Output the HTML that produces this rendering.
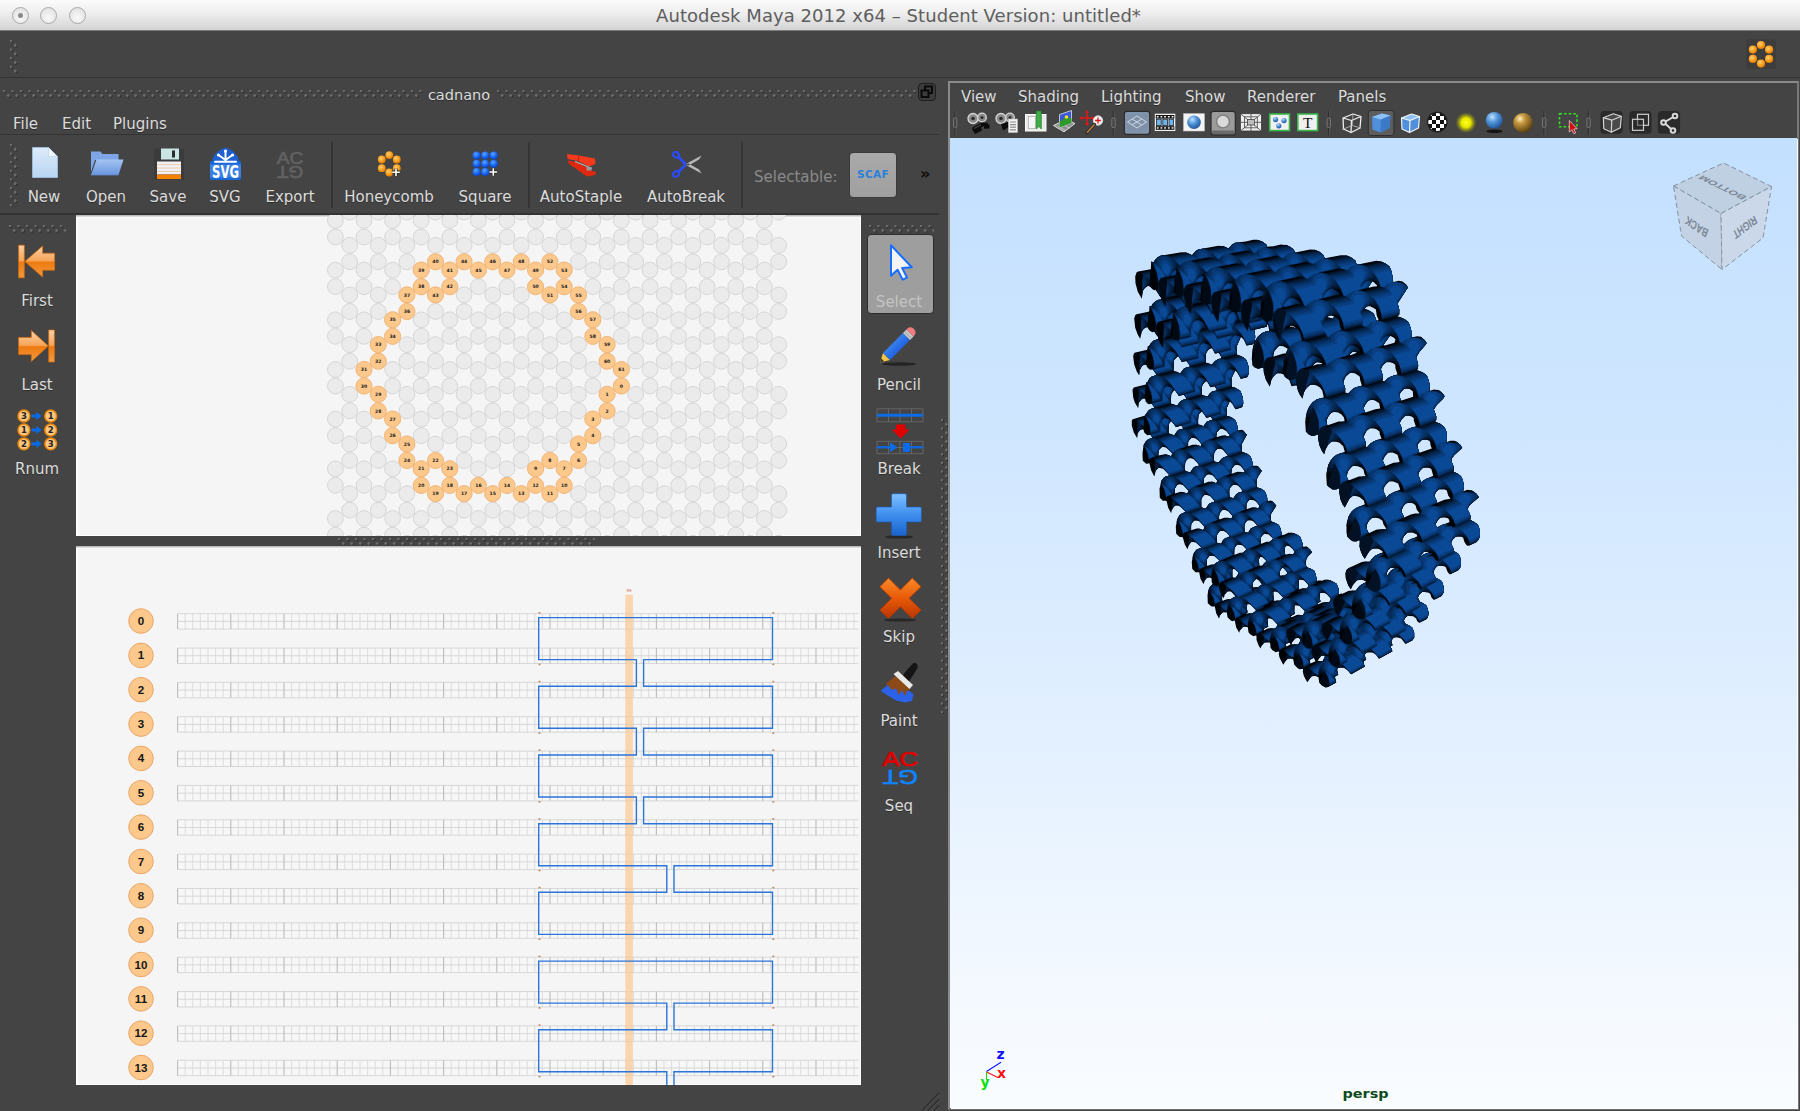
<!DOCTYPE html>
<html lang="en"><head><meta charset="utf-8"><title>Autodesk Maya 2012 x64 - Student Version: untitled*</title>
<style>
html,body{margin:0;padding:0;}
body{width:1800px;height:1111px;overflow:hidden;background:#444444;position:relative;font-family:"DejaVu Sans","Liberation Sans",sans-serif;font-size:15px;color:#dcdcdc;}
.abs{position:absolute;}
#titlebar{position:absolute;left:0;top:0;width:1800px;height:31px;background:linear-gradient(#fbfbfb 0%,#eeeeee 45%,#d3d3d3 100%);border-bottom:1px solid #7a7a7a;box-sizing:border-box;}
#titlebar .t{position:absolute;left:0;width:1797px;top:5.3px;text-align:center;font-size:18px;color:#5e5e5e;letter-spacing:0.05px;}
.tl{position:absolute;top:7px;width:17px;height:17px;border-radius:50%;border:1px solid #a9a9a9;background:radial-gradient(circle at 50% 65%,#fafafa 0%,#e4e4e4 70%,#dadada 100%);box-sizing:border-box;}
.hl{position:absolute;height:1px;background:#333333;}
.lbl{position:absolute;white-space:nowrap;margin-top:1.8px;text-shadow:0 1px 0 rgba(0,0,0,.35);}
.c{text-align:center;}
.dots{position:absolute;height:9px;background-image:radial-gradient(circle at 2px 2px,#6e6e6e 1.1px,transparent 1.5px),radial-gradient(circle at 6.2px 6.5px,#6e6e6e 1.1px,transparent 1.5px),radial-gradient(circle at 3px 3px,#303030 1.1px,transparent 1.5px),radial-gradient(circle at 7.2px 7.5px,#303030 1.1px,transparent 1.5px);background-size:8.5px 9px;}
.vdots{position:absolute;width:9px;background-image:radial-gradient(circle at 2px 2px,#6e6e6e 1.1px,transparent 1.5px),radial-gradient(circle at 6.3px 6.3px,#6e6e6e 1.1px,transparent 1.5px),radial-gradient(circle at 3px 3px,#303030 1.1px,transparent 1.5px),radial-gradient(circle at 7.3px 7.3px,#303030 1.1px,transparent 1.5px);background-size:9px 8.6px;}
.panel{position:absolute;background:#f5f5f5;overflow:hidden;box-shadow:inset 0 1.4px 0 #b9b9b9, inset 0 2.6px 0 #fdfdfd, inset 2px 0 0 #fdfdfd, inset -1px -1px 0 #fff;}
</style></head><body>
<div id="titlebar"><div class="t">Autodesk Maya 2012 x64 – Student Version: untitled*</div>
<div class="tl" style="left:11.5px"></div><div class="tl" style="left:40px"></div><div class="tl" style="left:68.500px"></div>
<div class="abs" style="left:17.5px;top:13px;width:5px;height:5px;border-radius:50%;background:#8a8a8a"></div>
</div>
<div class="hl" style="left:0;top:77px;width:1800px;height:1.3px"></div>
<div class="hl" style="left:0;top:134px;width:939px;height:1.3px"></div>
<div class="hl" style="left:0;top:212.6px;width:939px;height:2px"></div>
<svg class="abs" id="grip" style="left:915px;top:1088px" width="30" height="23" viewBox="915 1088 30 23"><path d="M921.5 1111.5L939 1093M927.5 1111.5L939 1099.5M933.5 1111.5L939 1105.5" stroke="#2c2c2c" stroke-width="1.4"/><path d="M922.7 1111.5L939 1094.3M928.7 1111.5L939 1100.800M934.7 1111.5L939 1106.800" stroke="#5a5a5a" stroke-width=".7"/></svg>
<div class="dots" style="left:2px;top:89px;width:421px"></div>
<div class="dots" style="left:496px;top:89px;width:420px"></div>
<div class="lbl c" style="left:409px;top:85.3px;width:100px;font-size:14.5px;">cadnano</div>
<svg class="abs" style="left:918px;top:83px" width="18" height="18" viewBox="0 0 18 18"><rect x="0.5" y="0.5" width="17" height="17" rx="3.5" fill="#3c3c3c" stroke="#1e1e1e"/><rect x="7" y="3.5" width="7" height="6.5" fill="none" stroke="#0a0a0a" stroke-width="2"/><rect x="3.5" y="7.5" width="7" height="6.5" fill="#3c3c3c" stroke="#0a0a0a" stroke-width="2"/></svg>
<div class="vdots" style="left:9.4px;top:39.4px;height:34px"></div>
<div class="vdots" style="left:9.4px;top:143px;height:64px"></div>
<div class="lbl" style="left:13px;top:113px;">File</div>
<div class="lbl" style="left:62px;top:113px;">Edit</div>
<div class="lbl" style="left:113px;top:113px;">Plugins</div>
<div class="lbl c" style="left:-16px;top:186px;width:120px;">New</div>
<div class="lbl c" style="left:46px;top:186px;width:120px;">Open</div>
<div class="lbl c" style="left:108px;top:186px;width:120px;">Save</div>
<div class="lbl c" style="left:165px;top:186px;width:120px;">SVG</div>
<div class="lbl c" style="left:230px;top:186px;width:120px;">Export</div>
<div class="lbl c" style="left:329px;top:186px;width:120px;">Honeycomb</div>
<div class="lbl c" style="left:425px;top:186px;width:120px;">Square</div>
<div class="lbl c" style="left:521px;top:186px;width:120px;">AutoStaple</div>
<div class="lbl c" style="left:626px;top:186px;width:120px;">AutoBreak</div>
<div class="abs" style="left:331px;top:142px;width:2px;height:66px;background:#353535"></div>
<div class="abs" style="left:528px;top:142px;width:2px;height:66px;background:#353535"></div>
<div class="abs" style="left:741px;top:142px;width:2px;height:66px;background:#353535"></div>
<div class="lbl" style="left:754px;top:166px;color:#8a8a8a;text-shadow:none">Selectable:</div>
<div class="abs" style="left:849px;top:152px;width:48px;height:46px;box-sizing:border-box;border:1px solid #3a3a3a;border-radius:4px;background:linear-gradient(#a9a9a9,#a0a0a0);"></div>
<div class="abs c" style="left:849px;top:168px;width:48px;font-size:10.5px;font-weight:bold;color:#2b7fdc;font-family:'DejaVu Sans',sans-serif;letter-spacing:.3px">SCAF</div>
<div class="abs" style="left:920px;top:164px;font-size:16px;color:#0c0c0c;font-weight:bold">»</div>
<div class="dots" style="left:8px;top:224px;width:58px"></div>
<div class="lbl c" style="left:0px;top:290px;width:74px;">First</div>
<div class="lbl c" style="left:0px;top:374px;width:74px;">Last</div>
<div class="lbl c" style="left:0px;top:458px;width:74px;">Rnum</div>
<div class="dots" style="left:868px;top:224px;width:66px"></div>
<div class="abs" style="left:867px;top:234px;width:67px;height:80px;box-sizing:border-box;border:1px solid #2c2c2c;border-radius:4px;background:#9e9e9e;"></div>
<div class="lbl c" style="left:862px;top:291px;width:74px;color:#c4c4c4;text-shadow:none;">Select</div>
<div class="lbl c" style="left:862px;top:374px;width:74px;">Pencil</div>
<div class="lbl c" style="left:862px;top:458px;width:74px;">Break</div>
<div class="lbl c" style="left:862px;top:542px;width:74px;">Insert</div>
<div class="lbl c" style="left:862px;top:626px;width:74px;">Skip</div>
<div class="lbl c" style="left:862px;top:710px;width:74px;">Paint</div>
<div class="lbl c" style="left:862px;top:795px;width:74px;">Seq</div>
<div class="vdots" style="left:940px;top:418px;height:296px;width:8px"></div>
<div class="dots" style="left:337px;top:537px;width:258px;height:8px"></div>
<div class="panel" style="left:75.6px;top:214.8px;width:785.9px;height:320.9px;">
<svg width="785.9" height="320.9" viewBox="75.6 214.8 785.9 320.9" style="position:absolute;left:0;top:0">
<defs><circle id="hc" r="7.9" fill="#ebebeb" stroke="#d3d3d3" stroke-width="0.9"/><circle id="ho" r="8.1" fill="#fcc88c" stroke="#f0b070" stroke-width="0.9"/></defs>
<use href="#hc" x="335.0" y="220.2"/><use href="#hc" x="349.3" y="211.9"/><use href="#hc" x="363.6" y="220.2"/><use href="#hc" x="377.9" y="211.9"/><use href="#hc" x="392.2" y="220.2"/><use href="#hc" x="406.5" y="211.9"/><use href="#hc" x="420.8" y="220.2"/><use href="#hc" x="435.1" y="211.9"/><use href="#hc" x="449.4" y="220.2"/><use href="#hc" x="463.7" y="211.9"/><use href="#hc" x="478.0" y="220.2"/><use href="#hc" x="492.3" y="211.9"/><use href="#hc" x="506.6" y="220.2"/><use href="#hc" x="520.9" y="211.9"/><use href="#hc" x="535.2" y="220.2"/><use href="#hc" x="549.5" y="211.9"/><use href="#hc" x="563.8" y="220.2"/><use href="#hc" x="578.1" y="211.9"/><use href="#hc" x="592.4" y="220.2"/><use href="#hc" x="606.7" y="211.9"/><use href="#hc" x="621.0" y="220.2"/><use href="#hc" x="635.3" y="211.9"/><use href="#hc" x="649.6" y="220.2"/><use href="#hc" x="663.9" y="211.9"/><use href="#hc" x="678.2" y="220.2"/><use href="#hc" x="692.5" y="211.9"/><use href="#hc" x="706.8" y="220.2"/><use href="#hc" x="721.1" y="211.9"/><use href="#hc" x="735.4" y="220.2"/><use href="#hc" x="749.7" y="211.9"/><use href="#hc" x="764.0" y="220.2"/><use href="#hc" x="778.3" y="211.9"/><use href="#hc" x="335.0" y="236.8"/><use href="#hc" x="349.3" y="245.1"/><use href="#hc" x="363.6" y="236.8"/><use href="#hc" x="377.9" y="245.1"/><use href="#hc" x="392.2" y="236.8"/><use href="#hc" x="406.5" y="245.1"/><use href="#hc" x="420.8" y="236.8"/><use href="#hc" x="435.1" y="245.1"/><use href="#hc" x="449.4" y="236.8"/><use href="#hc" x="463.7" y="245.1"/><use href="#hc" x="478.0" y="236.8"/><use href="#hc" x="492.3" y="245.1"/><use href="#hc" x="506.6" y="236.8"/><use href="#hc" x="520.9" y="245.1"/><use href="#hc" x="535.2" y="236.8"/><use href="#hc" x="549.5" y="245.1"/><use href="#hc" x="563.8" y="236.8"/><use href="#hc" x="578.1" y="245.1"/><use href="#hc" x="592.4" y="236.8"/><use href="#hc" x="606.7" y="245.1"/><use href="#hc" x="621.0" y="236.8"/><use href="#hc" x="635.3" y="245.1"/><use href="#hc" x="649.6" y="236.8"/><use href="#hc" x="663.9" y="245.1"/><use href="#hc" x="678.2" y="236.8"/><use href="#hc" x="692.5" y="245.1"/><use href="#hc" x="706.8" y="236.8"/><use href="#hc" x="721.1" y="245.1"/><use href="#hc" x="735.4" y="236.8"/><use href="#hc" x="749.7" y="245.1"/><use href="#hc" x="764.0" y="236.8"/><use href="#hc" x="778.3" y="245.1"/><use href="#hc" x="335.0" y="269.9"/><use href="#hc" x="349.3" y="261.6"/><use href="#hc" x="363.6" y="269.9"/><use href="#hc" x="377.9" y="261.6"/><use href="#hc" x="392.2" y="269.9"/><use href="#hc" x="406.5" y="261.6"/><use href="#hc" x="578.1" y="261.6"/><use href="#hc" x="592.4" y="269.9"/><use href="#hc" x="606.7" y="261.6"/><use href="#hc" x="621.0" y="269.9"/><use href="#hc" x="635.3" y="261.6"/><use href="#hc" x="649.6" y="269.9"/><use href="#hc" x="663.9" y="261.6"/><use href="#hc" x="678.2" y="269.9"/><use href="#hc" x="692.5" y="261.6"/><use href="#hc" x="706.8" y="269.9"/><use href="#hc" x="721.1" y="261.6"/><use href="#hc" x="735.4" y="269.9"/><use href="#hc" x="749.7" y="261.6"/><use href="#hc" x="764.0" y="269.9"/><use href="#hc" x="778.3" y="261.6"/><use href="#hc" x="335.0" y="286.5"/><use href="#hc" x="349.3" y="294.7"/><use href="#hc" x="363.6" y="286.5"/><use href="#hc" x="377.9" y="294.7"/><use href="#hc" x="392.2" y="286.5"/><use href="#hc" x="463.7" y="294.7"/><use href="#hc" x="478.0" y="286.5"/><use href="#hc" x="492.3" y="294.7"/><use href="#hc" x="506.6" y="286.5"/><use href="#hc" x="520.9" y="294.7"/><use href="#hc" x="592.4" y="286.5"/><use href="#hc" x="606.7" y="294.7"/><use href="#hc" x="621.0" y="286.5"/><use href="#hc" x="635.3" y="294.7"/><use href="#hc" x="649.6" y="286.5"/><use href="#hc" x="663.9" y="294.7"/><use href="#hc" x="678.2" y="286.5"/><use href="#hc" x="692.5" y="294.7"/><use href="#hc" x="706.8" y="286.5"/><use href="#hc" x="721.1" y="294.7"/><use href="#hc" x="735.4" y="286.5"/><use href="#hc" x="749.7" y="294.7"/><use href="#hc" x="764.0" y="286.5"/><use href="#hc" x="778.3" y="294.7"/><use href="#hc" x="335.0" y="319.6"/><use href="#hc" x="349.3" y="311.3"/><use href="#hc" x="363.6" y="319.6"/><use href="#hc" x="377.9" y="311.3"/><use href="#hc" x="420.8" y="319.6"/><use href="#hc" x="435.1" y="311.3"/><use href="#hc" x="449.4" y="319.6"/><use href="#hc" x="463.7" y="311.3"/><use href="#hc" x="478.0" y="319.6"/><use href="#hc" x="492.3" y="311.3"/><use href="#hc" x="506.6" y="319.6"/><use href="#hc" x="520.9" y="311.3"/><use href="#hc" x="535.2" y="319.6"/><use href="#hc" x="549.5" y="311.3"/><use href="#hc" x="563.8" y="319.6"/><use href="#hc" x="606.7" y="311.3"/><use href="#hc" x="621.0" y="319.6"/><use href="#hc" x="635.3" y="311.3"/><use href="#hc" x="649.6" y="319.6"/><use href="#hc" x="663.9" y="311.3"/><use href="#hc" x="678.2" y="319.6"/><use href="#hc" x="692.5" y="311.3"/><use href="#hc" x="706.8" y="319.6"/><use href="#hc" x="721.1" y="311.3"/><use href="#hc" x="735.4" y="319.6"/><use href="#hc" x="749.7" y="311.3"/><use href="#hc" x="764.0" y="319.6"/><use href="#hc" x="778.3" y="311.3"/><use href="#hc" x="335.0" y="336.1"/><use href="#hc" x="349.3" y="344.4"/><use href="#hc" x="363.6" y="336.1"/><use href="#hc" x="406.5" y="344.4"/><use href="#hc" x="420.8" y="336.1"/><use href="#hc" x="435.1" y="344.4"/><use href="#hc" x="449.4" y="336.1"/><use href="#hc" x="463.7" y="344.4"/><use href="#hc" x="478.0" y="336.1"/><use href="#hc" x="492.3" y="344.4"/><use href="#hc" x="506.6" y="336.1"/><use href="#hc" x="520.9" y="344.4"/><use href="#hc" x="535.2" y="336.1"/><use href="#hc" x="549.5" y="344.4"/><use href="#hc" x="563.8" y="336.1"/><use href="#hc" x="578.1" y="344.4"/><use href="#hc" x="621.0" y="336.1"/><use href="#hc" x="635.3" y="344.4"/><use href="#hc" x="649.6" y="336.1"/><use href="#hc" x="663.9" y="344.4"/><use href="#hc" x="678.2" y="336.1"/><use href="#hc" x="692.5" y="344.4"/><use href="#hc" x="706.8" y="336.1"/><use href="#hc" x="721.1" y="344.4"/><use href="#hc" x="735.4" y="336.1"/><use href="#hc" x="749.7" y="344.4"/><use href="#hc" x="764.0" y="336.1"/><use href="#hc" x="778.3" y="344.4"/><use href="#hc" x="335.0" y="369.3"/><use href="#hc" x="349.3" y="361.0"/><use href="#hc" x="392.2" y="369.3"/><use href="#hc" x="406.5" y="361.0"/><use href="#hc" x="420.8" y="369.3"/><use href="#hc" x="435.1" y="361.0"/><use href="#hc" x="449.4" y="369.3"/><use href="#hc" x="463.7" y="361.0"/><use href="#hc" x="478.0" y="369.3"/><use href="#hc" x="492.3" y="361.0"/><use href="#hc" x="506.6" y="369.3"/><use href="#hc" x="520.9" y="361.0"/><use href="#hc" x="535.2" y="369.3"/><use href="#hc" x="549.5" y="361.0"/><use href="#hc" x="563.8" y="369.3"/><use href="#hc" x="578.1" y="361.0"/><use href="#hc" x="592.4" y="369.3"/><use href="#hc" x="635.3" y="361.0"/><use href="#hc" x="649.6" y="369.3"/><use href="#hc" x="663.9" y="361.0"/><use href="#hc" x="678.2" y="369.3"/><use href="#hc" x="692.5" y="361.0"/><use href="#hc" x="706.8" y="369.3"/><use href="#hc" x="721.1" y="361.0"/><use href="#hc" x="735.4" y="369.3"/><use href="#hc" x="749.7" y="361.0"/><use href="#hc" x="764.0" y="369.3"/><use href="#hc" x="778.3" y="361.0"/><use href="#hc" x="335.0" y="385.8"/><use href="#hc" x="349.3" y="394.1"/><use href="#hc" x="392.2" y="385.8"/><use href="#hc" x="406.5" y="394.1"/><use href="#hc" x="420.8" y="385.8"/><use href="#hc" x="435.1" y="394.1"/><use href="#hc" x="449.4" y="385.8"/><use href="#hc" x="463.7" y="394.1"/><use href="#hc" x="478.0" y="385.8"/><use href="#hc" x="492.3" y="394.1"/><use href="#hc" x="506.6" y="385.8"/><use href="#hc" x="520.9" y="394.1"/><use href="#hc" x="535.2" y="385.8"/><use href="#hc" x="549.5" y="394.1"/><use href="#hc" x="563.8" y="385.8"/><use href="#hc" x="578.1" y="394.1"/><use href="#hc" x="592.4" y="385.8"/><use href="#hc" x="635.3" y="394.1"/><use href="#hc" x="649.6" y="385.8"/><use href="#hc" x="663.9" y="394.1"/><use href="#hc" x="678.2" y="385.8"/><use href="#hc" x="692.5" y="394.1"/><use href="#hc" x="706.8" y="385.8"/><use href="#hc" x="721.1" y="394.1"/><use href="#hc" x="735.4" y="385.8"/><use href="#hc" x="749.7" y="394.1"/><use href="#hc" x="764.0" y="385.8"/><use href="#hc" x="778.3" y="394.1"/><use href="#hc" x="335.0" y="418.9"/><use href="#hc" x="349.3" y="410.7"/><use href="#hc" x="363.6" y="418.9"/><use href="#hc" x="406.5" y="410.7"/><use href="#hc" x="420.8" y="418.9"/><use href="#hc" x="435.1" y="410.7"/><use href="#hc" x="449.4" y="418.9"/><use href="#hc" x="463.7" y="410.7"/><use href="#hc" x="478.0" y="418.9"/><use href="#hc" x="492.3" y="410.7"/><use href="#hc" x="506.6" y="418.9"/><use href="#hc" x="520.9" y="410.7"/><use href="#hc" x="535.2" y="418.9"/><use href="#hc" x="549.5" y="410.7"/><use href="#hc" x="563.8" y="418.9"/><use href="#hc" x="578.1" y="410.7"/><use href="#hc" x="621.0" y="418.9"/><use href="#hc" x="635.3" y="410.7"/><use href="#hc" x="649.6" y="418.9"/><use href="#hc" x="663.9" y="410.7"/><use href="#hc" x="678.2" y="418.9"/><use href="#hc" x="692.5" y="410.7"/><use href="#hc" x="706.8" y="418.9"/><use href="#hc" x="721.1" y="410.7"/><use href="#hc" x="735.4" y="418.9"/><use href="#hc" x="749.7" y="410.7"/><use href="#hc" x="764.0" y="418.9"/><use href="#hc" x="778.3" y="410.7"/><use href="#hc" x="335.0" y="435.5"/><use href="#hc" x="349.3" y="443.8"/><use href="#hc" x="363.6" y="435.5"/><use href="#hc" x="377.9" y="443.8"/><use href="#hc" x="420.8" y="435.5"/><use href="#hc" x="435.1" y="443.8"/><use href="#hc" x="449.4" y="435.5"/><use href="#hc" x="463.7" y="443.8"/><use href="#hc" x="478.0" y="435.5"/><use href="#hc" x="492.3" y="443.8"/><use href="#hc" x="506.6" y="435.5"/><use href="#hc" x="520.9" y="443.8"/><use href="#hc" x="535.2" y="435.5"/><use href="#hc" x="549.5" y="443.8"/><use href="#hc" x="563.8" y="435.5"/><use href="#hc" x="606.7" y="443.8"/><use href="#hc" x="621.0" y="435.5"/><use href="#hc" x="635.3" y="443.8"/><use href="#hc" x="649.6" y="435.5"/><use href="#hc" x="663.9" y="443.8"/><use href="#hc" x="678.2" y="435.5"/><use href="#hc" x="692.5" y="443.8"/><use href="#hc" x="706.8" y="435.5"/><use href="#hc" x="721.1" y="443.8"/><use href="#hc" x="735.4" y="435.5"/><use href="#hc" x="749.7" y="443.8"/><use href="#hc" x="764.0" y="435.5"/><use href="#hc" x="778.3" y="443.8"/><use href="#hc" x="335.0" y="468.6"/><use href="#hc" x="349.3" y="460.3"/><use href="#hc" x="363.6" y="468.6"/><use href="#hc" x="377.9" y="460.3"/><use href="#hc" x="392.2" y="468.6"/><use href="#hc" x="463.7" y="460.3"/><use href="#hc" x="478.0" y="468.6"/><use href="#hc" x="492.3" y="460.3"/><use href="#hc" x="506.6" y="468.6"/><use href="#hc" x="520.9" y="460.3"/><use href="#hc" x="592.4" y="468.6"/><use href="#hc" x="606.7" y="460.3"/><use href="#hc" x="621.0" y="468.6"/><use href="#hc" x="635.3" y="460.3"/><use href="#hc" x="649.6" y="468.6"/><use href="#hc" x="663.9" y="460.3"/><use href="#hc" x="678.2" y="468.6"/><use href="#hc" x="692.5" y="460.3"/><use href="#hc" x="706.8" y="468.6"/><use href="#hc" x="721.1" y="460.3"/><use href="#hc" x="735.4" y="468.6"/><use href="#hc" x="749.7" y="460.3"/><use href="#hc" x="764.0" y="468.6"/><use href="#hc" x="778.3" y="460.3"/><use href="#hc" x="335.0" y="485.2"/><use href="#hc" x="349.3" y="493.5"/><use href="#hc" x="363.6" y="485.2"/><use href="#hc" x="377.9" y="493.5"/><use href="#hc" x="392.2" y="485.2"/><use href="#hc" x="406.5" y="493.5"/><use href="#hc" x="578.1" y="493.5"/><use href="#hc" x="592.4" y="485.2"/><use href="#hc" x="606.7" y="493.5"/><use href="#hc" x="621.0" y="485.2"/><use href="#hc" x="635.3" y="493.5"/><use href="#hc" x="649.6" y="485.2"/><use href="#hc" x="663.9" y="493.5"/><use href="#hc" x="678.2" y="485.2"/><use href="#hc" x="692.5" y="493.5"/><use href="#hc" x="706.8" y="485.2"/><use href="#hc" x="721.1" y="493.5"/><use href="#hc" x="735.4" y="485.2"/><use href="#hc" x="749.7" y="493.5"/><use href="#hc" x="764.0" y="485.2"/><use href="#hc" x="778.3" y="493.5"/><use href="#hc" x="335.0" y="518.3"/><use href="#hc" x="349.3" y="510.0"/><use href="#hc" x="363.6" y="518.3"/><use href="#hc" x="377.9" y="510.0"/><use href="#hc" x="392.2" y="518.3"/><use href="#hc" x="406.5" y="510.0"/><use href="#hc" x="420.8" y="518.3"/><use href="#hc" x="435.1" y="510.0"/><use href="#hc" x="449.4" y="518.3"/><use href="#hc" x="463.7" y="510.0"/><use href="#hc" x="478.0" y="518.3"/><use href="#hc" x="492.3" y="510.0"/><use href="#hc" x="506.6" y="518.3"/><use href="#hc" x="520.9" y="510.0"/><use href="#hc" x="535.2" y="518.3"/><use href="#hc" x="549.5" y="510.0"/><use href="#hc" x="563.8" y="518.3"/><use href="#hc" x="578.1" y="510.0"/><use href="#hc" x="592.4" y="518.3"/><use href="#hc" x="606.7" y="510.0"/><use href="#hc" x="621.0" y="518.3"/><use href="#hc" x="635.3" y="510.0"/><use href="#hc" x="649.6" y="518.3"/><use href="#hc" x="663.9" y="510.0"/><use href="#hc" x="678.2" y="518.3"/><use href="#hc" x="692.5" y="510.0"/><use href="#hc" x="706.8" y="518.3"/><use href="#hc" x="721.1" y="510.0"/><use href="#hc" x="735.4" y="518.3"/><use href="#hc" x="749.7" y="510.0"/><use href="#hc" x="764.0" y="518.3"/><use href="#hc" x="778.3" y="510.0"/><use href="#hc" x="335.0" y="534.9"/><use href="#hc" x="349.3" y="543.1"/><use href="#hc" x="363.6" y="534.9"/><use href="#hc" x="377.9" y="543.1"/><use href="#hc" x="392.2" y="534.9"/><use href="#hc" x="406.5" y="543.1"/><use href="#hc" x="420.8" y="534.9"/><use href="#hc" x="435.1" y="543.1"/><use href="#hc" x="449.4" y="534.9"/><use href="#hc" x="463.7" y="543.1"/><use href="#hc" x="478.0" y="534.9"/><use href="#hc" x="492.3" y="543.1"/><use href="#hc" x="506.6" y="534.9"/><use href="#hc" x="520.9" y="543.1"/><use href="#hc" x="535.2" y="534.9"/><use href="#hc" x="549.5" y="543.1"/><use href="#hc" x="563.8" y="534.9"/><use href="#hc" x="578.1" y="543.1"/><use href="#hc" x="592.4" y="534.9"/><use href="#hc" x="606.7" y="543.1"/><use href="#hc" x="621.0" y="534.9"/><use href="#hc" x="635.3" y="543.1"/><use href="#hc" x="649.6" y="534.9"/><use href="#hc" x="663.9" y="543.1"/><use href="#hc" x="678.2" y="534.9"/><use href="#hc" x="692.5" y="543.1"/><use href="#hc" x="706.8" y="534.9"/><use href="#hc" x="721.1" y="543.1"/><use href="#hc" x="735.4" y="534.9"/><use href="#hc" x="749.7" y="543.1"/><use href="#hc" x="764.0" y="534.9"/><use href="#hc" x="778.3" y="543.1"/>
<use href="#ho" x="621.0" y="385.8"/><use href="#ho" x="606.7" y="394.1"/><use href="#ho" x="606.7" y="410.7"/><use href="#ho" x="592.4" y="418.9"/><use href="#ho" x="592.4" y="435.5"/><use href="#ho" x="578.1" y="443.8"/><use href="#ho" x="578.1" y="460.3"/><use href="#ho" x="563.8" y="468.6"/><use href="#ho" x="549.5" y="460.3"/><use href="#ho" x="535.2" y="468.6"/><use href="#ho" x="563.8" y="485.2"/><use href="#ho" x="549.5" y="493.5"/><use href="#ho" x="535.2" y="485.2"/><use href="#ho" x="520.9" y="493.5"/><use href="#ho" x="506.6" y="485.2"/><use href="#ho" x="492.3" y="493.5"/><use href="#ho" x="478.0" y="485.2"/><use href="#ho" x="463.7" y="493.5"/><use href="#ho" x="449.4" y="485.2"/><use href="#ho" x="435.1" y="493.5"/><use href="#ho" x="420.8" y="485.2"/><use href="#ho" x="420.8" y="468.6"/><use href="#ho" x="435.1" y="460.3"/><use href="#ho" x="449.4" y="468.6"/><use href="#ho" x="406.5" y="460.3"/><use href="#ho" x="406.5" y="443.8"/><use href="#ho" x="392.2" y="435.5"/><use href="#ho" x="392.2" y="418.9"/><use href="#ho" x="377.9" y="410.7"/><use href="#ho" x="377.9" y="394.1"/><use href="#ho" x="363.6" y="385.8"/><use href="#ho" x="363.6" y="369.3"/><use href="#ho" x="377.9" y="361.0"/><use href="#ho" x="377.9" y="344.4"/><use href="#ho" x="392.2" y="336.1"/><use href="#ho" x="392.2" y="319.6"/><use href="#ho" x="406.5" y="311.3"/><use href="#ho" x="406.5" y="294.7"/><use href="#ho" x="420.8" y="286.5"/><use href="#ho" x="420.8" y="269.9"/><use href="#ho" x="435.1" y="261.6"/><use href="#ho" x="449.4" y="269.9"/><use href="#ho" x="449.4" y="286.5"/><use href="#ho" x="435.1" y="294.7"/><use href="#ho" x="463.7" y="261.6"/><use href="#ho" x="478.0" y="269.9"/><use href="#ho" x="492.3" y="261.6"/><use href="#ho" x="506.6" y="269.9"/><use href="#ho" x="520.9" y="261.6"/><use href="#ho" x="535.2" y="269.9"/><use href="#ho" x="535.2" y="286.5"/><use href="#ho" x="549.5" y="294.7"/><use href="#ho" x="549.5" y="261.6"/><use href="#ho" x="563.8" y="269.9"/><use href="#ho" x="563.8" y="286.5"/><use href="#ho" x="578.1" y="294.7"/><use href="#ho" x="578.1" y="311.3"/><use href="#ho" x="592.4" y="319.6"/><use href="#ho" x="592.4" y="336.1"/><use href="#ho" x="606.7" y="344.4"/><use href="#ho" x="606.7" y="361.0"/><use href="#ho" x="621.0" y="369.3"/>
<g font-size="4.6" font-weight="bold" fill="#222" text-anchor="middle" font-family="DejaVu Sans, sans-serif">
<text x="621.0" y="387.5">0</text><text x="606.7" y="395.8">1</text><text x="606.7" y="412.4">2</text><text x="592.4" y="420.6">3</text><text x="592.4" y="437.2">4</text><text x="578.1" y="445.5">5</text><text x="578.1" y="462.0">6</text><text x="563.8" y="470.3">7</text><text x="549.5" y="462.0">8</text><text x="535.2" y="470.3">9</text><text x="563.8" y="486.9">10</text><text x="549.5" y="495.2">11</text><text x="535.2" y="486.9">12</text><text x="520.9" y="495.2">13</text><text x="506.6" y="486.9">14</text><text x="492.3" y="495.2">15</text><text x="478.0" y="486.9">16</text><text x="463.7" y="495.2">17</text><text x="449.4" y="486.9">18</text><text x="435.1" y="495.2">19</text><text x="420.8" y="486.9">20</text><text x="420.8" y="470.3">21</text><text x="435.1" y="462.0">22</text><text x="449.4" y="470.3">23</text><text x="406.5" y="462.0">24</text><text x="406.5" y="445.5">25</text><text x="392.2" y="437.2">26</text><text x="392.2" y="420.6">27</text><text x="377.9" y="412.4">28</text><text x="377.9" y="395.8">29</text><text x="363.6" y="387.5">30</text><text x="363.6" y="371.0">31</text><text x="377.9" y="362.7">32</text><text x="377.9" y="346.1">33</text><text x="392.2" y="337.8">34</text><text x="392.2" y="321.3">35</text><text x="406.5" y="313.0">36</text><text x="406.5" y="296.4">37</text><text x="420.8" y="288.2">38</text><text x="420.8" y="271.6">39</text><text x="435.1" y="263.3">40</text><text x="449.4" y="271.6">41</text><text x="449.4" y="288.2">42</text><text x="435.1" y="296.4">43</text><text x="463.7" y="263.3">44</text><text x="478.0" y="271.6">45</text><text x="492.3" y="263.3">46</text><text x="506.6" y="271.6">47</text><text x="520.9" y="263.3">48</text><text x="535.2" y="271.6">49</text><text x="535.2" y="288.2">50</text><text x="549.5" y="296.4">51</text><text x="549.5" y="263.3">52</text><text x="563.8" y="271.6">53</text><text x="563.8" y="288.2">54</text><text x="578.1" y="296.4">55</text><text x="578.1" y="313.0">56</text><text x="592.4" y="321.3">57</text><text x="592.4" y="337.8">58</text><text x="606.7" y="346.1">59</text><text x="606.7" y="362.7">60</text><text x="621.0" y="371.0">61</text></g>
</svg></div>
<div class="panel" style="left:75.6px;top:545.8px;width:785.9px;height:539.2px;">
<svg width="785.9" height="539.2" viewBox="75.6 545.8 785.9 539.2" style="position:absolute;left:0;top:0">
<defs>
<g id="grow"><rect x="177.2" y="-7.7" width="681.0" height="15.4" fill="#f7f7f7"/><path d="M184.8 -7.7V7.7M192.4 -7.7V7.7M200.0 -7.7V7.7M207.6 -7.7V7.7M215.2 -7.7V7.7M222.8 -7.7V7.7M238.0 -7.7V7.7M245.6 -7.7V7.7M253.2 -7.7V7.7M260.8 -7.7V7.7M268.4 -7.7V7.7M276.0 -7.7V7.7M291.2 -7.7V7.7M298.8 -7.7V7.7M306.4 -7.7V7.7M314.0 -7.7V7.7M321.6 -7.7V7.7M329.2 -7.7V7.7M344.4 -7.7V7.7M352.0 -7.7V7.7M359.6 -7.7V7.7M367.2 -7.7V7.7M374.8 -7.7V7.7M382.4 -7.7V7.7M397.6 -7.7V7.7M405.2 -7.7V7.7M412.8 -7.7V7.7M420.4 -7.7V7.7M428.0 -7.7V7.7M435.6 -7.7V7.7M450.8 -7.7V7.7M458.4 -7.7V7.7M466.0 -7.7V7.7M473.6 -7.7V7.7M481.2 -7.7V7.7M488.8 -7.7V7.7M504.0 -7.7V7.7M511.6 -7.7V7.7M519.2 -7.7V7.7M526.8 -7.7V7.7M534.4 -7.7V7.7M542.0 -7.7V7.7M557.2 -7.7V7.7M564.8 -7.7V7.7M572.4 -7.7V7.7M580.0 -7.7V7.7M587.6 -7.7V7.7M595.2 -7.7V7.7M610.4 -7.7V7.7M618.0 -7.7V7.7M625.6 -7.7V7.7M633.2 -7.7V7.7M640.8 -7.7V7.7M648.4 -7.7V7.7M663.6 -7.7V7.7M671.2 -7.7V7.7M678.8 -7.7V7.7M686.4 -7.7V7.7M694.0 -7.7V7.7M701.6 -7.7V7.7M716.8 -7.7V7.7M724.4 -7.7V7.7M732.0 -7.7V7.7M739.6 -7.7V7.7M747.2 -7.7V7.7M754.8 -7.7V7.7M770.0 -7.7V7.7M777.6 -7.7V7.7M785.2 -7.7V7.7M792.8 -7.7V7.7M800.4 -7.7V7.7M808.0 -7.7V7.7M823.2 -7.7V7.7M830.8 -7.7V7.7M838.4 -7.7V7.7M846.0 -7.7V7.7M853.6 -7.7V7.7" stroke="#dadada" stroke-width="0.9" fill="none"/><path d="M177.2 -7.7H858.2M177.2 0H858.2M177.2 7.7H858.2" stroke="#d4d4d4" stroke-width="0.9" fill="none"/><path d="M177.2 -7.7V7.7M230.4 -7.7V7.7M283.6 -7.7V7.7M336.8 -7.7V7.7M390.0 -7.7V7.7M443.2 -7.7V7.7M496.4 -7.7V7.7M549.6 -7.7V7.7M602.8 -7.7V7.7M656.0 -7.7V7.7M709.2 -7.7V7.7M762.4 -7.7V7.7M815.6 -7.7V7.7" stroke="#bcbcbc" stroke-width="1.1" fill="none"/></g>
<circle id="pc" r="12.3" fill="#fcc88c" stroke="#eaa768" stroke-width="1"/>
</defs>
<use href="#grow" y="621.20"/>
<use href="#grow" y="655.55"/>
<use href="#grow" y="689.90"/>
<use href="#grow" y="724.25"/>
<use href="#grow" y="758.60"/>
<use href="#grow" y="792.95"/>
<use href="#grow" y="827.30"/>
<use href="#grow" y="861.65"/>
<use href="#grow" y="896.00"/>
<use href="#grow" y="930.35"/>
<use href="#grow" y="964.70"/>
<use href="#grow" y="999.05"/>
<use href="#grow" y="1033.40"/>
<use href="#grow" y="1067.75"/>
<rect x="624.9" y="594.5" width="7.6" height="500" fill="#fbc998" fill-opacity="0.75"/>
<text x="628.7" y="592.2" font-size="4" fill="#d06030" text-anchor="middle" font-family="DejaVu Sans, sans-serif">59</text>
<path d="M538.3 617.4H772.1M538.3 617.4V659.4M772.1 617.4V659.4M538.3 659.4H636.0M643.2 659.4H772.1M636.0 659.4V686.1M643.2 659.4V686.1M538.3 686.1H636.0M643.2 686.1H772.1M538.3 686.1V728.1M772.1 686.1V728.1M538.3 728.1H636.0M643.2 728.1H772.1M636.0 728.1V754.8M643.2 728.1V754.8M538.3 754.8H636.0M643.2 754.8H772.1M538.3 754.8V796.8M772.1 754.8V796.8M538.3 796.8H636.0M643.2 796.8H772.1M636.0 796.8V823.5M643.2 796.8V823.5M538.3 823.5H636.0M643.2 823.5H772.1M538.3 823.5V865.5M772.1 823.5V865.5M538.3 865.5H666.4M673.6 865.5H772.1M666.4 865.5V892.1M673.6 865.5V892.1M538.3 892.1H666.4M673.6 892.1H772.1M538.3 892.1V934.2M772.1 892.1V934.2M538.3 934.2H772.1M538.3 960.9H772.1M538.3 960.9V1002.9M772.1 960.9V1002.9M538.3 1002.9H666.4M673.6 1002.9H772.1M666.4 1002.9V1029.6M673.6 1002.9V1029.6M538.3 1029.6H666.4M673.6 1029.6H772.1M538.3 1029.6V1071.6M772.1 1029.6V1071.6M538.3 1071.6H666.4M673.6 1071.6H772.1M666.4 1071.6V1098.3M673.6 1071.6V1098.3M538.3 1098.3H666.4M673.6 1098.3H772.1M538.3 1098.3V1140.3M772.1 1098.3V1140.3" stroke="#2a74da" stroke-width="1.4" fill="none" stroke-linecap="square"/>
<rect x="538.1" y="611.9" width="2" height="1.6" fill="#b07050" fill-opacity=".8"/><rect x="771.9" y="611.9" width="2" height="1.6" fill="#b07050" fill-opacity=".8"/><rect x="538.1" y="663.4" width="2" height="1.6" fill="#b07050" fill-opacity=".8"/><rect x="771.9" y="663.4" width="2" height="1.6" fill="#b07050" fill-opacity=".8"/><rect x="538.1" y="680.6" width="2" height="1.6" fill="#b07050" fill-opacity=".8"/><rect x="771.9" y="680.6" width="2" height="1.6" fill="#b07050" fill-opacity=".8"/><rect x="538.1" y="732.1" width="2" height="1.6" fill="#b07050" fill-opacity=".8"/><rect x="771.9" y="732.1" width="2" height="1.6" fill="#b07050" fill-opacity=".8"/><rect x="538.1" y="749.2" width="2" height="1.6" fill="#b07050" fill-opacity=".8"/><rect x="771.9" y="749.2" width="2" height="1.6" fill="#b07050" fill-opacity=".8"/><rect x="538.1" y="800.8" width="2" height="1.6" fill="#b07050" fill-opacity=".8"/><rect x="771.9" y="800.8" width="2" height="1.6" fill="#b07050" fill-opacity=".8"/><rect x="538.1" y="818.0" width="2" height="1.6" fill="#b07050" fill-opacity=".8"/><rect x="771.9" y="818.0" width="2" height="1.6" fill="#b07050" fill-opacity=".8"/><rect x="538.1" y="869.5" width="2" height="1.6" fill="#b07050" fill-opacity=".8"/><rect x="771.9" y="869.5" width="2" height="1.6" fill="#b07050" fill-opacity=".8"/><rect x="538.1" y="886.6" width="2" height="1.6" fill="#b07050" fill-opacity=".8"/><rect x="771.9" y="886.6" width="2" height="1.6" fill="#b07050" fill-opacity=".8"/><rect x="538.1" y="938.2" width="2" height="1.6" fill="#b07050" fill-opacity=".8"/><rect x="771.9" y="938.2" width="2" height="1.6" fill="#b07050" fill-opacity=".8"/><rect x="538.1" y="955.4" width="2" height="1.6" fill="#b07050" fill-opacity=".8"/><rect x="771.9" y="955.4" width="2" height="1.6" fill="#b07050" fill-opacity=".8"/><rect x="538.1" y="1006.9" width="2" height="1.6" fill="#b07050" fill-opacity=".8"/><rect x="771.9" y="1006.9" width="2" height="1.6" fill="#b07050" fill-opacity=".8"/><rect x="538.1" y="1024.1" width="2" height="1.6" fill="#b07050" fill-opacity=".8"/><rect x="771.9" y="1024.1" width="2" height="1.6" fill="#b07050" fill-opacity=".8"/><rect x="538.1" y="1075.6" width="2" height="1.6" fill="#b07050" fill-opacity=".8"/><rect x="771.9" y="1075.6" width="2" height="1.6" fill="#b07050" fill-opacity=".8"/>
<g font-size="11.6" font-weight="bold" fill="#161616" text-anchor="middle" font-family="Liberation Sans, sans-serif">
<use href="#pc" x="140.6" y="620.8"/><text x="140.6" y="624.9">0</text>
<use href="#pc" x="140.6" y="655.2"/><text x="140.6" y="659.3">1</text>
<use href="#pc" x="140.6" y="689.5"/><text x="140.6" y="693.6">2</text>
<use href="#pc" x="140.6" y="723.9"/><text x="140.6" y="728.0">3</text>
<use href="#pc" x="140.6" y="758.2"/><text x="140.6" y="762.3">4</text>
<use href="#pc" x="140.6" y="792.6"/><text x="140.6" y="796.7">5</text>
<use href="#pc" x="140.6" y="826.9"/><text x="140.6" y="831.0">6</text>
<use href="#pc" x="140.6" y="861.3"/><text x="140.6" y="865.4">7</text>
<use href="#pc" x="140.6" y="895.6"/><text x="140.6" y="899.7">8</text>
<use href="#pc" x="140.6" y="930.0"/><text x="140.6" y="934.1">9</text>
<use href="#pc" x="140.6" y="964.3"/><text x="140.6" y="968.4">10</text>
<use href="#pc" x="140.6" y="998.7"/><text x="140.6" y="1002.8">11</text>
<use href="#pc" x="140.6" y="1033.0"/><text x="140.6" y="1037.1">12</text>
<use href="#pc" x="140.6" y="1067.3"/><text x="140.6" y="1071.4">13</text>
</g>
</svg></div>
<div class="abs" style="left:948px;top:81px;width:851px;height:1029px;border:2px solid #8a8a8a;border-bottom-color:#6e6e6e;border-right-color:#777;box-sizing:border-box;"></div>
<div class="abs" id="vp" style="left:950px;top:138px;width:847px;height:970px;background:linear-gradient(#c3e0ff 0%,#cfe6ff 30%,#e3f0ff 62%,#f4f9ff 88%,#f9fcff 100%);overflow:hidden;box-shadow:1px 1px 0 #fdfdfd;"></div>
<div class="lbl" style="left:961px;top:86px;">View</div>
<div class="lbl" style="left:1018px;top:86px;">Shading</div>
<div class="lbl" style="left:1101px;top:86px;">Lighting</div>
<div class="lbl" style="left:1185px;top:86px;">Show</div>
<div class="lbl" style="left:1247px;top:86px;">Renderer</div>
<div class="lbl" style="left:1338px;top:86px;">Panels</div>
<svg class="abs" style="left:1100px;top:200px" width="420" height="520" viewBox="0 0 420 520" fill-rule="evenodd"><path fill="#000306" d="M60.5 55.8l-2.7 1.4-3 3-1.3 2.3-2.3-1-.4 7.7-12.6 2.3-1.7 1-1.3 4 .3 6.7 2.3 8.6 4 7 1-8 1.7-2.6 3.3-2.4 2 .7 3 3 1.7 .7 1-.4 5.7 8.4-.4 1.3-5.3 1.7-2.7 2.6-1.6 3-1.7-.6-.3 5-.7 .6-12 2.4-1.3 1-1 3.3 1 9.3 2.6 7 2.4 4 1.6-7.6 2-2.7 2.4-1.3 1.6 .3 .7 1.7 2 2 2 1 1.7-.4 4 5.7-.4 2-4.3 1.3-3 3-1.7 2.7-1-.3-.6 3.6-12.7 3-1 1.7-.3 2.3 1 7.7 2.6 7 2 3.3 .7 0 .3-5.3 2.7-4 2.3-1 2 1 0 1.3 2.4 2.4 1.3 .6 2.3-.3 3.7 5-1 1-3.7 1-2.3 2-2 3.7-1.3 .3-.4 2-12 3-1.3 2.3 .7 7.7 1.6 5 3.4 5.7 .6-5.7 3.7-4 2 0 1 1.3 0 1.4 1.7 2 1.6 1 3-.4 2.4 3-.4 1.4-2 .3-3 1.7-3.6 5.3-12.4 3.7-1 1.3 0 5.3 2 6.7 3.4 5.7 .6-5.4 3-3.3 2.7 0 .7 3 3 2.7 3.3-.4 2 2.4-1 1-3.3 1-2.4 2.3-2.3 3.7-1 8 .3 7.6 3.4 3 1.3 0 .7-.6 1.3 .3 1.7 7 3 5.7 .6-1 .7-4.4 3-3 4.7 1 6 6-.7 1-2.7 .7-2 1.3-2.3 3-2 8 .3 9 3 3 3.7 0 1.7 7 3 5.4 .6-3.7 3-4 3 0 2.4 1 5.3 5-.3 .7-5 2.3-2.7 4-1.7 8 .4 7.3 3 3 3.6 .4 2 7.3 2.7 4.7 1.7-5 2.3-2.4 4.3 .7 5.4 4.7-.7 1-4 1.6-3 4-1.7 8 .4 7 3.3 3.4 3.7 0 1.3 6.6 3 5.4 1.7-4.7 1.6-1.7 2.7-.3 2 .7 .3 4 1 2-2.6 2.3-1.7 3.3-1 5.4 .3 8 3.7 3.3 3.3 0 1.4 6.7 2.6 5 .7-.4 .3-2 2-3 1-.6 4 .3 .7 4.7 3.3 3.3 1.7 .7 1.7-.7 .6 .3 1.4 6.7 3 5.3 .6-2 2.7-3.6 2-.7 3.3 .7 .7 5 1.7 2 3.3 2 2-.7 1 .3 0 4 2 5.4 2 3.3 1.3-3 2.4-3 5.3 0 .7 .7 .3 4.6 2 2.4 3.3 2 2.4-.7 1 .3-.4 2.4 .7 3.3 3.7 7.3 4-6 3.3-.3 2.7 .7 1 5.3 3 3.3 2.3 1.4 3.7-.4-.4 2.4 1 4.6 3.4 6.4 4.3-6 3.3-.4 3.7 1.4 .7 5.3 2.3 2.7 4 2.3 2-.3 8.7-4.7-1.4-5.7 3.4-2-1-4 0-2 1-1 5.6 0 4.4 3 3 3.4 13.6-7.7-1-2.3-.3-3 2.7-1.4-1.7-5 2-2.3 6 0 2.7 1.7 2.3 2.3 .7 1.7 1 .3 13-7 0-1.3-1.7-3.7 2-1.3-1.3-4.4 2.3-3 1.3-.6 2.4 0 4 1.3 4 5.3 7-3.3 2-3-.4-6-2-4.3-7-4-1-2.4 1-2.6 2.4-2.4 6 .4 3 2.3 1 2.7 2 1.6 7-3.6 1.3-1.4 .7-2 .3-3.6-2-6.4-3.3-2.6-3.4-1.4-2-4.3 1.7-3.3 3-2.4 5.7 .7 2 1.3 1.3 3.7 1.7 2 1 .3 7-3.6 2.6-4.4 0-4.3-2-6.3-6.3-3.7-2-4.3 .3-2.4 1.7-3 2.3-2 1.7-.3 4.7 .7 1.6 1 1.7 4.6 2 2.4 1 0 7.3-3.7 2-2 1-2.7-.3-7.3-1.7-4.3-4.6-3-1.4-4.4-1.6-2.3 0-2 1.3-2.7 3.3-3.3 5.7 .3 1.7 1 1 3.7 2 3.3 1.3 1 1.3 0 7.4-3.6 2.3-2.4 1.3-3.3 0-5.7-2-6.3-7.6-4.7 .3-4-3-6.3 1-2.7 2-2.6 8.3-7-2.6-3.7-4.4-3-4.6-.7-4 1.7 .6-6.7-2-7.3-4-3.7-4.6-2.3 .6-1.7-.3-3.3-2.3-5.3 .3-2.4 2.7-3.6 8-7.4-3.7-4.6-4-2.4-4.3 0-3.7 1.4 .3-7.4-.6-3.6-1.7-4-4.3-3.4-5-2 1-2 0-3.6-2.4-6.7 3-4.7 6.4-6.3 1.3-2.3-1.7-2.7-4-3.3-5-.7-4.3 1.7 0-6.7-.7-3.7-2-5.3-4-3-6-2.3 1-1.4 .4-3.6-2-8 3.3-5.4 6.3-7.3 .7-1.7-1.7-2.6-4-3.4-3.6-.6-5.7 1.3-.3-7-2.7-8.3-3.7-3-7.3-2.7 1.7-2 0-5.3-1.7-5.7 10.3-16-1.6-2.7-4-3.3-3.4-.7-6 1.4-1-9.4-2.3-6.3-4-3-4.3-2-5-.7-19.4 4-1.6-4.3-4.4-3.3-4-1.7-6-.3-16 3-2.3-4-3-2.4-4.7-2-4.6-.3-15 3-2.7-4-5.7-3.3-6-.7-7.3 1.7-6.3 .6-1-2.3-3-2.3-5.7-2.4-4.3 0-7.4 1.7-10.3 1.3-3.3 1.7-3.7 4-4.7-2.3-5.3-.4-19.3 3.4-3 1.3-4 4.7-5.7-2.7-5-.3zM213.8 457.8l1.7 3.4-5 2.3-1-3.3 1-1zM224.8 456.2l0 1-2.3 4.3-5-.7 3.7-5 3-.3zM189.5 442.5l1 2-4 2-.7-.7 0-1.6 2.7-1.7zM200.5 439.8l0 1-2.3 4-6.7-.6 .7-2 3.3-4 3.3-.4zM167.8 418.5l2.7 0 2 1 5.3 5.3-1.6 2.7-1.7 1.3-4.7-.6-2 .3-4 2 0-2 4.4-1.7-.7-4.3zM194.5 405.2l4.7 .6 4.3 3.7 1.3 1.7 0 1-2 3-5.6-.4-5.4 2.4-1-.7 1-1.3 3-1.4-.6-2.6zM147.2 404.2l2.3 0 3.3 2.3 3.4 3.3-.7 1.4-3.3 2.3-5.7 0-.3-.3 1.3-.7-.7-4.3zM219.8 393.2l4-.4 3 1.4 4 4.6-1.3 3.4-6.7 0-5 2.3-.3-1.3 3-1.7-1-3.7zM173.2 392.2l.6-.7 2 0 2.4 1 5 5.3-3.4 3-6 0zM135.5 395.8l-1 1.4-3.7 2-4 0-4 1.6-1-.6 0-3.4 .7-.3 1.3 1.7 1-4 2.4-2.7 1-.3 2.6 .3zM198.8 379.8l2.4-.3 3 1 4.6 5-.6 1.7-1.7 1.6-4-.6-3.7 1.3zM162.2 384.2l-3.7 3-6 0 0-4 1.3-2.4 2.4-2 3 2zM132.8 368.8l2.4 .7 3.6 3.3-3 5-2.3 0-1.3-1 0-7zM182.2 367.8l2 1 3.6 4-3 2.7-4.6 0-.7-1 .3-3.3zM295.2 367.8l-4.4 3-3.3 4.4-1.3-.7 1.6-4 2.7-2.7zM160.2 356.8l2.6 .7 3.7 3.7-4 4.3-3 .3-.7-6.3zM106.5 365.5l.3-6.3 2.7-3.4 3.3 0 2 .7 4.4 4-.4 1-3.3 1.7-1 1.3-3.3 0-3.4 1.3zM328.5 351.8l-.3 .7-5.4 2.3-1 1-1.3 0 3.3-4zM186.2 345.5l3.3 .7 3.7 3.3 1.6 2.3-1.6 2.7-3.7-.7-3.3 .7-1-.3-.7-3.4 .3-3.3zM134.2 354.5l0-5.7 2-3.3 1.3-1 4.7 .7 4.6 4.3-4 3.3-3 0-5 2zM160.5 343.5l.3-6 3-3.7 5 .7 4.4 4.3-3.4 3-3.3 0-5 2zM316.8 334.5l.4 1.7-.7 .6-8.3 3.7-4.4 4-1.6-2 0-2.3 1.3-3.4 4-4.3 5 0zM123.2 330.8l3.6 2 3 3.4-5.3 2.6-1.7 1.7-1.6 3.3-3.4-.6-1-1 0-7 1-2 2.4-2.4zM91.2 323.8l3-3.3 2.6 0 2.7 1 5.3 5.7-1.6 3-3.4-1.4-3-.3-5.6 1.7zM150.8 320.2l2.4 1 4 4.3-6.4 3-2.6 4.3-3.4-.6-.6-3 .3-5 3-4zM266.8 324.8l2-4 3-3 3.7-.3 3.7 1 3.3 2.3 1 3.7 2.7 4-.7 1-6.3-.3-3 .6-7.4 3.4-2-4zM348.8 319.2l.7 2.3-.3 .7-8 3-3.7 2.3-1.3-1.3-.4-2.4 2.7-4.6 2-1.7 4-.3 3.3 1zM119.5 313.2l3-3.4 2.3 0 3.7 1.7 4.3 5-1.6 2.3-3-1-4 0-4.7 1.7-.7-2zM301.5 310.2l2-4.4 2.7-2.6 4.3-.4 2.7 .7 2.3 1.7 1.3 4.6 3 3.7-4.6 0-4.4 1-6.6 3-2.7-5.3zM146.2 304.2l2.3-3.7 1-.7 4.3 .4 2.4 1.6 2.6 3 .7 1.7-1 1.7-6-1-6 2zM104.5 294.8l3.3 .4 2.4 1 4.3 4.3-.7 1.3-4.6 2-3.4 5-4.6-1.6 0-7.7 1-2.3zM334.5 294.8l1.7-3 2.6-2.6 5.7 0 2.3 1.3 1.4 5 2.3 3.3-6 1-7.3 3-2.7-6.3zM135.5 284.8l2.7 1 3.6 3.7 .7 1.7-6.3 3-2.7 4-3-.7-1-.7-.3-6.6 .6-2 3-3.4zM74.8 288.5l2-3.3 1.7-1 1.7 0 3 1 5.6 6-1.6 2.3-6.4-1.7-6 1.7zM298.2 283.5l2 6-8.4 3.7-2.6 1.6-3 3-3-7 .3-2.3 2.3-4.3 3.4-3 3.6 0zM103.8 278.2l2.7-3.4 2.3-.6 3.4 1 2.6 2.3 2.7 3.7-1.3 2-3.4-1.4-4.3 0-4.7 1.7zM330.5 268.5l1 1 1.7 6.3-7.7 3.4-4.7 3.3-1-4-1.6-3 .3-2.3 1.3-2.4 3.7-3.3 4.3 0zM246.8 277.2l.4-4 1.3-3 3.3-3.7 1.4-.7 4.6 .4 3.7 1.6 2 2 1 4.4 1.3 2-7 .3-9.6 3.7-1-.4zM131.5 269.2l3-4 2.7-.4 3 1 3.3 3.4 1.3 2.6-.6 1-6.7-1-5.7 2-.6-.6zM88.5 258.2l2.7 0 2.6 1 5.4 5.6-.7 1-3.7 1-1.3 1-3.3 4.7-4.7-1.3-.7-2 .4-6.7 .6-1.7zM297.5 254.8l2 6.4-.3 1-5.7 .6-7.3 3-1.7-.6-1.7-4 .4-2 2-3.7 2.6-2.7 2-.6 3 .3zM117.2 248.8l3.3 0 2.3 1 5 5.7-.3 .7-5.3 2-3.4 4.3-4.3-1-.7-1.7 .4-7zM58.5 250.8l.7-1.3 3-2.7 3.6 .7 4 3.3 2.4 2.7 0 1-1 1.7-6-2-6.7 1.3zM329.2 240.8l1 1.4 .3 3 1.3 3.3-12.3 4.3-2.3-5.6 0-1.4 1.3-2.6 3-3 1.7-.7 3.6 .3zM88.2 241.5l3.3-3.7 3.7 .4 3.6 2.6 2.7 3.4 0 1-1.3 1-3.4-1.4-4.3 0-4.3 1.4zM116.5 232.8l3.7-4 3 .4 3.6 2.3 2.7 3.3 .3 1.4-1 .6-3.6-1.3-3 0-5.7 1.7zM276.5 229.2l3 2.3 .3 2.7 1.7 4.3-8 3-3 2-3.3 3.7-1 0-.7-5.4-2-4.3 1.3-4 1.7-2.7 3-2.6 4 0zM71.2 221.2l3 3 1.6 2.6 1.7 0 3.7-1.3 2 2.3-.7 1-3.7 1-1.3 1-3.3 4.7-5.7-2.3 .3-9.4zM312.2 216.8l1.6 1.4 0 2.3 2 5.7-8.6 3.3-5 4.7-.4-6-2-4.4 .7-3 5-5.3 3 0zM226.5 223.8l0-3.3 1.7-4 2.3-3 2.7-1.7 5 .7 3 1.7 2.6 3 .7 3-.3 1.3-5.7 0-10.7 3.7zM101.2 211.8l1.3 .4 4 5.6 4.3-1 1.7 2.4-.3 .6-5.4 2-3.3 4.4-5.3-1.7 0-8 .6-2zM263.8 207.5l1.4-3 2.6-3.3 2.4-1.4 4.3 .4 4.7 3 1 5.3-5 .7-9.7 3.3-1.7-3.3zM74.2 190.2l2 1.6 2.6 4 5-1 2.7 3.7-.3 .7-2.4 .3-3.6 2-3 4.3-6.4-2.3 .4-9.7zM312.8 191.2l.4 5.6-11.7 3.7-.7-.3-1.6-5 1-2.4 3-3.3 1.6-1 4.4 .3zM106.2 181.2l1.6 1.3 2.7 4.7 4-1 2.3 3.3-.3 1-4.7 1.3-2.3 2-2 3-5.3-1.6-.7-3 .7-6.7 2-3zM255.8 173.8l4 3 .4 3.4 1.6 5-1.3 1-6.7 2-5.6 5.3-3-.7 0-4.6-2-5.4 1.3-4.3 1-1.7 4.7-4 2.3 0zM212.8 165.2l3.4-3 2.6 0 3.4 1.3-.4 .7-4.3 0-4 1.3zM293.2 163.2l2 1.6 .3 3.7 2 5.7-8 3-3.3 2.3-1.7 2-2-.3 .3-4.7-2-6.3 1-3.4 1-1.6 4-3.4 2.7 0zM77.5 156.5l1.3 .3 3 5 4.7-.6 3.3 4.6-.3 1-3.3 .7-2.4 1.3-3.6 4.7-6.7-2.7 .3-10.3zM249.5 154.8l3.3-3 2 0 2 1-6.3 2.4zM110.5 148.2l1.3 0 1 1 2 4.3 3.7-.7 3 4.4-.3 1.3-3.7 1-2.7 1.7-3 3.6-3.6-1.6-1.7 0-.7-.7-.3-2.3 .7-7.4 1.6-2.6zM187.8 148.8l-2 4.7-2.3 0-9.7 3-.6-.3 .6-4.4 1.7-2.6 3.7-3.4 4 .4zM140.8 136.8l3 3 2.7 5.7 6.3-1.3 1-1.4 .7 .4-1 2-1.3 6.3-.4 7.7 .7 6 2 2 3.3 1.6 5-1.3 .7 .3 .3 4.4 2 7.3 4 7 1.4-6 1.3-3 3.3-3.7 1.4-.6 3 0 3 1 2.6 3.6 3.4 2 2.3 6.4 3.7-1 1.6 .3 1 4.7 2 4.6 2.7 3.7 1.3-5.7 2-4 4.4-4 3-.3 4 1.3 3 2 2 2.7 1.6 6.7-7 2.3-4 2.7-3.6 4.6-2 4.4-2 10.3 .6 10 3 3 2.7 1.3 3 0 2.7-1.3 1 .3 0 4.4 1.3 6.3 2.3 5.3 2.4 3.4 1.3-4.7 2.7-5 3.3-3 4.3 0 3.7 1.3 3.7 3.4 1.6 5.6-7.6 2.7-3.4 2.3-3 3.4-2.6 5-2 9.6 .6 10 1.7 2 4 2.7 3.7 0 2.6-1.3 .7 .3-.3 3.7 1.3 7.3 2 4.7 2.3 3.3 4.7-9 3.3-2.7 4.4 .4 2.6 1 4 3.3 1 3.7-10.6 5-3.7 4-2 3.6-2 8.4 0 7.6 .7 3.7 3.3 3.3 2.3 1.4 3.4 .3 2.6-1.3 1 .3-.3 6 1 4 2 5 2.3 3.3 4-7 3.7-3.3 5.7 .3 3 1.4 1.6 1.6-.3 .7-7.3 3.3-3 2.7-2.4 3.3-5.3-.3-3.3 .7-13 6-2 2.3-.7 3 .3 4.7 2.4 7 2.6 4 2.4-4.7 4-4.3 4.3-.4 2.7 .7 2 1.3-7 4.4-3.4 4.6-7 0-6.3 3-1.7-.3-2 1 0-4.3-1-3.7-1.3-2.7-2.3-1.6-6-2.4-4 0-2 1-4-.3-1.7 .7-.3-5-2-5.4-4.4-2.6-2.6-.7-1.4-2.3 .4-6 1.6-2.7 4-4-1-2.3-4.3-3.7-4 .3 0-3.3-2.3-6.7-2.7-2-5.3-2-4 0-3.4 1.7-3 .7-.6-4.4-2-5.3-2.7-2-4.7-1.7-1-1.3 0-6.3 5.4-8.4-4-4.6-1.7-.7-3 .7-1-6-1.7-4-4.6-3-3-.7-.7-1 0-7 2-4 3-4 0-1-3.3-4-1.4-.7-4 0-1.3-7-2.3-3.6-3.4-2-4-1.4 0-8 5-9-3.6-4.3-1.4-.7-3.6 .7-.7-4.3-2.3-6-3-2.4-2.7-1.3-2.3-.3-.7-1.4 0-6.3 3-6.7 .7 0 2.3 2.4 3 5 5.7-1.7 1.3-1.3 .7-2.4-.4-6-2.6-7-5.4-3.3-2.3-.3-1-1 0-8.4 3-6.3 1-.7 1.7 1.7 3.6 6.3 5.7-1.3 1.3-1.3 1-2.7-.3-7-2.7-7.3-2.6-2-6.4-2.7-.3-7.7zM295.5 139.2l-1 3.6-9.7 2.7-1.6-.3 6.6-9.4 3.4 1.4zM189.8 125.8l.7-.3 3.3 1 2 1.7-.3 .3-3.7-1.7-1.6 0zM167.2 124.2l1 1.3 1 5-.7 .7-5.3 1.3-2.7 1.7-2.7 2.6-3 4.7 .4-5.7-1-6 12.6-3zM227.2 117.2l2-1.7 2.3 0 2.7 1-1.4 2.3zM267.5 106.2l2.7 0 5.6 3 1 6.6 1.7 3.7-.7 1.3-1.6-.3-2.4-6.7-3.3-2.6-5.7-2.4-.3-.6zM277.2 85.5l-.7 1-2.7 0-5 1.3-.6-.3 4-6 1.6 .7z"/><path fill="#010a14" d="M44.5 216.8l-9 2.7 2 2.3 0 15.4 .3-4.4 2.4-3 3.3-1zM45.8 185.5l-9 2 0 1 1.7 2 0 16.3 .7-5 2.6-3 3-.6zM47.2 150.8l-9.4 2.4 2 2.6-.3 18.7 .3-5 2-3.3 1.7-1.4 3-.6-.3-3.4 1.3-8.3zM48.8 112.5l-9.6 2.3 2 2.7-.7 13.3 .3 6.7 .4-5 2-3.3 3-2 2 0-.4-4.4 1.4-9zM50.8 70.5l-9.3 1.3-1 .7 2 2.7-.7 4.3 0 17.7 1-6.4 1.7-2.6 2-1.7 3.3-1 .4-4-.7-1 .7-2 0-4.7 1-2zM60.5 55.8l-2.7 1.4-3 3-1.3 2.3-2-1 0 1.3 2 3.7 4 15.7 0 4-1.3 3.3 4 7.3 2 1.7 0 .7-3.7 .6-3 1.4-2.7 2.6-1.6 3-1.4-.6-.3 .6 2 3 3 8 1 5 0 4.7-1 4 2.7 4.3 .3-2.3-1-4 .3-4 1-2.7 3.4-1.6 10.6-2.4 .7 .7-10.7 2.7 1.7 2.3-1 21-.7 0-2.6-5.7-1-.6-4.7 1.6-3 3-1.7 2.7-1-.3 2.4 4.3 2.6 7.7 1 5.3-1 5.7 3.7 5.3-1 1-3.7 1-2.6 2.3-1.7 3.4-1.3 .3 2.6 4.7 2.4 6.3 .6 3.3 0 4.4-.6 2 3.3 4.6-4.3 1.4-1.4 1-4 5.3 2 3.3 2.7 6.7 .7 3.3-.4 6 .7 0 2 2.4-1 1-3.3 1-2.4 2.3-2.3 3.7 4.3 9.3 1 5.3-.3 3.4 1-.4-.7-1.6 2-3 4-1 0 .6-2 .7 2.4 2.7-.7 13.3 .3 .3 .7-4 2.3-2.6 4.4-.7 7 7.3-.7 1-2.7 .7-2 1.3-2.3 3-1 3.7 .3-.3 1 1 3.4 7.6 .6 3-.3 4.7 1-.3 0-2.4 1.3-1.6 6.7-2.4 .3-5.3 1.7-3 2-1.3 4-.4 6.3 7-1.6 2.7-3.7-1.3-2 0-11.3 4.3 2.3 3-1 11.3 .3 .4 .7-3 2.3-2.7 4.7-.3 6 6.3-6 3.7-3 6.3 .3 1.7 .7-2.4 3.3 5.7 1.7 6 0 4.3 1.7-3.6 6.6-2.7 .4-6.7 3-3.3 4.6-.3 6 6.6-1.6 3.4-3.4-1.4-2.3 0-10 3.7-1 1 2.7 3-1 8 .3 1.7 .7-2 2.3-2.4 3.7-.3 6.3 6.3-5 2-2.3 2.7-1.7 4.3 .3 2.4 .7-.7 .3-1.7 3.4 5.7 1.3 4.7 0 4.6 1.7-2.6 6.6-3.4 0-6.6 2.7-3.4 3-.6 2 .3 4.7 5-.4 1-3.3 1.7-1 1.3-4 1-8 3.7 3 3.3-1.3 8.7 2.6-3.4 4.4-1 .3-3.6 1.7-.7 1-2 1.3 1.7 2.7 6.3 .6 3.3-.6 3.4-2 .6-3.4-2-3.3 3.7-1.7 5.3 1.4 1 .6-1.6 3.4 5.6 1.3 5-.3 3.4 2-2.4 6-3 0-5-3-8 .3-4.3 6.3-3.7 5.7-2 1.3 .4-9.6 4.3 3 4-1.7 8.7 2.7-3.7 5-.7 1.3 1.4-.7 1 2.7 2.6 0 .7-4.7 2.7-2.3 0-10 4.6 3 4-1.7 7.7 3-3.3 4-.7 .7-3 .7-.7 1 .4 1-1.7 1.6 2 1.7 3.7 1.3 5.3 0 3 2.7-3 4-1.7 1.3-1.6 4.7-1.7-.7-4.3 .4-4.4 3 0 6 6.4-1.4 1.6-2.6 1.7-3-.3-10.4 5 0 .6 3.4 3.4-2 8 2.3-3 5.3-1 .7-3 1-.4 1 .7 1.3-2 3.4 6.3 1 4-.4 3.7 3-2.7 4-1.6 1-2.7 4.4-1.7-.7-8 2-1 2.7 .7 5.6 6.3-1.6 2.7-1.7 1.3-3.7-.6-10.6 5.3 3.6 4-2 8.3 2.4-3.3 5.6-.7 1-3 2.4 .7 1.3-2 3 5.3 1 3.4 0 5 .7 0 2.6-2.4 3.4-1.3 1-1-.4-2.3 1.4-1 2.6-.7 1.4 1.7 .6-2 3-3.7 5-1 .4 .3-1 .7 1.3 1.3 0 1-2.3 4-4.4-.6-11 5.6 4.4 4.4-2.7 7.6 2.7-3 3.3-.6 2.3 .3 2-2.7 2.4 .7 0 2-2.4 6 3.7 3.7 1.3 .6 3.7 0-.3 2 1 4.7 3.3 6 4-5.3 7-.4 .7-1.3 3.3-.3 .3 1-3.3 7.3 4.3 4 1.7 .7 3.3-.7 7.4-4-1.4-5.7 3.4-2-1-4 0-2 1-1 2.3-.6 5 .6 5.7 6.4 13.6-7.7-1-2.3-.3-3 2.7-1.4-1.7-5 2-2.3 2.3-.7 5.4 .7 1.6 1.3 3.4 4.7 13-7 0-1.3-1.7-3.7 2-1.3-1.3-4.4 2.3-3 1.3-.6 4.4 0 2.3 .6 3 3 1.3 3 6.4-3.3 2-3-.4-6-2-4.3-7-4-1-2.4 1-2.6 2.4-2.4 5.3-.3 4 1.7 1.7 2 1 3.3 .6 0 6.4-3.3 1.3-1.4 .7-2 .3-3.6-2-6.4-3.3-2.6-3.4-1.4-2-4.3 1.7-3.3 3-2.4 6.3 .4 4 2.6 1.7 4.7 6.7-3.3 2.6-4.4 0-4.3-2-6.3-6.3-3.7-2-4.3 .3-2.4 1.7-3 2.3-2 7 0 5 3.4 1.4 4.3 6.6-3 2-2 1-2.7-.3-7.3-1.7-4.3-4.6-3-1.4-4.4-1.6-2.3 0-2 1.3-2.7 3.3-3.3 5.4-.3 5.6 2.6 1.7 1.7 1 2.3-.3 2.7 7-3.3 2.3-2.4 1.3-3.3 0-5.7-2-6.3-7.6-4.7 .3-4-3-6.3 1-2.7 2-2.6 8.3-7-2.6-3.7-4.4-3-2 0-3 1.3-3.3 0-.7-1 .7-1 .3-5-2.3-8-3.7-3-4.6-2.3 .6-1.7-.3-3.3-2.3-5.3 .3-2.4 2.7-3.6 8-7.4-2-3-4-3.3-2.4-.3-2.6 1-4.4 .3-.6-.7 .6-1.3 0-5.7-.6-3.6-1.7-4-4.3-3.4-5-2 1-2 0-3.6-2.4-6.7 3-4.7 6.4-6.3 1.3-2.3-1.7-2.7-4-3.3-1.3-.4-2.3 1-3.4-.3-2.3 .7 0-6.7-.7-3.7-2-5.3-4-3-6-2.3 1-1.4 .4-3.6-2-8 3.3-5.4 6.3-7.3 .7-1.7-1.7-2.6-4-3.4-3 .7-6.3 0-.3-7-2.7-8.3-5.7-4-3.6-1.4-2.7 0 2.7-2.3 0-5.3-1.7-5.7 10.3-16-1.6-2.7-4-3.3-3 .7-6.4 0-1-9.4-2.3-6.3-4-3-4.3-2-2.7 0-14.7 3.3-7 0-1.6-4.3-4.4-3.3-4-1.7-4 .3-14 3-2.3-.6-1.3 .3-2.7-4.3-3-2.4-4.7-2-17.6 3.4-1.7-.4-1.7-3-4-3.3-4-1.7-17.6 3-1-.6 .3-.4-.7-.3-.6-2-4-3-3.4-1.3-16 2.6-7.3 0-3.3 1.7-3.7 4-4.7-2.3-2 0-15.3 3-3-.7-4.3 .7-3 1.3-4 4.7-6.7-2.7-16.7 3-5-.3zM214.2 457.8l2 3.4 0 1-9 5-2-.4 5-3-.7-3.6 1-1zM224.8 456.2l0 1-2.3 4.3-5-.7 .3-1.3 3.4-3.7 3-.3zM232.5 453.2l.7 .6-.7 2-3 5.4-.7-1.4 0-2.6-1.3-1.4 1.7-2zM226.5 440.5l-.3 .7-9 4.6-2-.3 10-5.3zM205.8 435.2l-.3 2.6-2 5.4-.7 .3-.6-4.3-1-1 1-.7 .6-2.3zM244.2 430.2l.3 1-4 7.6-1-1 .7-.6-1-3.7 .6-2 2.7-1.3zM200.8 423.5l-10 5.3-1.3-.3 .7-1 9-4.3zM194.2 420.2l-11.4 5.6-2.6 0 11-5.6zM237.8 417.2l-1 1-9 4.3-2-.3 10-5.4zM228.2 413.8l-12 6.4-3.4 0 11.7-6 2.3-.7zM230.2 409.2l-11.7 6-2-.4 12-6zM222.2 406.5l-11 5.7-2.7 0 10-5.4 2.7-.6zM204.8 411.2l0 1-2 3-4-.4-13 6.4-1.6-.4 7-3.3-.4-1.3 4-2.4-.6-2.6 .3-6 2.7-.4 2.6 .7zM171.5 405.2l-12 5.6-1.7-.3 10.4-5.3 2.3-.7zM256.8 404.2l.4 1.3-4.4 8.3-.6 0 .3-2.6-1-2.7 .7-2 1-1.3zM283.2 397.2l3 1.3 3 4.7 0 2-1.7-2-1.3-3-2-2-1.4-.4zM230.5 397.8l.3 2-1.6 2.7-4-.3-11.4 5.6-2.6 0 6.3-3 0-1.6 3-1.7-1-3.7 0-3.6 .7-1.4 4.3-.3 2.3 .7zM198.8 392.5l-11.3 5.3-1.3-.3 9.3-5 2.3-.7zM183.2 397.5l-.7 1.3-2.7 2-3-.3-11.6 5.7-2.7 0 6.7-3 .6-1 4-2-.6-8 1.3-1 3.3 .3zM314.5 381.2l3.3 1.3 1.7 1.7 1.3 2.6 0 2.4-2.3-1.7-1.3-3.7-1-1-3 0 1.3-1zM208.8 385.5l-.6 1.7-1.7 1.6-3.7-.3-11 5.3-2.3 0 5.7-2.6 4-2.7-.7-2.3 0-5.7 .7-1 5 .3zM157.8 378.5l4.4 6-3 1.7-.7 1-2.7 0-2.6 1-.7-1 0-4 3-4zM300.2 368.8l2.6 1.4 1.4 2 1.3 3.3-.7 1.7-1.6-1.7-2-4.3-3-.4zM132.8 368.2l2 .3 4 4.3-3 5-2.3 0-1.3-1 0-7zM295.2 367.8l-4.4 3-3.3 4.4-1.3-.7 1.6-4 2.7-2.7zM183.5 367.5l4.3 5.7-3 2.3-2.6 0-1.7 .7-1-1.7 .3-3.3 1.4-2.4 1.3-1.3zM166.2 360.2l.3 1-4 4.3-12 5.3-2.7 0 11.4-5-.4-6.3 1.7-3 2.7 .3zM320.5 355.8l3.3-4 7-.3 4.7 2.3 1.7 1.7 1.3 4.7-1.7 .6-1.6-1.6-2-3.7-1.7 .7-2-.7 3-1.7-1-1-5 .4-5.3 3zM194.8 351.8l-1.6 2.7-4.4-.3-11 5-2.6 0 10-4.7-.7-4 .3-3 1.4-2 4 .3zM146.8 349.5l-4 3.3-4.6 1.4-15 6.6-1.4-.3 12.4-5.7 0-6 2-3.3 1.3-1 5 0zM173.2 338.8l-3.4 3-3.3 .7-15.3 6.7-1.4-.4 10.7-5 0-5.3 1.3-2.7 2-2 4-.3 1.7 .7zM302.2 340.2l1.3-3.4 3-3.6 2.3-1 4.4 0 4.6 1.6 2.7 2.4 1.3 2.6 .4 3-1 .7-2.7-2-3.3 .3 0-.6 3-1.4-.7-.6-5 .3-4.3 2-4.4 4-1.6-2zM125.2 330.8l4.6 5 0 .7-5.3 2.3-1.7 1.7-1.6 3.3-3.4-.6-1-1 0-7 1-2 2.4-2.4zM152.8 320.2l3 3 1.7 2.6-2 .4-4.7 2.3-2.6 4.3-3.4-.6-.6-6 1.3-4 2-2zM284.8 321.2l2 5-1.3 3.3-3.7-.3-14 6.3-2.3-.3 .3-.7 3-1.3-2-4 0-4.4 2-4 3-3 6.7-.3 5 2.3zM335.8 323.8l1.7-3.3 3-3 6.3-.3 2.7 1 4.7 3.6 .6 4.7-.6 .7-1.4 0-2.3-1.7-2.7 .3-.3-.3 2.3-1.7-.6-.6-2.4 1-3.3 0-6.3 3.3-1.4-2zM132.8 316.2l-1.6 2.6-4.7-1-10.7 4.4-2.3 0 5.7-2.7-.4-2.7 .7-3.6 3-3.4 5 0zM319.2 306.2l1.6 4 0 2-1.3 1.6-3.7 .4-14.6 6.6-3.7 0 6.7-3.3-2.7-5.3 0-2 2-4.4 2.7-2.6 4.6-.7 2.4 .3zM159.5 305.8l-1 2.4-5-.7-11.7 4.7-1-.4 5.4-2.6 .3-6 3-3.4 5.3 0zM109.5 294.8l5.3 6.7-5.6 2.3-3.4 5-4.3-1.3-.3-8 1-2.3 2.3-2.4zM352.5 293.8l.3 4.4-1 1-2.6 .3-14 6.3-3.7 0 6-3-.7-.3-.6-3-1.7-3 0-1.7 1.7-3 2.6-2.6 7.4 0 4.3 2.3zM137.8 284.8l1.7 1.4 3.3 5.3-4 1-2.6 1.7-2.7 4-3.7-1-.6-2.4 0-4.6 1-2.7 2.6-2.7zM283.2 289.5l1.3-3.3 4.7-5 6 0 3.6 1.6 3.4 2.7 1.3 3.3 0 3-1.3 .4-1.4-1-6.3 .6-5.3 3-3 3-3-7zM117.5 280.8l-1.3 2.4-3.4-1.4-1.6 0-12.7 4.7-1.3-.3 6.3-2.7 .3-5.3 3.7-4 4.7 0zM318.2 274.2l1.6-3.4 3-3 7.4-.3 6.3 4.3 1 3 0 2.7-.7 .7-1.6 0-.7-.7-4.7 0-4.3 1.7-4.7 3.3-1-4-1.6-3zM265.5 269.5l2 5.3 0 1-1 1-3.7-.3-14.3 5.7-3.3-.4 3.3-1.6-1.7-3 .4-4 1.3-3 3.3-3.7 1.4-.7 4.6-.3 6.4 2.7zM144.8 271.2l-.6 1.6-4.4-1-13 4.7-1-.3 5.7-2.7 0-4.3 1.3-2.4 2.4-2 3.3-.3 2 .7zM92.8 257.8l1 .4 2.4 2.6 3 4.7-4.4 1.3-1.3 1-3.3 4.7-4.7-1.3-.7-2 0-4.7 1-3.7 2.7-2.6zM301.2 256.2l1.3 3 0 3-3 0-17 6.6-3.3-.3 6-2.7-2.4-5.3 1.7-4 3.3-3.7 2-.6 4 0 5 2zM121.8 248.5l3 2.3 3.4 5.4-1.4 0-4.6 2-3.4 4.3-4.3-1-.7-1.7 0-5.6 1-2.7 2.4-2.7zM72.2 253.5l-1 2.7-4.4-1.7-2 0-8.6 3-1.4-.3 3.4-1.7 .3-4.7 .7-1.3 3-2.7 4.3 0zM335.2 244.5l.6 1.7-.3 3-3.7 .3-14 5.7-3-.4 4.4-2-2-7 1.3-2.6 3-3 1.7-.7 5.6 .3 3.7 2zM101.5 244.2l-.7 2-5.3-1.4-13 4.4-1.7-.4 6.7-2.3 .7-5 2.3-3 2-1 4 .3zM129.8 235.5l-.6 1.3-4.4-1.3-12.6 4.3-1.7-.3 5.7-2 .3-4.7 3.7-4 2.6-.3 3 1zM282.8 232.5l1.4 3.7 .3 3-.7 1-6-.4-3.6 1.4-3.7 2.3-3.3 3.7-1.4-.4-.3-5-2-5 3-6 3-2.6 6.7 0zM71.2 220.5l4.6 6.3 1.7 0 3.7-1.3 2 2.3-.4 1-4 1-1.3 1-3.3 4.7-5.7-2.3 .3-9.4zM318.5 220.5l1 3 0 3-.7 1-7 0-4.6 2-5 4.7-.4-.4 0-5.6-2-4.4 0-1.3 2-3.7 3.7-3.3 5.3 0 3 1.3zM225.2 226.2l2.3-1-1-1.4 0-3.3 1.7-4 2.3-3 2.7-1.7 4.6 0 5.4 2 1.6 1.4 2 4 0 3-3.6-.7-15.7 5.3zM101.8 210.8l4.7 7 4.3-1 1.7 2.4-.3 .6-5.4 2-3.3 4.4-3.3-1.4-1.7 0-.7-3 1-7.3zM283.2 205.8l.6 2.4-.3 1-4 0-15 5.3-2 .3-1.7-.6 4.4-1.7-1.4-3.3 0-1.7 1.4-3 2.3-3 2.7-1.7 6.3 .4 5 3zM74.5 189.5l4.3 6.3 5.4-1 2.3 3.7-.3 .7-2.4 .3-3.6 2-3 4.3-6.4-2.3 .4-9.7zM297.5 201.8l3.3-1.3-1.6-5.3 2.3-4 3.3-2.7 6.4 .3 3.6 2.4 3 3.3 0 2.3-4.6 1-13.4 4.7zM102.8 177.5l2.7 1 5 8.7 4.3-1 2 3.3-.3 1-4.7 1.3-2.3 2-2 3-5.7-2-.3-5.3 .7-4 2-3 2-1.3-1.4-2-2.3-1.4zM261.5 176.2l1.7 2 1 3 .3 5-5 0-5 1.6-3.3 2.4-3 3.3-3-.7 0-4.6-2-6 2.3-5.4 4.7-4 5 0zM299.5 166.5l1.3 4.7-.6 4-5.4 0-5.3 2-3.3 2.3-1.7 2-2.3-.7 .6-1.3 0-3-2-7.7 2-3.6 3.4-3 6.6 0zM225.8 163.5l-.3 1.3-3-.6-17 5-2-.7 8-2.3 4.7-4 6.6 .3-.3-1.7-2.7-2.6-3-1.7 .4-.3 5.3 2 2 2.3zM78.2 155.8l3.6 6 5-1 3 5-.3 1-3.3 .7-2.4 1.3-3.6 4.7-3.4-1.7-3.3-.6 .3-10.7zM263.8 152.5l-.3 1-3.7 0-16.6 5-2-.7 7.6-2.3 2.7-3 1.3-.7 4.4 0 2.6 1 0-3.3-2.3-2.3-1.7-.7 0-.7 1.4 0 4 2.7 1.6 1.7zM188.5 147.5l-2 5.3-1.3 1.7-11.7 3.3-3.3 0 .3-.6 2.7-1 .6-4.4 1.7-2.6 3.7-3.4 5.3 0zM106.5 142.8l2.7 .7 1.6 1.7 4.4 8.3 4-.7 2.3 4.4-.3 1.3-3.7 1-2.7 1.7-3 3.6-6-2.3-.3-6.3 .7-3.4 3-4 2.3-.6-1-2-4-2.7zM299.5 141.5l-.3 1.3-16.7 4.7-3.7-.3 4.7-1.7-.3-.3 6.6-9.4 3.7 .4zM139.2 135.2l2.3 .6 1.7 1.4 3.6 8.3 6-1.3 1-1.4 .7 .4-1 2-1 5 2 .3 .7 1-2.7 13.7 2 2 3.3 1.6 2.4-.3 .6-.7 2.7 0 .3 4.4 2 7.3 4 7 1.4-6 1.3-3 4.3-4.3 6.7 0-.3-4.4 1-7 2.6-.6 .4 2.3-3 12.7 3 2.6 3.3 1.4 1.7 6 3-1 1.6 .3 1 4.7 2 4.6 2.7 3.7 1.3-5.7 2-4 4.4-4 7 0 4.6 2.7 2.7 4 1.3 6.3-4.6 .4-5 1.6-4.4 3.4-3.3 5-1.7 4-1.3 6.6 .3 .7 1.4-1.7 2 0 .3 1.7-3.3 12.3 2.6 2.7 2.7 1.3 3 0 2.7-1.3 1 .3 0 4.4 1.3 6.3 2.3 5.3 2.4 3.4 1.3-4.7 2.7-5 3.3-3 7 0 4.7 2.3 1.3 1.4 2.3 5 .4 3-.7 .6-1-.6-4.3 0-4 1.3-4.7 3.7-2.3 3-2 4-1.7 8.3 .3 .7 1.7-1.7 2 0 .3 1.7-3.6 11.3 5.3 4 3.7 0 2.6-1.3 .7 .3-.3 3.7 1.3 7.3 2 4.7 2.3 3.3 4.7-9 3.3-2.7 7 .4 3.7 1.6 1.7 1.7 2.3 5 0 2.3-.7 .4-1.6-1.4-3.7 0-4 1.4-3.3 2-2.7 2.6-3 5-1.7 5.7-.3 4 .7 .3 1.6-1.6 2.4-.4 .3 1.4-4.3 10.3 3.3 3.3 2.3 1.4 3.4 .3 2.6-1.3 1 .3-.3 6 1 4 2 5 2.3 3.3 5-8.3 2.7-2 5.3-.3 5.7 2 3.7 6-.4 2.3-2.3-2-3.7 .3 0-.6 3.4-1.7-.7-1-3.3 0-4 1.7-2.7 2-3.7 4.6-4.3 0-12.3 6-3-.3-3 1.7-1 1.3-.7 3 .3 4.7 2.4 7 2.6 4 1.7-3.7 4-5 3.3-1 3 0 2.7 1 .3-2.3 1-1.4 4-1.6 .7 .3-.3 1.7-4.4 8.3-1-3-2 .7-4.6 3-3.4 4.6-3.6-.3-12.7 6.3-1 0-1-.6 0-1 1.3-1.7 0-3.3-1-3.7-1.6-3-5.4-3-4.3-.7-11.3 5.4-2 .3-.4-.3 .7-.7 4.3-1.7 3-2-.6-.3-2.4 1.3-2 .4-.3-.4 1-.6 0-3-2.3-7.4-4.4-2.6-2.6-.7-1-1-.4-6.3 2-3.7 4-4-1-2.3-3.6-3.4-1.4 0-1.6 1-1.7-.3 0-4-2.3-6.7-5.7-3.3-3.7-.7-11.6 5-2-.3 4.6-2.3-1.3-6.7-2-3.7-7.3-3.6-.7-3.7 .3-3.3 5.4-8.4-1-1.6-3.7-3.4-2.3 1-1.7 0-.3-4-2.4-6.6-4.6-3-3-.7-.7-1 0-7 2-4 3-4 0-1-4-4.3-4.3 .6-.7-4.6-2.3-6-3-2.4-5.4-2 0-8 5-9-4.3-4.6-4.3 .6-.7-4.6-2.3-6-3-2.4-2.7-1.3-2.3-.3-.7-1.4 0-6.3 3-6.7-1-1 .3-.3 2.7 1.3 4 7.4 5.7-1.7 1.3-1.3 .7-2.4-.4-6-2.6-7-5.4-3.3-2.3-.3-1-1 0-8.4 3.7-7-2-1.3 .6-.3 2 .6 1.4 1.4 3.6 7.6 5.7-1.3 1.3-1.3 1-2.7-.3-7-2.7-7.3-2.6-2-6.4-2.7-.3-7.7 4.3-10-2-1.3zM185.8 127.5l1.4-1.3 1.3 .3 3.3-1.3 3 .6 4.7 2.7 1.3 1.3 1.4 3 1.6 7.7-2 0 .4-1-1-2-.7-4.7-3-4-5.7-2-4.6 1zM72.5 122.2l.7 .6-.7 13.7-.7 .7-6.3 1.3-.3-.3 1.3-1 4.7-1-.7-.7 .7-.7-.4-4.3 .7-2.3 0-4zM167.2 121.8l1.6 2.7 1.7 6.3-4.7 .7-4 1.7-4 3.6-3 4.7 .4-5.7-1-6 12.6-3 .4-2.6-1-2.4zM99.5 120.2l1-.4 3 1 3.7 6.4-.4 .3-1.3-2.3-3-3.4zM226.8 117.2l2.4-1.7 3-.3 3.3 .6 5 3 1.3 1.4 1.4 3.6 .3 5.4 .7 1-2.7 0 .3-.4-2-5-.3-4.3-2.3-2.3-2.7-1.7-1.7 2.3-3.6-1.3-2 .3zM264.5 108.2l2.7-2 2.6-.4 3.7 .7 3.7 2 2.6 2.3 1.4 3.7 0 5.7 2 .3-6.7 .3-2.7-7-3.3-2.6-5-2zM199.8 104.8l-13.6 3-1 .7-4.4 0 .4-.7 12.6-2.6 1-.7zM103.2 103.2l-.7 .6-9 2-1.3-.3 .6-1 .7 .3 .7-.6 4.3-.7 1-.7 .7 .4 2.3-.7zM163.5 102.2l.7 1.3-2.4 13-.6 1-2.4-.3-.6-.7 .3-.3 2.3 0-.3-4.7 .7-8 .6-1zM194.8 98.2l2.4 0 4.3 2.6 2 4-1.3 .4-3-4zM162.5 96.5l-1 1.3-11.7 2.4-2.3-.4 4.7-1.6 9.3-2zM77.8 96.5l-.3 .7-7.7 1.6-3.3 0 1.3-1.3 9-1.7zM131.8 93.2l.4 2.6-1.7 12-1 1-2-1 2-.3-.3-5 .6-7.3zM242.8 94.5l-.3 1-7 1-11.3 3-3.7-.3 13.7-3.7 5.3-.3 0-2-2-2-2.7-1.4 0-.6 1.7 0 4.7 3.3zM131.2 89.2l-2.7 1.3-10 2-1.7-.7 12.7-3zM102.5 85.2l.3 4-1.3 11.3-.7 .3-1-.6 1-.7-.3-5 .7-7zM102.2 82.2l-.4 .6-10.6 2.4-2-.4 .3-.6 3-.4 1-.6 .7 .3 7-1.7zM279.8 85.8l-1.6 1.4-14.7 3.3-3.7-.3 8-2 4.4-7.4 2 .4zM75.5 78.5l.7 1.3-.7 12.4-.7 .6-.6-1.3 .6-11.7zM200.8 77.5l-17.6 4-2-.7 17.6-4zM75.5 75.8l-.7 .7-7 1-3.3 1.3-1.7-.6 .7-.7 9-1.3 1.3-.7zM167.8 70.5l-16.3 3.7-2.7-.4 .4-.6 17-3.4zM240.8 69.2l-1 .6-12.6 2.7-5 0 2-1 13.3-2.7zM137.5 63.8l-.3 .7-15.7 3-2.3-.3 .3-.7 16-3zM206.8 62.8l-13 3-4.6 0 .3-.6 15.7-3zM109.2 57.8l-.4 .7-14.3 2.7-3-.4 16.3-3.3zM176.2 56.8l-14 3-3.7-.3 16-3.3zM147.5 51.2l-.7 .6-13 2.4-3.3-.4 15-3z"/><path fill="#021123" d="M43.8 217.5l-7.6 2.3 1.6 2.4-.6 9.3 .3 3.7 .3-2.4 2.7-3.3 2.7-1.7 .6-1.6zM45.5 185.8l-5.7 1.4-2.6 1.3 1.6 2-.6 11 .3 3.3 .3-2.3 2.4-3.3 3.3-2 0-1.7 .7-.7zM47.2 151.5l-8.7 2 1.7 2.3-.7 4.4 .3 10 2-4 4-2.7zM48.5 113.2l-8.7 2 1.7 2.3-.7 2 0 15.7 .4-2.7 2-3.3 1.6-1.7 2.7-1zM50.2 70.8l-9 2 1.3 1.7-.3 20.3 .6-4 1.7-2.6 2-2 3-1zM60.5 55.8l-2.7 1.4-3 3-1.3 2.3-1.7-1 0 1 3 5 2.4 7 1 9.7-1 5-.7 .6 3.3 6 .7 0-2-7 0-4.6 .7-3.7 1.6-2.3 5-1.4 10-1.6 .7-2.4 0-2.6-.7-.7 1-1.7 2.4 3.4 2.6 7 1.7 8 0 5-1.3 5-.7 .6 1.3 3-.3 .7-2.3-3-3 0-10.4 2.3-.6-1.3 1.6-1.3 .7 .3 7.7-1.7-1.4-2.3-2-1 1.4-1.3 .3-11.4 .7-2.6-9.7 1.6 1.3 2-1.3 24.4-.3 .3-1-1-2.4-4.7-3.3 0-3 1.4-2.7 2.6-1.6 3-1.7-.6 2.3 3.6 3 8 1 5-.6 9.7 2 3-1-5.7 .3-4.3 1-2.7 1-1 8.3-2.3 5.7-.7 .7-1 .3-4 1.7 2.4 3 7 1.3 5.6 .3 6-.6 3.4-1.4 2.6-.3-.6-3.3-.7-2-1.7-7 1.4-.4-1 1-1 4.7-1.4-.7-1 1.4-1.6-.4-3 .7-2.4 .3-7-1-.3-2.6 1-5 .7-.7 .6 1.3 1.7-1 22-.3 .3-4-7.3-2 0-3 1.3-3 3-1.7 2.7-1-.3 2.7 4.6 2.7 7.7 .6 4-.6 7 3.3 5-.3 1-4.4 1-2.6 2.3-1.7 3.4-1 .3 2.3 4.3 2.4 6.4 .6 3.3-.3 6.7 3.3 4.6-.6 .7-2.4 0-3 1.7-4 5.3 2 3 2.7 6.7 .7 3.3 0 6 2.3 2.7-.3 1-4 1-2.4 2.3-2 3.7 3.7 8 1.3 7 .7 0 0-1 1-1 7.7-2.7 0-3.3 1-2.7 2-2.3 3.6-2 2 1.6 5.4 6.7-1 2.7-3.4-1.4-2.6 0-11.4 3.7 1.7 2.7 0 3.6-.7 2.4 .4 4.6 3-4 3.3-1.6 7.7 8.6-.4 1-3 .7-2 1.3-2.3 3-.7 2 4.4 9.7 1 6-.4 1.7 .7-2.7 1-1.3 7-2.7 .3-5 2.7-4 4-1.7 1 .7 6.3 7.3-1.6 2.7-4-1.3-12.4 4.3 2 3-1 10.7 1.4-3 1.6-1.7 3.4-1.7 7.3 7.7-.3 1-3 .7-2 1.3-2.7 4.3 0 1.7 3.3 5.7 2 8.6 1-1.6 7-3 .4-6.4 2.6-3.3 3.4-1.7 2.6 2 5 6-1.6 3.4-4-1.4-12 4.7 2.3 3-1 9.3 2.3-3.6 3.7-1.7 7 7.3-.3 .7-2 0-2.7 1.3-2.3 2.7-1 2.7 0 1.3 .6 0 1.7 2.3 2.7 6.4 .3 6.3 1.3-2.3 6.7-3 .3-7 2.7-3.4 3-1.6 2.3 1.3 4.4 5-.4 1-3.3 1.7-1 1.3-11 4.7 2.3 3.3-1.3 8.3 2.3-3 3-1.6 1.7 0 .3-5 2-1.4 1.7 2 2.7 6.4 .6 3.3-.3 3.7-1 .6-1.7 0-3-1.6-2.6 2.3-1.4 3 0 2 1.4 0 3 6 1.6 7.3 2-1.6 5.4-2.4-.4-5.3-2.6-7.3 0-4.7 7-4 6.3-2 0-8.7-1-.6 1.7-1 1.6 1 4.4 5-3.4 4.6-2 .4-10.3 4.6 3 3.7-1.7 5.7 0 2 1.7-2.4 4.3-2 3.7 3-1.7 .4 3 3.3-3.3 1.3-2 1.7-1.7 0-10 4.7 3 3.6-1.6 7.4 2-2.7 3.3-2 1.3 1 .7-4.7 1-1 .7 .7 1-.7 3.3 6 1 3.4 .3 4.6 2.4-2.3 10.3-5.3-.7-4 .4-4-1-.7 2.6-1 7.4 7.7-1.4 1.6-2.6 1.7-3 .3-10 4.7 3.3 3.7-2 7.6 2.3-3 3-1.3 2 .7 .7-4.7 1-.3 1 1 1-1.4 1.7 2 2.3 5.4 .7 7 2.3-2.4 4-1.6 1-1-.3-1 5-2.7-1-8.3 3-1.4 3.3 2.7 4.3 5.3-1.6 2.7-1.7 1.3-3.7 0-10 5 3.4 3.7-2 7.3 2-2.3 4.3-1.7 1.3 1 .7-4.3 1-.3 1 1 1 0 1-1.7 3.7 7 .6 2.3 0 5 2-1.6 4.7-2 .3-3 3.4-2-2.4-6-.3-4.4 .7-2.3 2.6-2 9-4.3 3.7-.4 .3 .4-.6 .6-10 4.7 0 .7 3.6 3.6-2.6 7.7 2-2.3 4.6-1.4 2 .7 .4-3 1-1.7 2.6 1.4 2-2.4 2 3 2 5 .7 3.4-.7 4.3-1.3 1-2.3 0-2.4-1.3-3.6-4-.4-4.4-2-.6-.3 .6 1 1 0 1-2.3 4-3.7-.3-10.7 5.7 3.7 3.6-2.3 7.4 3.3-3 2.3-.7 2.4 .7 .6-3.7 .7-.7 2 1.4 1 0 1.3-1.7 2 3 2.4 6.3-.4 5.4 6.4-3.7 1-1-.7-3.3 4-2.4-1.7-6.6 .4-3.7 2.6-2.3 11.7-5.4-2-3-1.7-5-1.3-2 .7-1 .3-4.3 3.7-3 9.3-4.7 2.3 0 .7-.6 1.3 .6-.3 .7-11 5.3 4.3 4.7-5.3 12 1.3 .7-11 6 4 4 0 1.3-2.6 6.3 2.6-2.3 4.4-1 2 .3 1.3-3.6 2.3 1 1.7 0 1.7-2.4 4 7.4 .6 2.6 0 4.4-.6 1.6-1 1-1.7 .4-3-1.4-4.3-4-.7-5-1.7-1-1 .4-1.3-.7 .7 1-2.7 5-3-.3-11 5.6 0 .7 4 4.3-3 6.7 2-2.3 5.3-1.4 1.4 1 .6-3.3 .7-.7 2 1.4 1.7 0 1.3-1.7 4 7.7 .7 3.3-.7 3.7 .7 0 7-4-1.4-5.4 3.4-2-1-4 0-2.3 .6-.7 4-1.3 2.4 0 4 3.7 2.3 3.3 1 .3 13.3-7.3-1-2.3-.3-3 2.7-1.7-1.7-4 1.3-2.7 4.4-1.6 2.6 0 3 2.3 3 4.7 1 0 12.4-7-1.7-4.7 2-1.3-1.3-4.4 2.3-3 2.3-1 4.7 0 2.7 2 2.6 4.7 6.4-3 2-3-.4-6-2-4.3-7-4-1-2.4 1-2.6 3.4-2.7 6.6 0 2.4 2 2.6 5 6.4-3.3 1.3-1.4 .7-2 .3-3.6-2-6.4-3.3-2.6-3.4-1.4-2-4.3 1.7-3.3 2-2 2-.7 7.3 .7 2 2.3 1.7 4.3 .7 .4 6.3-3.4 2.3-4 0-4.3-2-6.3-6.3-3.7-2-4.3 .3-2.4 1.7-3 2.3-2 2-.6 7.4 .6 2.3 2.4 1.7 3.6 0 1.7 6.6-3 2-2 1-2.7-.3-7.3-1.7-4.3-4.6-3-1.4-4.4-1.6-2.3 0-2 1.3-2.7 3.3-3.3 4-.7 3 .4 3.7 1.3 1.3 1.3 2 4.4 0 1.6 6.4-2.6 2.3-2.4 1.3-3.3 0-5.7-2-6.3-7.6-4.7 .3-4-3-6.3 1-2.7 2-2.6 8.3-7-2-3-4.3-3.4-1.7 0-1.6 1-6 .4-.4-1.4 .7-1 .3-5-2-7.3-4-3.7-4.6-2.3 .6-1.7-.3-3.3-2.3-5.3 .3-2.4 2.7-3.6 8-7.4-2-3-3.4-3-2-.3-2 1-6 0-.6-.7 .6-1.3 0-5.7-.6-3.6-1.7-4-4.3-3.4-5.7-2 1.7-2 0-3.6-2.4-6.7 3-4.7 6.4-6.3 1.3-2.3-1.7-2.7-3.6-3-3 .7-7-.4 .3-6.3-.7-3.7-2-5.3-4-3-4.6-2-2.7 .3-14 4.7-6.7-.3-5.3 2-3.3 2.3-1.7 2-3.3 0-9.4 3.3-4.6 1-.7 .7-7-.3-5.7 2-5.6 5.3-1.4-.7-3 .4-15 5-3 0 19.4-6.4 0-3.6-2-6 2.3-5.4 4-4 7.3-.3 3.4 1 3 4.3 1.6 6.4-.3 1.6 18-5.6 .3-3.7-2-7.7 2-3.6 3.7-3.4 6.3-.3 5.4 2.3 2 3.7 1 4.3-.4 2.7 14.7-4.3 2.3-1.4 .4-3.6-2-8 3.3-5.4 7-8.3-1.7-3.3-4-3-1.6 .6-8-.6 0-6.7-1.4-5.3-1.3-3-3.7-3-4.6-2-16.7 4.3-7-.7-3-7.3-5.7-3.7-4-.6 3-3 5.4-.7 6.3 2.7 1.7 2.3 1 3.7 0 5.6 16.6-4 1.4-1.3 0-5.3-1.7-5.7 10.3-16-1.6-2.7-3.4-2.6-3 .3-7.3-.7 0-5.3-1-5-1.7-4.3-3.3-3-3.7-2-4 0-14.6 3.3-3.7-1-3.7 .3-1.6-4.3-4.4-3.3-4.3-1.4-15.7 3.4-4.6-1-1 .3-2.7-4.3-3-2.4-3.3-1.3-18 3-2.7-.7-3-4.3-5-3-3.3 0-13.7 2.7-3-.4-1.3-3.3-4-3-2.7-1-15 2.7-9-.4-3.3 1.7-3.7 4-5-2-16.3 3-3.4-.7-4.6 .4-3 1.3-4 4.7-6-2.4-17.7 3.4-2.7-.7zM282.2 430.2l4.3 0 1.3 1 3 4 1 2.3-.3 .3-1.3-1.3-1-2.3-3-2.7zM247.2 426.2l2 2.6 2.6 7.7-.3 6-1.3 1.3-2 .7-3-1-6-5.7 1-1-.4-2-1-1.3-1.6 0-2.4-1 3.4-.7 1.3 .4 .3-3 1-1.4 2.7 1.4 1.7-.4zM263.8 422.5l1.7-.7 4 .4 2 1.6 2.3 3.7-.3 .3-4-4zM195.2 420.2l-12.7 6.3-3.7 0 .4-.7 7-3 4.3-2.6 2-.7 1.7 0zM229.5 413.8l-13 6.7-4 0 12.3-6.7 2-.6 1.7 0zM232.2 408.8l-12.4 6.4-4.3 0 12.7-6.4zM296.5 406.5l1-.3 3.7 .6 3 3.7 1.6 4-.6 .3-1.4-1.3-2.6-4.7-1.4-1-2 0zM223.5 406.5l-12 6-3.3 0 .3-.7 9.7-5 3-1zM204.8 411.2l0 1-2 3-3.6 0-12 6-3.4 0 .4-.7 6.6-3 0-1.3 1-1 3-1.4-.6-2.6 0-5.7 1-.7 3.3-.6 3.7 3.3zM246.5 407.5l1.7-.7 3.6 0 .4-3 1-1.3 2.3 .7 3.7-.7 5.3 12.7 0 1.3-2 2.3-2 .4-2.3-.7-2.7-1.7-2.3-2.6-1.4-.4 .7-1.3-.7-3.3zM277.5 396.5l2-.7 5 .7 3.3 4 2 4.7-.3 .3-1-.7-2.7-5-1.6-1.3-3.7-1.7zM227.5 393.5l3.7 5.3-2 3.7-2.4-.3-12.6 6-2.7 .3-.7-.7 6.4-3 .3-1.6 3-1.7-1-3.7 0-3.6 .7-1.4 5.6-.6zM183.2 397.5l-.7 1.3-2.7 2-2.6 0-7.7 3.7 2.7 0 .3 .7-.7 .6-11 5-3.3 0 .3-.6 6.7-3 0-.7-2 .3 0-1 6.3-2.6 1-1.4 4-1.6-.6-3.4 0-4.6 .6-1.4 2.7-.6 3 2.6zM310.5 380.5l3.3-.3 3 .6 2.7 3 2 5-.7 .7-1.3-.7-3-5.6-3.3 0-.4-.4 1.4-1zM208.2 384.2l.6 2-2.3 2.6-2-.3-6.7 3 2.7 .3 0 .7-11.3 5.3-3.7 0 6-3 0-.6-2 .3 0-1 9.7-5-.7-2.3 0-5.7 1-1.3 4-.4zM163.2 380.5l-.4 .3-2.6-1.6-1.7-.4 0 1 3.7 4.7-3 1.7-.7 1-5.3 1.6-.7-.6 0-5 1.3-2.4 3.7-2.6 2.7-.4zM183.5 367.2l4.3 6-3 2.3-4.3 1.3-1-2.3 .3-3.3 1.4-2.4zM286.2 373.5l1.6-3 2.7-2.7 4.3-1 4 .4 2.4 .6 2 2.4 2 3.6 .6 2.7-1 .7-2-2-1.6-4-3.4-.4 1.7-1 0-.6-3.7-1.4-5 3-3.3 4.4-1.3-.7zM166.5 360.5l0 .7-2.7 2.3-1.3 2.7-11.7 5-3.3 0 .3-.7 11.4-5-.4-6 1-3.3 2.4-.4zM320.5 355.8l3.3-4 2.4-.6 7 .3 1.6 .7 2 2.3 2 5.7-1 1-1-.4-2-2-1.3-2.6-4.3 0 0-.7 3-1.7-1.4-1-4 .4-5.6 3zM194.8 351.8l-1.6 2.7-4 0-10.4 4.7-4 .3 1-1 9.4-4-.7-3.7 .3-3.3 2-2.7 2.7 0 2.3 2.4zM146.8 349.5l-4 3.3-19 8.4-3-.4 2-1.3 10.7-4.3 .7-.7 .3-6.7 1.7-2.3 2-1.3 3-1 2.3 2zM173.2 338.8l-3.4 3-17 7.4-3.6 0 11.3-5.4 .3-6.3 2-3 1.7-1 3.7-.7 2 1.7zM302.2 340.2l1.3-3.4 3.3-4 3.4-1 3.6 0 4.7 1.4 1 1 2.3 4.3 .7 3.3-1.7 .7-1.6-1.3-5 0 0-.7 3.3-1.3 .3-.7-5.3 0-4.3 2-4.4 4-1.6-2zM123.8 329.5l3.4 3 3 4.3-5.7 2-1.7 1.7-1.6 3.3-3.4-.6-1-1 0-7 2.7-4zM151.8 318.8l2.4 2 3.6 5.4-2.6 .3-4.4 2-2.6 4.3-3.4-.6-.6-6 1.3-4 2-2zM335.8 323.8l1-2.3 3-3.7 3-1 4.7 0 4 1.4 1.7 1.3 1.3 2.7 .7 4-1.7 1.3-1.7-1.3-4.6-.7 1.3-1.3-4.7 0-6.6 3.3-1.4-2zM281.8 317.5l3 3.3 1.7 3.4 .7 2.6-1.4 2.4-3 .3-13.6 6.3-3.7 0 0-1.3 3-1.3-1.7-4 0-4.4 2-4 4-3.3 4.7-.7zM132.8 316.2l-1.6 2.6-4-.6-13 5-2.4-.4 7.4-3.3-.4-2.7 .7-3.6 2.3-3 2.4-1 2.3-.4 1 .7zM319.5 306.2l1.7 4.3 0 1.3-1.4 2-3 .7-13.6 6.3-6 0 6.6-3-.3-2-2-3.6 0-2 2-4.4 2.7-2.6 4.6-1 3.4 .3 3 1zM159.5 305.8l-1 2.4-3-.7-13.3 5-2.4-.3 6.4-3 .3-6 2.7-3.4 5-1 2.3 2.4zM108.2 293.5l3.3 3 3.7 5-6 2.3-3.7 5-4.3-1.6 0-7.7 1-2.3 2.3-2.4zM351.5 291.5l1.7 4.7 0 1.6-1.4 1.7-14.3 6.3-6.3 0 6-3-2.7-6.3 0-1.7 1.7-3 2.6-2.6 7-.7 4.7 2zM136.8 283.5l2.7 2.3 3.7 5.7-.7 .7-3.7 .3-2.6 1.7-2.7 4-3.3-.7-1-2.7 0-4.6 .6-2 2-2.7zM300.2 282.2l2.6 4.3 1 3 0 2.3-.6 .7-2-1-2.7-.3-4 .6-5.3 3-3 3-3-7 0-1.3 1.3-3.3 2.3-3.4 2.4-1.6 3.3-.7zM117.5 280.8l-1.3 2.4-2.4-1-2 0-13 4.6-3-.3 7.4-3 .6-5.3 2.4-3.4 3-1.3 2-.3 1 .6zM335.8 269.8l2 5.7 0 1.7-.6 1-1 .3-2-1-4 0-4.7 1.7-4.3 3.3-.7-.3 0-1.7-2.3-5 0-1.3 1-2.4 3-3.6 4-1.4 3 0 4.6 1.4zM263.8 266.8l1.7 2.4 2.3 6-1 1.6-4.3 .4-13.7 5.6-4.3-.6 3.7-2-1.4-3 .4-4 1.3-3 3.7-4 4.3-1 3 0 3 .6zM144.8 270.8l-.6 2-3.4-.6-13.3 4.6-2.3-.3 6-3 .3-4.3 2.7-4 2.3-1 3-.4zM92.2 256.5l2.3 2 5 7-.7 .7-4 .6-2.3 2-2.3 3.7-2.4-1-2.3 0-.7-2.3 0-4.7 .7-3 2.7-3.3zM301.2 255.5l2 6-1 1-3.4 .7-14 5.6-2.3 .4-3.3-.7 5.6-2.3-2-5.7 1.7-4 3.7-4 6.6-.7 4.7 1.7zM121.8 247.5l3.7 4 2.7 4.7-.7 .6-1.7-.3-3.6 1.7-3.4 4.3-4.3-.7-.7-1.6 0-6 1-2.7 2.7-3zM334.5 242.2l1.7 5.3 0 1.3-.7 .7-3.3 .7-12 5-2 .3-3.7-.7 4.7-2-2-7 1.3-2.6 3.3-3.4 6.4-.6zM101.5 244.2l-.7 2-5-1-13 4.3-3-.3 8-3 0-3.4 1.4-3 2-2 4.3-1.3 2.3 2.3zM129.8 235.2l-.6 1.6-3.7-1-13.3 4.4-2-.4 .3-.6 5.7-2 .3-4.4 3.3-4 4.7-1zM280.5 228.8l2.7 4 1.3 4.4 0 2.6-6.7 0-3.6 1.4-3.7 2.3-3.3 3.7-1.4 0-.3-5.4-2-5 3-6 4-3 5-.3zM65.2 217.5l2.3-1.3 1.3 1 7 9.6 5.4-1.6 2.3 3.3-.7 .7-4 .6-2.6 2.4-2 3.3-4-1.7-2.7 .7-.3-.3 1.3-.7 .3-9.7 2-3-2.3-2-3-.6zM316.8 217.2l2 3.3 1 3.7-.3 3-.7 .6-2-.6-4 0-3.6 1.3-4 2.3-3.4 3.4 0-6-2-4.4 0-1.3 3.4-5.3 2.3-1.7 6-.3zM245.2 215.2l2 5 0 2.3-2-.7-2.4 .4-14.6 5.3-4-1 3-1-.7-1.7 0-3.3 1.7-4 3.3-4 6.7-1.3 5 1.3zM97.5 207.8l1.7-.3 2.3 2.3 5 8 4.3-1.3 1.7 2.7-.3 1-1.7 0-3.7 1.6-3.3 4.4-3.7-1.4-2 0 .4-8.3 .6-2 2.7-3-3.3-2.3-2-.4zM281.8 202.5l1.7 4 0 2.7-3 .3-.7 .7-15.3 5-4-1 4.7-2-1.4-3 0-1.7 1.4-3 3.3-4 6.3-1.3 5 1.6zM316.5 190.8l1.7 4.4-.4 2.3-16.6 5.3-3-.3-1-.7 3.6-1.3-1.6-5.3 1-2.4 3.6-4 4-1 3 .4zM86.8 198.8l-.6 .7-2.4 0-2.3 1-2.3 2-2 3.3-4.4-1.6-15.3 4.3-1-.3 .3-.7 14-4 .4-9.7 3-4-2-2-4.7-2 3-1.3 3 3 5.3 8.3 5.4-1.3zM117.2 190.2l-.7 .6-4.7 1-2.3 2-2 3-3.7-1.3-14 4-2-.3 2.7-1.4 11.3-3-.3-5.3 .7-4 3.6-5-3.6-2.7-2.4-.6 3.4-1.4 3.3 3.7 3.7 7 1.6 .3 3-1zM226.2 164.5l-.4 .7-4.3 0-14.3 4-.7 .6-3.3-1 .3-.6 8.3-2.4 3.7-3.6 7-.7-1-1.7-5.7-3.6-2-.4 1-.6 7.4 1.3 1.6 2.3zM90.2 166.2l-.7 1-2.3 0-3.4 1.6-3.6 4.7-3.4-1.7-2 0-14.6 4-2.4-.6 3-1.4 12.7-3 .3-10.3 3.7-4.7-2-2.6-5.3-2.4 3-1.6 3.3 3.3 5.3 9.3 5.4-1.3zM263.8 152.2l-.3 1.6-4.3 .7-14.4 4.3-3-.3-1-.7 7.7-2.3 4-3.7 7 0 0-2.6-2.3-2-4.4-1.7 0-.7 3 0 5.4 2 1 1zM122.2 158.5l-3 .3-3 1.4-4.4 4.6-3-1.3-1.6 0-13.4 3.7-2.3 0-1-.7 15.3-4-.3-6.7 .7-3 1.6-2.6 3.4-2.7-1.7-2.3-3.7-2-1.6-.4 .6-.6 3.4-.7 3.3 4.3 3.7 7.7 4-1zM298.5 138.5l1 2.7 0 1.6-1 1-15 4-5-.6 4.7-1.7 1.3-2.7 5-6.3 0-1.3 2.7 0 5.3 2zM140.8 134.2l2.4 2.6 3.6 8.4 6-1 1.4-1.4-.7 4.4 2 .3 1.3-6.3 .7-1 3.3 5.6 2.4 8.7 .3 8-2 5 1.3 0 1-1 0-2.7 2-4.3 1-1 4.4-1.3 2-1.4 .3-3.3 4.3-6 3.4-1.3 3.6 0 1.4 .6 1.6-.3 1.4 1.3-4.4 8.7-9 2-3 1.3 2 2.7-3.6 18.7 2.3-4 3-3 5-1 1.3 .3 1-11.7 1.7-2.3 1.3-.3 1.4 1-.4 4.3-1.3 5 0 3 1.7 6.7 2.3 1.3 1.7 4.7 0 1.6 5-1 1 5 4 7.7 1.3-5 3.3-5 2.4-2.3 3-1 4-.4 4 .7 1.3 1 2.7 5 2 6.3-.7 1.4-4.3 0-5 1.6-3.4 2.4-3.6 4.6-2.4 5.4-.3 4 3-.4 .7 .7 0 2-3.7 12.7 2.7 3 2.6 1.3 2.4 0 3.3-1.3 1 .6 0 4 1.3 6.4 1.7 4.3 2.3 3.7 1.4-3.7 3-5 3.3-3 2.7-.7 7.6 .7 2.4 2.7 3 6.6 0 2.7-6-.3-4 1.3-4.7 3.7-2.3 3-2 4-1 5.6 4 .4 .3 2-4 12 5.3 4 3.4 0 1.6-1 2 .3-.3 3.7 1.3 7.3 2 4.7 2 2.6 2-4.6 2.7-3.7 3.3-2.7 5-.6 4.7 1 2 2 3.3 6.6 0 2-1 .4-1.3-1-3.7-.4-4.3 1.4-3.3 2-2.7 2.6-3 5-1.3 6.7 5 0 .3 1.3-4.7 11.7 5 4.3 3.4 .4 2.3-1.4 1.7 .7-.4 6 1 4 2 5 2 3 2.4-4.7 4.3-5 5.3-1.3 5.4 1 2.3 2.3 3 5.7 0 1.7-.7 .6-2.6-2-3.7 0 0-.6 3-1.4 .3-.6-.6-.7-3 0-4 1.7-2.7 2-3.7 4.6-3.3 .4-12.3 6-4.4 0-2.3 1.6-.7 1 5.4 14 4.6-4.6 5-1.4 3.4 .4 .6-3 1.4-2.4 3 .7 1.6-.7 .7 .7-4.7 9.7-.6 2.6-2.4 0 1.7-1-.3-2.6-2.4 0-4.6 3-3.4 4.6-3.6 .4-11.7 6 4.3 4.6-6.6 14-3.7-6.3-1.3-6.3 .6-4 3.7-3.4-.3-.6 1.3-.7 .3-4.3-2.3-6.4-5.7-3.3-3-.7-12.3 5.7-2.3 .3-.7-.6 5.3-2.7-2.6-.7 1.3-1.6-.7-5.4-1.6-4-4.4-2.6-2.6-.7-1.4-2.3 .4-6 1.6-2.7 4-4-1-2.3-3.3-3-3 1-3-.4 1-.6 0-3.7-1.7-5.3-1-1.7-5.3-3-3.3-.3-11.7 5-2.7-.4 4.7-2.6-1-6.7-2-3.7-7.3-3.6-.7-3.7 .3-3.3 5.4-8.4-3.7-4.3-5 .7-.3-4.4-2.4-6.6-4.6-3-3-.7-.7-1 0-7 2-4 3-4 0-1-3.3-4-5 .7-.7-5-2.3-6-3-2.4-5.4-2 0-8 5-9-3.6-4.3-2.7 .7-2.7-.4 0-2.6-1.3-5.4-2.3-3.6-4.7-2.7-3.7 0 1-.7-.3-7.3 3-6.7-3.7-1.6 3.4-1 3.6 4.3 2.4 5 1.6 .3 4.4-1.3 1.3-1.3 .7-5.7-1-5-2.4-5-6.3-3.3-13 3.6-2.3-.3 13.3-4 0-8.7 3.3-6.6-2-1.7-1.3 0 0-1 3.3-.3 3 3.6 3 6.7 6-1.3 2-3.7 0-4.7-1.3-6-1.7-3.6-5.3-3.4-2.3-.3-13.4 3.7-2.6-.7 14.6-4-.3-7.7 4-9 0-1-2-1.3-1 0-.7-.7zM184.8 128.2l2.7-2.7 1 .7 2.7-1.4 6.6 .4 3.4 5 2.6 8 0 1.6 1.7 0 17-4.6 2 .6 .3 .7-18.6 5-4-.7-1.7-7.6-2.7-4-5.3-2-6.7 1.6zM96.8 119.8l.7-.6 4.3-.7 3 3.7 3.4 7-6.7 1.6-.3-1 1-1 3.6-.6 .7-.7-3.7-5.3-3.6-2zM225.8 118.2l2.7-2.7 6-.7 4.7 1.4 2.6 3.3 2 7 0 3 3-.3 12.7-3.7 1.7 0 1.3 1-2 1-14.3 3.7-4.4-.7-2.3-7 0-2.7-2-2.3-2.7-1.7-.6 0-1.4 2-1.6-.6-5 .6zM203.8 105.2l-2.3 0-11.3 3-5 .6-1 .7-2.4 0-2-1 3.7-1.7 3 0 8.7-2.6 6 .3-1-2-3-2.7-3.7-2-1.7 0 0-.6 4.4 0 4 1 2 2.6zM162.5 96.2l0 1.3-1.3 1-11 2.3 2 3.4-3.4 18.6 0 2 .7 .4 .3 1.3-.3 .3-1-.6-1 4-4.3-7.4-1.7-6.3-.7-5.3 1.4-8 2.6-3 4.4-1 .6-.7zM167.2 90.5l2 2.7 1.6 4.6 2.4 13.4-.4 3.6-1.3 4-1.3 2-2.4 .4-.3 .6 2 4.4 1 4 4-.7 .3-1.3-1-3.7 0-3.3-.6-1 .6-.7 0-2.7 .7 0 4.3 20-.3 .4-1-1-2.3-4.7-9.4 0-5.3 2.7-2.7 2.6-3 4.7 .4-5.7-1-6 .6-.6 11-2.4 1-.6 0-2.7-1.3-2.3-4-3.4-3-.6-1-1 1-.7 1.7 0 1.3-14.7 1-2 2.7-.3 1.3-7.7zM243.2 95.5l-1.4 .7-17.6 4-4-1 14.3-4 5-.4 0-1.3-2.3-2.3-2.7-1.4-1-1 .3-.3 2.7 0 4 1.3 1 1zM134.2 81.5l2.3 3.3 2.3 5.4 1.7 6.6 0 10-1.7 5-2.3 .7 3.7 9.3-.7 .7-4 0 .7-1.3 2.3-1-2-5-2.3-3-1.4-.4-2-2-4-2.3 2.4-.7 .3-.6-.3-4.4 1.3-11.3-10.7 2.3 1.4 2 0 2.7-2.7 18.7 .3 1.3-1 4-4.6-8.3-2-10 1-8 2-2.7 6-2 4.3-.3 6.3-1.7 .7 .3 0 1 1 .4 1.3-7-1.3 .6-3-1.3 .7-.7zM280.2 85.5l-.4 2-16.3 3.7-4-1 8.7-2.4 3.6-6-1-1.3 2.4-.3 4.6 1.6zM203.5 77.8l-18.3 4-2 0-2.4-1 18.4-4.3 3 .3zM104.5 74.5l4.3 8.3 1.7 6.4 .3 9.3-1.3 5-1.7 1 1.7 4-.7 0-2.6-3.7-1.7-.6-11 2.3-1.3-.3 0-1 2-1.4 7.6-1.6-1-1.4-2-1 2-1.6-.3-4 1-10.4-9 1.4-1 .6 1.3 1.7-1.6 18 .3 3-1 4.7-1.7-2-1.6-4-1.7-1 .7-1.7-2.4-8.3 0-5 .7-3 1-2 2.3-1.7 7.7-2 1 .3 4.3-1 2 .4 1-5.7-1.3-.3-.3-.7zM170.5 70.8l-17.7 3.7-4.3-.7 .3-.6 12-2 5.7-1.7 2.3 .3zM243.2 69.5l-15.7 3.7-3.7 0-2-.7 .7-.7 8.3-1.3 7-2 3 0zM140.2 64.2l-.7 .6-16.7 3-4.3-.6 .7-.7 11-1.7 6.6-1.6zM209.5 63.2l-15.7 3.3-3.3 0-1.7-.7 2-1 7.4-1 7.3-2 2.7 .4zM111.8 58.2l-.3 .6-4.3 .4-12.7 2.6-3.3-.6 .3-.7 16-3zM178.5 57.2l-16.7 3.3-3.6-1 15.3-3.3 3.7 0zM150.2 51.5l-16.7 3.3-2.7-.3-.6-.7 16-3.3z"/><path fill="#041934" d="M199.5 438.5l1.3 1.7-2.6 4.6-1.4-.3-3.3 1-9 5 3.3 3.7-2 5.6 2.7-2 1.3-2 3.4 2 .6-4.3 1-2 2.7 3 1-1.3 2 2.6 2 4.4 1 5.3-.3 2.3 2-1.6 4.6-2.4-.3-4 4-2.6-1-1.7-1-4.3 .7-3.4-3 1-3-1.3-4-4-.4-4.3-.6-.7zM112.8 384.2l-2.3 2-1 2 0 2.3 3.7 6.7 1.6 7.3 7-4 0-4.7-2.6-6.6-.7-4-2.3 1zM339.5 223.5l-4.3-1-14.4 5.3-8.6-.3-3 1-4 2.3-3.7 4-3 .7-2.3 1.3-10.7 3.7-8.3-.3-3 1-3.7 2.3-3.7 4-2.3 .3-2.3 1.4-13.4 4.6-1.3-.3-1.3 .7-.7-.7-4.7 0-3.6 1-3.4 2.3-3.6 4.4-1.7 3.6-.3 2.7 1 0 2.3 2 .7-.3 2.3-5.4 2.3 3.4 2 4.6 1.4 5.7 0 5.3-1.4 5 3-4.6 6.4-3-1.4-3 .4-4 1.6-3.7 3-3.3 4.4-1.7 3.6 0 1.7-.7 4 5.4 2.3 5.6 0 1-1.3 1.4-1.3 0-15 6 2.6 4-4.6 13 3-3.7 9.3-3 5 6 2.3 5 .4 2-1.4 1-1-1-4.3-.3-4 1-3.3 2-3.7 4-2 4-.3 3.3 1.6 .3 2.4 1.7 3-5 2 2.7 2 4.3 1.3 5 .3 5-1.3 4.3 .3 .7 2.4-3.3 6.3-3-2-5 .7-4.4 2-3.6 2.3-2.4 2.3-1 7-1 4.4 5.4 1.6 3.6 .4 2.4-2 2.6-15 6.4 0 .6 3.3 3.7-5 11.3 2.7-3 5.6-2 4-.3 4.7 5.7 2 4 .3 2-1.3 .6-1.7-1.6-5.3 .3 0-1 4.3-2-.3-.7-3.7 0-3.6 1.4-2.7 2-4 5-2 .3-12.7 6 3.7 4.7-4.3 9.6 2.3-2.6 6.7-2 .6-.7 1.7 .7 .7-5 1-1.7 3.6 1.7 1.4 0 3-4 2 2.6 2.6 6.7 .7 3-.7 7-.6 1.3-2 1.4-2.4 .3-2.6-.7-4.7-3.6-3.3 0 2-1.4 0-2-.7-1-3.7 1.4-2.6 2-3.4 5-2.6 .3-11.7 6 3.7 4-6.4 13.7 0 1 2 .3 .4 .7-11.7 6 3.7 4.3-3.7 8.7-1.7 2.3 0 1 2 1-11 6 3.4 4-2.7 6.7 5.3-4.4 3.4 2 .6-1.6 0-2.7 1-1.7 3.4 2.7 2-2 4 7.3 1 6.7-.4 1.7-1.6 2-2.4 0-2.3-1-4.7-4.7 0-1-1-.3 .7-.7 0-2.3-1.3-1-2.7-.4 .7 1-2.7 5-3 0-10.7 5.7 3.7 4-2.3 5.7 4.6-3.7 3.4 2 1.3-5.7 .7 0 2.6 2.7 1.7-1.3 4 7.6 .7 3-.4 4 1.4-.3 5.6-3.3-1-2.7 0-3 3.4-2-1-2.3-.4-3.4 5.4-3.6 2 1 6.6 7.3 1 0 13-7.3-1.6-4.7 2.6-2-1.3-5 2.7-2.7 4-1.6 1.6 .3 6.7 7.7 12.7-7-1.7-5 2-1.4-1.3-2.6 0-1.7 2-2.7 6.3-2.3 4 3.7 2.3 4 1 0 6.4-3.7 1-2 0-4.7-1-3.3-1.4-2.3-7-4-1-3.4 3-4 6.4-2 3.3 2.7 3 4.7 0 1 8-4.4 1-4.6-1-5-2-3.4-6.3-3.6-1.4-3.4 1.4-3.3 1.6-2 2-1 6.7-1 3.7 4.3 1.3 2.7 0 1.3 1 0 5.7-3 1.6-1.6 1-2.4 0-4.3-2-6.3-6.3-3.7-2-4.3 0-1.4 1.7-3.6 1.3-1.7 3.7-1.7 6-.3 3.6 4 1.4 3 0 1.7 6.6-3 2-1.7 1-2.7-.3-7.3-1.7-4.3-4.3-2.7-.7-1-1-3.7-1.6-2.3 0-2 1-2.3 2-2.7 2.3-1.3 2.3-.7 7 .3 3.4 5 1 4 6-3 2.3-2 1.3-3.3 0-5.7-.6-3-1.7-3.6-7.7-4.4 .7-1 0-3-3-7 1.7-3.3 9.6-8.3-2-3-3.3-2.7-3 .7-8 0 1-2.4 .3-3.6-1.3-7-2-3.4-2.7-2-5.3-2.3 1.3-1.7-.3-3.3-2.3-5.3 .3-2.4 2.3-3.3 8.4-7.7-2-3-3.4-2.6-2.6 .6-8-.3 .6-2 0-5.7-.6-3.6-1.7-4zM250.8 445.8l1.4-1 2.6-.6 5 4.6 1 1.7-.3 .3-4.3-3.6-5-.7zM280.8 430.2l4-1.7 4 3.7 3 5.3-.6 .3-2.4-4-3-2.3zM232.5 432.8l2.7-1.3 1-1.3 3.3 1.6 .7-5 .6-1 3.7 2.4 .7 0 2-2.4 2 2.7 2 4.7 1 6.3-.7 3.7-1.7 1.3-1.6 .3-3.4-1.3-5-5-1-.3 1-1-.3-2.7-.7-.7-5-1-.3 1zM262.8 422.5l5-2 4 3.7 3.4 4.6 .3 1.4-.7 .3-1.6-3-4-3.7-6-.6zM294.5 406.5l4.7-1.7 4 4 2.6 4.7 0 1-1 .3-2.6-4.6-3-2.4-1.4 .4-.3-.7zM253.5 400.2l3.3 2 1 0 2.7-3 1.7 2.3 2.3 5 1 5.3-.3 4.7-1 2-2 1-4-.7-2.7-1.6-2.7-3-2.3 0 1.7-1.4-.7-3.6-6.3-1.7 1.3-1 2-.3 .7-1 2.6 1.3 .7-5.3zM276.8 396.5l2.4-1.3 3.3-.7 4.3 4.3 2.7 4.4 .3 2-.6 .3-1-1-2-4-2.4-2-1 0-2-1.3-3.6 0zM308.8 380.5l2-1 4.7-.3 3.7 4 2.6 5.3-1.6 1-1.7-1.7-2-4.3-4.3 0-.4-.3 2-1 0-.7zM305.8 376.5l-1.3 .7-1-1-2.3-4.7-3.7 0-.3-.3 2.3-1.7-3-1.3-2 .3-3.7 2.3-3.3 4.7-1.3-1 0-1 2-3.7 1.6-1.6 4.7-2 2.7 0 1.6-.7 4.7 5 2 4zM339.2 360.2l-1 1-1.7-.4-3.3-4.6-4.7 .3-.3-.3 4-2.4-.7-.6-5.3 .3-5 2.7-.7-.7 1.3-2 2.7-2 2.7-1 6-.3 2 1.6 2 3zM322.8 341.8l-2 .7-2-1.3-5 .3-.3-.3 1-1 3.3-1.4-6 0-3.6 1.7-4.4 4-1.6-2 0-2.7 1.3-3.3 3-3.7 6.7-2 3.6 0 3.7 4.7zM335.8 323.8l1.7-3.6 2.7-2.7 4.3-1.3 6 0 2.3 2.3 2 4 .4 4-1 1-1 0-1.7-1.3-5.7 .3-.3-.3 3-1.7-1.3-.3-4 .3-6 3-1.4-2zM316.8 302.2l2.4 3.3 2 4.7 0 2-2 2.6-15.7 6.7-7-.3 7.3-3.7-2.3-5.3 0-2 2.3-5 2-2 3.7-1.4zM353.2 295.2l-.7 5-14.7 6.3-7-.3 1-1 5.4-2.4-2.7-6.3 0-1.7 2-3.6 2-2 4.7-1.4 6.3 .4zM298.2 279.5l4 5.3 1.6 4.4 0 2 1 .6-1.6 .7-2.4-1-6.6 .7-5 2.6-3 3-3-7 0-1.6 2-4.4 3.6-3.6 4.7-1.4zM333.8 266.8l3 4.7 1 5.7 .7 .6-1.7 .7-2.3-.7-6.3 .4-2.7 1-4.7 3.3-1-4-1.6-3 0-1.3 1.6-3.7 3-3 4.4-1.3zM299.2 252.2l3.6 7.3 .4 2.3-1.4 1.4-16.3 6.3-8-.3 7.3-3.4-2-5.3 2.4-5.3 2.6-2.7 4.7-1.3 5.7 0zM333.2 239.8l3 6.4-.4 4-15 5.6-7-.6 5.4-2.7-2-6.7 1.6-3.3 2.7-2.7 5.3-1.3 4.4 0zM43.8 218.2l-7.3 2 1.3 1.6-.3 12.4 .7-2 3.3-4 0-2.4 2 .4 .7-6.4zM45.2 186.5l-7.4 2 1 1.7-.3 13.6 1.3-3.3 3-3 .7-1.3-.3-1.7 1.6 .3zM344.5 196.2l-1.7-2.7-3-2.3-10.3 0 0-6.7-.7-3.7-2-5.3-5.3-3.7-3.7-.6-14.3 4.6-9.7-.3-5.3 2.3-2.3 1.7-1.7 2.3-17.3 5.4-8.7-.7-4.7 1.7-5.6 5.3-7 1.3-.7 .7-9.7 3-11 0-3 1-4 2.7-3 3.6-2 4.4-.3 2.3 2.7 1.7 2.6-6.4 2.4 3.4 2.3 5.6 1.3 6.4 0 5-1.3 5.6 .7 0 2.3-5.6 3.3-2 3.4-1-.7-1.4 0-3.6 1.3-3.4 2.4-3.3 3-2 8.3-1.7 5 8 1 4.4-4 .6-4.3 2-9.7 3 2 3.7-4.7 15 2-3 2.4-2 9-2.7 4.3 5.7 3 8 1.3 .3 3-1.6 2.7-.4 1-1 2.3-.6 .7 .3 1-1 6.3-2.3-.3-4.4-2-5 1-3 2.3-3.6 4-2.7 2-.7 4.4 .4 2-.7 2.3 2.7 1.7 3.3 1.6 7 7.7-3 .7 .3 1-1 4.3-1 3.3-1.6 0-5-2-4.4 0-1.3 2.4-4.3 3-2.7 3.3-1 7.3 .7 1.7 2 2.3 6.6 0 2.7 15.4-5.3 1-1.4 0-3.6-2.4-6.7 3-4.7 6.4-6.3zM279.8 198.8l3.7 7 .7 2.7-.7 1.3-17 5.7-7.3-1 6-2.3-1.4-3 0-2 4-6.4 2.4-1.3 4.3-1 4.3-.3zM315.5 188.5l3 7-.3 2.7-15 5-7.7-.7 5.3-2.3-1.6-5 1.3-3 3-3.4 4.3-1.3 5.7 0zM184.5 156.2l-4.7 1.6-5.3 1-.7 .7 1.7 2.3-2.7 10-1 7 2-3.3 2.4-2.3 6.3-2.4zM46.8 152.2l-7.6 1.6 1 1.7-.4 13.7 2-3.4 3-3 .4-2.3 1-.3zM48.2 114.2l-7.7 1.3 1 1.7-.7 16.6 1-3 5-5.6 .4-2.4 .6-.3zM92.5 86.2l.7 1.3 0 2.3-1.4 8.4 0 10.3-1.3 5-3.7-6.3-1.6-.7 .6-2-1.3-7-1-1.7 0-4.3-1 3.7 .3 .6-1.3 1 2 4-.3 .7-3-3.7-11 2-1 .7-1.7 0-.7-1.3 0 5.3-.6 1.3-3.7-6-3 0-3 1.4-2.3 2.3-1.7 3.3-1.7-.6 3.7 7 1.7 5.6 1 6.7-1 6.7 1.6 2.6 .4-1-1.4-3 .4-5 1.3-3.3 3.7-1.7 11.3-2.3 .7-1 .3-4 3 5 2.3 6.7 1 11-.6 2 .3 1-1 .6 .7 1.7-.4 .7-1.6-2-2.4 0-2.3-1.7-8 1.3-.3-.6 1.6-2.4 4-1-1-.6-2 1.3-.3-.7 3.3-3 .7-1.3 1.3-10-.6-.3-8 2 1 1.3-1 22-.7 .7-4.3-7.7-1.7 0-3 1.3-2.7 2.7-1.6 3-1-.3 3.3 6.6 1.7 5.4 1 5.6-.7 6 3.3 5.4-5 1.3-2.6 2.7-1.4 3-1 .6 4.4 10 1 5.7-.4 4.7 3 5-2 0-4 2-2 2.6-.6 2-1 .7 4.3 9.3 1 5-.3 4.4 2.3 3.6-4.3 1.4-2.4 2.6-1 2 .4 1.4-1.4 .3 3.7 7.3 1.7 7.7 0-1 1.3-1.3 7.3-2.7 1-5.7 3.7-4.3 .3-2 4.4 3.7 5 6.3 0 1.7-.7 1-5-1-12.3 4 1.3 1.6-.3 10.4 4-5 0-2 3.3 2.6 7 8.4-.3 .6-3.4 .7-2 1.3-2 3 0 2-1 .4 3.4 6 2 7 0 2.3 .3-1.3 1.3-1.4 6.7-2.6 .3-5 1.7-3 2-1.7 1-2.7 6 5.7 3.3 4.3-1 2.7-5.3-.7-11 4 0 1 1.3 1.4-.6 9.3 3-3.3 .6-1.4-.3-1.3 .7-.3 1 .3 8.6 9.3-.3 1-1-.3-2.3 .7-2.4 1.6-1.3 2-.7 3.4 3 5.6 2 7 0 2 1.4-2 4-1.3 2.6-1.7 .4-6 1.3-2.3 2.3-2 .7-2.3 4.7 4 4.6 5.6-1.3 3.4-4-1-11.7 4.6 1.7 2.4-1 9 3.7-4.7-.4-1.3 .7-.4 1 .4 8.3 8.6-.3 .7-3.3 .3-1.7 1-2.7 4 .4 2.7 4 8.3 .6 6 1.4-2 6.3-3 .3-6.6 1.4-2.4 2-1.6 1-2.4 3.3 2.4 5 5.6-.3 .7-2.7 1-3.3 3.3-9 3.7 .3 1.3 1.3 1.4-1 7.6 3-3.3 0-1.3 .7-.7 2.7 1.7 0-2.4 1.6-5.6 4.4 6.6 2 7-.4 2.4 1.7-2 11.7-5-.4-5.4 .7-2.6-1-.7-1.7 0 1.7-2.7 2.7 1.7 5 5.7-3.4 5-11.6 5 2.3 3.3-1.7 7.3 3.7-4 .3-1.6 6 5-.6 .3-1-.7 0 .7 2.3 2.3 1-.6 1 1.3-3.7 .7-3.6 2.6-10.7 4.7 2.3 3.3-1.3 6.4 2.3-2.4 1-2.6 3 2 1-6 1-1.4 .7 1.4 1 .3 3 6 1.7 6-.4 2 2-2 10.4-5.3-.4-8-1.3-.7 1.3-2.7 2 1.4 7.4 8-1.4 1.6-2.6 1.7-3.4 1-8.6 4.3 2.3 3.4-1.7 6.6 2.7-2.6 1-2.4 3.3 2 .4-4 1.3-3 2.7 2.4 2.6 4.6 1.7 6-.3 3 2-2 4.6-2 .7-2.3 4.3-2-.3-7.7-1-.6 1.7-1.4 .3-1.3 1.3 .7 4 3.6 4 5-1.3 2.4-2 1.6-2.3 0-10.7 5.4 3 3.6-2 6 3.3-3 .7-1.3 3.3 2 .7-5 1-2 2 2.3 1-.3 3.3 5.7 1 3.3 .4 5 1.3-1.3 4.7-2 .6-3.4 3-1.6-2.3-6.4-.3-3.6 .6-2.7 3.4-2.3 9-4.4 4.3 0 0 1-10.7 5.4 3.4 4-2.7 6.6 5-4.6 3.3 2 .7-5.4 1-1.3 2.7 2.7 1.6-1.7 2 3 2 5 .7 7.3 2-1.6 11.7-5.4-2.4-3.6-1.3-4.4-1-1 .7-6.3 2-2 12-6 1.6 0-4-7.7 .4-1-.7-1.6-.3-5 1-3 3-2.4-.4-.6 2-1.7-.6-6-2-4-6.7-3.3-3.7 1-9.6 4.6-4.4-.3 .4-.7 5.3-2.3-2.7-.3 1.7-2-.7-5.4-1.6-4-4.4-2.6-2.6-.7-1-1-.7-4.7 1.3-4 5-6-4-4.3-3.6 1-3.4-.3 1.7-1 0-3.7-1.7-5.3-1-1.7-5.3-3-3.7 .3-10 4.4-2.3 .3-2-.7 5-2.6-1-6.7-2-3.7-4.7-2.6-2 0-1.3-3 .3-5.4 5.4-8-3.7-4-2.3 .7-3.4-.3 .4-4.4-2.4-6.6-4.6-3-3-.4-.7-1.3 0-7 5-9-3.3-3.7-6 0 .6-.6 0-1.7-1.3-5.7-1.3-2.6-4.4-3-3.3-.4-11 4-2-.3 1.3-1 7.4-2 3.6-1.7-.3-7 5.3-10-3.3-3.6-3.7 .3-2.6-.7 .6-.6 0-2-1.3-5.4-1.3-2.6-4.4-3-3-.4-11.3 3.7-2.3 0-.7-.7 13-4.3 0-7.3 2.7-6.4-1.4-1-2-.3-.3-.7 2.3-2.3 4 4.3 4 7 5.4-1.6 1.3-1 .7-2.4-.4-6-2.6-7-5-3-2.7 0-11 3.4-6.7-.4-3 1-2 1.7-2 3.3-3.6-1-13.7 4-2.3 0-1.4-.6-4.6 1-2.7 2-2 3.6-4-1.3-14.7 4.3-4-.6 .4-.7 2.6-.3 .7-.7 4-.7 8-2.6 .3-8 3-5.7-2.3-2-4.7-1.7 1.4-2 0-1.6 4.3 4 6.3 9.3 5.4-1.3 2.3 4.3 2 0 13-3.7 .3-8.6 2-3.7 2-1.7-1-1.3-2.3-1.3-3.3-1 2-1.7 .3-1.3 2 1.3 3.3 4.3 4 7 3.7-1.3 2.7 4.7 14.3-4-.7-3 .4-4 3.6-8.4-4.6-2 3-2.3 2 1.3 2.3 3.4 3.7 7.3 6.3-2 1.3-3-.3-7-2.7-7.3-2.6-2-3.7-1.4-13.7 3.7-6.6-.7-4.4 2.4-2.6 3.6-4-1-13.4 3.7-7.6-.3-3.4 1.6-3.3 4.7-4.3-1.3-13.4 3.6-4.6 0-1.4-1 16.4-4.3 0-7 .6-3 3.4-5-3.7-3.3-4.3-1.4 2-2 .3-2 5.3 6 4.7 8.4 1 .3 5-1.3 0 1.3 3 4.7 12.3-3 3-1.4-.6-2.3 .6-6 2-3.7 2.7-2 0-1-1.3-1.6-5.7-2.7 2.3-1.7 .7-1.3 5.3 6.7 3 6.6 1 .4 3.7-1 2.3 5.6 1.7 0 10.3-2.6 3-1.4-.6-3 .3-4.3 4-9.7-4.7-1.6 0-.7 3-1.3 .7-1 4 5 3.3 7.6 6-1 1.7-2 .7-4-.4-5-1-3.3 13-3.7-.3-2.6-1.7-2.4-.6 0-3-3-3-.3-1.4-1.3-1.3-.4 4.7-1.6 .3-8.7 1-6-10.3 2 1.3 2.7-2.7 12.6-.6 7.7 2.3 5.7-.7 .3-.6-.7-1.4-3.6-1.3 4.3-5-8.3-6.3 1.3-1.4-.3 .4-1.4 1.3-1.3 1.7-.3-.7-.7 .3-1.3-3-5.4-2.6-1-1.7-2-1.3 0-.4-1-3.6-1.3 2.3-1.7 1.3 0 .7-11 .7-2-.4-1.3-9 2 .7 1.3 0 2.4-1.3 6.3-1 12.3-1.4 6-4-7.6-2.6-1 1.6-.4-1.3-9-3.3 .4 2.3 5.6-.3 1-3.4-5.3-2.6-1-2.4 1-8.6 1.3-.7 .7-1-.7 .7-2 .6-.6 .7 .3 .3-1 7.4-1.3 0-1-3.4-1.4-.3-.6 2.7-1.4 .6-10.6 .7-2.4-1-.3zM231.2 413.8l-13.7 7-6 0 .3-.6 8.7-4 3.7-2.4 2-.6 3.6 0zM233.5 408.8l-12 6.4-6.7 .3 13.7-7 3.3-.3zM205.2 411.5l-2.7 4-2.7 0-8 4 4-.3 1 .6-.3 .7-12.7 6-5.3 0 .3-.7 8.4-3.6 .3-.7-3.7 0-.3-.7 7-3.3 0-1.3 1-1 3.3-1.7-.6-1.7 0-6.6 2.6-2 1.4 .3zM225.2 391.2l6 7.3-1.4 3.3-.6 .7-3.7 .7-6 3 2-.7 2.3 .3 1 .7-.6 .7-12 5.6-5 .4 0-1 7.6-3.7-4 0-.3-.7 7-3.3-.3-1.3 3.3-2-1-2.7 .3-5.3 4-2.4zM182.8 396.8l.4 1-.7 1-2.7 2-2 .4-6.3 3 2.3 .6 0 .7-12.3 5.7-5.7 0 8.7-4.4-2.7-.3 1-1 5.7-2.3 1.7-1.7 3.6-1.7-.6-1.3-.4-7.3 2-2 1.4 .3zM208.8 385.2l0 1-2.3 2.6-1.7 0-5.6 2.7 1.6 0 .7 .7-.3 .6-11.7 5.4-5.3 0 7-3.4-2-.3 0-1 6-2.7 1-1.3 3-1.3-1-3.4 .6-5.3 2.7-2 1.3 .3 2.4 2.4zM158.2 376.2l5.3 4.6-.7 .4-3-2-1.3 0 3.7 5.3-3 1.7-.7 1-5.3 2.3-.7-.7 0-5.6 1.3-2.7 3.7-3zM183.2 366.8l4 4.7 .6 1.7-3 2.3-4.6 2-.7-1.7 .3-4.6 1.4-2.7zM184.2 366.5l2-2 2 1.3 3 3.7-.4 .3-1.3-1.3zM166.8 360.8l-3 2.7-.6 3-11.7 5-1.7 .3-2.6-.6 7-3.7 4.6-1.7 0-6.6 .7-2-1.3-.7 2-2 1.3 .3zM194.8 351.5l-1.6 3.3-3.4 0-11 5-4.3-.3 10.7-5.3-.7-1.7 0-3.3 1.3-3.4-.6-.6 2.3-1.7 1.3 .3 2.4 2.4zM146.8 349.5l-5.3 4.7-16.7 7-1.6 .3-2.7-.7 12.7-5.6 1-1-.4-1.7 .7-4.7 1.7-2.6 3.3-3 1.3 .3zM173.2 338.5l0 .7-3.4 3-5 2.6-11.3 4.7-4.7-.3 2-1.4 8.7-3.3 1-1.3 0-4.7 .7-2 5.3-5 4 3.3zM122.2 327.8l5.3 5 3 4-3.3 .7-2.7 1.3-1.3 1.4-2 4-1.4-.7-2.6 0-.7-1.3 .3-7 2-3.7 2.7-2 0-1.3zM150.5 317.5l4 3.7 3.7 5-4 .6-3.4 1.7-2.6 4.3-3.4-.3-.6-1.3 .3-7 1.3-2.7zM132.8 316.2l-1.3 2.6-4-.3-13.3 5-2.7-.7 7.3-3.3 .7-6.3 1.7-2.7 1.6-1 1.7-2.3 4.7 4zM159.8 305.8l-1.3 2.4-2.7-.4-12 4.7-4.3-.3 6.7-3.4 0-4.6 2-3.7 2.6-1.7 1.4-1.6 3 2.3zM106.5 291.8l5.3 5 3.4 5-3.7 .7-2.3 1.3-1.7 2-1.3 3-1.7-.6-3 0-.7-1 .4-8 1.3-2.7 3.7-3.3zM135.5 282.2l4.3 4 3.7 5.6-5.3 1-2 1.4-2.7 4.3-1-.7-2.7 0-.6-1.3 0-6.7 1.3-3 4.7-3.6zM117.5 280.5l-1 2.7-4-.7-13 4.7-4-.7 7.7-3 .6-5.3 1.4-2.4 3.3-3 .7-1.3 4.3 3.7zM145.2 271.2l-1.4 2-2.6-.7-12 4.3-4.7-.3 6.7-3 0-3 1-3 2.6-3 2-1 .7-1.3 3 2.3zM99.5 265.2l-.3 1-2.4 0-3.3 1.6-3 4.7-5-.7-12 4.4-2-.4 2.3-1.3 11-3.3 .4-9 2-3.4 3-2.6 .3-1.4 4.3 4zM128.5 256.2l-.3 .6-2.4-.3-2.6 1-2.7 2.3-2 3-1-.6-3 0-12.3 4.3-1-.7 12.6-4.6 0-7.4 1-2.6 5.4-5 3.6 3zM101.8 244.5l-.3 1.3-1 .7-.7-.7-3-.3-13.3 4.3-4-.6 8-3 .3-3.7 1-2.3 4-4 .7-1.7 3 2.7zM130.2 235.5l-.7 1.3-3.3-.6-13 4.3-3.7-.7 6.7-3 0-2.6 1-2.7 2.6-3 2-1 .7-1.3 2.7 2zM112.8 219.5l-.3 .7-2 0-3.7 1.6-3.3 4.4-4.3-.7-11.4 3.7-7 0-2 .6-2.3 2-2 3.7-2.7-1-2.6 0-12.4 4-2 0-.6-.7 2.6-1.3 11.4-3.3 0-6.7 2.3-6-2.3-1.7-4-1.3 1-1.3 .3-2 4.3 4 6 8.3 5.7-1.3 2 3.3 14.3-4 .4-8.3 1-2.4 2-2.3-2-1.7-2.4-.3-1.3-1 1.3-1.3 .4-1.4 3.3 2.7 6 9 4.7-1.3zM99.8 115.8l5.4 6.7 3.6 7.3-.3 .7-1.7-.3-5 1.3-1.3-.3 .3-1.4 1.7-1.6 3.7-.7-1.7-1 .7-1-2.7-3.3-3-1.7-3-.7 3-2.6zM75.2 108.5l1.6 2-2 2.7-1 0-1.6-1 2.6-2.4zM58.2 84.5l-.7 3.3 .3 1.4-1 .3 0 .7 3.4 6-1-6-1-1.4zM74.5 77.8l-8.3 1.7 1 1.3-.7 11-.7 2 .4 4.7 1-1.3 8.6-1.7-1.3-2-3-1.3 2-1.7 1.3-11.3zM50.2 71.8l-8 1.4 .6 1.3-.6 19 .3-2 2-3.7 4.7-4.3zM51.8 61.8l3 5.4 2 5.6 1.7 11 .7-3.3 1.6-2.3 2.7-1 12-2 1-4-1.3-1.7 1.6-2 2.4 3.3 2.6 7 1.7 8 .3 5 .7-3 1.7-2.6 7.6-2.4 8.7-1.3 1.3-4.3-.3-.7-2.7-1 4.7-3.7 .7 1.4-1.7 1 4.3 8.3 2 8.7 0 8.6-1 3.4 1.4-.7 1-7.7 1.6-2.3 5.7-2 12-2.3 1.3-2 .7-2.7-.7 .7-4.3-2 5.7-3 .6 .6-.6 1 4.6 9 1.7 6.7 .3 9.3-.6 3.4-1 1.6 .3 .7-2.7 1 3.4 8.7 2-.7-1-8.7-1.4-.3 1-1 .4-4.3 2-4.7 1.3-1.3 4-1.4 15-3.3 1 .7 1-2 .7-5 .6-.4 2.7 4 1.7 4 2.3 10.7-.3 7.7-1.7 4.3 .3 1-4 1 2.7 8.3 3.7-.6-.7-7.7-1.7-1.3 1.4-1 .3-3.7 1.3-4 2.4-2.7 6-2 3.6-.3 8-2.3 5.7 0-.7-2-2.3-2-3.7-2-3.3-.7 7.7-2.7 2.6 3.4 3 7.3-.6 .7-5 .6-13.4 3.4 1 1.3 0 2-2.6 11-2.7 15.3-.7 .7-1-1-4-7.3-3.3-.7-5.7 0-4 1.7-4 3.6-2.3 3.7-1 3.3 1 1 1.7-5.6 2.6 4 2 4.6 2 10.4-.3 4.6-1.3 4 .6 .4 .7-.7 .3-3.3 1.7-3.7 2-1.7 5.3-1.6 .7-3.7 4-6 8.3-3.3 1.4 .3 2.3 4-2.7 4.3-1 3.7 2 1.3 2.4-7 2.3 3 2 4.4 2 8 .3 4.3-1.6 8-1 1.7-3.4 .6 1.4 5.7 4-1 .3-2.7-.3-3-.7-.6 .7-.7 1.6-6 2.4-2.3 11.3-3.4 3.7-3.6 2.3-1 4-.4-2.3-2.6-5.7-2.4 1-1 6-1.3 2 2.7 3.3 6.6 .4 2.4-15.7 4-3 1.3 1.3 1.3 .4 2-4.4 16.7 2.7-4 2.3-2 3.4-1.3 3.3 0 2-1.4 2.3 2.4 3.7 6.6 1.7 6.7 18.6-5.7 .4-3.6-2-5.4 1-4 3.6-5 4-2 7.4-.3 2 2 3.3 8 .3 4 12.4-3.7 5.6-2.3-.3-5-1.7-5.7 2.4-4.3 3.6-3 2.7-.7 7.3 .4 1.4 1.3 2.3 5.7 .7 3-.4 2.6 8.4-2 8.6-3.3 0-5.7-1.6-5.6 3.3-5.4 6.3-7.3 .7-1.7-1.7-2.6-2.6-2-2.7 .3-1-.7-6.7 0-.6-.6 0-6.7-2.7-8.3-3.7-3-3.6-1.4-16.7 4.4-3.7-1-4 0-3.3-7.7-5.3-3.3-5 0 .6-1.7 3.4-2.7 4.6-1 5.7 .4 2 3.3 1.7 4.7 .3 6.3 15.3-3.7 2.4-1.3 0-5.3-1.7-5.7 10.3-16-1.6-2.7-2-1.6-11.7-1.4 0-5.3-1.3-6-1.7-4-4-3-3.7-1-14.6 3.3-4.7-.3-1.3-.7-4.4 0-1.6-4.3-4.4-3.3-2.3-.7-16.7 3.3-5-1.3-2 .3-1.6-4-4.7-3.3-4-.3-14.7 3-4.3-1-1.7-3.4-4-3.3-2.3-.7-16.3 3-4.4-1-.6-.6 1-.4-1-2.3-3-2.3-2.7-1-16 2.6-4.3-1-4.7 0-3.3 1.7-3.7 4-4.3-1.3-16.4 3-4.3-1.4-4.3 .4-3 1.3-4.4 5-1.6-1.3-2.4-.7-12.3 2.3-1-.3-3 1-10-1-3.7 1.7-4.3 5.3zM264.2 152.5l-.4 2-15.3 4.3-3 .4-5.7-1 2.7-1.4 5.7-1.3 4.3-4 6.7-.7 0-1.3-1.7-2-3.3-1.7-2 0-1-.6 2.6-1 5.7-.4 2.3 3zM297.2 135.5l2.6 6.3-.3 1 1 .7-.3 .7-15.7 4.3-2-.7-3.7 0-.6-.6 3.3-1 2.3-1.7 .7-1.7 5-6.3-1.7-1.3 3.4-1 1.6 .6 3.7 0zM183.8 129.2l2.7-3.4 5-2 3.3 0 1.4-1.3 2.3 2.7 2.7 4.6 3 9.7 19.3-4.7 1-1 1.7 1 .6 1.7-1 1-3.3 .3-.7 .7-3 .3-.6 .7-9.7 2.3-7-.6 .3-2-1-2-.6-4.4-2.7-3.6-3.7-1.4-8.3 1.7-.7 .7-.6 0zM224.8 118.8l2.7-3 5-1.6 6-.4 1.7 2 2.6 6 1.4 7.4 17-4.4 3.3 2.4-16.3 4.3-7-.7-.4-.3 .7-1-1.3-2.3-1-6.7-2-2-2.7-1.7-1.7 2-2-.3-4.3 1.3-1.3 0zM243.8 96.2l-.3 .6-18 4-6-1.3 1.3-1 13.4-3.3 5-.4 .3-1-2-2.3-4.7-2.7-2.3-.3 2.3-1 4.7 0 1.3-.7 2.4 3zM166.2 88.2l0 1-1.7 2.6-6.3-2.3 6.3-3zM282.2 87.5l-15.7 4-7.3-1 1-1 7.6-1.7 4-6-1.6-1.3-2-.3 2.6-1 5 1 1.7-.4 1.7 2.7 1 4zM204.8 78.2l-.3 .6-5.3 .7-.7 .7-5.7 .6-.6 .7-1-.3-.7 .6-4 .7-6-1.3 1-1 17.3-3.7 4 .3zM172.2 71.2l-1 .6-17.7 3.4-6.7-1.4 .7-.6 18.7-3.7 5 .7zM244.5 69.8l-.3 .7-12.7 2.3-2.7 1-2.6 0-5.7-1.3 .7-.7 16.3-3.3 3.7 0zM141.5 64.8l-18 3.7-5.7-1.3 1.7-1 16.3-3 4.4 .3zM210.8 63.5l-.6 .7-14 2.3-.7 .7-4.7-.4-3.3-1 .7-.6 17-3.4 3.6 .4zM113.5 58.8l-1 .7-6.7 .7-1 .6-2.6 0-4.7 1.4-3 0-3.7-1 1-1 16.4-3 3.3 .3zM179.8 57.2l-.6 1-16.4 3-5-1.4 1-1 15.7-3 3.3 .4zM151.2 51.8l-.4 .7-16.3 3-4.7-1.3 1-1 14.7-2.7 4.7 .3z"/><path fill="#052246" d="M225.2 456.2l.3 .3-1.7 2.3 .4 2.4-.7 .6-3.3 .4-10 5.3-.4 .7 3.4 4 5 3.3 .6-5 1.7-3.3 3 4.3 1-.7 3.7 6.4 1.3 5.3 0 3 6.3-3.7-1.3-2.3 0-3 3.3-2-1.3-5.3 1.3-1.7-2.6-.3-3.7-2.4-2.7-3 0-1.3-1.3-.3 1-.7 0-2.3-1.3-1zM199.8 438.5l1 2.3-1 1 0 1.7-1.3 1.3-2.7 .4-10.3 5.3 0 .7 3 3.6 4.7 3 .3-4 1.3-4 1-.6 2 4 1 0 1.7 2.3 2 4.3 1 3.4 0 4 6.3-3.7-1-1.7 .7-3.6 .3 1 3.4-1.7-1.4-3 0-2.7-.6-.3 .6-3.3-1.3 .6-2.3 0-2.4-1.3-4-4.3 0-3.7-1-1zM112.5 384.5l-2 2.3 0 2 1 2.4-1 1 3 5.6 1.7 6.4 5.6-2.7-2-2.7 .7-.3 2 1.7 0-5-2.3-5.7-.4-4-3 .7zM158.8 379.5l3.7 4.7 2-1-3.3-3.4zM112.8 366.8l-8 3 0 1.4 1 1.3 5 3.7 1-6.7zM339.2 223.5l-3-.3-14.4 5.3-4.6-1-4.7 0-3.3 1-4 2.3-2.7 3.4 .7 .6-.4 .7-11.3 3.7-4.3 2-4.7-1-5 0-3.3 1-4.7 3.3-2.3 4-1.4 0-15.6 6-2.4-.7-1.6 .4-.7-.7-4.7 0-3.6 1-4.4 3.3-3 4.7-.3 2.3 2.7 3 2-4.3 3 4 1.6 4 1.4 5.7 .3 5.3-.7 3.3 2.4-3 6-2.6-1.4-3 0-3.4 1.7-4 3.3-4 4.4-2.3 2.6-2.3 3.7 3.3 3 4.3 2.3 6-.6 2.7-16 6.7 2 3-4.7 12 2.7-3 3.6-2.4 1.7-.3 1.7-2.7 3 2.7 3.3 4.3 2.3 4 1.4 4 16.6-7 1.4 .7-.4 1-16.3 6.7-1-.4-1.7 .7-1-1-2.6-.3-5.7 1-5.3 4-3 5.3 .3 1.7 3.3 3 2-4 2.7 3.3 3 8.7 0 4 .7 1-1 4.3 1.6-2.3 6.7-3-2-4.7 0-3 2-4.7 2.7-3 7.3-4.3 3.7 3.3 3.6 5.4 1.4 4 0 1.3-1.4 1.7 .4 1-15 7 2.6 3.3-4.3 10 1.3-1.7 5-2.6 1-1.7 1.4-.7 6.3 6.7 2.7 4.7 .6 2.3 16.4-7.7 1 .4-2.4 1.6-1 0-15 7.4-1.6-1.7-6.7-.3 4.7-2.4 .3-1-3.7 0-3.6 1.4-3.7 3-3 5-1 0-12.3 6 .3 1.3 2.3 2.7-4 8.3 4.4-3.3 2.6-3 3.7 2.6 .7-5 1.6-4.6 .7 0 3.3 3.6 1 0 2.4-3 2.3 3.4 2 4.6 1.3 6.4-1 5 .4 .6-2.7 2.4-2 .6-2.3-.3-4-2.3-2-2-3.4 0 2.4-1.4-.7-3-5 2.4-5 6.6-12.7 5.7-.3 .7 2.7 3 0 1.3-3 5.7 0 1.6-2.4 3.4-1 2.6 3.7 1 .3 .7-12.3 6 3 4.3-5.7 11.7 3.7 1-1.7 1.3-1 0-9.3 5 3.7 4.7 2.6 1.3 1.7 1.7 .7 0 .6-4.3 1.7-4 3 4 1.7-.7 2 2.7 2.3 5 .7 2.6 0 5 1.6-.6 6.7 6 2.3 3.3 13.7-7.3-1.7-4.4 .7-1.3 2.3-1.3-1.6-4.4 .6-1.3 2.7-2.3-.7-.4 1-1 3-1.3 .4 1 4.6 3.7 2.7 4 1.3 .6 12-6.6 .4-1-2-3.7 .3-1.3 .7 .3 1-.7-1.4-3.6 1-2 2.4-2-.7-.7 4.7-3 .3 1 4.7 4 3 4.7 7.3-4.4 .7-1.3 0-4.7-2-5.3-3.4-2.3-3-1-1-1-1-3.4 2.7-4 4.3-2 .7-1.3 1.7 .7 4 4 2.6 4.6 7.7-4.3 1-4.3-1-5-2-3.4-6.3-3.3-1.4-3.7 1.4-3.6 2.3-2.4 6-3 1.3 .7 3 3.3 2.4 3.7 .3 2 1 0 5.7-3 2-2 .6-1.7 0-4.3-2-6.3-6.3-3.7-2.3-5 2-4.7 2-2 8-3 3 3 2.6 4.4 .4 2.3 1 .3 6.3-3.3 1.3-1.3 1-2.4-.3-7.3-1.7-4.3-4.6-3-1.4-4.4-1.6-2.3-.4-1.7 1.4-3 3.6-3.6 8-2.7 3.7 4 1.7 3 .6 3.3 1 .4 6-3 2-2 .7-1.7 .3-6.7-2-6.3-3.6-2.7-4.4-1.6-12.3 6-1-.4 .3-.6 12-5.4 1.7-1.3-.7-5-2.3-4 0-1.3 4-5.4 7.3-5.6-2-3-2.6-2-2.4 .6-9.6-.6 1.3-2.4 .3-5-1.3-5.6-2-3.4-3.3-2.3-4-1-14.4 6-2.3 .3-2-1-4.7 0-3.6 1-5 3.7-.7-.3-.7-3.7-1.6-3 0-2 2-3.7 2.3-2.3 4.7-2 4.6-1.3 2 2 3.4 6 1 4.6 14.6-6 .7-.6 0-3.7-2.3-5.3 0-2 3-4.4 7.6-6.6-1.6-3.4-3-2-2 .7-4.7-1-4.7 0 1-2 0-5.7-.6-3.6-1.7-4zM280.5 427.5l2.3-1.3 .7 1.3 6 5.3 3 4.4-1.7 .6-2-3.6-2.6-2.4-6.7-1.6 2.3-1.7zM233.8 428.8l.7-.3 5 3.3 1-6.6 1.3-2.4 3 4 1 0 1.4-1.3 2.3 3.3 2 4.7 .7 2.7-.4 5.6 1.4 0 .3 1 6 5.4 3.3 5-.3 .3-2.7-3.3-4-3-2-.7-3.3 0-2.3 1.3-.4-.3 3.4-3.3-3.7 .6-3-1.3-4.3-4-.4-1-1.3-.3 1.3-1-.3-2.7-.7-.7-5-.6 .7 1-.7 .3-2-1.7 2.4-2.6zM293.2 406.5l3-1.7 1-1.6 5 4.3 2.3 3 1 2.7 1.3 .3 .4 .7-2 1-1.7-1.7-1.3-3.3-2.4-2-2.3 0-1-1-2.3 0zM254.2 396.8l3.3 4 1 0 2-2 2 3 2 4.4 1.3 6-.6 3.6 .3 1.4-.7 1 3.4 2.3 4.3 4.3 2.7 4.4 1.3 .6-1.3 1-1-.6-2-3.7-2.7-2.3-3-1-4 0-.7-.7 2.7-2 0-1.7-3.3 1-2-.3-4-2.3-2.7-3-2 .3-.3-.3 2-1.4-.4-3.3-2-1-6-.7 3-3 .4-1.6 4.6 3.3 0-3zM275.8 396.5l3-2 1.4-2 5.6 5 2.4 3 1.6 3.7 1 .3-1 1-1 0-3-5.3-2-1.7-2 .3-.3-.3 .7-.7-5.7-.6zM308.2 380.5l5.3-3.3 4.3 4 2.4 3.3 1 3 1.3 1-1.7 1.3-1-.3-1.6-2-1.7-4-5 .3-.3-.3 2.6-1.7-1.6-.6-3.7 0zM286.2 373.2l2-3.7 1.6-1.7 6-3 1-1.3 1.4 .7 4 4.3 2.3 3.3 1 3.4 1.3 1-1.6 1.3-1-.3-3-5.7-2-.3-2.7 .6-.3-.3 3-2-3-1.3-1.7 .3-3.7 2.3-2.6 3.7-.4 1.3-1.6-1.3zM320.2 355.8l2.6-3.6 8.7-4 4.7 5 1.6 2.6 .7 3.4 1.7 .6-2.4 1.7-3-2.3-1.3-2.7-3.7-.3-2.3 .6-.3-.3 5-2.7-1.4-.6-4.3 .3-3 1-3 2.3zM301.8 340.8l2.4-5.6 2-2.4 4.3-2.3 2.3-.3 1.7-1.7 5.3 5.7 3 7 14.7-7 1 .3-3.7 2.3-1 0-7.6 3.7-1 1-3.7 1.3-2-1.3-2-.3-5 .6-.3-.3 .6-.7 4.7-2-.3-.3-5 .3-2.7 1-2.7 1.7-2.6 3-2-2zM356.5 326.2l-2.7 1.6-2-1.3-6 0 0-1 2.4-1-.7-.3-4 .3-6.3 3-1.7-3 1.7-4 2.6-3 3.4-1.7 4.3-.6 1.7-1 4 4.6 1.6 3.4 .4 3zM314.2 299.2l3.6 4 2.7 4.6 .7 4.7-1 1.3 1 1-15.7 7-5-.6-4 .3-.3-.3 .6-.7 7-3-2.6-7 3-6 2-1.7zM347.5 285.8l2.7 2.7 2.6 5 0 5.7 1.7 1-14.7 6.6-5-.6-4.3 .3 0-.7 6.3-3-.6-3.3-2-4 2.6-5 2.7-2zM283.2 290.8l0-2 3-5.6 2-2 6.3-2.4 1.3-1.3 2 1 3.4 4.3 2 3.7 1 4.3 2.6-.6 12.7-5.7 1.3 1-.3 .7-15.7 6.3-2 .3-1.3-1-2.7-.3-5.6 1-4 2.3-3 3.4-1.4-4.4zM296.2 248.5l2.3 2.3 3.7 6.4 1 4-.4 1.3 .7 1-16.3 6.7-5-1-4.7 .3-.3-.3 .6-.7 7-2.7-2-4.6 0-1.4 2.7-5.3 4.3-3.3 3.7-1zM332.5 238.2l2.7 4.6 1 3 0 3 1.6 1.4-15 6-10.3-.7 6.7-3-2-5.3 0-1.7 2-3.7 2-2 4.3-2 3.7-.3 1.3-1zM43.8 218.8l-6.6 2 1 1.4-.7 10.6 2.7-3.6 0-3-1-2.4 1.3 0 3 2.4zM48.5 239.2l-2.3 2.6 .6 4.4-1 .3-2-1 1.7 2.3 2.3 5.7 1.4 6.7 0-1 1-1 7.6-3 .7-5 2.7-4-.4-4.4 .7 0 5 4.4 5.7 7.6 1 .4 .3 3.3-4.3-2-2 0-12.4 4.3 1 1.4-.6 9.6 2.3-3.3 0-2.7-1-1.6 .7-.7 8.3 7.3 4 5.4-.3 .6-3.7 1-2 1.7-.7 1.3 .7 4-2 0 3 6 1.7 6 0 2 1.3-2 4.7-1.6 .3-1 1.7 0 .6-5.4 2.7-4 .3-2.3-1-1.7 .4-.6 .6 0 5 4.3 6.7 8 0 3-3.7-1.3-2 0-12 4.3 1.7 2.7-1 2.3-.3 5.3 2.3-3.6-.3-2.4-1-1.3 .6-.3 5.7 4.3 6.7 8-3.7 .7-2.3 1.6-1 1.7 .6 4.3-.6 .4-1-.7 3 6 1.6 7.7 1-1.4 5-2 0-1.3 1.7 .7 .3-5.7 3-5 0-1.7-.6-1 .3-1 5.7 4 6 7 .3 4-3.3-1-2.4 0-11.3 4.4 1 2.3 6.3 4.7 6.4 7-4.4 1-2.3 2-.7 1.6 1 3.7-1.3 .3 4 8.7 .3 4.7 1-1.4 5-2 .4-1.3 1 .3 0-4.6 1.3-3.7 1.7-2 .3-2-1-2 1-.3 5.7 4.3 4.6 5.7-3 1.3-2.6 3.3 1.3 3.7-1 .7 4 8.3 .7 3-.4 2 1.4-1.3 5-2 0-1.7 .6 .7 1.7 0 4.3-2-.6-1 .6-.7 .4-6.7-3-.3 .3-4.3 5.7 4 4 4.6-1.7 3 0 2.7-3.7 1-9 4.3 2.7 3.4 5 3.3 2.3 2.3 0 1.4-1.6-1.4 1.6 2.4 1 .6-.3-1 .7-.3 1.3 2-3.3 .7-2.4 1.3-2.3 2.7-.7-.4-8.3 3.7-.3 .7 1 1.6 5.6 4.4 1-7 1.7-3 1.7 4-.7 .6 4 8.4 .7 3-.4 2 1.4-1.4 4.6-2 0-2 1.4 .4 4.6-2.4-1-1.6 1-.7 0-5.3-2.3-.7 0-4 5.7 3.7 6.3 7-.3 .3 3.3-1 4.7-2.7-2.7-.3 7-3.3 0-2.4 1.7 .7 3.3-1.7-1-2 .7-6-1-.6 .6-1.4-.3-2 1-.3 6 5 3.7 4.7 0 1-4 3.3-6 2.7 2 1-2.4 1.6-11 5-3.3-.6-3 .3-4.3 3-10 4.3-.7 .7 2.7 3.3 4.6 3 .7-6.3 1.3-3 .7-.3 1.3 4.3 3.4 6 1.6 7.3 5.7-3 0-1-1-1 .3-.6 1 .6 5-2.6-1.3-2 .3-.7 .4 .3 0-5-1.4-.6 .7-1.4-.3-2.3 1.3 0 6 4.7 4.7 5.6-1.4 2.4-2 1.6-12.6 5.7 2.6 3.7 5 3.3 .4-4.7 1-3 1.3-1.6 1.3 3.6 1.4 1 3 6 1 3.4 0 3.6 6.3-3-1.3-2.6 1 0 3.6-2.4-1.3-4-1-1-.3-5 .6-2.6 1-1 11.4-5.4 4-.3 2.3 1-11.3 5.7-.4 .6 2.4 3.7 3.3 1.7 2.3 2 .4-4.7 2-4.7 2.6 4 1-.6 2.4 3.6 2.3 6.4 0 5 12.7-6.4 1 0-2.7-4-1-3.3-1.3-1.3-.4-1.4 1-1.6 .4-4 1.6-1.7 12-6 2 0-3.3-6.3-.7-.4-6 3 3.4 .4 1 1-12 6.3-1.7 .7-7.3-.4 9-4.6-1.4-.7-4 .3-.3-.3 .7-.7 13.3-6.3 5.3 0-1-7 1.4-3.7 1.3-1.3 1.3-.3-.6-.7 2.6-2 0-3.3-1-3.7-1.6-3-6.4-3-12.6 5.7-6-.7 5.6-2.7-2.6-.6 2-1 .3-1-1-6.4-1.3-3-4.4-2.6-2.6-.4-1 1-2 0 2.3-1.3-1-2.3 0-4.4 2-4.3 4.3-4.7-3.3-3.6-8 0 2-1 0-3.7-2.7-7-3-2-4.3-.7-10.3 4.7-1.7 .3-4.3-.6 0-.7 5.3-2.3 0-2-1-4.7-1.3-3-5-3-2.4 0-11.3 4.7-2.7-.4 13.4-5.3-1-2.3 .6-5.7 5.4-7.7-3-3.3-3 .3-5-.6 2-1-.7-6-1.7-4-3.3-2.4-3-.6-10.3 4-4.7 0 13-5-.7-2.7 .4-4.3 5-9-.4-1.7-2-2-2.3 .3-5-1 1.3-.6 0-1.7-1.3-5.7-1.3-2.6-3-2.4-3.7-.6-11.3 4-6-.7-3.7 1.7-2 2-.7 2.6-4.3-.3-.7 .7-2.3 .3-9 3.3-3.7-.6-4.6 .6-3 3.4 0 3.3-3.4-1.3-2.3 0-.7 .6-2.3 .4-9 3.3-4.7-.3 1-1 13.7-4.4-.7-2 .7-.3 .3-6 3.4-5 0-4.7 6 5 5.6 7.7 1 0 12.7-4.3-.3-2.7 .6-5.3 1-2.4 3.4-4.3 0-2.7 6.3 6 4 6 13-4 0-7.6 5-9.7-2.7-3-2.6 .3-4.4-1 1-.6 0-2-1.3-5.4-1.3-2.6-3-2.4-2-.6-13.4 4-6-1-3.6 1.6-1.7 1.7-1 3-3.7-.7-13 4-3-.6-3.6 0-2 .6-2.7 2.4-.3 4-5.4-1.4-12.6 3.7-.7 .7-4.7-1zM205.2 411.2l0 1-2.4 3.3-2 .3-7 3.4 1.7-.4 2.3 1.4-1 1-12 5.6-6.6-.3 .3-.7 8.3-3.6 0-.7-3.6-.3 7.3-3.7 0-2.7 .7 .4 3.3-1.7-1-2.7 .3-6 1-1.6 0-1.7 1.4 .3 4 3.4zM223.2 389.5l5.3 5 2.3 3.3 .4 1.7-1.4 2.7-7.3 3.3 2.7 .7 .6 .6-.6 .7-12 5.7-6.4 0-.3-.4 .7-.6 6.6-3 .7-.7-4.3-.3 7.3-4-.7-1.7 3.4-1.3-1-3 0-3.7-.4 .3-.3-.6 1-.4 0-.6 2.3-2.4 0-1.3zM208.2 383.8l1 2-3 3.4-5 2 1.6 1.3-.6 .7-11.7 5.3-6.7-.3 7-3.4-2.3-.3 0-.7 6.7-3 .3-1.6 .7 .3 2.6-1.3-.6-2 0-4.7 1.6-5.7 2.7 1.7zM156.8 374.8l4.7 3.7 4.7 5.7-5 1-4.4 3.6-3 1 0 1.7-1.6 1-.4-.3 1-.7-1.3-2.3 .7-.4 .3-6 1.3-2.6 2-2 0-3zM184.5 363.2l6.3 5.3 2.7 4-4 .3-.3-.3 1.6-.7 .7-1-3.3-3-4.4-1 3.7 5 .3 1.4-4.6 4-3 1.3-1-2 .3-4.7 1.7-3.6 2.3-2.4zM166.8 360.5l0 .7-3.3 3.3 0 .7 1.3 .6-.6 1-13 5.4-4.4-1 6.4-3 .6-1.7 1.7 .7 3.3-1.7-.3-5.3 1-3-2-.7 .7-1.3 0-2.7 5.6 4.3zM194.8 351.5l0 1.3-1.3 2-2.7 .4-11 5-6-.7 11-5-.6-4 1.3-4.7-1.3-.3 1.6-2 0-1.7 2.4 1.4 3.6 3.6zM147.2 349.5l-4.4 3.7 0 3.6-1.3-.3-.7-.7 .4-.6-1 0-2.7 1.6-12.3 5-5-1 13-5.6 .6-1 0-5 1.4-3 2-2 .3-4 5.3 4zM173.5 338.8l-3.3 3-1 1.7 .6 1-.3 .3-1.3-1-13.7 6-6-.6 11.3-5 .7-6.4 1.3-2.6 3-3.4 0-2 5.4 4.4zM130.5 336.5l-.3 .7-4.4 1-2.6 2.3 0 4.3-3-1-2.4 0-11.6 5-3.4 0 13.7-5.6-1.3-2.7 .3-.3 1 .6 0-5 1-2.6 2.3-3 0-4 5.7 4.3zM158.2 326.2l-.4 .6-2-.3-4.6 2-2 3 .3 1.7-4-.4-11.7 5-2-.3 1.4-1 11.3-4.3-.7-1.4 0-4.6 1.4-4 3-3.7 .3-2.7 5.7 4.7zM133.2 316.5l-.4 3-1.3-.7-2.7 0-12.6 5-5.4-1 5.7-2.3 2.3-1.7 0-4 1-2.6 2.7-3.4 0-3.3 .7 0 5.6 5zM160.2 306.2l-1.4 2.3-2-.3-12.6 5-5.4-1 6.7-3 1-6.4 3.3-4 .7-3.3 6 5.3zM115.5 301.8l-3.7 .7-2.3 1.3-2 2.7 .7 2.3-.4 .7-3-1-2.3 0-13 5-2.7-.7 14-5.3-1.3-2.7 1.3 0 0-5 1.7-3.6 1.7-2 0-4 1.6 .6 5.7 5.4zM143.5 291.5l-.3 .7-4 .3-2.7 1.7-1.7 2.6 0 1.7-4-.3-12.3 4.6-2.7-.3 .4-.7 13-4.6-.7-2.7 .7-5 1.3-3 2.7-3.3 .3-2.7 6 5zM117.8 280.8l0 2.7-4.3-.7-12.7 4.7-6-1 8.4-3.3 .6-5.4 3.4-4.6 0-3.7 6 5zM145.2 271.2l0 1.3-.7 .7-3.3 0-11.7 4.3-5.7-1 7-3 1-5.7 3.4-4 .6-3.3 1 .3 4.7 4.7zM102.5 245.5l-.3 1.3-4.4-1-13 4.4-6-1 8.7-3.4 .3-4 3.7-5.6 0-3.4 6.3 5.7zM130.5 235.5l-.7 1.7-3.6-.4-12 4-5.7-1 7.3-3 .7-4.3 3.7-4.7 .6-3.3 .7 0 4 4zM141.5 193.5l-1.7-3-4.3-2.3-13.7 3.6-6.6-1-3 1-2 1.7-2 3.3-3.4-.3-13.6 4-3.4-1-3.6 0-1.7 .7-3 2.3-1 4-4.7-1.3-13.6 4-8-.7-4 2.7-.7 1.3 .7 3.7-1 .3-1.7-1 4.3 10 .7 8.3 2 0-1.7 1 1 1.7 1.7 1 14.3-4.3-1-2.4 1 0 .7-6.6 2-3.4-1.3-1.3-4.7-1.7-2 1.4-.3-.4 1.3-2-.3-4.6 6.3 5.3 6.3 8.7 5.7-1.4 1.3 2.7 1.7 .7 13.3-4.4-.6-2.3 .6-1.3 0-3.4 1-2.6 2-2.7-.6-1-4.4-1.7-1.6 1-.7-.3 1.7-2.7 0-3.3 2 1.3 4.3 4.7 5 7.7 5-1.4 0 1.4 1.7 2.3 13.3-4.3-.7-2.7 .4-3.7 3-7-4-1.6-1 .6-.7-.3 2-2.7 .3-2.3 5.7 5.7 4 7 6.3-1.7 1.4-2.7 0-3.3zM45.2 187.5l-6.7 1.7 .7 1.3-.7 12 3-4.3 .3-2.7-1.3-3 1-.3 3.3 2.6zM195.8 178.8l-5 1.4 1.7 5 3.7-1.4zM344.5 196.2l-3.3-4-3 0-6.4-1.4-2.6 .7 .3-7-.7-3.7-2-5.3-3-2.3-4.3-1.4-15 4.7-4.7-1-6 0-3 1-3.6 2.3-2 2 0 1.4-.7 .6-15.7 5-6-1.3-4.3 0-4.7 1.7-2.6 2-3.7 4.3-6.7 1.7-5 2-.6-.4-2.7 1.4-4 .3-2.7-1-6 0-3 1-4.3 3-3 4.3-.7 2 2.4 2.4 1-3.4 .6-.3 2.7 4 1.7 4 1.3 5 .7 6.7-1.4 6 1-2.7 2-2.7 3.4-2 3-.6-1-4.4 3-6.3 2.6-2.7 5.4-2.6 1.3-2.4 2 1.4 4.7 6.6 2 4.4 .6 3.3-2.3 1.3-1.3 0-13.7 5 1.3 2.7-2.3 6-2 7.7 2.7-3.4 6.6-3.6 .4-1.7 .6-.3 2.4 2 3.6 5 2.4 4.3 1 4 .6 .7 1.4 0 16.3-6.4 0-4-2-4.3 .3-2.3 1.7-3.4 2.7-3.3 8-3.7 1-1 4.6 5.7 2.4 5.3 .3 3.4 1 .6 11.3-4 5.4-2.6-.4-4-2-4.4 0-2 2.4-4 2-2 9.3-3.6 1 .3 4 6.7 1.7 7 15.3-5.7 .7-1 0-3.3-2.4-7 2-3.4 7-7zM277.5 195.8l4 5.4 2 4.3 .7 3.7 1 1-17.4 6-6-1.4-3 .4-.3-.4 1.3-1 5.4-1.6-1.4-3 0-2.4 2.4-4.3 4.3-3.7 5-1.3 1.3-1.7zM320.8 198.2l-.6 .6-15.7 5-6.3-1.3-3 0 5.6-2.3-1.6-4 0-1.7 4-5.7 5.3-2.3 3.7-.3 1-1 1.6 1.6 2.4 4.4 1.3 5.6zM183.8 157.5l-9 2.7 .7 2-3.3 16 1.3-2.7 7.7-6.7 .3-2 1.7 1 .3-7 .7-2zM146.2 159.8l-1.7-1.6-3.3-1.7-8.4 1.7-6.3 2-3-1-4-.4-4.3 2.4-2.7 3.6-4-.3-13.3 3.7-4-1-4.7 .3-4.3 3.3-.7 3-5.3-1-14 4-4.7-1.3-2.7 0-1.6 .7-3.7 3 0 4.3-.3 .3-2.4-1 2 3.4 2.7 7.3 .7 3.3-.4 5.4 1 .3 8.4-2.3 .3-1-1-1.7 .3-.7 1.4 1 0 2.7-6.4 2.3-3.3 .4-.3 .6 2.6 3.7 15.4-4.3-.7-2.4 1-1.3 .3-5.3 2.7-4.7-1.7-1.7-3.3-1.3-2.3-.3-1.7 1.6-.3-.3 2-3.3-.4-4.4 1.7 1 6 6.4 5 8 15.7-4.4 .3 .7-1.3 1-3.4 .3-5.3 2 2.3 3.7 14.4-4 .3-1.3-.7-1.7 .7-4.7 1-2.6 3-3.7-1.3-1.3-5.4-2-2 2-.3-.4 2.7-3.6 .3-3.4 6 6 5 8.4 10.3-2.4 .4 .4-.7 .6-5 1.4 2 3.6 12.7-3.3 1-.7 0-7.6 3.3-6.7-.3-1-5-1.7 1.6-2.3 .4-2 1 0 3.3 3.7 3 4.3 2.3 5.3 4.4-.6 2.3-1 1.3-2.7-.3-7zM46.5 153.2l-6.7 1.3 .7 1.3-.7 4 0 8.7 3.4-4.7 .3-3-1-2.6 1 0 2.7 2zM70.8 122.2l-6.6 1.6-.7 16 1.7-3 2.6-3 .7-2-.7-3.3 .4-.3 2.6 1.6 .7-6.3zM172.8 120.8l-5 1 3 7.7 3-.7zM48.2 114.8l-6.7 1.4 .3 2.3-.6 1-.4 13 4.4-6.7 .3-2.6-1-2.7 .3-.3 3 2zM136.8 112.8l3 7.7 1.7 0 .3-2-1-6.7zM161.2 100.5l-8.7 1.7-3 19.6 .3 .4 10.7-3 1 .6-1.7 1-2.3 0-1.3 1-6.7 1-.3 1.7 2 4.7 6.3-1 2.3-1 .7 .3 .7-.7 5.3-1 .3-.6-.3-2-1.3-2-.7 0-4-3.7-7 1.7-2-.4 7.3-7.3 .4-2 1.3 .7zM129.5 92.8l-7.7 1.4-3.3 27-.7 .6-2.3-3.3-2-4.7-2 0-.7-.6 .4-1 1.3 0-1.3-8.4-3 .7 2.3 5 0 2-4-6-2 0-12.3 2.7-.7 1-.3 4-1 .3-3.4-6.3-2-.7 .7-3-2-7.3-2 1 3 5.6-.3 .7-3.4-4.7-2 0-11.3 2.7-1.3-.7-.4 4.7-1 .3-3-5.6-3-.4-3 1.4-2.6 2.6-.4 4-2.6-1 2 3 3.3 9.7 .7 3.7-.4 7 .7-6 1.7-2.4 7-1.6 1.6-1 5.7-.7 .3-4.7 .7-.3 2.7 4 3 8.3 1 6.7-.7 6 7-2 .7 .3 2.6-1 1 .4-.3 1-2 0-3.3 1.3-6 1-.7 .7 1 1.6-.3 1-1.7-2.3-2 0-2.3-1.3-9.4 1.6-1 6.4-1.3-1-2.7-5.7-1-1-1 0-3 1.3-2.6 2.7-.4 4.3-2.3-1.3 2 3.7 3 8.6 .7 4-.4 5.4 9-2 1-.7-.6-2.3 .6-.4 .7 .7-.3 3-10.7 3 3.3 5 16-4.3-.6-2.4 .6-.3 .7-6.3 3.3-5.7-1.6-2.3-2.7-1.4-4-.3-1.7 1.7-.3-.4 2.3-3.3 .4-4.7 1 .4 6.3 7 5.3 9 16.4-4 .3 .3-1.3 1-7 1.3-2.7 1.4 2 4 1 .6 15-4-.7-2.6 .7-5 1.3-3.4 3.4-4-1.7-2-5.3-2-2.4 2-.3-.3 3-3.7 .7-3.6 6 6.3 3 4.7 1.6 4.3 5-.7 10.4-3 .6 .4-1.3 1.3-.7-.3-8.6 2.3-.4 .7 2.4 4.3 14.3-3.7-.7-4 .4-3 4.3-9.3-2-1.7-3-.3-1-.7 2.3-2.3 0-2 .7-.7 5.7 6.7 3.6 8 6-1 1.4-1.3 1-4.4-1-7.6-3.4 .3-1-1-1-3-.6 3.7-.7 .6-5-8-8 1.7-.3-.7 .6-1.6 2.7-3.4 0-1-3-5-2.7-1-1.6 1.7-.7-.3 1.7-1.7-1-1.7-7.7 1.4-1 .6-1-.3 1.7-2.7 5.3-5.6-.3-2.4 .3-.3 1.7 1zM99.5 142.5l-1 1-5.3 .7-1 1-4.4 .3-.6 .7-1-.4-1 1-3.4 0 .7-1 4.7-.6 .6-.7 .7 .3 1-.6 3-.4 .7-.6 1 .3 .6-.7 3.4-.6zM134.5 134.2l0 1.3-1.3 1.3-.4-.6 1-1-7.3 1-1 1-4.3 .3-3.7 1.3-1-1.3 2.3 0 .7-.7 1 .4 .7-.7 11.6-2.7zM127.2 127.8l-3.7 1.7-5.7 .7-1.3 1-2 .3 1.7 3-.4 1-2.6-3.7-3.7 .7-.7-.7 .4-.6 2 0 13.6-3.7 .7 .3 .7-.6zM97.5 113.5l3 2.7 4.3 5.6 3.4 6 1 2.7-.4 .7-1.3-.4-6 1.4-1.7 1-.3-.4 1.7-4 3.3-3.3 0-.7-1.7-2.3-3.6-2-3.4-.3-2.3 2-.7-.4 4-4.6 0-2.4zM72.5 105.5l4.7 5-1.7 3.7-.7-.4 .4-.6-3.4-.4-2.3 2-.3-.6 2-2 1.3-2.7zM100.8 85.5l-7.3 1.3-1.7 18.4 2-3 .4 1 6.6-1.7-2.3-1.3-1.3 0-2.4 1.6-.6-.3 3.3-3.7 1.3-2.6-.6-2.4 .3-.3 2 1.3zM74.2 78.8l-4.7 .7-.7 .7-1-.4-.6 .7-1 17.3 1.3-1.6 1 .6 .7-.6 6.3-1-1-1.7-2.3-.7-2.7 1.7-1-.3 3-3.7 .7-2-.7-3 .3-.3 2.4 1.6zM49.5 72.5l-1 .7-1-.4-.7 .7-1.3-.3-.7 .6-1.6 0-1 18 2-4 3-3.6 .3-3.4-1-2.6 .3-.4 2.7 2zM52.2 62.2l2.6 4.6 2.4 6.7 1.3 10.3 .3-3 2.4-3 7.3-1.3 2-1 1.7 .3 3-.6 .6-.7 .4-4.3-2 .3-1.7 1.7-.3-.7 3-3 1-2 0-3.7 .3-.3 3.3 3.3-.6 2.4-1.7 0 2 3 3.3 9.3 1 5.7 0 4.6 .4-2.6 2.3-3.4 8.3-2 .7-.6 1.3 .3 5.7-1.3 1-4.7-3.7 0-2.3 2.3-.3-.6 5.3-6-.3-3 .6-.4 3.7 3.7-.3 1.3-1.4 .7 1.7 2.3 2.7 6 1.6 6.4 .4 9.6-1 3.7 1-.7 .6-6.6 2.4-3 5.3-1.7 11-2 1-.7 1.3-3.3-1.6-1.3-4 0-2.4 2.3-.3-.3 .7-1.4 5.6-5 .4-3.3 4.3 5-.7 1.3 2 2.7 3.7 10.7 .7 10.3-1.4 5.3 1-1 0-3.3 1-3.3 3-3.4 18-4.3 1.7-3.3-4.3-2-2.7 0-1.7 1.3-1 0 1.4-1.7 5.3-3.6 0-2.7 .7-.3 7 8.6 3 7.7 1.3 5.3 .3 7-.3 3.4-1.7 4.3 1.4-.7 0-3.3 1.3-3.7 2.7-3 5-1.3 .6-.7 3.7-.3 13-3.3 0-1-6-4-3.7 0-.6-.7 3.6-2.7 2-.6 1-2.7 4.4 5.3 4 8.7 1 1-2.7 1-3.7 .3-.6 .7-1-.3-3 1.3-1.4-.3-.6 .6-6 1 0 2.4-4 18 .3 1-1 2.3-1 5.7-.7 .6-1-1-4-7.3-3.6-1-5.4 0-3.3 1.3-4.7 4.4-1 1.6 1 .4 2.4 4.3 3.3 9.7 .7 5.6-1.4 7.7 .7-.7 0-2.3 1.7-3.7 2-2 5.3-1.6 .7-3.4 2.3-4.3 2.3-2.7 5-3.3 .4-2.3 .6-.4 3.4 3.4 2.6 4-2.3 4.3 1.3 1.3 1.4-3.6 2 2.6 3 7 1.6 10-.3 5.7-1 1.7 .3 1.3 .4-2.7 1.3-3 3-3 11.3-3.3 3-3.3 4.7-3-.7-1-3-1.7-2 0-2-1 2-1.7 2.4-.6 1.6-3 5 6.3 4 9.3-18 5.4 .7 2.3-3 10-1 5.7 3.3-4.4 6-3.6 1.4-2.4 2 1.7 3.6 5 2.7 5 2 6.3 18.3-5.6 .4-3-2-5.4 1-4.3 3.6-5 9.4-5.3 4.6 6.3 2.7 6.7 0 2.3 .7 1.3 17.3-5.3 0-5-1.7-4.3 .7-3.4 3.3-4.3 10-4.7 2.4 2.7 3 6 1.3 7 16-5 .7-3.3-2-8.4 2.6-4.3 7.7-9-1-2.3-2.7-2.4-1.6 .4-2.4-1-7.6-.7 0-7-1.4-5.3-1.3-3-4-3-3.7-.4-15.3 4-5-1.6-4 0-2.7-7.4-3.6-2.6-3-.7-4 1.3-1.4-.3 1.7-3 2.3-2.3 4-2 3-.4 2.7-2 2.3 3 2.7 5.7 1 3.7 .3 4.6 11.7-2.6 4.7-1.7 .3 .3 .7-1 0-4.6-1.7-6 3.3-5.7 7-9.7-1.3-2.3-2-1.7-.7 .4-4.3-1.7-7-.7 0-5.3-1-5-1.7-4.3-2-2-3-1.7-2.3 0-16 3.3-5.7-2-4 0-1.6-4.3-4.4-3-2.6 0-15.7 3-6-2-2 .3-1.3-4-4.4-3-17.6 3-6.4-2-1-3-5-3.3-17 3-5.3-1.7-.7-.6 1-.4-.6-2.3-4-2.7-15.7 2.7-2 0-4.3-1.7-4.7 0-3.7 2-3 3.7-4-.7-15.6 3-5.7-2-4 .4-3 1.3-4.3 5-4.4-1.3-17 3.3-4-1.7-5-.3-3.6 1.7-3 3-.4 3zM266.2 154.8l-17 5-9.7-1.6 .7-.7 8.3-2.3 3-3.4 6.3-3.3-.3-.7-3.7-2-2.3 0-.7-1 2.7-1.6 3-.7 1-1.7 2.3 2.4 2.4 4 2 5 0 1.3zM302.8 144.2l-.3 .6-6.3 1.4-.7 .6-8.7 2.4-8.6-1.7 .6-1 4.4-1.3 6-8.4 0-1-2.4 0-.6-.6 3.6-1.7 4-.7 .7-.6 2 1.6 1.7 3 1.6 6zM182.8 130.5l1.7-3 6.7-5 2.6-3.3 5.7 7.3 2.7 5.3 2 7 1.6 0 .7-.6 1 .3 3-1.3 1 .3 5.3-2 1 .3 .7-.6 1.7 0 .6-.7 1 .3 .7-.6 1.3 0 .7-1.7 3.3 5-1.6 1-17 4.3-5-1.6-3.4-.4 1-1.3-1-2-.6-4.7-2.4-3.3-1.3-.7-2.3-.3-9.7 2.3-.7 .7zM223.8 120.5l1.7-3 2-2 5.7-2.7 3-2.6 4 5.3 2 4.3 2 8.7 1.6 0 .7-.7 1 .4 .7-.7 10.6-2.3 .7-.7 1 .3 .7-.6 1 .3 .3 1.3 3.3 1.4 .4 .6-17.7 4.7-2.3-1-5.7-1 1-.7-1.3-2.3-1-7-4-3.3-1 0-1.7 2.3-7.7 1.7zM245.8 96.8l-.3 .7-1.3 0-.7 .7-1.3-.4-.7 .7-3.3 .3-.7 .7-1-.3-.7 .6-3.3 .4-1 .6-1-.3-2.7 1-8.6-2 1.3-1 18.3-4.3 0-1-1.6-1.7-4-2.3-3.7 0-2 1.6-.7-.3 1.7-1.7 8-3.6 .7-1.4 3.6 5 2.7 6.7zM284.2 88.2l-.7 .6-16.3 3.7-8.4-2 1-1 8-1.7 3-4.3 .7-2-1-.7-3 0-.3-.6 8-3.4 2 1.4 3.3 8.3zM206.8 79.2l-19.3 4.3-5.7-2-3.3-.3 .7-.7 16.3-3 3.7-1.3 3.6 0zM173.8 72.2l-19 4-8.3-2.4 .7-.6 19-3.7 4.3 .3 .7-1zM246.8 70.8l-3.3 .7-.7 .7-14 2.6-8.6-2.3 .6-.7 13.4-2.3 3.6-1.3 5.7 .6zM144.5 64.8l-.3 1-4.4 .4-13.3 3-2.7 0-7.3-2 2.7-1 16.3-3 6 .6 .3-1.3zM212.5 64.2l-1.7 1-15.6 3-8-2.4 .6-.6 15.4-2.7 2.6-1 2.7 .3zM118.2 59.8l-1 .7-1.7-1-18.7 3.7-7.3-2.4 18.3-3.6 4 .3 2.7 1 .3-2.3zM181.5 58.2l-.3 .6-2.4 0-1 .7-2.3 0-11 2.3-6.3-1.6-.7-.7 1-.7 16-3 4.7 .4zM152.8 52.2l-.3 1-17 3-6.7-2.4 16.7-3.3 6 .3z"/><path fill="#062c5a" d="M225.8 456.5l-.6 1.3 .3 3-1.3 1.4-1.7 0-11.3 6-.4 1 2.7 3 4.7 3 .3-4.4 1-3 2.7-3.6 1.3 5.3 1.3 1.3 3.4 6 1 3.4 .3 4.6 .7 0 5.3-3-1.3-3-2-2.3 2 0 .3-2.7 .7 .4 0 1.3 2.6-1.3-1-2.4-1.6-1 2-3.3-3-.7-2.4-1.6-3.3-4.4-1.3-.6 1.3-1 0-1.7-1-1zM197.2 445.8l-9.7 5-1 0-.3 1 2.6 3 4.4 2.7 1.3-7.7zM201.5 439.8l0 3-3.7 2.7-.3 2.7 1.3 5 3.7 6.3 1.3 7.3 5.7-3-1-2.6-2.3-2.7 .3-.3 2 1 .7-3.4 .6 .4 0 2.3 2.4-.7 .6-1.3-2.6-3.3 1.3-2.7 0-2-3.3 .3-2.4-1.3-4-4zM220.8 447.2l.4 2 7 5.3 .3-4 1.3-4.3 2.4-3.4 2 6 1.6 1 3.4 6 1 3.7 0 4.3 1 .4 .3-.7 1 0 4.3-2.3 0 1-3.6 1.6-.7 1 1.7 1 6.6 7.4 13.4-7.4-2-5 1-2 .3 1 2-.6-1.7-4.4 2-2.6-3.6 1.3-2.4-3.3-2.3-2-3.3-1.4-3 .4-2.7 1.3-.3 3.7-2-2.7 3-4.3-4.4-1.4-5-5-2.3-.3 2.3-1.7-.3-2-1.3-1-4.4-.6 1.4 1.6 1 0-1 1.7-2.4-3-1.3 0-3.7 6 3.7 .3 1 .7 2-3.3 .7 .3 0 2-1.7 1.7zM172.2 430.8l-9 4.4 2 3 4.3 3 1.3-7.4zM181.8 426.8l-4.3 0-3 2.7-.3 2.3 1.3 4-1 .4 .7 .3 3 6 1.3 7.3 5.7-3 0-1-3-3.6 .3-.7 2 1.3 .7-2.6 .6 1 0 1.6 2.7-1-1-3.6-1.3-1.4 .3-8-1.7-1.3zM204.5 425.2l-10 5 2.7 3.6 4.3 3 .7-5 2.6-6.3zM149.5 416.2l-8.3 4 2.3 2.6 3.7 2.7 .6 0 0-3.7zM161.2 411.8l-6 0-2.7 2.4 0 4 1.3 2.6-1.6 .4 3 5 1.6 7.3 5.7-3-3.3-4.3 .3-.7 2.7 1.7 .6-2.7 .7 .7 0 2.6 4-2-1.3-2.3-2.7-2.3 .7-1 1 1.3 1.6 .7 .4-3-1-.4-1.7 1.7-.3-.3 1-2.4-.4-2.6zM231.5 424.5l.7 1.7 2 2 5.3 3.3 .3-5 1.7-4.7 2-2.3 2 5.7 .7 .6 .6-.6 .7 .3 3.7 6.7 1 3.6 0 5.7 5.3-2.3 1-1 1 .3-.7 1-5.3 3 6.3 6 2.7 3.7 14-7.4 .7 .4-.7 1-5.3 3 5 4.3 3 4 12.6-7-.3-1.7-2-3.3 2.7-1-1.7-3 2.3-4-1 .7-1-.4-2.6-4.3-1.7-1.3-3.7-1.4-3.3 .4 0 1-2 1-1.3 2 0-2 3-3.7-1.7 0-2.7 1.3-3-4.6-2-1.7-3.6-1.3-2.7 .3 .3 1.7-.6 .6-3.4 1.4-.3 1.3-1-.7-.3-1.3 3.6-5 .4-1.7-4-.6-2.7-1.7-2.7-3-2.6 0-.4-.3 2.4-1.7-.7-3-1.3-.7-5.7-.6-2 1-2.3 3.6-1 3 4.6 1 1.7-2.6 .7 1.3-.4 1-2.3 2-10.7 5.3-1 0zM128.2 402.2l-7.4 3.3 1 2 4.7 3.3zM169.2 385.8l-2 .4-1.4-1.4-4.3 .4-2.3 2-.4 3 .7 3-3.3-1.4-.4-2-1.3 .7 .7 .7-.7 1-12.3 5.6 6.6 4 7 7.4 1.4 0 .3 .6 6-2.6-2.7 0 0-.7 7.7-3.7-1-2.3-1.3-1.3 .6-.4 1.4 .7 .6-2.3 .7 1.3 0 2.7 3.7-1.7-2-3.7 1.3-.3 .3-3.7-.6 0-1.7 2-.7-.3 1.4-2 .3-2.7zM112.8 384.8l-.6 .7 0 5 1.6 2.7-.6 .3-2.7-1.3 3 5.3 1.3 6.3 6-2.6-3.3-4 .7-.4 2.6 2 .7-3-2.3-6-.4-4-3.3 .4zM243.5 398.8l2 3 6.3 4.7 .7-7 2-4.7 1.3-1.3 2.4 5.7 .6 .6 1.4-1.3 1 1 3.6 7 1 5.3-.3 4.4 1 0 .3-.7 1 0 4.4-2.7 1 .4-1 1.3-4 1.7-.4 .6-1 0-1.6 1.4 6.6 5.6 3.7 5.4 14.7-7.4 .3 .7-1 1-4.7 2-1.3 1 0 .7 5.3 4.6 3 4.7 13.4-7 .3 .7-6.7 3.6 0 .7 4.7 4.3 2.3 3.7 2.4-.7 5-3 .6-1 .4-5-2-5.3-2.4-1.7-4.3-1.6-1.3-3-.7-.4 1-3 3.3-3.6-2.6 1-1.7-1.7-2-4-2-1.3-2.3 0-.7-1-4 .3-1.7 1.7 .4 2-2 1 0-2 4-4.7 .6-1.7-2 .4-2.3 1.6-1.3-1-3.4-5.3-1.3-1-2 .3-.3-.3 .6-.7-1.6-.6-5 0-2 2-.4-.7 3.7-4.3 .7-2.4-2 .4-3-1-5.4-4-3.6 .6 0-.6 3-1.7-.4-2.3-3.6 1-3 2.3-1.4 2.3-.3 2.4-1.7 1.6zM274.5 404.8l.7 1.4-.4 1.6-1 1-2.3 .7-1.7-3 .4-1 .6 0 .7 2.3 2.7-.6-.4-2zM111.8 367.8l-6.6 3 1 1.7 4.6 3.3 1.4-7zM183.8 367.2l4.4 5.3 0 .7-3 2.6 0 2.7 .6 1.3-2.6 0-1-.6 0-1 0 1.6-11 4.7-1 1 6 3.7 7.6 8.3 4-1.3 2.4-1.4-1.7 0-.7-.6 7.4-3.7-1.4-2.7 1-2 .7 3 .7 .4 2.3-1.4-.3-2-1-1.3 1.3-4.7-1.3 1.4-.7-.4 1.7-3.3 0-1-1.4-2 .7-.3 5.7 3.6 6.3 7.7-3 4 .7 3.7-4 .3-10.4 4.7-1.6 1.3-3.7-1-4 0-3.3 2.7-.4 2.3 1 2.7-.3 .6-3.7-1.3 .7-2.3-2.3 1 1.3 1.3-.3 .7-12.7 6 6.3 3.6 7.7 8 1 0 0 1.4 1 .3 7.3-3.7-4.3 0 0-.6 8-4-2.3-3.7 .3-.3 1.3 .3 .4-1 .6 2 1.4 0 2-1.3 0-1-2-2.7 .3-.7 1 0 .3-2.6-1.6 1.3-.7-.3 1.7-2.7 0-2.3-1.7-2.4 1-.3 4 2.3 9 9.4 0 2-3.3 3.3 1 4.7-5 0-12 6.3 2 .7 10.6-5.4 7 0 1 1-.6 2.7 1 3.3 3 4.7 2 5 1 6.3 6-3.3 6.6-2.7-2-3-1 0-2.3-3.6-1.3-1 1-1.7 0 1 .6 .3-.6-1.6 1.3-2 .3-3-1.3-2.4 .7-.3 2 .7 12.3-6.7 2.3-.3-1.3-1.4-2.3-.3-14.7 7.3-3.7-.6-4 .3-.6-1 8.6-4.3-6 0-.3-.4 1.7-1.6 1.6 0 11.4-5.7 1.6 0 1-.7 3 .4-1-7 1.4-3.7 1.3-1.3 .3 .3-.3-.7 2.3-1.3 1-1.3 0-3-1-3.7-1.6-3-4.7-2.3-2 0-11.7 5.6-1.6-.6-5.4 0 0-1 5.4-2.4-1.7 0-.7-.6 2.7-2-.3-4-2-5.4-4-2.3-2-.3-12.4 5.6-2 0-2.3-1-3 .4 0-1 2.7-1-.4-1-3.6-2.7zM216.8 438.5l1.4-1.7 .6 1.4 1 0 2-1.4 1.4 .4-.7 1-3.3 1.6 .3 2.4zM220.8 387.8l4.4 3 6.3 7.7-.3 2.3-2.4 2.7 1 3.7-3.3 .3-12.3 6.3-2.4-.6-4.6 .3-.7-.7 .7-1 1 0 5.6-3-3.3 0-.7-.6 .7-.7 6.7-3-1.4-3.3 .7-1 1.3 2 2.4-1.4-1.7-3.3 .7-2.7-1.4 0 2.4-3.6 0-2-1-1.4zM269.2 364.5l-12.4 5.7 3 3.6 5.4 4 1.3-7.6zM122.5 361.5l-4 .3-2.3 2 0 4.7 1.3 2.3-.7 .4-2-1 2.7 5 1.7 7.6 6-3-2.4-3 .4-.6 2.3 1.3 .7-1.7 .6 3.4 4.7-2-3-4 .7-.4 2 1.4 1-5-3 0-1.4 1.3-.3-.7 1-2.3-.7-2.3-2-2.4zM133.2 338.2l-4.7-.7-3.7 1.7-.3 6.6-2.7-1.3-2.3-.3-12 4.6-.3 .7 7.6 5.7 5 5.6 13-5.6-1.6-3 2.3 0 .3-3.4 2.4-4.6-.4-3.4zM199.8 336.5l-2.6-1.7-2.7-.6-11.7 5-7.6-.7 0-.7 5.6-2.3 .7-.7-1-6.3-1.3-3-3.7-2.3-2-.4-12 5-3.3-.3-1-.7-4 .7-2 1.3-.4 5.4-3.6-1-12 5 5.6 4 4.7 5 1.7 2.6-3 2.4 0 5.6-3.7-1.6-13.7 6 7.4 5 5.6 6.3-.6 .7 0 2.6 1.6-2.3 1-.7 .7 .4 0 6.3-4.3-1.7-10.7 4.4-2 1.3 1 1.7 5.7 4 5.6 6.3-.3 .7-3.7 .3-2 1.7-.3 3.6 1.7 3.7-.7 .3-1.7-.6 3.7 7.6 .7 3.4-.4 1.3 6-3-.6-1.7-3-3 .3-.3 3 2 .7 0 .3-2 .7 3 4.3-1.7-1-2.3-2.3-2.3 .3-.7 2.7 1.7 .3-4-2 0-1.7 2.3-.3-.7 1.3-2.3-.3-2.3-1.7-2.4-1-.6-1.6 .3-.7-.7 2.3-1.6 6.4-2.4 5-2.6-2.4-4.4 2 .4 .4-4 2.6-4.7 0-2-3-4-2.6-.7-3.4 .4-.3-.7 8-3.7-1.7-2.6 .4-.7 1 .7 .6-1.4 1 3.4 3.7-1.7-.3-1.3-1.7-2 1.7 0 1-5-2.4 .3-1 1.3-.3-.6 1.3-3.4-1.3-3-1.7-1.3-2-.7-3.3 0-.3-.6 11.6-5.4-1-2.3 1-.3 1-4.7 2.4-4 0-2-1.7-2.3 .7-.4 4.6 3 3.7 3.7 3 4.7-2.3 2 0 4.6-2-.6-2.7 .3-11.3 5 6.3 4 6.7 8-.7 .3-1.3-1-1 1-.4 2.4 1.4 1-.7 1-12 5.3 6 4 7.3 8 2.7-.7 10.3-5-2-4 1 0 1.4-5.3 2.3-3.7 0-2-1.3-2 .3-.6 6.7 4.3 5.6 7 12.4-5.3-1.7-4 .7-.7 .6-3.3 3.4-5.4-.7-3.3 .7-.3 1.6 1.3 .7-.3-2.3-2.4-8.4 0-.6-.6 2.3-1.4 0-3.3zM168.8 362.5l.7 .3 .3 5-3.3-1.3 1.3-3.3zM195.5 351.8l.7 2.7-.4 1-2.6-.3-12.4 5.6-6.6-.6-.7-.7 6.7-3 .3-1.3-1-1.7 1-.7 1 .7 0 2.3 3.3-1.6-1.3-3 1.7-5.4-2.4 1.4-.3-.4 1.3-2.3 0-2.7-1-1.3 .4-.7 5.3 3.4zM88.5 313.5l-3.7-.7-2.3 .7-1.7 2.3 0 4.4 1.4 2.3-.4 .3-3.3-2 2.7 5.4 1.6 7.6 1-1 4.7-2-.3-1.3-1.4-1.3 .4-.7 2 1.7 1-.4 .3-4 2-4 0-2.6-.7-1.7zM117.2 302.8l-1 .4-.7-.7-2.7 0-2 .7-1.6 1.6 0 5.7-2.7-1.3-2.3-.4-12.7 4.7 0 .7 6.3 4.3 7 8 2-1.3 .4 .3-.7 2.3 .7 4.4-3.4-1.7-2.6-.3-12 4.6 .3 1.4 4 2.6 8.7 9-.4 1-3.3 .4-1.7 1.6 0 5.4 1.4 2-.7 .3-2.7-1.7 3.7 8.4 .3 4.6 6-3.3-3-4 .7-.3 3 2.3 .7-4.3 2-4-.4-3.4-1.6-2.3-4-1.7 14-6-2.7-4.3 .7-.3 1.6 1 1-5 2-3.4 0-2.6-1.3-2.4-2-1.6-4.7-.7-.3-.7 7-3-1-2 .7-.3 1 .7 1-5 2-3.4-.4-4-2-2.3zM164.5 290.8l-4.7-2.3-12 4.3-.3 .7-4-1-4.7 .3-2.3 2 0 4.7-4-1-12 4.3-.3 .7 5 3.3 4 4 3.6 5 1-.6 .7 .3-.3 1.7 .6 3-4.6-1-12.4 4.6-.3 .7 1.3 .3 3.7 2.7 8.3 9.3 1.4 0 12-5-2-4 1.3 0 1-4.6 2.3-3.7 0-2.7-2.6-3.3-5-.7-.7-.6 6.7-2.7-.7-2 1-.7 .7-3.6 2.6-4.7 0-2.3-1.3-2 .3-.7 5 3.3 2.7 2.7 3.3 5 2 1.3 .7 3.4-4.3-.4-11.7 4.7 4.7 3 4.3 4.3 4 5.4 12-4.7 .3-.7-1.3-3.3 1.3-4.3 3-5 0-2-1-1.7 1-.3 2 1.3-2.6-2.7-1.7 .7-3-1-3 .3-.7-.6 2.4-1.4 0-3zM71.5 276.5l-1.3 .3-.7-.6-1.3 0-3 1.6-.7 1.7 .7 6.3-3.7-2 3 5.7 1.7 7.7 1.3-1.4 4.3-1.6 0-1-1.3-1.7 .3-.3 2 1.6 1 0 .7-4.6 2-3.7 0-2.7-.7-1.6-2-2.4zM102.8 267.2l-3-.7-3 0-1.6 .7-1.7 2.6 .3 4.7-5.3-2-13.3 4.7 4.6 3.3 5.7 5.7 3.3 4.3 1.7-1.7 .7 .4 0 6.6-5.4-2.3-13.3 4.7 .7 1.3 4 2.7 5 5 4 5 1.3 0 2.3-1.4 10.7-3.6-3-5 .3-.4 2.4 1.7 1-5.3 2-3.4 0-3-3.4-4-5-.6-.3-.7 7.3-2.7-1.3-2 .3-.3 2 1 .7-4.3 2.3-4-.3-4zM131.8 257.8l-5-1-3 .7-2.3 2.3 0 4.4-4-1.4-10 3.7-2.3 .3-.7 .7 4.7 3 4.3 4.3 3.7 5.4 1.6-1 .7 .3 0 5.3-2.7-1.3-2.6 0-12.4 4.3 4.4 3 5.6 5.7 3.7 5 13.3-4.7-.3-2-1.3-2 1.3-.3 .3-2.7 3-5.6 0-3-2.3-3-3-1-2.7 0-.6-.7 6-2 1-1-.7-1 1 0 1-4.3 2.7-4.4-.4-3.6zM146.5 253.8l-2 0-11 3.7-.3 .7 4.6 3.3 3 3 4.4 6.3 .6-.6 .7 .3 .3 3.3-1 .4-1-.7-2.3 0-11.7 4.3 4 3 5 5 3.7 5.4 2.3-.4 10.4-4-1-4 1.6-5 2.7-4.3 0-2.3-1-1.7 .7-.3 1.6 1-1.3-2-2.3 .3-2.7-1-3 0-.7-.7 2-.6-1.3-7.4-1.3-2.6zM54.8 238.8l-3.6-.3-2.4 1-1 2.3 .4 6.4-3.7-2.4 3.7 8.4 .6 5 1.7-1.4 4-1 .7-.6-1.4-1.7 .4-.7 2 1.7 1.3-.3 .3-3.7 2.4-4.7-.4-2.6-2.6-4zM86.2 229.8l-5.4-.3-1.6 .7-1.4 2 0 5.3-3-1.7-3.3-.3-12.7 4 8.4 7.3 5 6.7 2-2 1 0-.4 7-3.3-2-3.3-.3-12.4 4 0 1 5.7 4.3 8.3 9.7 13.7-4.4 .7-.6-2.7-4.7 .3-.3 1.4 1.3 1 0 1-5.3 2-3.4 0-2.3-1.7-3.3-2-1.7-5-.7-.3-.6 7.3-2.4-.3-1.6 1 .6 1-.3 .6-4 2.4-4 0-2.7-1-2.3zM339.2 223.8l-15.7 5.7-6.7-2-4 0-3.3 1-4 2.3-2.7 3 2.4 1.7-.4 .7-15.6 5.6-7-1.6-4.4 0-3.3 1-3.7 2.3-3 3.7 1.7 1.3-.7 .7-16.3 6-6.7-1-.6-.7-5.4 .3-2.6 1-3.4 2.4-2.6 4 1.6 3.6 1.4-1.6 1 1 4 7.6 1.3 5.7 0 5.3-.7 2.4 2-2.4 6.4-3-1.7-3.6 .3-3 2.7-5.4 6-6 .3-3.6 6.7 6 3.3 5 2.4 5.6 0 1.4-.7 .6 1.3 .7 .4 1-16.7 6.3 1 2.4-4 10.3 5-5.7 .3-3.6 2.7 1.6 6 6.4 4.7 9 6.6-2.4 2.7-1.6 1.3 0 .4-.7 3-.7 2.6-1.6 1 0 2.4 2.3-16.7 7.3-2.7-.6-2.3 .3-1-1-2.7-.3-5 1-3.3 2-2.3 2.3-1 1.7 0 1.3 2.3 4.7 1.7-2.4 3.3 5.4 2.3 7.6 .4 4.7-.7 2.7 8-4.4-2.3-5 .3-3 2.7-5.3 5.3-5.3 .7-3.7 6.6 5.7 3.4 4.6 2.3 5.4 0 1-1.3 2 2 1.6-15.7 7 1.3 3.4-4 8.3 4.7-5 0-3.3 3.3 2 4 3.6 2.7 3.4 3.3 6.6 10-4.3 1-1 2.7-.7 2.3-1.6 1 0 1 1-.3 1-18.3 8-3.7-2-6 .3 6-3-.3-.7-3 0-3.7 1.4-4 3.3-2.7 6 2.7 5.7 1 .3 1.7-1.7 3 4.4 2.6 8.3-.3 6.3 4.3-1.6 2.4-1.7 1.3 .7-10.3 5.6 4.6 3.4 3 3 4 6.6 15.4-7.6 .3 1-.7 .6-8.3 4 0 .7 5.7 4.7 3.6 6 1 0 13-7 .4 .6-8.4 4.7 0 .7 5 4.3 3 5 7-3.7 1.4-2.3 .3-2.3-.7-4-1.3-3.4-3.3-2.6-3-1-1.4 .3 0-2.3-1.3-2.4 1.7-4 5-5.3-3.7 1.3-2.3-2.3-2-4-5 .3-.4-.3 2.7-1.3 0-.7-6-.3-2.3 2.3 0-1.3 4.3-4 .7-2.7-5 2-1-.3-3.4-5.7-5 0 3.4-2-2-1-2.4 0-3.6 2.3-2.7 3.7 .7 1.7-1 .6-2.4-2.3 0-1 2.4-4.3 4.3-4.4 1-2.6-.3-.7 1.6 0 7.4 6.7 3.6 7 1 0 15-7.4 .4 1-.7 .7-10.7 5 0 .7 2.4 1.3 4.6 4.3 3.7 6.7 1 0 13.3-7 .4 1-.7 .7-9.7 4.6 6 5.7 3.4 5.7 7.3-4 1.3-2.7 0-4-2-6.3-6-3.4-2.6-5 0-1.3 2-4 5-4 2-3 .6 0 5 4.7 1.7 2.3 2 5 7.7-4 1.6-3-.3-7-1.7-4.3-5-3.4 0-1.6-3-5.4 .4-2.3 1.6-3 3.7-3.3 3.7-1.7 1.3-2.3 5.7 5.6 3 7 8-4 1.6-3.3 0-5.7-2-6.3-6.3-3.7-2.3 .4-9.7 5-5.3 1.6-4.4-1.6-4.3 .3-.3-.3 2.6-1.7-4 0-6.6 3-1.7-2.7 .3-2 2-3.6 8.7-7.4 1 .4 5.7 6.3 2.3 6.7 13.3-6 1.4-1 .3-2-.7-2.7-2.3-4 0-1.7 3-4.3 8-6.3-1.7-2.7-2-1.3-2.3 .3-5-1.3-5.7 0 1.7-2.4 .3-3.6-1.3-7-2-3.4-3-2-2.3-.6-11.4 4.3-2 1.3-3 .4-1.6-.7-1 .3-2-1-4 0-5 1.7-3.7 3-1-.3-.7-3.7-2-3.7 .4-2 1.6-3 4.4-4 2.6-1.3 2.4-3.3 2.3 2 4.3 5.6 2.4 7.4 15.3-6.4-.3-4.6-2.4-5.7 1.7-3 9.3-8.7-1.6-2.6-1.7-1.4-2.3 .4-5.7-1.7-5 0 1.3-2 0-5.7-.6-3.6-1.7-4zM319.8 356.8l2-4 5.7-4.3 1-3 7 6.3 2.3 4 1 3.4 14.4-7 1 .3-1 1.3-11.4 5.4-.6 1-3 1.3-1.4-.3-3.6-4.7-6 0 4.6-2.7-1-.6-4 .3-3.6 1.3-3 2.4zM301.8 341.8l0-2 1.7-4 1.3-2 6.7-6 .3-1.6 2 1 5.4 5.6 3.6 7.7 15-7 1.4 1.3-.7 1-7.3 3-.4 .7-2.6 .7-4 2.3-3.4 .3-1.6-1.3-2-.3-5 .6 0-.6 5-2.4-.4-.3-4.3 .3-2.7 1-2.6 1.7-3 3.3zM312.8 297.5l6.7 8 2 5 0 1.7-1 1.3 3 2-16.7 7.3-6.6-1.6-4 .3-.4-.3 .7-.7 7-3 0-1.7-2.3-4.3 .3-2.7 2.7-4.6 6.3-5 .7-2.7zM346.2 283.8l4.3 5 2 3.7 1 3.7-.3 2.6 3.3 2-15 6.7-6.7-1.3-4.6 .3 0-.7 6.6-3-.6-3.3-2-3.3 .3-2.4 3.3-4.6 6.7-4 .7-1.7zM282.8 290.2l.4-2 2.3-4.7 6-5.3 2-3.7 2 1.3 5.7 6.7 2 4 1 3.7 15.3-6.4 1 0 .3 1.4 1.7 1-1 1-14.7 6-2.6-.7-1.7 .3-1.3-1-2.7-.3-5 1-4 2.3-3.3 3.7-.7-.7 0-2.3zM305.5 263.8l-.3 1-.7-.3-1.3 1-14 5.3-7.4-1.6-5 0 8-3.7-2-4.3 0-2.4 2.4-4.3 7.6-6.7 .4-2.3 6 6 2.6 4.7 1 4.3 .7 .7-.3 1.3zM339.8 250.5l-.3 1-5.7 1.7-9.3 4-6.7-1.7-5.6 0 7-3-2.4-7 2.4-4 2-2 6.6-4.3 .4-1.4 2 1.4 4.6 6.6 1.7 7zM115.8 221.2l-5.3-.7-2.7 1-1.3 1.7 0 4.6-2.7-1.3-2.6 0-12 3.7 0 .6 4 2.7 3.6 3.7 5 7 1.4-1.4 1 0-.4 5-2.3-1-3-.3-12.7 4.3 4 2.7 5 5 5 6.7 13.4-4.4-.4-2.3-1.3-2 1.7-.3 .6-3.7 2.7-4.7 0-3-2.3-3.3-4.7-1.3-1 .3-.7-.7 6.4-2 .3-1.6 1 .3 .7-3.7 3-5-.4-3.3zM38.2 221.5l0 .7 5.3 3.6 0-6zM131.5 217.8l-3 .4-10.7 3.6 4.7 3.4 3 3 4.3 6.6 2-.3 0 3.3-.6 .4-2.7-1-13.3 4.3 4.3 3 4.3 4.3 4.7 6.7 13-4.3-1.3-3.7 .6-.7 1-4 3-5.3 0-2-1-2 .4-.3 1.6 1-1.6-2-2 .3-1-.7-4.7-.6 1.3-1-1.3-7.4-1.3-2.6zM50.2 209.8l-1 3 .6 5-.6 .4-3.7-2.4 4.3 9.4 1 8 8-2.4-3-5.3 .4-.7 2.6 2.4 1-3.4 .7 2-.7 1.4 .7 4.3-3.3 1.7-5 1-1 1.3 1.3 1.3 1.7 0 13.3-4.3-2.3-4.3 .6-.4 1.4 1.4 .6-3.4 2.4-5-1.7-1.6-4.3-1-3 2.6-.4-.6 1.7-3.4-.7-3-2.3-3.3-3.3-1.7-4 0zM60.8 209.8l4 3 5 5 5.7 8 14.7-4.3-1.7-4.3 1.7 0 .6-2.7 .7 1-.7 1 0 3.7 .7 2-1 1-8.7 2.3 1.7 2.3 13.7-4 .3-1-1.7-3.3 1.4 0 1-4.3 2-3.4-.4-1.3-4.6-1.3-2.7 2-.3-.7 1.6-2.3 0-2.7-.6-1.7-2.4-3-3-1-4 0-2.6 1.7-.7 1.3 0 5-3-1.6-3-.4zM143.2 203.8l-.4-6-1.3-4.3-1.3-2.7-3.4-2-5.6 1-8.4 2.4-.6 .6-4.7-1.6-2.7 0-3 1-1.3 1.6-.3 4.7-2.4-1.3-2.3 0-13 4 3.3 2.3 5 5 5.4 8 14.3-4 .7 .7-.7 1-8.7 2.3-.3 .7 1.3 1.6 13.4-4-1.4-4 1-.6 3-8.4-3.3-1.3-3 1.7-.3-.4 2-4.3-2-4.3 .3-.4 2.7 1.7 5 4.7 5.3 8.6 6.3-1.6zM39.5 189.8l.7 1.4 4.6 3.3 0-6zM195.8 178.8l-5 1.4 1.7 4 3.3-.7zM57.8 175.8l-3.3 0-2.7 1.4-1 3 .4 5.3-4-2.3 4.3 10 1 8.6 8.7-2.3-2.7-5.3 .3-.4 2.4 1.7 .3-2.7 .7 0 .3 7.7-1.7 1-8.3 2 0 1 2 2.3 15-4 .3-1-2.3-4.3 .3-.3 2 1.3 1.4-5.7 2-3.3-2.7-2.3-4-1-3 2.6-.3-.6 1.6-2.7 0-3-1.3-2.7-2.3-2.6zM344.5 196.5l-3-3.7-1 .4-6.7-2-5 .3 .7-7-2-7.3-1.7-2.4-3-2-2.3 0-.7 .7-2.6 .3-.7 .7-10 3-6.7-2-5.6 0-4.4 1.7-3.6 2.6-1 2 2 1.4-.7 .6-.3-.3-16 5.3-6-2-5.4-.3-4 1.3-3.3 2.4-2.3 2.6 1 1.7-.4 .7-15.3 4.3-.7 .7-3 .3-5.3-2-5.3 0-3.7 1.3-3.7 2.7-1.6 2.3 .3 3.7 1-1.3 1 .6 4.3 9 1.4 6.4 0 5-.7 2.6 1.3-2.3 2-1.7 5.4-2-1.4-3 .4-2 3.3-6.3 6-6.3 0-3.7 6.7 6.3 3.3 5.4 2 6 2 2.3-.7 .7-3.3 .6-.3 .7-1.7 0-.3 .7-11.4 3.3 .4 2-2 4.3-2.4 8.4 5.4-6 1-2.4-.4-2.3 .7-.3 6.3 5.6 3 4 3.7 8.7 1.7 0 16.3-6.3 0-3.4-2-4.3 0-2 3-5.7 6.3-5.3 1.4-3.7 4.6 4.4 3 4 1.7 3.6 1.3 5.4 17-6 0-4-2.3-5.4 .7-2.3 4.3-5.3 5.3-3 1.4-3 3.6 3.3 3 4.7 2.4 8 15.3-5.4 .7-3.6-2.4-6 0-1.4 2-3.3zM287.2 210.8l-6 2.7-1-.3-.7 .6-1.3 0-.4 .7-1.3 0-6 2.3-2.3 0-2.4-1.3-8-.7 7-2.6 0-1.4-1.3-2.3 .7-3 2.6-4.3 6.7-5.7 1-2.7 2 1.4 5 6.6 1.7 3.7 1 4.3zM322.5 198.8l-.7 1-2.6 .4-.4 .6-1.3 0-.7 .7-.6-.3-9.4 3.6-4.6-1.6-8-.7 5.3-1.7 1.3-1-1.6-3.6 .6-3.7 3-3.7 4.7-3 3.3-3.6 3.4 3.6 2.6 4.4 1.7 6.3zM63.5 177.2l0 .6 2 1 5.3 5 7.7 10.7 3-.3 .7-.7 4.3-.7 .7-.6 .6 .3 .7-.7 5.3-1.3-1.6-4.7 .3-.3 .7 .7 1-2.4 .6 1.7-.6 1.3 .6 1.7 0 3-1.3 1-8.7 2.3 .4 1.4 1.3 1.6 1.3 0 13.4-4-1.4-4.3 1 0 1-4.3 2.4-3.7 .3-1.7-2.7-1.6-3-.7-2.3 2.3-.7-.3 1.7-2.7 .3-3.3-1.3-3-2-2-3-1-4.3 0-3 1.7-.7 1.6 0 4.7-3-1.7-3-.3zM183.5 159.2l-5 1-.3 .6-1.7 0-.7 .7-2.6 10.3-.4 4.4 5.4-7.4-.4-5.3 5.4 4.3zM40.8 158.5l-1 2.3 .4 7 1.6-3 .4-2.3zM148.8 173.5l0-4.7-1.3-6-1.3-3-3.7-2.6-15 3.6-3.7-1.3-4.6-.3-3 1.3-1.4 1.3-.3 4.7-2-1.3-2.7 0-13.3 3.6 7.3 6.7 6.7 10.3 7.3-1.6 .7-.7 .7 .3 .6-.6 5-1.4 1 1-.3 .7-10 2.7 1.7 3 10-2.4 4-1.6-1.4-4 4.7-10-3.3-1.7-1.7 0-1.3 1.3-1-.3 1.6-2.3 .7-2.7-1.7-3.7 .4-.3 3.3 2.3 4 4 2.7 4 2.6 5.7 7-2zM41.2 155.2l-.4 .6 5.4 4 .3-6zM56.5 139.8l-3 1.7-1 3.7 .7 3.3-.4 1-4-2.3 4.4 10 1 5.3-.4 4 .7 1 9-2.3-2.3-5.4 .3-.3 1.7 1.3 .6-2.6 .7 0 .3 8-1.3 1-9.7 2.3 2 3.7 1.7 .6 15-4-1.7-4.6 1.7 0 1-4.7 2.7-4.3 0-1.7-1.4-1.3-4-1.7-2 0-3 2.7-.3-.7 2-3 0-4-1.3-2.7-2-2.3-.7 1.3-.3 4.4-.7 .3-4.3-7.7zM174.2 132.5l-2.7-.7-6 0-3.7 1.7-3.3 3.3 .7 2.7-1 .3 3.3 6.4 2 6.6 .7 5.4-.4 4.3 .7-2 2.3-2.7 5.4-1.6 2.6-7.4 4.7-5.3 1.3-3.7-1 1.7-4.3-8zM64.8 126.8l-1 3 0 9 2.7-5-.3-4.6zM65.2 124.8l4 4 1.6 .7 .4-6zM172.8 120.8l-4.6 1 2.3 6.7 3-.7zM41.8 119.5l-.6 2.7 0 9.3 2.3-4.3 .3-2.4-.6-3.3zM166.5 123.5l-1.7-2.3-5-3.7-7.6 1.7-1 2 9.3-2.7 1 .3 .3 1-.6 .7-11.7 2.7-.3 1 2 4.6 8.6-2.3 .7 .3 1-.6 4.3-.7 .7-.7zM42.5 117.2l0 .6 5.3 4 0-5.6zM140.8 111.8l-4 1 3 7 1.7-.3zM108.2 104.5l2.6 6.3 1 1 .7-1-1.3-6.6zM160.5 101.8l-2.7 1-1.3-.3-3 1.3-.7-.3-2.6 13.3 0 3.4 1.3-2.4 2.7-2.6 2-3.7-1-5 .3-.7 5 4.4zM66.8 101.5l-1 2.3 0 1.7-.6 .7-2.4-3-1.3-3-3 0-2.7 1.3-.6 1-.7 6.7-4-2 3.3 6.3 1.7 5.7 .7 6.3 .3-1.7 2-2.3 7-1.7 2-2 .3 1.4 4.7-.7 .3-.7 0-5-1.3 .4-2.7 2.6-.6-.3 2.3-4 .3-4-1.3-3zM69.2 102.2l8.3 8 1 0-.7 2 0 4-3-1.7-.3-1.3-.7 .3 3 5.3 2.4 6.7 1 6.7-.4 5.3 8.7-1.7 1-.6 1 0 .7 1.3-1.7 1-10.7 2.3-.3 .7 1.7 2.7-.4 .6-2.6-3.3-2.4 0-1.3-.7-7.7 2 4.7 3.4 4.3 4.6 6.7 10.7 1.7 0 .6-.7 1 .4 .7-.7 12.3-3 .7 1.3-1.3 1-.7-.3-8.7 2.3 0 1 2 3.4 14.7-3.4 .7-.6-1.4-4.4 1-.3 1-4 3-4.7 .4-2-1.7-1.3-4.7-1.3-2 2-1-.4 2.4-4 0-2.6-2-3.7 .3-.3 2 1 6.7 6.6 6 10.4 14.3-3.7 1.3 .3 .4 .7-1.4 1-10 2.3 2 4 6-1 8.7-2.6-1-5 4.7-10.4-.7-1.3-2.3-1-2.4 0-2.3 2-.3-.7 1-1.3-2 0-14 3.3-2-4.3-2.4-2.7-3 1-1.3-1-8 1.7-1 2 0 7.7-17.3 4.3-.7-.7 0-1.3 17-4 .3-1-1.3-4 1-1 2.3-6.7 2-2.3 .7-2.7-1-1.3-3.7-2-2.6-.3-2.7 2.3-1-.3 2.3-4 .4-3.7-2.7-5-.7 0-.6 3.7-.7 .6-2.3-3-1.7-3.6-2.3-.4 1-.6 0-3.4-1.4-6.3-1.3 0-.7 1 3 5.7-.3 1-3-4.4-2.3 0zM91.2 125.5l0 3.3-.7 .7 .3 4.3-.6 .7-1.7-4.7 1 0zM93.2 109.2l9 8.6 3 4.4 4.3 8.3 1.7 0 .6-.7 1 .4 .7-.7 1 .3 .7-.6 10.3-2.4 1.7 .4 .3 .6-2 1.4-.7-.4-10 2.7 2.4 5.3 15.6-3.6 1.7 .3 .7-3.3-1-2.7 .6-.3 6.7 6.6 2 3 3.3 7.4 1.4 0 .6-.7 .7 .3 .7-.6 .6 .3 3.4-1.7 1-4-1-7.6-3.4 .6-1-1.3-.6-2.7-.7 .7-.3 3-1 .3-4-7-4.4 .7-4.3 1.3-.7 4.7-.6 0-.7-1.7 .7-3.3 1.3-3.3 2.7-3.4-.4-2.3-2.3-3.7-2.7-.6-3 2.3-.3-.7 2-2.6-.3-1-10.4 2 1.4-2.7 2.3-2.7 1.3-3.3-.3-4-1.7-2.7 .7-.3 5.7 5 .3-7.3-2 0-.7 .6-3.3 .4-.7 .6-1-.3-2 13-.3 7.3-1.3 6-.7 0-4-7.6-2.7-.7-1.3-3.7-2.7-3.3zM99.8 86.8l-5 1-.6 1.4-.7-.7-1.3 9.3 0 6.4 1-2.4 2.3-2.6 .7-2.7-.4-4.3-1.6-3 .6-.4 5.7 5 .3-5-.3-1.6zM67.5 82.2l-1 5.6 0 9 3.3-6-.3-5zM68.8 80.8l-.3 1 5 4.7 .7 0 0-6-1.4-.3-2.6 1zM43.2 76.5l0 2-.7 1 .3 10.7 .7-2 2-2.7 0-4.7zM44.8 74.5l-.3 1 5 4 0-5.3-1-.4-.7 .7zM68.8 56.8l-3.3-1-4 0-3.3 1.7-1 2.3-.4 5.4-4-2.4 4.4 10.4 1.3 9.3 .3-2 2-2.7 5-1.3 2.4 0 2-1.3 1 .6 4-.6 .6-1 0-4-1.3 .3-2.7 2.7-.6-.4 3-5.3 0-4.3-2.4-4.4zM72.5 58.2l7.7 7.6 1.3-1.3 .3 .3-.3 5-.7 .4-2.3-1.7-.3 .3 3 6 1.6 5.4 1 9.3 1.7-4 2-1.3 6.7-1.4 1.3-1 .3 .7 6.4-1 1.3-3.7-.3-1.3-3 0-3 3-1 0 4-7 0-3.3-1.7-3.7 .3-.7 7.7 7.4 1.7-.4 0 3.7-1 .3-1.7-.6 3.7 7.3 2 8.7 0 6.6 .6-3 2.7-3 6.7-1.6 1-1 .6 .6 1.7 0 6.7-1.6 1.3-4-1.7-1-3.3 0-3 3-1 0 4.7-7.7 .3-3-1.3-2.7 .3-1 7.7 8 1.3 0 .3 2.4-1.6-.4 2 3.4 2.6 7 1.4 7 0 6 .6-2.4 2.7-3 6.7-2 2.3 0 9.3-2.3 1-3.3-3.6-2-2.4 0-4.3 3.3-.3-.3 5.3-7.4 .7-3.3-1-2.7 .6-.3 3.4 3 4.3 5.7 1-.7 .3 2 3.7 7.3 2 7.4 0 10.3 1-3 2.7-3 4.6-1 1.4-1.7 .6 1 9.7-2 4-2.3 0-1.7-4.3-2.6-3.7 0-3.7 3-.3-.4 5.7-6.6 1.3-3-.3-3 1 0 6.3 7.3 3 5.3 1.3 4 2 1.7 1 0 .4 1-9.7 2.7-1-.4-3.3 1.4-1-.4-.7 .7-3.7 .3-.3 .7-1-.3-3 12.3-.7 5.3 2-3.3 2.7-2.3 2.7-3.7-.4-4.7 1-.3 4.7 5 4 5.7 2.7 5.6 2 6.4 18-4.4 1.3-.6 .7-1.4 3.6 5.4 2.4 1-.7 1-1-.4-2.7 1.4-3.3 .3-.7 .7-11 2.6-3.3-1.6-7.7-1.4 2-.6-1-2.7-.6-4.3-2.7-3.7-2.7 0-.6 .7-3 .3-.7 .7-3.3 .3-.7 .7-4.3 1-1 3.3 3.3 3.3 5.7 7.4 0 1.6 4.6 8.4 2 8 .4 4.3-.7 4.3 1-2.3 2.7-2.7 11.3-3.3 6.3-7-2.3-2-3.7-.3-2.3 2-1.3 0 5.6-6.7 .7-1.3 0-3.4 7 7.4 2.7 4.3 2.3 6.7 1 0 1.3 1.3-1.3 1-9 2-.3 .7-1.7 0-2.7 1.3-1.3-.3-.3 .6-1.7 0-2.3 5.7-2.4 10.7 1.7-2.7 4.7-5 .6-5 5.7 5.3 3.3 4.4 2.7 5.3 1.7 5.3 1.3 .4 1-1 .7 .3 14.6-4.7 1-.6 .4-1.7-2-5.7 .3-3.3 2.7-4.7 7-6 .6-4 1 .4 3.7 4 3 4.3 2 4.3 1.7 6 1.3 0 .7-.6 .6 .3 2.7-1.3 11.7-3.4 .6-1.3-.3-3-2-6 2.7-4.7 2.3-2.3 6-3.7 1-3 3.3 3.4 2.4 3.6 2 4.4 1.3 6.3 11-3 5.3-2.3 0-4.4-2-5.6 3.4-5.4 7.3-8.6-2.3-3-1.4 0-4.3-2-7.3-.7 0-7-1.4-5.3-1.6-3.4-4-2.3-17 4.3-4.4-2-6.3-.6-2-6-4-3.7-7.3 1.3-.7 .7-1.7-.7 2.4-4.3 9-7.3 .6-2.7 3.4 3.3 3.6 6.7 2.4 9.7 16.6-4.7 .4-4.3-1.7-6.7 10-14.3 0-1-1.7-2-6.3-2.7-7-.3 0-5.7-1.3-6-1.7-3.7-3.3-2.3-12.7 2.3-.7 .7-3 0-.6 .7-4.7-2.4-4-1-3.7 0-1.6-4-3.4-2.3-7.3 1-.7 .7-1-.4-.6 .7-1.4-.3-.6 .6-1-.3-.7 .7-1-.4-2.7 1-5-2.3-3.6-1-2.4 .3-.3-.3 1-.3-.7-2-1.6-2-2.4-1.4-17.3 3-3-1.6-5.7-1.7 .7-1-.7-1.3-3.6-2.7-15.7 3-8.7-3-2 .3 0-.6 3-.4-.6-2-2.7-2-8 1.4-1-.4-.7 .7-1-.3-7 1.3-2.6-1.7-2.7-.6-5.3 0-3.7 2.3-1.3 1.7-.4 2-4-.4-11 2.4-2.6 0-1 .6-7.7-2.6-4.3 .3-2.4 1-1.6 1.7-1 4.3-3.4-1.3-2 0-.6 .6-1.4-.3-2.3 1-1.3-.3-.7 .6-1.3-.3-.7 .7-1-.4zM267.8 155.5l-4.6 2-.7-.3-3 1.3-1-.3-.7 .6-5 1-2.6 1.4-5-2-6.4-1 9.4-3 2.6-3.4 5-4 0-.6-2.6-1.4-2.7-.3-2.7 1.7-2 2.6-.3-.3 1-2 6.3-5.7 2-4.3 3.4 3.3 4 6 2 6.7 2.6 .7zM304.5 144.8l-.7 1-15.6 4.4-3-.7-2.4-1.3-4.6-.4-.7-.6 5.3-2 6.4-9-2.7-.4-3.7 2.7-.3-.7 3-3 4.3-2.6 2.4-3.4 1.3 .7 3 4 2 3.7 1.3 5.6 3 .7zM222.2 122.8l3.6-6.3 6.7-6 .3-4 4.4 4.3 3.3 5 2.7 6.7 1 5.3 18-4.6 .3 2.6 4.3 1.4 1.4 1 0 .6-17.4 4.7-7.6-2.7-3.4 0-.3-.3 1.3-.3 .4-1-1.7-4.4-.3-4.3-4.7-3.3-1 1.3 .7 1-.4 1-10 2-1 1zM248.2 98.2l-11.4 3-1-.4-.6 .7-3.4 .3-.6 .7-1.4-.3-.3 .6-6.3-2.6-4-.7 1.3-1 10.7-2.3 4.3-1.7 1.3-1.3 0-1.4-4-2.6-3 0-2.3 2-1.7 .3 1-1.7 6-5.3 1.7-4 4.7 5.3 3 5.4 1.3 4.3 3 1zM286.2 89.2l-.4 .6-6 1-2.3 1-1-.3-.7 .7-5 .6-.6 .7-1-.3-.7 .6-5.7-2.6-4-.4-.6-.6 9.3-2.4 4-6-1.3-1-3 0-2.4 2-1 .4-.3-.7 4.7-4.3 3-1.4 2-4 4 5 2.3 4.7 1 4 3.7 1zM209.2 79.8l-.7 1-3.3 0-3 1.4-1.4-.4-.3 .7-1.3-.3-.7 .6-3.7 .4-.6 .6-1.4-.3-2.6 1-2.4-.3-4-2-6.3-1 20.7-4.7 1.3-1 .3-3 5 5.3zM248.5 71.5l-.3 1-7 1-.7 .7-1.3-.4-.7 .7-1-.3-.7 .6-7.3 1-3.7-2-6.6-1.3 17.6-4 1.4-2.7 2.3 2.4 3.3 .6zM175.5 72.8l-.3 .7-3.4 .3-.6 .7-3.4 0-.6 .7-7.4 1-2.6 1-1.7 0-3.3-2-7-1.4 17.3-3.3 3.7-1.3 1.6 .3 0-4.3zM214.8 65.2l-.6 .6-5 .7-.7 .7-1.3-.4-.7 .7-3 0-.7 .7-1-.4-.6 .7-1-.3-2.7 1-1.3 0-3.7-2-6.7-1.4 19-4 1-.6 .4-1.7 3.3 3 4.7 1.7zM145.5 66.2l-1 1-1.3-.4-.7 .7-3.3 0-.4 .7-3.3 0-.7 .6-9.3 1.7-3.7-2-3.6-1-2.4 .3-.6-.6 21.6-4.4 2.4 .4-.7-4.4 3.7 3zM183.5 58.8l-.7 1-1-.3-.6 .7-3 0-.7 .6-12.7 2-3.6-2-2.7-.3-2-1 14.3-2.7 3.7-1.3 1.3 .3 .4-2.6 4 4zM119.8 58.8l-.3 2.7-1.7-.7-3 0-.6 .7-1.4-.3-.6 .6-3 0-.7 .7-1.3-.3-.7 .6-3 0-.7 .7-1.3-.3-2.7 1-1.6 0-2.7-1.7-4.7-1-.6-.7 18.6-3.6 4.7 .3-1-4.3 .7 0 6 6.3 1.3-1zM154.5 53.5l-.3 .7-9 1.6-1.4-.3-.6 .7-3.7 .6-1-.3-1 .7-9.3-3.4 18-3.6 2.3 .3 0-2.7 1 .4z"/><path fill="#07356d" d="M220.8 464.5l-9.3 5 1.7 2.3 4.6 3.4 .7-1.7 0-2.7zM226.8 461.2l-2 2-.3 5.3 2.3 3-1.6 0 3 5.3 2 7.4 5-3-1-2-3.7-4 1-.4 .7 .7 1.3 0 1-2.7 .7 .4 .3 1.6 2-1.3-1.7-2.3-.3 .6-.7-.3 1.4-3.7-5-3-2.7-3.6zM195.2 448.2l-8.4 4 1.7 2.3 4.3 3zM201.5 444.2l-1.7 2-.3 4.6 2 3.4-2-.4 3 5.7 1 3.3 0 2.4 .7 1 5-2.7-.7-2-4-4.3 1-.4 2.3 1.4 1.4-3.4 .6 .7 .4 2.7 2.3-1.7-2-3-.7 .7-.3-.4 1.3-4.6-4.3-1-4.3-4zM230.8 443.5l-9.6 5 2.3 2.7 4.3 3.3 1.4-6.7zM235.2 441.2l-.7 4.3 .7 2.3 1.6 1.7-1 .3 3.7 7 1 7 6-3.3 1 1.3-5 3 1.7 1 6.3 6.7 1 0 12.3-7-.3-2-3-3.7 1.7-.3 .6-1.7 .7 .4 .3 1.3 1.4-1-.7-2-1.3-.3 1.6-3.4-2.3 1-5.3-5.6-3.7-1-.7 4.3 1 2.7-3.3 0-1.3 1.3-2 .7-1 1.3 0 2-4.4-5.3 .7-.4 1.7 .7 1.3-3.3 .3 3.3 2.7-1-2-3-.7 .7-.3-.4 2-4.3 0-1.3-4.3-2.4-3.7-4-2.3 .4zM225.5 439.2l-1-1.4-1 0-4 2 .3 2.4 5.7-2.4zM234.2 434.8l-2.4-1.3-2.6 3.7 .3 1-1 .3-.3 1 4.3 .7 .3-1.4 1.7-2zM171.2 432.2l-7.4 3.6 1 2 4.7 3.4zM181.2 427.5l-2.7 .3-2 2-.3 5 1.6 2.7-.6 .3-2-1 3 5.7 1.3 7 5.3-3 0-1-4.6-5.3 .3-.4 3.7 1.7 .6-2.3 .7-.4 .3 3 1 .4 1.4-.7-.7-3.3-1-1-1 1.3-.3-.3 1-2.7-.4-5-1.6-1.7zM203.5 427.2l-8.3 4 1.3 2 5 3.6zM215.2 421.5l-4.4 .3-2.3 2.4-.3 4.3 .3 1.3 1.7 2-.4 .7-1-.7 0 1 2.7 4.7 1.7 8 5.6-3-2.3-4.3-2-2 .7-.4 2 1 1-2 .6 .7 .4 2.3 2.6-1.3-1.6-3.3-1.7 0 2-4.4 0-2.6-3-3.7zM241.8 420.5l-9.6 5 2.3 2.7 4.3 3.3 .7 0 .3-5zM148.8 417.5l-6.6 3 .6 1.7 4.4 3.3 .6 0 0-3.7zM237.5 416.2l-.3-.7-2-.3-10.7 5.6-1 0-.3 .7-1 0-.4 1 1.4 .3 12.6-6.6zM204.2 420.8l2.6 2.4 .7-2 1.7-2 3.3-2.7 1 .3-1 1-.3 2 6.6-3.3-3.6-.3-1.7 .6-.3-1.6-2.7-1.7-4.3 .3-2 2.4zM158.8 412.5l-3 .3-1.6 2.4-.4 3.3 2 3.7-1 .3-2.3-1.3 2.7 5 1.6 7 5.4-2.7-1-2-3.7-4 .3-.3 4 1.6 1-3.3 .7 .7-.3 1 .6 3 3.4-1.7-3-3.7-1 0 1-2.6-.7-3.4-1.3-1.6zM242.5 409.5l-3 5 0 1.3 4 1 2-3.3 2.7-2.7 .6 .4-.6 1.3 0 2.7-1.7 1.6-.7 5 5.4 10.4 1 3.6 .3 5 6-3.3 1.3 1-.6 1-5.4 2.7 0 .6 8.4 8.7 1.3 0 12.3-6.7 .4-.6 1.3 1.3-6 3.7 7.3 7.6 2.4-.6 10.3-6-2.3-5.7 2.6-6.3-2-1.4-2-3.3-2.3-1.7-4.3-.6-1.4 4.3 1 3-1.6 .3-4 2.7-2-3 1-.3 1-2.7 .6 3.3 1.4-.6 0-3.4-.7 1-1-1 0-1 2-3.6-2.7 .6-2.6-4-2.7-2.3-3.7-1-1.6 4.7 .6 3.6-2 .4-3.6 2-1 1.6-3.4-4.6 1.7-.4 1-2.6 .7 .6 0 3.4 2-1 .6-3-1 1.3-2.3-2 2.7-5 .3-2.3-5.3-2.7-2.4-2.7-2.6 0-.7-.6 2.3-1.4-.3-3-1.3 0-2.4-1.3-3.6 0zM127.5 403.5l-6 2.7 1.3 2 3.7 2.6zM232.5 400.5l-1.3 1.7-.4 4.6 .7 1 2 .4zM188.5 399.5l-2-.7-2.3 .4-2.4 2.3 0 4.7 1.4 1.6-.4 .7-3-1.7-2.3-.3-11 5.3-1 0-.3 .7 7.3 5.7 5 5.3 12.3-6 .4-1.3-3.4-4.4 .7-.3 1.7 1 1-2 .6 .7 .4 3 2.3-1 .3-1.4-2-3-1.3 1.4-.3-.4 2-4.3 0-1.3-1.4-3zM137.2 398.2l-2.7 .6-1.3 2 0 3.7 1.6 3.3-.6 .4-3-2 2.6 5.6 1.4 6.4 5.3-2.7-.3-1.3-4.7-5 .3-.4 3 2 1.7 .4 1-2.7 .7 .7 0 4 4-1.7-.7-1.7-2.7-3-1 1.7-.3-.3 1.3-3.4 0-1.6-1.3-2.7zM253.8 395.5l-1 0-8.3 4.3 1.3 2 5.7 4.4 .7-5.4zM215.2 386.5l-5 0-2 2.7 0 5-3.4-.4-11.6 5.7 4.6 3.3 6.7 7.4 4.3-1.4 .7-1 7.7-3.6-1.4-3-1.6-1.7 .3-.3 1.3 .3 .7-1 .7 .7 .3 2.3 2.3-1-1.6-3.7-1.4 0 2-4 0-2.6-.6-1.4zM118.5 385.8l-1 .7-3-.7-1.3 2.4 .3 3 1.3 2.6-.3 .7-3.7-2.3 2.7 5.3 1.7 6.3 5.3-2.6-4.7-5.7 .7-.3 3.7 2.3 1-1.7-2-5.6zM167.8 386.5l-2.3-1-2.3 0-1.4 .7-1.3 2 0 3.6 1.3 2.4-.3 .3-3-1.7-2.7-.3-11.6 5-.4 1 5 3.3 6.7 7 1 0 12-6.3-3.7-5 .4-.3 2.3 1.3 1.7-2.7 .6 4.7 3-1.3-2-3.7-1.6-.7 1.3-4.3-.3-1.3zM262.2 384.5l-2 2.3 0 2.4-1.4 1.6-.3 4.7 1 2.7 1.7 1 3.6 7.3 1 5.3 0 3.7 6-3.3 1.7 1-.7 1-7 3.3-.3 .7 6.3 5.6 3.4 4.7 1 0 14-7.3 .6 .6-.6 1.4-6.7 3.6 5.3 5 2.7 4 1 0 12.7-7 .6 1-.6 1-6 3-.4 .7 4.7 4.3 2.3 3.4 7-3.7 1.4-2.3 0-3.4-1.7-4.6-1.3-1.4-4-2-3.4 1-1.6-2.6 .6-1 1 1.6 .7-.3-.7-2.3-.6 1-.4-.7 2-4.7 1.4-1.6-1 .3-1.7-1.7-1.7-3.6-2-1.7-3.3 0-.3-.3 .6-.7-.6-.3-3 .3 0 2.3-1 3.4 1 3-2 1.6-2 .7-2.4-3.7 .7-.3 .7-2.7 3.6-7-2 1-1.3-.3-3-5.3-1.7-1.4-2.3 .4 0-1.4-.7-.3-3.3 .3 .3 2.4-1 2.6 0 3.4 .7 1.3-5 2.7-.7-.4-2.6-4.3 1.6-3 .7 .7 0 4 2-.7 0-1.7-2.7-3 3.4-5.6 .6-3.4-.6-1-2-.3-3-2-2-2-4.4 .3 .4-1 2.6-1-.3-2.6zM220.2 386.8l4.6 3.7 6.4 7.3 2.3-1 0 1.4 1-2 3.7-2 .6-1.4 0-2.6-2-5.7-3-2.3-2-.7zM192.8 373.5l-4 0-1.6 1.7 0 6.3-3.7-1.3-12 5.3 1 1.3 3.7 2.4 6.6 7.3 11.7-5.7 .3-1.3-2.3-3.3 1.3 0 1-1.7 .7 .7 .3 3.3 2.4-1 0-1.3-1.4-2-1.6-.7 1.6-3.7 0-2.6-2-2.7zM151.2 373.8l-2-1-3 0-2 1.7-.7 4 2 3.7-.3 .3-6-3-13 5.7 1.3 1.6 4.7 3.4 6 7 13-5.7 .6-.7-.6-1.6-3.7-4.4 .7-.3 3 1.7 2.3-6 .3-2.7zM198.2 373.5l.6 1.3 6.4 5 3.6 4.7 2.4-1 1.3 1 3-1.7-2.3 .7-1-.3 4-2.7 .3-2-2-7-2.7-2-3-.7zM131.5 368.8l-2.3 .4-1 1.3 0 1 1.6 1.3 1 0 1-3zM111.8 368.8l-6 2.7 5 4.3zM184.2 367.2l3.6 4.6 3-1.3-2.3-2.3zM267.5 366.8l-9.3 4.4 1.6 2.3 2.4 1.3 3 3zM121.2 362.5l-2 .7-1.7 2.6 0 3 1.7 3.4-.7 .3-3.3-2 2.3 4.7 2 7.3 5.3-2.7-4.3-5.6 .3-.4 4 2.4 1.4-3.4 .6 .7 0 5.3 4.4-1.6-4-5-.7 .6-.3-.3 1.3-3.3-.7-3-2.6-2.7zM177.2 360.5l-3.7 0-1.7 1.3-1 3.4 .4 2 1 1.3-.4 .3-3.3-1.3-1.7 0-12 5.3 4.4 3.4 7.3 8 13-5.7-.3-1.3-2.7-3.7 .7-.3 1 .6 .6-.6 2.7-7.7-.7-2zM275.8 355.8l-2.3 2.7-1 7.3 1 2.7 .7 .7 1-.7 1 1 3.3 6.7 1.3 5.3-.3 5.3 .7 .4 6.3-3.7 1 .7-.3 1.6-8 3.7-1.7 1.3 3.3 2.4 4 4 4 6 15.4-7.7 .6 .7-.3 1.3-9 4.3 5.7 5.4 3 4.6 1.6 .7 13-7 .7 1-.7 1-8 4.3 5 4.7 3 4.3 7-3.6 1-1.4 .7-3.3-.7-3.3-1.6-3.7-3.4-2.3-2.3-.7-1.7 .3-.6-4.3-1-.3 1.6-4.4 3-4.3-1 .7-2.6-2.4-1.7-4-2-.3-3.3 .7-.4-.7 2.7-1.7-6-.3-1.7 2 0 6.3 1 2.7-1.6 1-1.4-1.3 0-1 1-.7-.3-2-1-1.3-.7 3-1-1.7 2.7-6 2-2.3 1.3-3.7-3.3 1-1.7-1.7-2-4-1.6-.3-3 .7-.4-.7 3-1.7-1-1-3.3 0-3.7 2.7 .4 3-.7 4.3 1 2-3 2-1.7-2 0-1 1.4-1 0-1.3-1.4-2.3-.6-.4-.4 3.7-1.3-2.3 3-6.7 2.7-3.7 .6-2-.6-3-1.7-2-1.7 .7-1.6-1.7-5-.3-2.4 .7-.3-.7 5.7-3.3-3.4 0zM354.8 351.8l-1.3 2-11.7 5.7 6.4 6 3.3 6 1 0 6.7-3.7 1.6-2.6-.3-6.7-1.7-4zM152.5 351.2l-4-.7-1.7 1-1.3 2.3 1 5.7-3.3-2-2.4-.3-12.3 5 0 .6 5.7 4.4 5.6 6.6 1 .4 1.7-1.4 10.7-5-1.7-3.3-2-2 .3-.3 3 1.6 1.4-3 .6 .7-.3 5 1 .3 3-1.3-2.3-4-2-1 1.6-4.7-1.3-3zM102.5 350.2l-3.3 .6-1.4 2.7 0 2 1.4 3-.4 1-4-2.3 2.7 5 1.7 7 5.6-2.7-4.6-5.7 .6-.3 4 2.7 2.7-6.7 0-1.7-1.3-2.3zM309.5 340.2l-4 3.3 .3 5.3 2 2.7-9.6 4.7-1 0-2.4 1.6-2.6 .7-.4 .7 8 6.3 2.4 2.7 3.6 6.3 16-7.7 .7 .7-.7 2-1 0-9.6 5.3 6.6 6 3.7 6 14.3-7 .7 .7-.3 1.3-10 5 4 3.7 5 7 7.3-4 1.3-2.3-.3-5.4-1.7-4.3-2.6-2-2.7-1-1.7-1.7-.6-2.3-1.4-1.7 2-5.3 3-3.3 1.4-3-1.4 .6-1-.3-2-2-1.3-2.7-3.7-.3-2.3 .7-.7-.7 4.7-2.7-.3-.3-4.7 .3-3.7 1.4-2.3 2-.3 1.6-1.4 1-.3-1 2-4.6 3-3.4 2-3.6-.7-3-1.3-1.4-2.3 .4-1.7-1.4-2-.3-5 .7-.7-.7 5-2.7-4.6 .4zM132.2 339.2l-1.7-.7-3.7 .7-1.3 3 .3 2.6 1 2-.3 .7-3.3-2.3-3-.4-11.7 4.7 0 .7 6.3 5 4.7 5.3 11.7-4.7 1.6-1.3-3-4 .7-.3 2 1.3 .7-.7 2.3-6.3-.7-2.7zM196.8 334.8l-1.6 0-11 4.7 7 6.3 3.6 5 2.7-1.3 .7 .3-1 3 .3 3.7-3.3-.7-11.7 5 5.7 4.7 5.6 6.7 12-5.4 0-1-2.3-3.6 1.3-.4 3-7.3-.3-2.7-1.7-2-2-1-3.6-.3 2.3-2 0-3-2-6zM158.8 327.8l-3-.6-2.3 1-1.3 2.6 .6 4.7-2.3-1.3-2.7-.4-11.3 5 4.3 3.4 6.4 7 12.3-5 0-1-2.3-3.4 .6-.3 1.7 .7 2.7-6.4 0-1.6-1.4-2.7zM112.8 324.5l-2.6 .3-1.7 1.7-.3 4.3 1.3 2.4-.3 1-3.7-2.7-3.3-.7-10.7 4-1.7 1.4 3.7 2.6 9 9 12.3-4.6 .7-1.7-3.7-5 .7-.3 2 1.6 1 0 2.3-6 0-2.6-2-3zM175.8 323.5l-2.6 .3-10 4 7.3 6.7 3.7 4.7-1.7 2.6 .7 5-.4 .4-2.3-1.4-2 0-11.7 5 4.7 3.7 6.7 7.7 12.3-6-1.3-3-1.4-1.4 .4-.3 1.3 .7 1-1 1.3 4.3 2.7-1.3-2.3-4.4 1.6-.3 1.4-3.3-1 0-2.7 3.6-.3-1.3 1.6-3 0-2.3-.6-1.4-3-2.6-4.7-.4 1-1.3 6-2.7-1-6.3-1.7-3.3zM86.8 314.5l-2 0-2 1.3-.6 4.4 1.3 3.3-.3 .3-4.4-2.6 2.4 5 2 7.3 .3-.7 5-2-4.3-5.6 .6-.4 4.4 3 2.6-6.6 0-1.7-1-2-2.3-2.3zM143.2 314.5l-2-1-3 0-2 2-.4 4.3 1.4 2-.4 .7-2.6-2-2.7-.7-12 4.4-.3 .6 3 2.4 8.6 9.3 9.4-3.3 3.3-1.7 0-1.3-3-4.4 .3-.3 2 1.3 .7-.6 2.3-6-.3-3zM263.2 306.5l-5.7 1-3.7 3 .4 6.3 1-.3 .6 .7 4.4 9.3 1 7.3-.4 3 1.4-1.3 6-2.7-2.7-6.6 2.3-5.4 3.7-5 1-3.3-2.3-4.3-1.4-.7-2 .3-1-1zM117.2 304.2l-3.4-1-2.3 1.3-1 2.7 1 5-4.7-2.7-2 0-12.3 4.7 5.3 4.3 7 7.7 2.4-2 10-4.4-2.4-4 .7-.3 2 1.3 .7-.6 .6-3 1.7-3.4-.7-3zM144.5 293.5l-3.7-.7-2 1.4-1 2 .4 4.6-2.4-1.3-2.6-.3-11.7 4.6 7.7 7 3.6 4.7 2-1.7 10.4-4.6-2.7-3.7 .7-.3 1.3 1 .7-.4 2.3-5.3 .3-2.7-1-2.3zM304.5 292.8l-7.3-1-5.4 1.7-3.3 2.7 0 3.3 1.7 1.7-.4 .6-16.3 6.7 6.3 5.3 6 8 1.4 3.7 1-.3 .6 .6-.3 1.4 1.3 3.6-.6 1.7-.7-.3-1 1-2.7 .6-1 1-.6-.3-1 1-2.7 .7-1 1-5 2 1 1.6 3.7 2.4 4 4 4 5.6 1.3 3 1.3 0 1-1 2.7-.6 12.7-6.4-1-2.6-2.4-3.4-.3-2.3 2.7-5.3 4.3-5.7-.3-3.7-1-1.3-3-1.3-9-.7 1.6-1.3 6.7-2.7 0-1.3-2.7-6.4 2-4.3 4.4-5.3 1-2.7-1-3.3zM161.2 289.2l-12.4 4.3 6.7 6 4 5.7 4-2.4 .7 .4-1.4 1.6 0 5.7-3.6-1.3-12 4.6 7.3 7 3.7 4.7 12.3-4.7-2.3-4.6 1.6-.4 2.7-6 0-3-2.3-3-2-1-3.4-.3 .7-1 1.7-.7-.7-5.6-1.7-3.7zM98.5 288.8l-1.7-.6-2.3 .3-1.7 1.7-.3 5 1.3 2.3-.3 .3-4.3-3-2.4-.6-10.6 4-2.4 .3-.3 .7 3.7 3 9 9.6 13-4.6 .6-.7-.6-1.7-3.7-4.6 .7-.4 3.3 2.4 3-7.7-1.3-3.3zM128.2 278.8l-2-1-3 0-2 2 0 6.4-5-2.4-12.7 4.4 0 .6 8.3 7.7 3.4 4.3 1.3 0 6.3-2.6 5-1.4 .7-1.6-3.3-4.7 .6-.3 2 1.3 3-6.3 0-2.7zM70.2 277.8l-1.7 0-2 1.4-.7 4.3 1.4 3-.4 1-5-3.3 2.7 5.3 1.7 7.3 1.6-1.3 4-1.3-3.6-5.4 1 0 2.6 2.4 1.4 .3 2.6-6.7-1-3.6-2.6-2.7zM357.5 274.2l-6.3 2-9.4 4.3-7.3-2.3-5 0-2.7 .6-6 4 .7 1-.3 1 3.3 2.4-.3 .6-15.4 6 0 .7 4 2.7 4.4 4.6 2.3 3.7 1.7 4.3 1.3 .7-.7 1.7 .7 1.6 2.7 2-.7 1-9.3 3.7-.4 .7-1.3 0-.7 1-2.6 .6-1 1 4.6 3 4.4 4.7 3 4.7 1.3 3.3 1.3 0 .4-.7 4.6-1.6 .4-.7 8.6-4 1.4 .7 0 1 2 1.6-.7 .7-14.3 6.3 .6 1.4 1.7 .6 5.7 5.4 3.6 5.3 1 2.7 15-7-1.3-5-2-3.7 2-4 5.7-6.7 0-3 3.6 2 3.7 3.7 2 2.7 2.7 5.6 8-3.6 1.6-3-.6-8.4-1.4-3-4.3-3-3.3 .7-10.7 5.3-1 0-.7 1-2.6-1.3-2.4 .3-1-1-5-.3-2 .7-.6-.7 3.3-2-4.3 .3-4 1.7-1 1-1 0-1.7-2.7-.3-1.3 1-2.3 6.6-8 .4-4 1 0 7 6.3 2 3 2.3 5.7 1 0 2.3-1.7 .4 .3 11-5.3-.4-3.7-2.6-4.6 0-1.4 2-3.3 6.3-6 0-2.7 .7-.3 1.3 1 .3-.3-1.6-2-2 .3-5-2-6.4 .3-1-.6 1.7-2.7 .3-4.7-.6-3.6-1.7-4zM342.5 280.8l4 3 4 4.7 2.3 4.7 .7 3 1 0-1 2.6 3.3 1.4 1.4 1 0 .6-15.4 7-4-1.6-3.6-.7-4.7 .3-1-.6 .7-.7 6.3-2.7 0-2-2.7-6 2.4-4.3 4.6-4.7 1.4-3.3-.7-1.3zM101.2 267.8l-3.4-.3-2 1.3-.6 2 0 3 1 1.7-.4 .7-5.6-3-13.7 4.6 3 2.4 9.3 10 2-2 4.7-2.4 6-2-2.7-4.3 .4-.3 3 2 3-8-1-2.7zM129.8 258.2l-4-.7-2 1.3-1 3 .7 3.7-3.7-2-1.6 0-.7 .7-2.3 .3-9 3.3 7.3 7 4 5.4 2-2 10.3-4.4-1.6-3 2.3 0 2.7-6.6-.7-3.4zM146.8 254.2l-12.6 4.3 6.6 6 4.4 6 3.6-2.7 1 .4-1.6 2.6 0 4-.7 .4-2-1-1.7 0-11.6 4.3 5.3 4.7 6 7.6 12.7-4.6-2.4-4.7 1.7-.3 2.7-6 0-3.4-.7-1.3-2.7-2.3-4-.7 .4-1 1.6-.7-.3-3.6-2.3-5.7zM247.5 254.2l-8 0-2 .6-3.3 3 .3 4.4 4 8 1.7 5.6 .3 8.4 2.7-2.4 4.6-1.6 0-1.4-2-4.6 7-12.7 0-2.7-1.6-3zM82.8 251.8l-2.3-1-3 1-1.3 2 0 3.7 1 2-.4 1-3.3-2.7-2-1-2 0-13 4.4 6.3 5.6 6.4 7.7 1.6 0 .7-.7 11.3-3.3 1-.7-2.6-4.6-1.7-1.7 .3-.7 2.4 2 1.3 .4 2.7-6.4-.4-3.3zM112.2 241.8l-1.7-.6-2.3 0-1.4 .6-1.3 2 0 5.7-3.7-2.3-2 0-12.3 4.3 7.3 7 4.4 6 1.6 0 .7-.7 9.3-2.6 2-1 0-1.4-2.6-4.3 .3-.3 2.3 1 2.7-6.4-.3-3.6zM284.2 240.8l-6.7-.3-4 1.3-3.3 2.7 .3 3.7 1 1-.3 1-3.4 .6-.3 .7-1.3 0-12 4.7 8.6 8.3 3 4.7 2 5 1.7-.7 .7 .3-.4 2.7 1.4 2.3-.4 .7-3.3 1-1 1-1.3 0-.4 .7-3.3 .6-.3 .7-3.4 .7-.6 1-1-.4-.7 1-1-.3-.7 .7 1 1.6 2.7 1.7 4 4 3 4 3.7 6.7 14-5.4 1.3-1 .3 .4 1.4-1 0-2-2.7-6.4 2.7-5.3 5-6.7-.7-4.3-3.7-2.3-9-.7 1.4-1.3 6.3-2.4 0-1.3-2-4 0-1.7 3-5.3 4-5 .7-3.3-1-2-1.7-1.4zM54.8 240.5l-3-.3-2 1.3-.6 4.7 1.3 3-.3 1-5.4-4 3 7 1.4 6 2.6-2 3-.7-3-4.7 .7-.3 4 3 2.7-6.7 0-2.3-1-2zM85.2 230.8l-3.4-.3-2 1.3-.6 2.7 0 2.3 1 1.7-.4 1-5-3.3-2.3 0-12.3 4 7 6.6 5 6.4 2.3-2.4 4-2 6.7-2-1.7-3 .3-.6 1.7 1.3 1.3-.3 2.4-6 0-2.4-1-2.3zM341.5 225.2l-2.3 0-2.4 1.3-.6-.3-11.7 4.6-3.3-2-4-1-5 0-3 1-3 1.7-2.4 2.7 0 .6 3.4 2.7-.4 .7-1.3 0-.3 .6-6.7 2-.3 .7-7.7 2.3 2.3 1.7 6 6.3 3.4 6 1 3.7 .6 0 1 2.3 2.7 2-1 1-6.7 2.7-1.3 0-.3 .7-1.4 0-.3 .6-1.3 0-2.4 1.4-1.3 0-.3 .6 7.6 7.4 4.4 7 1 3 15-5.7 1-1 0-2.7-2.4-5 0-1.6 2.4-4.4 5.6-6.3-.3-4-5.3-2.3-7.4 0-.6-.7 6.6-3 .4-.7-2.4-5.3 0-1.7 2.7-4.3 5-5 .7-4.7 3.3 2.4 4.3 5 2.4 4.3 1.3 5 .7 .3-.4 .7 3.4 1.7 1.6 1.6-10.6 4.7-4.4 1-.6 1 3.3 2.3 4 4.4 3.7 6.3 .6 3 1 .7 14.4-6.4 0-3.3-2.4-5 0-1.7 1.4-2.3 7.3-7.3 0-2.7 1.7 .3-.7-1-6.7-2.6-7.3 0-1-.7 1.3-2.3-.3-7.4-2-5.3zM114.5 221.8l-1.3-.6-2.7 0-2 1.6-.7 2.7 .4 3.7-3.7-2-2 0-11.3 3.3-.7 .7 6.3 6 5 6.6 3-2.6 9.4-3.7-1.4-2.7 .7-.3 1.3 1 3.4-8-.7-2.7zM39.2 222.2l4.3 3.6 0-4.6zM132.5 218.5l-3 .3-.7 .7-9 2.3-.3 .7 6 5.7 4.7 6.6 2.6-2.3 2-1 .4 .3-1.7 2.7 0 4.7-.3 .3-2-1.3-2-.4-12.4 4 5 4.7 6.4 8.3 2.6-.3 .7-.7 9.7-3-2-5 1.6-.3 3-7-.3-2.3-1.3-2.4-2.4-1.6-4-.7 2-1.7-.3-3.6-2.3-5.7zM69.5 220.2l-3-1.7-2.3-.3-3 3 0 1.6-.7 .4 0 8.6-6.3 2.4-1.7 0-1.3 1 1.3 1.3 1 0 .7-.7 2.6-.3 .7-.7 9.3-2.6-.3-1.7-3.7-5.3 .4-.4 3.6 2.7zM55.2 210.2l-1.7 0-2.3 2-.4 4.6 1.4 3-.4 .4-6-4 1.4 2 2.6 7 1 7.3 7.7-2.3-4.3-7 1 0 1.6 1.6 1.7 .7 3-7.3-1.3-4.7-2-2zM99.8 210.8l-1.3-1-2.7-.6-1.6 .6-2.7 3.7 0 9-6 2.3-3 .4-.3 .6 .6 1 1.7 .4 .7-.7 12-3.3-2.7-5.7 .3-.3 1.4 1 1-.4zM87.8 200.8l-3.3 0-1.7 1.4-1 4 1.4 3.3-.4 .3-5.3-3.3-2 0-.7 .7-4 .6-.6 .7-7.7 2 7.3 7.3 5.7 7.4 14.3-4.4-3-6 .4-.3 1.6 1.3 1.4-.6 2.3-5.7 0-3.3-1-2.4zM128.2 201.5l-3.4-1-2.3 2-1.3 2-.7 7.7 .7 .3 0 1-.7 .7-8.3 2.3-.4 1 .7 .7 4-.7 .7-.7 8.6-2.3 0-1.3-2-4 .4-.4 1 .7 .6-.7 2.7-6zM225.8 198.8l-6 0-4.3 2-1.7 2.7 0 5 2 3 3 9.3 0 8.7 4-3.3 4-1-1.3-5 1.7-3.7 5.3-8.3 0-4.4-2.7-3.6zM119.2 192.5l-4-1-2 1.3-1.4 3.7 0 3-3.3-1.7-2 0-.7 .7-.6-.3-.7 .6-10.3 2.7 .6 1.3 6 5.7 5 7.3 3-.3 11-3.7-2-5 1.7 0 3-6.3 .3-2.7-1-2.6zM124.2 193.2l6 6 5 8 7-1.7 1-2-.4-5.7-1.3-4.3-2-3-3.3-1-2 1zM40.5 190.8l4.3 3.7-.3-5zM266.8 187.8l-4-1-4.3 0-4 1.4-3.3 3 0 2 1 2-.7 1.3-1-.3-1 1-1-.4-.7 .7-3.3 .7-.3 .6-1.4-.3-.6 1-1.4-.3-.3 .6-1.7 0-.3 .7-4.3 1.3 4.6 4 3.7 4.4 4 7 1.3 4 2.4-2 .6 .3-.3 3.7 1 1-.3 1-11.4 3.3-1.3 1-1-.3-1 1-1-.4-.3 .7-1.7 0-.3 .7 7.3 7 3.3 4.6 3.7 8 7.3-2.3 3-1.7 .7 .4 1-1 .7 .3 1.3-1 .7 .3 1-1 1 .4 1.3-1-.3-2.7-2-4.7 0-1.6 2.6-5 3.4-3.7 2-4.3-2-4.7-3.4-1.7-4-.6-4 .3-.3-.7 7.3-2.6-1.6-5.4 3-5.3 5-6.3-.4-4-.6-1.4zM72.5 188.8l-3-2-3.3-.3-2.4 2.3-1.3 3.4 0 8.3-4.7 2-5.3 1 .7 1.7 1 1 1.3 0 .7-.7 1 .3 4-1.6 .6 .3 .7-.7 7-1.6-4-7.4 .3-.3 2.7 2.3 1 0zM195.8 179.2l-4.6 1 1 3 3.6-.7zM103.8 179.5l-3.3-1.7-2 0-3.3 4-.7 5 .7 5-10.4 3 1 2 3.4 0 .6-.6 .7 .3 .7-.7 9.3-2.3 0-2-2.3-4 .6-.3 1.4 1 .6-.7 3-6.7zM58.2 177.5l-3 0-2.4 2.3-.3 4.7 1.3 3-.3 .3-6-4.3 4 9.7 1 8 5.7-1.4 .6-.6 1 .3 .7-.7-.3-1.6-3.4-5.4 1 0 2.7 2 3.3-7.6-.3-3-1.3-2.7zM209.5 176.2l-1 1.3-2.3 9 3.3-4.7 .7-3.3zM323.8 173.8l-2.6 1-.7-.3-.7 .7-1.3 0-.3 .6-1-.3-.7 .7-1.3 0-.4 .6-1-.3-5.6 2.3-1.7 0-3-2-3.3-1-6.4 0-4.3 1.7-3 2.3-.3 1.4 2.6 2.6-.3 1-1.3 0-2.4 1.4-1-.4-.6 .7-1.4 0-.3 .7-1.3 0-.7 .6-1-.3-.7 .7-1.3 0-.3 .6-3 .4-1 .6 4.6 4.4 3.4 4.3 2.3 4.3 2 5.7 1.3-.3 .4 1 3 2.6-.4 .7-16.6 5.3 0 .7 6.6 6.3 3 4.4 3 8 17-6 0-2.7-2.3-5.3 0-1.7 2.7-4.7 5.3-6 .7-1.3-.7-3-.7-1-4.3-2-9-.7 7-2.6-1.7-6 3-5 5.4-5.4 .3-5 4.7 4 3 4 2 4 1.6 6 3.4 1 2.6 2.4-10 3.6-2.3 .4-.7 .6-1.3 0-2.3 1.4 6.6 6 3 5 2.4 7 7.3-2.7 .3 .3 6-2.6 .7 .3 1.3-1 0-3.3-2.3-6.4 1.7-3 7.3-7.6 0-2.4 1-.6-6.7-3.4-4.6-.6-3.4 .6-.6-.6 1-1 .3-5.7-2-7-1-2zM92.2 168.8l-1.4-.6-2.6 0-2.4 2-.6 3 .3 4-5.7-3-14.6 4 5.6 5.6 7.7 10.4 12.7-3.4 .6-.6 .7 .3 .7-.7 0-1.3-2.7-5 .3-.3 1.7 1.3 1-.3 3-7 0-2.7-1.3-3zM175.2 165.5l-2.4 9.7 3-5.4 0-3.3zM177.8 162.2l0 .6 5.4 4.7 0-6.3-.7-.4zM122.2 159.5l-2.7 0-2.3 1.7-1.4 6.3-3.6-1.7-14 3.7 .6 1.3 6.4 6.4 5 8 12.3-3 .7-.7 .6 .3 .7-.6 1 .3 .3 2-10 2.7 1 2.3 4.4-.7 .6-.6 .7 .3 .7-.7 7.6-2-1.6-5 1.3-.6 3.3-7.4 0-1-3-1.3-1.3 0-1.7 1.3-2 3-.3 7-.3 .4-.7-.7-2-4.7 1.7 0 3.3-6.6 .3-3.7-1.6-3.3zM143.2 157.8l-13.7 3.7 6 6.3 5.3 9 6.4-1.6 1.6-2 0-4.4-1.3-6-1.7-3.3zM42.2 156.2l3 3.3 1 .3-.4-4.6zM74.5 153.2l-2.7-1.4-2.6-.3-3 2.7-.7 3.3-.7 .3 0 8.7-11 3 2.4 3.7 16-4-.4-1.7-3-5.3 .4-.4 2.3 2 .7-.3 3.3-8zM107.2 144.5l-4.4-1.3-2.6 2.3-1.4 2.7-.6 8.3 .6 1.3-1.6 1-9.4 2 1.7 3.7 15.3-3.7-.3-2-2-4 2.3 0 3.4-7.6 0-1.7zM58.5 141.5l-1.7 0-2 2.3 0 7.7-4-3.3-1.6-.7 4 9.7 1.3 9.6 8.3-2.3-.3-2-3.3-5.7 .3-.3 2 2 1.3 .3 3.7-7.6-.3-3.7-1.4-2.7-1-1-.3 2.7-1 1zM100.5 138.5l-.7-1.3-.3 3.6 .7 2-1 .7-6 1-.7 .7-4.7 .6-.6 .7-1-.3-.7 .6-3.3 .7-5-6.7-3.7 0-.7 .7-1-.3-.6 .6-3.4 .7 7 7.3 7 10 15.4-4 0-1.3-2.4-4.7 2.4 0 3.3-7zM138.5 136.2l-3.7-.7-2.3 2-1.7 3.3-.3 7.4 .7 1.6-10.7 2.7-.3 1 1.3 2.7 14.7-3.4-1.7-5.3 1.3-1 3.7-7.7 0-1.6zM102.5 134.5l6.7 7.3 5.6 9.7 14.4-3.3 .6-.7 0-1.7-1.6-3.6 1.6-1 2.4-5-.7-.7-14.3 3.7-2-4.4-2.4-2.6-3.3 1-3.3 0zM170.8 131.8l-4.6 0-3 1.4-1 1-1.4 5.6 .4 1-2 0 3 7 1.3 5 .7 5.4-.4 3.6 3-4 5-1.3-.3-2 3.3-6.3 2.4-3 1.3-4.4-3.3-7zM198.2 130.8l-2 0-4.4 1.7-1.3-.3-2.7 1.3-3 0-.6 1-1.4-.3-1 .6-.3 2 6 6.4 2 3.3 3.7-2.7 .3 .4-1 6.3-.7 0 0 .7 2 3.3 2.7 8.7 .7 6-.7 4 3.7-4.4 11-3.3 3.6-5.3 1-2.7-.3-.7-3.7-.6-3 2.3-2.6 4-1 4.3-.7-.6-.3-2 3.6-6.7 1.7-1.7 2.3-5-.6-4.3-3-3.7-4-1.3-4.7-.3 .3-.7 1.4 0 .6-1-1-1.7-.6-4.3zM135.5 126.5l.3 1.3 5.7 6 5.3 9.7 7-1.7 1.4-4.3-.4-4.7-1-2.6-3 .6-2-4-.6 3.7-.7 .7-4-6.4zM66.8 125.5l0 .7 4 3.3 0-4.7zM306.2 120.8l-7.4 1.7-.6 .7-2.4 0-2.6 1.3-1-.3-.7 .6-1.3 0 0 1 6.3 7.4 3.3 7.6 0 1.7 3.7 1 3.3 3-.6 .7-1-.4-.7 .7-14.7 4 6 6.3 2.7 4.4 3 9.3 4-1.3 .7 .3 2.3-1.3 1 .3 2.3-1.3 1 .3 1-1 1 .3 .4-.6 2.6-.7 0-3.3-2-7 9-11.4 .7-2.6-6.7-3.7-4.3-.7-2.7 .4-.6-.7 0-7-2.4-7.3zM172.5 120.8l-4.3 1 2 5.7 2 0 1-.7 0-5.3zM101.2 121.8l-2-1-3.4-.3-3 2.3-1.3 2.7-.7 4 .4 7.3-12.4 3 0 1 2.4 3.7 1.3 .3 2.7-1.3 1.3 .3 .3-.6 1 .3 10.7-3-3-7 .3-.3 2 1.3 4.4-9.3 0-1.7zM166.2 123.2l-1-1.7-3.4-2.3 0 1-2 1-.6-.4-1 .7-.7-.3-1 .6-7 1.4 0 1.3 1.3 3.3 1.7 0 3.7-1.3 1 .3 .6-.6 .7 .3 .7-.7 7-1.3zM43.8 118.2l4 3.6 0-4.3zM186.2 115.2l-2 6.6-1 6.4 4-6.7 .3-4zM72.5 112.8l-3.7 3-1 2.4 .4 .6 2.6 0 2-1zM137.2 112.8l2.3 6 1.7 0-.4-6.6zM86.2 107.8l-3.4 .4-2.3 2.6-.7 4 .4 3.7-5-3.7 4 10.7 1 11 .6 .3 2.7-1.3 3 0 3-1.3 0-1.4-2.7-5.3 .7-.3 1.3 1 1-1 1.7-4.7 2-3.3 0-3.4-1.3-3.3-.7-.7 0 1.4-1.3 .6zM95.2 110.5l3.6 3.3 4.4 5.4 6 10.6 5.3-1 .7-.6 1 .3 .6-.7 1 .4 2.7-1.4 3 0 .3-.6 1 .3 .7-.7 1.3 .4 .7 1.3-.3 1-12.4 3 2 4.3 1.7 .4 .7-.7 .6 .3 13.7-3.6-2-6 1.3-.7 4-8-.6-2-2-2.7-2-.6-3.4 2.6-1.6 3.4-.7 6.6-2-5.3 1.3-.7 4-8.3-4.6 .3-4.4 1.4-1.3 1.6-1 7.7-.7 .7-2.3-3.4-2-4.6-2 0-.7-.7 0-1-3.3-5-11.7 2.3zM152.5 106.8l-2 8.4-.3 4 3.3-6 0-4.7zM108.5 104.5l0 1 2.7 5.3 .6-.3-.6-6.3zM155.5 104.5l0 .7 5 4.6 0-5.6-1.7-.4zM61.8 101.5l-2.6 0-2.4 3 0 7-5.6-4 4 10.3 1 7.4 1.6-3.4 5-1.3 0-1.7 1 1 2-.3 3.7-7.7-.3-3.6-1.7-3.4-1.3-1 0 1.7-1.4 .7zM85.2 105.8l-3.4-5-1.3 0-.7 .7-1-.3-.6 .6-1.4-.3-.6 .7-1-.4-.7 .7-1-.3-2.3 1 6 6.6 1.6-1.3 3.7-1.7 1.3 0zM121.8 99.5l-.6 1-.4 4.7-.6 1 0 4.3 2.6-5.7-.3-4.3zM195.2 99.8l-1.7-1.3-4.3 0-3 2.7-2 3-.4 2.3 2.7 0 7-2 1.3-1.7zM124.5 96.5l4.7 4.7 0-5.4zM93.2 92.2l-.4 5-.6 1 0 5 2.3-5.4-.3-4zM163.2 92.2l-1.7-1.4-3.3-.6-4.4 3.3-2 4.3 5-.6 5.7-1.7zM96.2 89.2l4.3 4.3 0-5zM67.5 85.8l-1.3 8 .3 2 2-5zM132.2 84.2l-2.7-1-2.3 .3-3 3-1.4 3.3 8-1.6 1.4-2.7zM69.8 82.2l4.4 4.3 0-4.7zM43.2 79.5l-.7 5.3 .3 4 1.4-2.3 .3-2.3zM103.2 76.8l-3.4 0-3 3-1 2.4 6-.7 1-1.7zM75.8 70.5l-1 0-3.3 3-.7 2 4.7-.7 .7-2.3zM287.8 65.8l-9.3 1.7-1 .7-.7-.4-1 .7-1-.3-.6 .6-1-.3-.7 .7-1-.4-.7 .7 6.4 8 3.3 8.7 1 .6 3 .4 3.3 3-.3 1-1.3 0-.7 .6-2.7 0-.6 .7-5 .7-.7 .6-1-.3-.7 .7-4.6 1 5.3 5.3 2.7 4.3 3.6 9.7 0 2.3 1.7 0 .3-.6 1 .3 4.4-1.7 1 .4 .6-.7 2.4-.7 .6 .4 .7-.7 4.3-1 .4-3-1.7-5.7 0-2 9.3-13.3 0-1.3-4.6-3.4-2.4-1-7.3-.6 0-5.7-1-4.7-2-4.6zM90.5 61.8l-3.7 .7-2.3 2.7-.7 2 0 4.3-.6 .7-3-2.4-1.4-.3 4 10.7 1 9 2.4-4.4 8.3-2.6 4-8-.3-4.4-1.4-3-3-3.3zM244.2 61.2l-.7 .6-3 0-.7 .7-1-.3-.6 .6-1-.3-.7 .7 4.7 5.3 2.6 .3 2.7 1.4 2-.7 .3 1.3 1.7 1.7 0 1-17.7 3.7 0 1 3.7 3.6 3.7 5.4 3.3 8 2.7 1.3 2-1.3 .3 2 1.3 2.3-.6 .7-3 0-2.7 1.3-3 0-.7 .7-8.6 2 6 6.3 3 4.7 2.6 6 1.4 5.3 1.3 .3 1-1 2.7 0 1.3-1 2.7 0 1-1 1 .4 .6-.7 6.7-1.3 0 3.6 3 1 1.7-.6 3 3.3-1 1-6.7 1.3-.3 .7-1.4-.3-.3 .6-1.7 0-.3 .7-1.3-.3-4.4 1.6 7.4 8.4 2.3 4.3 1.7 5.7 1.3 .6 2-1.3 .3 2 2.4 2.3-.7 .7-1-.3-2.7 1.3-.6-.3-3 1.3-10 2.3 0 1 1.6 1 4.7 5 3 4.7 3.3 8 0 1.3 1.7 0 .7-.6 1.3 0 .7-.7 .6 .3 4.7-2 1 .4 1-1 1 .3 5-2 0-2.7-2-5.6 0-1.7 3-4.7 4.7-5 1-4.3-1-2.3-2-1.4-3.4-1.3-4.6-.7-1.4 .4-.6-.7 6-2 6.6-9-2.6-.3-4.4 3.6-1 2.4-.6-.7 2.3-4.3 6.3-7 0-3.4-.6-2-4-2.3-3.7-1-3.7 0-2.6-6.7-2.4-2-9 1.7-.6 .7-.7-.4-1-2.3 2.7-4.7 5.6-6.3 .7-5-1-2-1.7-1.3-5-2-2.6 0-1.4-1 10-2.7 1.4-2 1.6-4-3.6-.3-3.4 2.3-2.6 4-.4-1 2.7-4.7 4.3-4.3 2-3.3-.3-4-1-1.7-4-2.3-3.7-1-4.3 0-1.7-4.4-1.3-1zM65.5 56.8l-3.7 .4-2.3 3-.7 7-4-3.4-1.6-.6 4 10 1.3 8.6 2.3-4 4-.6 1-1 3.4-.4 3.6-7.3-.3-4.3-1.3-2.7-3-3.3zM219.8 54.2l-14.6 2.6 0 1 4.3 4.7 4.7 1.3 2.3-1.6 0 4.6-7.7 1.4-1 .6-1-.3-.6 .7-1-.4-.7 .7-1.3-.3-2.4 1-1.3-.4-.7 .7 6.4 7.3 3 1 3-2.3 0 5-6.7 1.3-.7 .7-1.3-.3-.7 .6-3.6 .4-.7 .6-1.3-.3-.4 .7-3.3 0-.7 .6 8 10 4.7 9.7 1.7 .7 2.6-2.7 1 0 0 4.7-1.3 1.3-3 0-3 1.3-1-.3-3.3 1.3-1-.3-8 2.3 6.3 6.4 3 4.3 3.7 7 1.6 5.7 1.7 0 1-1 1.3 .3 .4-.7 1.3 .4 1-1 3 0 1-1 1.3 .3 .4-.7 5.6-1 2-1 1 .4 3.4 5 .6 0 2.4-2.4 .6 .4-.6 2 .6 2.6-.6 .7-3.4 .3-.6 .7-1-.3-.7 .6-1.7 0-.3 .7-1.3-.3-1 1-3 0-.7 1-1.3-.4-2.7 1.4 5.3 5.3 3 4 4 7.7 .7 2.6 .7 .4 2.6-2.4 1 0-.3 5.7-1-.3-5 2-12.7 3-.3 .6 7 6.7 2.7 3.7 3.3 6 1.7 5 4.3-1.7 1 .3 1-1 1 .4 1-1 1 .3 4.7-2 1 .3 1-1 1 .4 1.6-1-2-9 2.4-4.7 4.3-5.3 1.3-3.4 0-1.6-2-4-4.6-2-5.4-.4-.3-.6 9.3-3 5-6.7 .7-2-3-.7-2.3 1.4-3 3.6-.7 2-.7 .7-.3-.3 1.7-4.4 3.6-4.3 2.7-4.3-.3-4.4-.7-1.3-2.7-2-4.3-1.3-3.7 0-.6-.7 1.6-.3 .4-1-1-1.4-1.4-5 0-2.3-1.6-1.7-2-.6 0 1.3 1 1.3-1.4 1-10 2-.3 .7-1.3-.3-.7 1.3-.7-.3 0-3 2-3.7 5-6.7 1-5-2.6-4.6-3.7-1.7-4-.3-.7-1 13.4-3.7 1.6-2 .4-3-1.4-1-2.6-.3-4 3-2 3-.4 2-1 0 0-1.7 1-2 5.4-6.7 2-4.3-.7-4.3-1.7-2.4-2-1.3-4.6-1.3-3 0-.4-.7 15-3.3 1.4-1 0-2.4-.7-2.6-1.3-1.7-6.7-2.7-3 .4-.3-.7 1-.3-1.4-3.4zM110.5 56.8l-1.3-3-2.7-3-3-1.3-4 .3-2.3 3-.7 5.7-3.3-2-1.7-.3-16.7 3 0 .6 4.4 5 1.3 .7 2.3-2.7 3-1.3 10.4-2 .6-.7 3.4 0 8-2zM192.2 48.8l-15 2.7-1-.3 0 1.3 4 4.7 2.3 1 1 0 3-2.7 0 4.3-1.3 1-13.7 2.7-1.3-.3-2.4 1 7 8 .7 0 4-3.7 .3 2-1 4-20 3.7 .4 1.3 3 2.7 4.3 5.6 4.7-4 .6 .4-1 6-.6 .6-1.4 0 2.7 6 2 7.4 0 9.6 1-2.3 2.7-3 4.6-1 3.4-7.3 3.3-4 1.3-4-1-5.4-2.6-3.3-4.4-1.7-4.3 0-.3-.6 19.3-4.4 .7-1-1-5-2-2.3-5-2-3.4 0-.3-.7 14-2.6 4-1.7-1.3-4.7-3.4-2.6-4.6-1-.4-.7 .7-.7-1-2zM164.2 43.8l-14 2.7-1-.3-.7 .6 5.3 6 1.4 0 3.6-3.3 .4 1-1 5-3.4-.3-15.6 3 6.3 7.6 4-4 1.7 0-1 1.4-.4 4.3-.6 1-4-.3-16.7 3.3 6.7 8 .6 0 3.4-3.3 1.6-.7 .7 .3-1.7 2.7-.3 5-1.3 .3-1.7-.6 4 11.6 .7 10 .6-2 2.7-3 4.3-1 2-1.6 2-4.7 3-4 1-4.3-1.6-5-2.7-3.4-4-1.3-3.3 0-.4-.7 20.7-4.3 .7-.7-1-3.3-2.4-3.3-1.6-1-4.4-1-.3-.7 4.3-1.3 4.7-.4 8.3-2-.6-3.3-2.4-3-4.6-1.7-2.7 0 .3-.6 3-.7-.6-1.3zM142.8 44.2l-3-1-4.6 .3-2.4 2.3-.6 5.4-3.7-1.4-5.7 1.4-2.6 0-1 .6-.7-.3-1 .7-1-.4-3.7 .7 .7 1.7 4.7 5.3 3.3-3.3 2.3-1 .7 .3-2 2.7 0 3.3-.7 2-4-1.7-17.3 3.4 6 7 3.7-3 3-1.4 .3 .4-2.7 3.6-.3 6-.3 .4-4-2.4 2 4 2.3 7.4 .7 4 0 6.3 .6-2.7 2-2.6 7-2 5.4-9.7 0-4.3-.7-2-3-4.4-4.3-2-2.4 .4-.6-1 21.6-4.4-.6-3.3-3-3.7-4.7-1.3-.3-.7 6-1.6 1.6 .3 10.7-2.3-1-3z"/><path fill="#093e80" d="M219.5 466.8l-1 0-6 3.4 1 1.6 4.3 3zM228.2 463.2l-2 2.3 0 3 2 4-.7 .3-2-1 2.7 4.7 1.6 6.7 1 0 4-2.7-6.3-7 .7-.3 2.6 1.3 1.4 0 2.3-6.7-3.7-2.3-2.3-2.3zM199.8 453.8l2.7 5.4 1.3 4.3 0 2 4.7-2.3 .3-.7-1-1.7-4.3-4.6zM194.2 449.8l-6.4 3.4 4.7 4 .7 0zM256.5 448.2l-.7 0-1 1.3 0 3.7 1.7 2.6-.7 .4-2-1.4-2 0-5 2.7 0 2.7 .7 1.6-4.7 2.7 5.7 5.3 1.3 2 1.4 0 12.3-7-1-2.6-3.3-3.7 3-.3 1.6-4.7-1.6 .3-1-1.6zM202.8 446.2l-1.6 2 .3 4 2 3.3 4.3 1.3 2-5 0-2.3-2.6-.7-3.4-2.6zM229.5 445.8l-7 3.4 1.3 2 4 3zM240.2 440.8l-1.4 .4-2.3 2.6 0 3 2 4-.3 .4-2-1 3 5.3 1.3 7 1 0 4.3-3-1.3-2.3-4-4.4 1-.3 1 .7 1.7 0 2.3-5.7 0-2.3zM175.5 437.2l2.7 5 1.3 6 .7 .3 4-2 .3-1-1-1.7-5-5zM170.5 434.2l-5.7 2.3 0 1 4.7 3.3zM232.8 433.8l-1 0-2 3 1.4 2.7 1 .3 2.3-3.3-.3-1.3zM179.5 429.8l-2 2.4 1 5 .7 1.3 4.3 2 2.3-5-.3-3-3-2.7zM202.8 428.8l-6.6 3.4 5.3 4.3zM214.8 423.5l-3.3 .7-1.7 2.6 0 2 2 4.4-.3 .3-2.7-1.3 2.7 5 1.7 7.3 5.3-2.7-1.7-3-3.6-4 1-.3 1.3 1 1.3 0 2.7-6 0-1.7-1-2zM240.5 422.8l-7 3.4 1.3 2 4.4 3.3zM152.8 421.5l2.4 4.3 1.6 6.7 4.4-1.7 .6-1-1-1.6-4.6-4.7zM148.2 419.2l-5 2 0 1 4.3 3.3zM248.2 419.5l0 4 1.6 2.7-.3 .6-1.3-.6 3 5.6 1.3 7.4 1.3 .3 4.4-2.7 1.6 1.7-1 1.3-3.6 1.7-1.4 1.3 2.4 1.7 5.6 6.3 1.4 0 13-7.3 1 .7 .3 1.3-5.3 3-.4 1 4.4 3.7 2 3 2.6-.7 10.4-6-1-2.7-2.4-3 1.7-1 1.7-4.6-1-.7-1.7-3.3-1.7-1.4-2.6-1-2 2-.4 3.7 1.4 2-.4 .3-2.6 0-4.4 2.7-3.6-5 1.6-.3 2.7-6.4-2 0-2.7-4.3-2.3-1.7-1 0-2 2.4-.3 4 1.3 1.6-.3 1-2.4-1-5.6 3-1.4 0-4.3-6 2.7 0 2.6-6.3 .4-2-.7-1.7-5-3.6-3.3 .6zM211.8 416.2l-2.3-1-3 1.3-1 1.7 0 2 1 2.3zM156.8 414.8l-1.6 2.7 1 4 1 1.7 4 1.6 2.3-5.3-.3-1.7-1.7-2.3-2-1zM247.8 409.8l-2.6-1.3-2 .7-2.7 3.6-.7 2.4 1.4 1 2.3 .3 4-5.3zM142.8 407.2l-.6 1.3 .3 4 3-1.7-.7-1.6zM131.2 406.5l2.6 5 1.7 6 4.3-1.7 .4-1.3-5.7-6zM127.2 404.8l-4.7 2 .3 1 3.7 2.7 .7-2zM189.2 401.8l-3-1-2.4 1.4-.6 1.3 0 2.3 1.3 2.7-.3 1-3.4-2-2.3-.3-12 6 6.3 5 4.4 4.6 12.3-5.6 .3-1-5-6 .7-.4 2.3 1.4 1.7-.4 1.7-4.3 0-2zM135.8 400.5l-1.3 2 1 5.3 4.3 2.4 1-1 1.4-4-.4-2-2-2.4-1.6-.6zM265.8 417.8l0 .7 6 5 3.4 4.3 14.6-7.6 1 1.3 0 1.3-7 3.7 0 .7 5 4.3 2.7 3.7 13.7-7 .6 .6 0 1.4-6.6 4.3 4.3 4 2 3 5-2.3 3.3-2.4 .4-3.3-2-5.7-3.7-2.3-1.3 0-2.4 1.3-3.6-4.6 1.3-1 2.3-5.7-4-6-1-.7-2.6 .4-2.4 2.3 0 6-4 2-1 0-4-5.7 1.7-1 2.7-7-.7 .4-1.7-1.4-1.6-3.3-1.7-1.7-3 .4-2.3 2.6 0 5 .6 .7-.6 .7-1-.4-5.4 2.7 .7 1.3-.3 1.4zM252.8 397.2l-1 1-1 0-.3 .6-2.7 .7-.6 1-1.4 .3 0 .7 5.4 4.3 .6 0zM158.5 393.2l-1.7 0-11.6 5.3 10 9.7 1.3 0 11.7-5.7-4-5.7zM111.2 392.5l2.3 4.7 1.7 6.3 5-2.3-1.7-2.7-3-3zM266.5 388.8l-3 .7-2.7 3.3 0 4.4 1.4 1.6-.4 .7-.6-.3 3.6 7 1.4 7.6 1 0 5-2.6-4.7-7 2-.4 3.3-7.6 0-2.7-.6-1.7-1.7-1.3zM215.5 388.5l-2.3-.7-2.7 1.4-1 1.6 0 1.7 1.3 2.3-.3 1-2.3-1.3-2.4 0-11.3 5.7 4 3 5.7 6.3 3.6-1 8.7-4.3 .3-.7-3.3-5 2 0 .7-.7 1.6-4 0-2.3-1-2zM164.8 387.2l-2.3 1.3-.7 3 1.4 3.7 4 2.3 1-1 1.3-3.3 0-2.4-2-2.6zM115.5 387.2l-1 2 1 4.6 1.7 1.4 3 1 .6-1.7-2.3-7.3zM234.2 382.5l-3 .3-9.7 4.7 6.3 5.7 3 4 6-2.7 1.7-1.3-.7-6.4-1.3-2.6zM309.5 381.5l-.7 .3-1 2.7 3 0-2.3 2.7 .3 6.3-3 1.3 0 2.4-9 5 5.4 4.6 3.3 5 4-1.6 1-1 .3 .3 8-4.7 1 0 .7 1-.3 1.7-6.7 3.3-1.3 1.4 4.6 4 2.4 3.6 1.3 0 .3-.6 7-3.7 .4-4-.7-3-1.3-2.7-3-2.3-2 0-1 .7-1.7-1.7-2.3-4.3 4-8-4.4-6-1.3-.4-3.3 .7-.7-.7 2.7-2zM141.2 380.5l-1.7 0-5.3 2.7-6.7 2.3 0 1 5 3.7 5.3 6 4.4-1.4 .3-.6 8.7-3.7-1.4-3-3.3-3.7zM338.2 379.2l-1.4 .3 0 1.7-1.3 1.3-9 4.7 5.3 5 2.7 4.3 1 0 3.3-2.3 2.4-.7 2.3-2 .3-3.3-1.3-5-1.3-2.4zM194.2 375.8l-2.7-1-2.7 1.4-.6 1.3 0 2.3 1.3 2.4-.3 1-4-2.4-12.4 5.7 4 3 5.7 6.3 8.7-3.6 3.6-2-4-5.7 .7-.3 2.3 1 2-4.4 0-2.6zM146.8 374.8l-1.6 1.7 .3 4.3 1.7 2.7 2.3 1.3 1.3 0 2-4.3 0-2.3-2-2.7-1.3-.7zM127.5 372.5l-.7 .3-.3 2.4 .7 3.3 3.3-1.7-1-2.3zM300.2 372.2l-4.7 .6-2.3 3 0 6.4-.7 .6-.7-.3-.6 1-2.4 .7 0 1.3-10 5.3 7 6 3.7 5.4 1 0 .7-1 1 0 1-1 .3 .3 1-1 1 0 9.3-5-1.3-2.7 0-1.6 1-.4-.7-2-.6 .4 .3 1.6-.7 .7-1.6-3 1.6-2 3-7.7-1.6-.3zM115.5 370.8l2 4 2 7.4 4.7-2 .3-1-2-2.7-5-4.7zM111.2 370.5l-4 1.3 0 1 3.3 2.7 .7-.3zM266.5 369.5l-1.3 0-1.7 .7-.7 1-3 .6 0 1.4 5 4.3 .7 0zM211.2 369.5l-1.4 0-.3 .7-10.3 4.3 4.3 3.3 5 6 1 0 6.7-3.6 0-3.4-2.4-6zM184.5 367.2l2.7 4 1 .3 2-1.3-1.4-1.7zM121.5 364.5l-1.3 .7-1.4 2 .4 3 1 2.6 3.3 2 1 0 1-1.3 1.3-4.3-2.3-3.7zM177.5 362.5l-3 0-1.7 1.3-.3 3.7 1 1.7 0 1.3-3-2-2.3-.3-11.7 5 0 1 3.3 2.3 6.4 7 1.3 0 3.3-2 7.7-3 .7-.7-1-2-3.4-4 .7-.3 1.7 1 1.3 0 2-4.7-.7-3.3zM154.8 360.8l-.3 5 .7 .7 2.3-1 .3-1zM281.2 358.2l-3.4 1-2.3 3-.3 5.3 4.3 8.3 1.3 5.4 .4 4.3 5-2 1.3-1.3-1-2 0-1.4 1.3-.6-1-2.7-.6-.3-.4 2 .7 1.3-.7 .3-2.3-3.6 1.3-1 2.7-5.4 1-3.3 0-2.3-.7-1.7-2.3-2zM95.2 357.5l2.3 4.3 1.7 7 5.3-2.3-1.3-2.3-4.4-4.4zM330.8 353.8l-4 0-3 1.4-1.3 3 2.7 0-1.7 2 .3 5 1.4 1.3-1.4 .7-2.3 2.6-10 4.7 7 7 2.7 4.3 1 0 1-1 .3 .4 1-1 1 0 .3-.7 1 0 9-5-3.6-6.7 3.6-6.6 1-3.4-3.6-4.6-2.7-.7-2.3 .7-1.7-.4 .7-1zM355.5 352.5l-1.7 1.3-11.6 5.7 6.6 6.7 2.4 4.3 1 0 2.3-1.7 .3 .4 1-1 3.7-1.4 1-1.3 .3-4.3-.6-3.4-1.4-3zM152.2 352.8l-2.7-.3-2 1.3-.7 2.7 1.7 4-.3 .7-5.4-3.4-13.3 5.4 5 4 5.7 6.3 13-6-5-6.3 .6-.4 3.4 2 1.3-1.3 1.3-3.3 0-1.7-1.3-2.7zM101.8 351.8l-2.3 1.7 0 4 1 2.3 3.3 2 1 0 2-5.6-.6-1.7-2-2zM204.8 351.2l-1.3-.7-2.7 0-2 2-.3 2.3 1.3 2.7-.3 .7-2-1.4-2-.3-9.3 4.3-2 .4 0 1 4.3 3.3 5 6 11.3-4.7 .7-.6-.3-1.7-2.7-3.7 2.3-.3 2-4.3-.3-3zM179.8 341.5l-2.3-1-2.7 1-1 2.3 0 1.4 1.4 2.6-.4 .7-2.6-1.7-2.7-.3-2 1.3-9.7 3.7 4.4 3.3 5.6 6.7 1 0 11.4-5.3-.4-1.7-2.6-3.7 1-.3 1.3 .7 2.3-4.7 0-2.3zM134.5 344.2l-2-3-2.7-1-2.3 1.3-.7 2 1.4 4-.4 1-4.6-3-1.7 0-12 5 5.7 4.7 4.3 5 1 0 12-5.4-.7-1.6-3.6-4.4 .6-.3 2.7 1.7 1 0 1.7-3.4zM315.5 339.2l-2.7 0-3.6 2-.4 1.6 2 0-2 3 0 5 1 1-.6 1.4-.7-.4-.7 1-3 .7-.6 1-.7-.3-4.3 2.6-5.4 2 8.4 8 3.3 5.7 1 0 1-1 1 0 2.3-1.7 1 0 2.4-1.6 1 0 6.3-3.4-1.3-5.3-.7-1-.7 .7-1-2 1-1 4.4-9.7-.7-2.3-3.3-3-3.7-.7-3.3 1-.7-.7 .7-1zM197.5 335.5l-1.3 0-11 5 6 5 3.3 4.7 7.7-3.4 .3-2.6-1.7-5.7-1-1.7zM104.8 331.5l-14 5 3 2.3 8 8.4 13.4-5-.7-2-3-3.7-3.7-3.3zM159.2 329.8l-3-.6-2 1.3-.7 2.7 1.3 3-.3 1-2.7-2-2-.7-12 5 6 5.3 3 4 1.4 0 11-4.6 .3-.7-.7-1.3-3-3.4 .4-1 2 1.4 1 0 2-4-.4-3.4zM110.8 326.8l-1.3 1.7 .7 5 1.3 1.7 3.3 1.6 2-3.6 .4-3-3-3.4zM176.8 324.2l-1.6 0-10.4 4.3 5.7 5.7 3 4 7.7-3.4 0-3.3-2.4-6zM374.8 322.8l-6.3 2.4-.3 .6-1 0-2.4 1.7-.6-.3-.7 1-.7-.4-2.6 1.7 5.6 5.3 3.7 6.4 1 .6 1-1 .7 .4 .6-1 5.7-2.4 1-1.3 .3-5-.6-3.3-1.7-3.7zM301.2 322.2l-5.4 0-3.3 2.3-1.3 5 1 2.7-.4 1-10.6 4.3-1 1-4.7 1.3-.3 .7 8 7.7 4.3 6.6 6.7-2.6 1-1 .6 .3 2.7-2 1 .3 .7-1 1 0 1-1 .6 .4 1.7-1.4-3.3-6-.4-1.6 4.7-8 .7-4-1.7-2.7zM79.2 321.8l2 4 2 7.4 2-1.4 2.6-.6 .4-1-1.7-2.4-6-5.6zM85.5 316.5l-1.3 .7-.7 1.3 .7 5 2.6 2.3 2.4 .7 2-4.7 0-1.3-2.4-3.3zM141.8 315.5l-3 0-1.3 1.7-.3 2.3 1 2.7-.4 1-2.3-1.7-3-1-12 4.7 0 .6 2 1.4 8 8.6 12.3-4.6 .4-1-3.7-5.4 .7-.3 1.3 1 1.3 0 2-4 0-2.7zM263.2 307.5l-4.4 1-2.6 4.3 .3 5.7 2 3.3 2 5.7 .3 5.3 .7 1-.3 2 6.6-3.3-3-7.7 1.4-1 3-6 1-4-1.7-3.6-2-1.7zM328.5 307.2l-.3 .6-2 .4-1.7 5.6 3 3.7-14.3 6-.4 .7-1.3 0 0 .6 7 7 4 6.7 9.3-4 1-1 .7 .3 2.7-2 .6 .4 1-1 .4 .3 0-1.3 1-1.4 1.6 .4-.3 5.3 2.7 2.7-15.4 7 8.4 8.3 2.3 4.7 1 0 1-1 .7 .3 .6-1 1 0 10.7-5.7-3.3-8 4.6-7.6 .7-3-.7-2-3.3-2.4-4-.3-3 .7-.7-.7 3-1.7-3 0-3.6 1.4-1.7 2.6-2.3-2.3-1.4-3.3 5.4-9 .3-3-1.7-2.7-2-1.3-2.3-.7zM117.5 306.2l-3-1-2 1.3-.7 3 1.4 3.3-.4 1-3.3-2.6-2.7-1-12.3 4.3-.3 .7 6 5.3 3.6 4.7 1.4 .3 2-1.7 10-4-.7-1.6-3.7-4.4 .7-.3 3 2 1.3-.3 1.7-4 0-2zM169.2 305.2l-3.7-.4-1.3 1.7-.4 2.7 1 2.3-.3 .3-3-1.6-1.7 0-11.3 4.3 0 .7 6 5.3 3 4.3 2.7-.3 9.6-4 .4-.7-.7-1.6-2.7-3.7 .7-.3 1.7 1 2.3-4.4 0-3zM74.5 299.8l7.7 7 3 4 1.6 0 12.4-4.6-1-2.7-4-4.7-5-3.6-2 0zM144.8 295.5l-3.3-.7-1.7 1-.6 3.4 1.3 3-.3 .3-5-2.7-10.7 3.7-1.7 1.3 6.4 5.7 3.3 4.3 .7 0 5.6-3.3 6-2.3-3-4.7 .7-.3 2 1 2.3-4.4-.3-3.3zM370.5 293.2l-7-.7-5.3 1.3-1.7 2.4-.3 3.3 2.6 1.7 1.7 2-15 6.3 7.7 8.7 2 5 4.3-1.7 1-1 .7 .3 .6-1 1 0 7.4-3.6-.7-3-2.7-4.7 0-1 5.7-8.3 .3-3zM301.2 292.5l-4.4-.3-3.3 1-2.7 4.3 .4 3.7 .6 .6-.3 1.4-1.3 0-.7 1-1-.4-.7 1-1-.3-.6 1-1.4 0-.3 .7-4.7 1.3-.6 1-1-.3-2.7 1.6 7.7 7.7 4 6.7 1 0 15-7 0-1.4-3-6.6 3.6-5.7 2-5.3-1-2.7zM162.5 290.2l-1.3 0-10.7 4 0 .6 5 4.4 4 5.6 7-3.6 .7-1.7-1-5-1.4-3zM95.2 290.5l-1.7 2.7 1 4.6 3.3 2.7 1.7 .3 2-4.6 0-2-3.3-3.7zM62.5 284.8l2 4.4 2 7.3 1.7-1.3 3.3-1 0-1-4-5zM127.2 280.2l-3-.4-2 2.4 0 2 1 2.6-.4 1-3-2.3-3-.7-12.3 4.4 7.3 7 3 4 1.4 0 11-4 1-1-4-6 .6-.4 2.7 1.7 2-3.3 .7-2-.4-2zM69.2 279.8l-2 2.4 .6 4.6 3.4 3 2 .4 2-5-.4-1.7-3-3.3zM337.2 279.5l-3-1.3-4 0-4.4 1.3-2 2.7 0 3.3 2.4 2.3 0 1-15 6 0 .7 7.3 8 3 5.7 15-7-.7-3-2.3-5 6-10-1-3.4zM359.2 275.5l-5.4 1.7-.3 .6-1.7 .7-.6-.3-1 1-.7-.4-5 2.4 0 .6 6.3 7 3 6 8.4-3.6 1-1.4 0-8-2-5zM281.8 269.8l-5.3 .4-3 3-.7 8-1-.4-1 1-1.3 0-.3 .7-1.4 0-12.3 5 8 8.3 4 7.4 1.7 0 .6-1 1 .3 .7-1 1.3 0 1-1 .7 .3 1-1 .7 .4 1-1 3-.7 .6-1 .7 .3 1-1 2.7-.6-3-8.4 5.3-9.6 0-3.4-3-3.6zM154.8 270.2l-1.6-.7-2.7 1-1 1.7 0 2.3 .7 1-.4 1.3-3.3-2-1.3 0-.7 .7-9.7 3-1.3 1 6.3 6 3.4 4.7 12.3-4.4-.3-2-2.7-4 .7-.3 .6 .7 1.4 0 2-4 0-3.4zM101.8 270.2l-3.3-.7-1.7 1.3-.3 3.7 1 2.3-.3 1-3.7-3-3.3-.6-6.7 2.6-5.3 1.4 0 .6 7.3 7 2.7 3.7 1 0 6-3.7 6-2 0-1-3.7-4.6 .7-.4 2.6 2 1.7-.3 1.7-4 0-2zM129.8 260.2l-3.3-.7-1.7 1.3-.3 3.7 1 2.3-.3 .7-2.7-2.3-2.3-1-12.7 4.3 6 6 3.3 4.7 1 .3 6-3.7 6-2-2.6-3.6 .3-1 2.3 1 2.4-4.4-.4-3.3zM57.8 261.8l5 4.7 6.4 7.3 14-4.6-4.7-7-6-4.7-1.7 0-.6 .7zM148.2 255.2l-1.4 0-11 4 5 5 4.4 6 2.3-2 5-2.4 0-3-1.3-4.3-1.4-2.3zM243.8 254.8l-2.3 0-3 1.7-2 4.7-.3 4 3 6.3 1.3 5.7 0 6.3 3-2 4.3-1.7-2.6-7 1.3-1 3.7-6.6 .6-4.4-1.3-2.6-3-2.7zM79.8 253.2l-1 .3-1.3 2 .7 4.7 1 1.6 3.6 2.4 .7-.4 1.7-3.6 .3-2.4-2.7-4zM45.2 246.5l3 7.3 1 5 1.6-1.3 3.7-1 0-1-6.3-7zM111.5 243.5l-2-.3-2 1-1 2 1.3 4.3-.3 .7-5.3-3.4-13.7 4.4 6.3 6 4.4 5.6 13-4 .3-1-3.7-6 .4-.3 3 1.7 1-1 1.6-4-.6-3zM52.5 242.2l-2 2.3 .3 4.3 1.7 2.4 3.7 2 2-4 .3-2.4-3-4zM282.5 240.8l-5 0-3 1.4-2 5 1 3.3-.3 .7-7.7 3-3.3 .6-2 1.4-3.4 .6-.3 .7 7.7 8.7 3.6 7 16.7-7.7-2.7-7 5-8 .7-4.3-1.3-2.7zM140.5 234.5l-1.3-.7-3.4 .7-1.3 2.3 1 3.4-.3 1-3.4-2.4-2 0-11.3 3.7-.3 .7 5.6 5.3 4 5.7 12.4-3.7 .6-.7-3-5.6 .4-.4 2 1 2.3-4.3 0-3.3zM85.8 233.2l-3.3-.7-1.7 1.7-.3 3.3 1 2.7-.3 .6-3.7-3-2.7-1-7 2-.6 .7-.7-.3-.7 .6-2.6 .4-.4 .6-1.3 .4 5.7 5.3 5 6.3 2.6-2.3 4-2 6.4-2-4-5.7 .3-.3 4 3 1-.3 1.7-3.7 .3-2.3-1-2.4zM316.8 227.8l-4 0-3.3 1-1.7 1.4-1.3 3 0 2 2.7 2.6-.4 .7-8.6 2.7-.4 .6-1.3 0-.3 .7-1.4 0-.6 .7-1-.4-.7 1-1.3 0 6.6 8.4 3.4 7 5-2 1 .3-1 1-.7 5.3 2 2-.3 1-16 6 0 .7 2.6 2 5.4 6.7 2.6 6 1.4 0 .6-1 1.4 0 .3-.7 3-.7 .7-1 1 .4 .6-1 1 .3 .7-1 .7 .3 1-1 .6 .4 1-1 2.4-.7-.7-3.3-2.3-5.4 6-9.6-.4-3.4-3-3.3-2.3-.7-5.7 0 .7-1 6.3-2.6-2.3-6.4 0-1.6 4.3-6 1.7-4-1.7-4.4zM342.8 226.5l-8.3 2.3-2.3 1.4-1.4 0-.3 .6-1-.3-.7 1-1-.3-.3 .6 5.7 6.7 2.3 4.3 1 3.4 3-1 1 .3-.3 4.3 3.6 3-.3 1-1-.3-.7 1-1-.3-.6 1-1-.4-.4 .7-1.3 0-.3 .7-1.4 0-.3 .6-1.3 0-5.7 2.4 0 .6 2.3 2 5 6.7 2 5.3 1.4 0 1-1 .6 .4 4-2.4 .7 .4 1-1 .7 .3 1-1 .6 .3 4.4-2.3-.4-2.7-2-4-.3-2.3 6-8.3 0-3.7-2-2.7-4-1-4.7 .4-.6-.7 1.3-2 .3-5-1-4.7-1.6-3.6zM61.2 223.5l-.7 0-.3 3.7 .6 4.3-1.6 1.3-7 1.7-.7 .7 .7 .6 14-4.3-.7-2.3zM114.5 223.8l-3-.6-2 1.6-.3 3 1 2.7-.4 .7-3-2.7-2.3-.7-12.7 4 5 5 5 6.7 4.4-3.3 8-2.7-2.7-4.3 .7-.4 1.6 1.4 1 0 2.4-4.7-.7-3.7zM133.2 219.2l-12.4 3.6 0 .7 4.7 4.3 4.7 6.7 2.6-2.3 4.7-2 .3-.7-1.6-7-1.4-2.3zM64.5 218.2l-2.7 2.3-.3 1.7 1 1.6 4 2.4 2-3.7 .3-2.7zM46.5 216.8l3.3 8 1 6.7 1.4 0 .6-.7 .7 .4 4.3-1.7-1.3-3-4-5-4-3.7zM265.2 217.2l-3.7-1.7-4.7 .7-3.3 4.3 0 5.7-.7 .6-1.3-.3-.7 1-1-.3-1 1-1-.4-.6 .7-3.4 .7-.3 .6-8.7 2.7 3.4 3 5 6 3.3 6 .3 1.7 1.7 .3 1-1 1 .3 .7-1 1 .4 1-1 .6 .3 1-1 5.4-1.3 5-2.4-2.7-8.3 3-4.3 3-6.7-.7-3.3zM54.2 212.5l-2 2.3 .6 5.4 1.7 2 3.7 2 2-4 .3-3-1-2-2.3-2.4zM98.8 210.5l-3.3-1.3-3.3 3.3-1 4 0 6.7-9 2.6 1.3 .7 8-2.3 .7-.7 3.6-.7 .7-.6-.3-1.4-3.4-5.3 .4-.3 2.3 1.6 1.3 0 2-4.3zM88.8 203.5l-3.6-.3-1.7 2 .3 6-3.6-3-3-.7-13.4 4 6 6 4.7 6.7 1.7 .3 2.3-1.3 .7 .3 4-1.7 .6 .4 .7-.7 3.7-.7 1.3-1-4-6.6 .7-.4 2 1.7 1.3 0 2.3-4.7-.3-3zM127.2 201.2l-3 0-1.7 1.3-1.3 2.3 0 9-6 2.4-3.4 .6 .4 .7 7-1.7 5-2 .6 .4 .7-.7-.3-1.7-2.4-4 .7-.3 1.7 .7 2.3-4.4zM224.8 200.2l-4 0-3 2-.6 1-1 6-1 .3 3.6 11 .4 8.7 2.3-2.4 5.3-2-2.3-5.6 2-2 3.7-6.7 0-5.3-2.7-3.4zM118.5 194.2l-2.7-.4-2 1.7-.6 2 .6 4-4-2.7-2 0-12.3 3.7 5.3 5.7 4.4 6.6 1.6 .4 .7-.7 2 0 .7-.7 2.6-.3 .7-.7 .3 .4 5.7-2-3-6.4 .3-.3 2 1.3 1-1 1.7-3.3 .3-2.3-.6-2.4zM138.8 190.5l-13.3 3.3 4.7 5 5 7.7 6.6-1.7 1-1 .4-2.6-1.4-6.4-2-4zM263.8 187.5l-5.3-.3-3 2-2 5.6 .7 1.7-.4 1-17.3 5.3 0 .7 7.7 9 3.6 7.7 5.4-3.7 3.6-1 3-2 4.7-1.3 0-1.7-1.7-4.7 5-7.6 1-4.7-2-3.7zM70.8 187.8l-4.3-1.3-2.3 2.3-.7 1.7 .7 1.7-1.7 .3 0 8.7-10 2.6 1.7 1.7 7.6-2 .7-.7 .7 .4 .6-.7 2.7-.3 .7-.7 1 .3 .6-.6-.3-1.4-4-6.3 .7-.3 2.6 2.3 1.4 0 2.3-4.7 0-2zM58.5 179.8l-2.7 0-1.6 2-.4 1.4 1.4 5.6-.4 .7-4.6-4.3-2-1 3.3 8.6 1 7.4 7.7-2-1.4-3-4-5.4 .4-.6 5 3.3 2.3-4.3 .3-3.4-1.3-2.6zM101.8 178.5l-3-.7-2.6 2.7-.7 2.7-.7 .3-.3 3.3 .7 5-10 3 .6 1.7 9.4-2.3 .6-.7 .7 .3 4-1.6-3.7-6.7 .4-.3 2.3 1.6 1.3-.6 2-4.4 0-1.6zM299.5 175.8l-5.3 0-4 2-1.4 5 2.4 2.7-.4 .7-16.3 4.6 0 1 6 7 4 9 5-3.3 2 0-2 2.7 0 4 1.7 2-.7 1-1-.4-.7 1-1.3-.3-.3 .7-3.4 .6-.3 .7-1-.3-1 1-.7-.4-1 1-1-.3-4.6 2 7.6 9.3 2.7 6.7 1 .3 1.3-1 1 .4 2.4-1.4 1.3 0 .3-.6 1.4 0 8.3-3.4 0-1.6-2.3-5.7 0-1.7 6-10-.4-3.3-3-3.7-4-1-3.3 .7-1-.3 1-1.4 6-2-2-6.6 5-7 1-2.4 .3-2.3-1.6-3.3zM324.2 175.5l-.4 .7-1-.4-.6 .7-12.4 3.7 5.7 7 3.3 8.6 1 0 3.7-2.3 0 4.7 3 3-.3 1-1.4 0-.3 .6-1-.3-1 1-1-.3-2 1.3-1.3 0-.7 .7-1-.4-6 2.7 4.3 4.7 2.7 4 2 4.3 .3 2.3 1.4 0 .6-.6 .7 .3 1-1 .7 .3 .6-.6 1.4 0 9.6-4-.6-3.7-1.7-3.7 0-2 6.3-9-.3-4-2.7-2.6-3.3-.7-5 .3-.7-.6 1-.7 .7-5.3-1.3-5.7-1.7-3.7zM93.2 171.8l-1.7-1-3.3 .4-1.7 3 .7 4.6-4.7-3.3-1.7-.3-14.3 4 6 6.3 5.3 7.7 1.4 0 .6-.7 .7 .3 4-1.6 .7 .3 7.6-2.3-.6-2.7-3-4.7 .6-.3 3 1.7 2.7-5-.3-3.4zM132.2 170.2l-2.7-.4-2 1.4-1.7 3-.3 7 .7 2-4.4 1.6-5 1-1 .7 1 1.3 13.4-3.6 0-2-2.4-4.4 .4-.3 1.3 1 1-.7 2.3-5zM123.8 162.5l-3.3-.7-2.3 2 0 5.7-2.7-2-2.3-.7-13.7 3.7 5.7 6.3 4.6 7.4 4.4-.7 .6-.7 .7 .4 .7-.7 8-2 0-1.3-2.7-5 .7-.4 1.6 .7 2.7-4.7 .3-2.3-1-3zM244.2 160.5l-3.7-1.3-4.7 1.3-2.6 4.7 0 3.6-1 1.4-1.4-.4-1 1-3 0-.6 1-1.4-.3-.6 1-1.4-.3-.6 .6-1.7 0-.3 .7-1.4-.3-.6 1-1.4-.4-3 1.4 8 9.6 4 8.7 1 .3 1.4-1 .6 .4 15.7-5.4-2.3-8.3 4-6 2.3-6.3-1.3-3.7zM144.2 158.8l-13.4 3.4 0 .6 4.7 4.7 5 8.3 2.7-.3 .6-.7 .7 .4 .7-.7 .6 .3 2.7-1.6 .3-3.7-1.3-6-1.7-3.7zM213.2 156.5l-1.4 0-3.6 3-2 3.3-.7 4.4 5.3-2 2.4-4.4 .6-3.6zM73.5 152.8l-2.7-1-2 0-2.3 2.4-.7 1.3 .7 2.7-1.7 0 0 8.3-11 3.3 2 2.4 6.7-1.4 .7-.6 2.3 0 .7-.7 1.3 0 .7-.7 1 .4 2.3-1-1-3-3.3-5 .6-.4 2.7 2.4 1.7-.4 2.3-5zM59.8 144.2l-2 0-2 3 1 5-.3 1.3-4.3-4-2-1 3 8.3 .6 5 .7 1 0 2.7 8-2-1-2.7-3.7-5.6 .7-.4 2.7 2.4 1.3 .3 3-5.7 0-2-1.7-3.6-1.3 1.6zM106.2 144.2l-3.4-.7-2.6 2.3-1 2.4 0 1.6-.7 .7 .3 7.3-1.3 1-9.3 2-.4 .7 1.4 2 3.3-.3 .7-.7 .6 .3 5-1.3 .7-.7 2.3 0 2.7-1.3-3.3-6.7 .6-.3 1.7 1.3 1.3-.6 2.4-5-.4-3zM203.5 143.2l-4.3 0-3.4 3.3-.6 5.3-2 .4 3.3 10.6 .7 9.4 2.6-3.4 5-1.6-1.6-4 1.6-1.4 2.7-4.3 2-5-.3-4-3.4-4zM69.5 143.2l0 1 5.3 5.3 5.4 8.3 1.3 1 15.3-4-3.3-7.3 .3-.3 2.7 1.6 1-1 1.7-4.3-5.7 1-1 1-2.7 0-2.3 1-1-.3-.7 .6-4 .7-4-5.7-6.6 1-.7 .7zM137.5 136.2l-2.7-.4-2.6 2.4-1 2-.7 3.6 .7 6-11 3 1.3 2.7 7.3-1.7 .7-.6 2.3 0 4-1.7-2.3-6 1.7 .3 3-5 0-4zM170.5 134.2l-3.3 0-3.4 3.3-.6 5.7-1.7-1-1.3 0 3.3 10.3 .7 8.7 2.3-3.4 5.3-1.6-1.6-3.7 1.3 0 1.3-1.3 3.4-7 .3-2-.7-3.4-3.3-3.6zM103.8 135.5l5.4 6 5 8.7 1.6 .3 .7-.7 .7 .4 .6-.7 11.7-2.7-.3-2.3-2.4-4.3 .7-.4 1.7 .7 2.3-4.7-4.7 .7-1.3 1-2.3 0-6 1.7-2.4-4.7-1.3-1.3zM201.5 140.2l-1.7-7-1-1-.6 .6-3.4 .4-.6 .6-.7-.3-11.3 3 0 .7 2.3 2 5.3 7.3 4.7-4zM243.5 131.8l-5.3 0-3.4 3.4-1 6.6-1.6 0-.7 .7-1-.3-.7 .6-1.6 0-.4 .7-1-.3-9 2.3-.6 .7-1.7 0 6.7 8.6 2 3.4 2.6 6.6 4.4-3.6 3-1.7 2-.3 1.3-1.4 1 .4 .7-.7 8-2.3 2.3-3.4 1.7-4.3 0-1.3-1 0-2.7 1.6-3.7 6-1-1.6 6-10.7 0-4-2.3-3.7zM136.5 127.8l5.7 6.7 4.3 7.7 2.7 0 .3-.7 .7 .3 4.3-1.6 .7-3.7-1.4-6.3-3.3 .6-1.7-3.3-1.3 3.7-3.7-5zM308.2 122.5l-1.7 0-.7 .7-1-.4-2.3 1.4-1-.4-.7 .7-9 2 5 7 1.7 3.3 1.7 5.7 2 .3 1.6-1.6 2.4-1 .3 .6-1 2 .3 2 2.7 2.7-1 1.3-.7-.3-2.6 1.3-1-.3-.4 .7-1.3 0-.7 .6-2.6 0-1 1-1-.3-.4 .7-1.3-.4-.7 1-1.3-.3-.3 .7 5.6 7.6 2.7 5.7 1 3.7 16-5-.3-4-1.7-5.4 7-10.3-1-4.3-2-2-5.7-1.4-3.6 .4 .6-.7 .4-6.3-1-4.4zM168.2 122.2l2 4 1.6 0 1-.7 0-4.3zM98.8 120.8l-3.3 0-2.7 2.4-2 6.3 0 7.7-12 3 2.4 3.6 3.3-.6 .7-.7 2.6 0 2.7-1.3 2.7 0 .6-.7 1.4 0 .6-.7 1 .4 1-.7-.6-2.7-2.7-5 .3-.3 1.7 1.3 1.3 0 3-5.6-.3-4.4zM165.8 123.2l-.3-1-3.7-3 0 1-1.6 1-10.4 2-.3 1.3 1.3 2.3 1.4 0 2.3-1 2.3 0 .7-.6 1 .3 4-1.7 2.7 0zM72.5 113.2l-3.3 2.6-1 2.4 .3 .6 4-.6zM133.8 112.8l-2-.3-3 2.7-1.3 2.3 0 2.3-.7 1.4 0 4.3 .7 2.7-1.7 1-11 2.6 2 3.4 5-1 .7-.7 2.3 0 4.4-1.7 2.6 0 1-.6-2.3-6.7 2 0 3-5.3 0-4zM140.5 112.2l-3.3 .6 2.3 5 1.3-.3zM86.8 110.8l-3 .4-2 2.6-.3 2.4 1 3-.3 1.3-6-4.3 3 9 .6 6.3 .7 1-.3 3 9-2.3-.7-2.4-3.3-6 .3-.3 2.7 2 1.3-.7 2.7-5.3 0-3.3-1-2.7zM96.8 111.5l6.4 7.3 5.6 9.7 1 .3 3-1.3 2.7 0 .7-.7 8.6-1.6 1-.7-.3-2-2.3-5 .6-.3 1.4 .6 1-1 2.3-4.6 0-1.4-6 .7-2.7 2-1.6 8.7-.7 0-4-7.7-.7-.7-2 0-.3-1.6-2-3zM62.8 104.2l-2.6 .3-2 3 1 5.3-.4 1-4.3-4-2.3-1.3 3 9 1.3 6.3 1.7-2.3 4.6-1.3-2-3 .4-.7 3 2.3 1 0 3-5.3 0-3.7-1.7-3.3-2-.3zM84.8 105.8l-2-3.6-10.3 2 4.7 5.3 3.6-2.3zM191.8 115.2l0 1 4 4.3 3.7 5.3 4.3 9.7 1.7 0 3.3-1.3 1 .3 2.7-1.3 1.3 .3 1-1 3 0 .7-1 3.3 0 1-1 2.4 2 2.3 4 1 .7 2.3-2.7 3-2 4.4-1.3 3-1.7-1.4-2.3-1-6.4-.6-.6 0 2.3-.7 .7-1-.4-2.7 1.4-2.6 0-.7 .6-4.3 .7-2.4 1-2-1-1-3.3 4.7-6.7 2-6.7-1.7-4-4-3.3-4-.7-3.3 1.7-2.7 5.7 0 1.6-1.6 1.4-1-.4-3 1.4-1.4-.4-.6 .7-1.4-.3-1 1-1.3-.4-.3 .7-1.7-.3-.7 1-1.3-.7-.7 1-1.6-.3-.7 1-1-.7zM192.2 98.8l-2.7-.3-2.7 2-2.6 4-.4 2 2 0 6.7-2 .3-4.3zM160.2 90.8l-2.4-.3-3.6 2.7-2 3.3 0 1 2.3 0 6.3-1.7 .4-3.3zM230.8 89.5l-1.6 .3-3 2.4-2.7 5.3 3-.3 4.7-1.7 .6-4.3zM181.2 83.8l-4.7 .4-3 4-1 5-1-1-1 0-.3 .6 3.3 11 .3 9.4 .7-2 2.3-2.7 5-1.3-.6-2.4 1.6-1.3 3-5 1.7-5-.7-4.7-2.6-3.3zM131.2 84.2l-2.4-1-1.3 .3-3.3 3.3-1 2.7 7.3-1.3 1-1.7zM148.5 77.2l-4.3 .6-2.7 4 0 4.7-3.3-2.3-.7 .6 3 9.7 1 9.3 .3-1.3 2.4-2.7 4.6-1.3-.6-2 1.6 0 1-1 3-5.3 .7-3-.7-5.4-1.6-2.3zM103.2 77.2l-1.7-.7-1.3 .3-3.4 3.4-.6 2 6-1zM224.8 75.5l-3-1.7-4.6 .7-3 3.7-.4 3.3-1.3 2.3-3.3 0-.7 1-3.7 0-.3 .7-1.3-.3-.7 .6-9 1.7 6.7 8.7 4.6 9.3 1.7 .3 2.7-3 3.3-2 10.3-3-.6-3 3.6-5 2.7-6.3-.3-3.7zM118.8 71.2l-4 .3-2.3 3.7-.3 2.6 1 2.4-.4 .6-4.6-3.6-.7 .3 3 9.3 1 9 2-3.6 5-1.4 0-2.3 1 .7 1.7-.7 3-5.7 .3-5-.7-2-3-3.6zM75.8 70.5l-1.3 .3-2.7 2.7-.6 2 4.3-1zM194.2 72.8l-2.4-3-3-1.6-4.3 .3-2.7 3.3-1 4.7-1.3-.7-.3 .7-3.4 0-3 1.3-1.3-.3-.7 .7-1-.4-.6 .7-1.4-.3-.6 .6-1-.3-1 .7-5 .6 6.3 8 4.7-4.6 6.6-2.7 16-3 1-.7zM288.2 67.5l-.7 .7-1.3-.4-.7 1-1-.6-.7 1-1.3-.4-.7 .7-3 0-.3 .7-1.3-.4-.4 .7-1.3-.3-2.7 1 4.7 6.6 3.7 8.7 2.6 .7 2-2 2-1 1 .3-1.6 4.3 2.6 3-.3 1-16.7 3.7 6.4 10 3 9 4-1.3 .6 .3 3-1.3 2.4 0 2.6-1.4 2.7 0 1.3-1-1.6-9.6 5-6.4 2-4.6-1.4-4.7-2.3-2-3.7-1-4.3 0 0-5.3-1.3-6-1.7-3.4zM90.8 65.2l-3 .6-2.3 3.7 0 2.3 1 2.4-.3 1.3-5.4-4.7-1 0 3 9 1.4 8 1.6-3 5-1.3-.6-1.7 .3-.6 2 1.3 1-.3 3.3-6 0-4.4-1.3-3.3zM123.2 65.2l-2.7-2-2 0-.3 .6-1.7 0-.7 .7-1.3-.3-12.7 2.3 3.4 4.3 1.6 1 3.4-3 2.6-1.3zM163.8 68.8l-.6-2-2.7-3-3.3-1.3-3.4 1-2 3-.6 4.7-2.4-2-.6 .6-1.4-.3-.6 .7-1.4-.4-.3 .7-1.3-.3-.7 .6-1.3-.3-.7 .7-10.3 1.6 0 .7 5.3 6 3.7-3.7 6.3-2.6 18-3.4zM253.5 61.2l-.7 .6-1-.3-.6 .7-3 0-.4 .6-9.6 1.7 3.3 4 2.7 .3 2.6 1.4 3.7-3 3.7-1.4 .3 .7-2.7 3.3 0 3.7 .7 .7-.3 1.3-1.4-.3-.6 1-3.4 0-.3 .6-1.3-.3-.7 .7-1.3-.4-.7 .7-1-.3-.7 .6-6.3 1 6 8.7 3.3 8 2.4 .7 4-3.4 3-1.3 1 .3-1 .7-2.4 5 0 1.7 1 2-6 1.3-.6 .7-1.4-.4-2.6 1.4-1.4-.4-.3 .7-3.3 0-.7 1-1.7-.3-.3 .6 7 9.7 3.7 9.7 5.3-1 3-1.4 2.7 0 1-1 2.6 0 1-1 1.4 .4 1-.7 1 1.7-.7 3.3 3.7 1.3 4.3-3.6 1.7-.7 .6 .3-1.3 1.7-.7 5 1.4 1.7-.4 1-3 0-2.6 1.3-.7-.3-10.7 3 5.7 7.3 2 3.7 2 6 1 .3 4.7-3.7 1.6-.6 1 .3-2.3 3.7 0 2.6 1.3 2-.6 1.4-1.4-.4-.3 .7-1.7 0-.3 .7-1.3-.4-.4 .7-1.6 0-.4 .7-1.3-.4-.7 1-3 0-.6 1-1.4-.3-.6 .7-1.4 0-.3 .6 7.3 10 2.7 7 1.7 .7 .6-.7 4.7-1 7-2.6 .7 .3 2-.7 1-1-.4-3-1.6-4 0-2 3.6-5 2.7-5.3 0-1.3-1.3-3.7-2.7-2.7-3-.6-4.3 .3-.4-.7 7-2.3 3-4.3 2-4.7-2 .7-3 3-1 2.3-.6-.3-.4-1.7 6.4-10 0-3.3-3-4.4-3-1.3-3.7 0-3-7-1.7-.3-.3 .6-9 2-1.7-2.6-.6-2.7 5-7 1.6-4.3 0-2-1.3-3.4-3-3-4-.6-.7-1 9-2.7 1-1.3 .7-3.7-1-1.3-3.3 2-2.7 4.3-1-.7 .3-2 6-9.3 0-4.7-3.3-4.3-3.3-1.3-3.7 .3-1.3-3.7zM65.5 59.8l-3 .7-2 3.7 1.3 5.3-.3 .7-6.3-5.7-1 .3 3 8 1.3 8.4 2-3.4 4.7-1.3-1.4-2.3 .4-.7 2 2 1.3 .7 1-.4 3-6-.3-4-1.7-3.3zM232.5 65.2l-1.7-2.7-2.3-2-2-1-4 .3-3.3 3.7-.4 4-1 1.3-1.3-.3-.3 .7-1.4-.4-.6 .7-3 0-.7 .7-1-.4-.7 .7-8.3 1.3 4.3 5.7 3 1.3 5-4.3 5-1.3 1.7-1.4 12.7-2.3 .6-1zM123.8 62.2l.4 2.6 10.6-1.6-.6-2.7-4-3-3.7 .3zM96.2 59.2l-1.7-1.4-2-.3-.7 .7-3.3 0-.3 .6-1.4-.3-.6 .7-9.4 1.3-.6 .7 4 4.3 2.3-2.7 3.3-1.6zM224.2 57.8l-1-2-1.7-.3-.7 .7-1-.4-2.3 1-1.3-.3-.4 .7-1.3-.4-.7 .7-1-.3-.6 .6-1-.3-.7 .7-1-.4-3 1 3.3 3.7 4 1.3 3.7-3.3 5.3-1.7zM200.5 58.8l-2.7-3-2.3-1.3-3.7 .3-3 3.7-.6 3.7-2.7 0-.7 .6-1.3-.3-.7 .7-1-.4-.6 .7-10.7 1.7-1 .6 3.3 4.4 2.7 2 3.7-4 6.6-3 14-2.4 1.4-.6zM108.2 56.2l-2-2.4-2.4-1.3-3 .3-2.3 3.4-.3 2 4.3 0 5-1zM132.8 52.5l-1.6-1.3-1.7 0-.7 .6-1.3-.3-.3 .7-1.4-.4-.6 .7-3 0-.7 .7-1-.4-5.7 1-.6 .7 4 4.7 3.3-3.4 2.7-1.3zM194.2 51.5l-.7-1-1.7-.3-.3 .6-1.3-.3-2.4 1-1-.3-9 1.6-.3 .7 3 3.7 2.7 1 4.3-4 5-2 1 .3zM171.8 55.5l-2-3.7-3.3-2-4 1-2 3-.7 3.7-1.6-1-2 0-.4 .7-1.3-.4-.7 .7-1.3-.3-.3 .6-1.4-.3-2.3 1-1.3-.3-.7 .6-.7-.3-1 .7-1.3-.4-3 .7 4.7 6 .6 0 3.7-4 5.3-2.3 1.4 .3 .6-.7 14-2.3zM144.5 49.8l-2.7-3.3-2-1-3.3 .3-2.3 3.7 0 2.7 10.3-1.7zM166.5 46.2l-.3-.7-1.7-.3-2.3 1-1-.4-7.4 1.7-.6-.3-1 .6-1-.3-.7 1 2.3 3.3 2 1 3.7-3.6z"/><path fill="#0a4995" d="M226.2 472.5l2.3 4.3 1.3 5.4 2-.7 .7-1 1 0 .3-1.3-4.6-5zM218.8 468.8l-3.3 1.4-.7 1-1 0 .4 1 3.6 2.6zM229.5 465.2l-1.7 2 1 4.6 1.7 1.4 2 .3 2-3.7-.3-2.3-2.4-2zM254.8 455.8l-2 .4-3.6 2.3-.4-.3-.6 1-1 0 .6 2.6-4.6 2.7 6.6 6.7 9.7-5 .7-1 2.3-.7 .3-.7-.3-1.3-2.7-3zM200.2 454.5l2.6 5 1 4.7 2.4-.7 .6-1 .7 .3 .7-1.3-4.7-5zM193.5 451.8l-3.3 2-1 0 .3 1 3.3 2.4zM236.8 450.8l2.7 5 1 5.4 .7 .3 .6-1 1 0 1-1 .4 .3 1-1-.7-1.3-4.7-5zM257.5 449.5l-1 1.3 0 1.7 1.3 3.7 1 1 2.7 .3 1.7-3.7-.7 .4-3-3.7zM228.8 448.2l-5 2.3 4 3.7zM203.8 448.2l-1 1.6 .7 4.4 1.7 1.3 2 .3 1.6-2.6 .4-2-.7-1.4-2.3-1.6zM239.5 443.5l-1.3 2.3 2 5.7 3.3 .7 2-3.4-.3-3-2.7-2.6zM175.8 437.5l2.7 5 1 4.7 .7 .3 1-1 2.3-.7 0-1.6-5.7-5.7zM287.5 433.8l-2 0-2 2.4 2 4.6-.3 .7-2.7-1-1.7 1.3-3.6 1.4 .6 2.3-6 3.7 6.4 6.3 12-6.3 .3-.7-2-3.7-2.3-2.3 2.3 0 2-3-.3-2-1.7-3zM232.2 433.8l-1 1.4 0 1.3 1.3 2.7 1.7-2.7 0-1zM209.2 432.5l2.6 5 1 5 1 .7 1.7-.7 .7-1 .6 .3 .7-1-.7-1.6-3.6-4zM180.2 431.8l-1 2 .6 4 2 1.4 1.7 0 1.3-2.4 .4-2.3-2-2.3-1.4-.7zM202.2 431.2l-4.4 1.6 0 .7 3.7 3zM271.5 426.8l-2 .4-1.7 2.3 2 4.7-.3 1.3-3-1.7-1.7 .7-2 1.7-.6-.4-.7 1-1 0-.7 .7 .4 1.3-1 1-5 2.7 7 7.3 1.3 0 6.3-3.3 2-1.7 1 0 2.4-1.6 .3 .3 .7-1-.4-1.3-4.6-5.4 .6-.3 2.4 .7 2.3-4zM248.8 426.8l3 6.4 .7 5 2.7-.7 .6-1 .7 .3 .7-1-.4-1.6-5.6-6.4zM309.8 426.5l-4 1.7 .4 2-1 1-6 3 6 6.3 8.3-4.3 .3-3.4-2-5.3zM212.8 426.2l-1 1.6 0 2.4 1 3 3.7 1.3 2-3.3 0-2-2.3-3zM239.8 425.2l-4.6 2 .3 1.3 3.3 2.7zM153.2 421.8l2.3 4.4 1 4.6 1.3 .7 .4-.7 2.3-.6 .7-.7-.4-1-5.3-5.3zM251.8 419.2l-2 2.6 2 5.7 1.4 1 2.3 .3 2.3-4-.6-3.6-2.7-2.4zM157.5 416.8l-.7 2 .4 3 .6 1 2.7 1 1.7-2 .6-2-.3-1-2.7-2.3zM301.5 411.5l-3 0-2.3 2.7 0 1 2 3.3-.4 1-2-.7-2.6 1-.7 1-.7-.3-1.6 3-6.4 3.3 7.4 7.4 13-7.4-4-5.6 2-.7 1.6-3.3 0-2.4zM245.8 410.8l-2-.3-1.6 .7-1 1.6 1 3.4 1.6-.4 2.4-3.6zM181.5 408.2l-4.7 1.3-8.6 4.3 8.3 8.4 10-5 1 0 1.7-1.4-3-4.3zM131.8 406.8l2.4 5 1 4.7 4-1.3 .6-1-5-5.4zM324.2 404.5l-3 1-1.4 2.3-7.3 4 6.3 7 1 0 8-4.6 .4-2-2-6.4zM185.5 403.2l-1 2.6 .7 2.7 2 1.7 1.6 0 1.7-3 0-1.4-2.3-2.6zM286.2 402.5l-1-.3-2.7 .6-1.7 2.4 0 1.3 2 3.7-.3 .6-2-.6-2 .3-1 1-3.7 1.3 0 1-7.6 4 0 .7 2 1.3 6.3 7 6.7-3.6 2.3-.7 .7-1 1 0 3.6-2.3-1.3-2.7-3.3-4 2.3 0 2.3-3.7 0-2.6zM137.2 402.2l-1 .6-.4 3.7 1 1.7 2.4 1 1.3-1 1-3.4-2-2.3zM252.2 400.2l-4.7 2 4 3.6zM210.2 395.8l-2-.6-4.4 2.3-1 0-.3 .7-2 .3-4 2-.3 .7 7.6 7.6 5.4-2 .3-.6 1 0 .3-.7 1 0 .4-.7 1 0 .3-.6 1 0 .3-.7 .7 .3 .7-1-2.7-4zM159.2 393.8l-12.7 5.7 8.3 8 2.7-.7 .3-.6 1 0 4.7-2.7 .7 .3 .3-.6 1 0 2-1.4-3.3-4.6zM111.8 393.2l2 4.3 1 4.3 1 .7 2-1.3 1 0 .7-1-1.3-1.7zM267.8 391.8l-3.6 .7-1.4 2.3 0 1.7 2 4.3-1 .4-1.6-1 3 6.3 .6 5 1 1.3 2.4-2 1 .4 1-1.4-2.7-4.3-2.3-2.3 .3-.7 2.7 0 2.3-4.3-.7-4.4zM213.5 389.8l-2 1-.3 2.7 1.3 3.3 2.7 .7 1-1 1-3-1-2.3zM164.2 389.5l-.7 .7-.3 2.3 .6 2.3 1 1 2.4 .4 1.6-2.7 0-1.7-1.6-2-1.4-.6zM117.5 388.5l-1.3 1 0 4 1.6 1.3 2 .4 .7-1-2-5.7zM315.2 386.5l-3.4 .7-1.6 2.6 0 1.7 2 3-3 .7-3 1.6-.4 1-8.6 4.4 5.3 5 2.3 3.3 1 0 13-7-1-2.3-2.6-3.4 2.6-3.3 .7-2 0-3.3-1.3-1.7zM234.8 383.2l-11.6 5 0 .6 7 7.4 1 0 4.6-2.7 .4 .3 2.3-1.6-1-5.7-1.3-2.7zM186.8 381.8l-2 .4-5.6 3-4.7 1.6 0 .7 7.7 7.7 12-5.7-2.7-4zM150.5 389.8l0-1-4-4.6-4-3-14 5.6 9 8.4 2-.4zM340.2 380.5l-2 .3-3.4 2.4-7.6 3.6 7.3 8.7 1-1 7.7-3.7 .3-.6-.7-5.7-1.3-3.3zM191.8 376.8l-2 1-.3 2.4 1 3 3 1 1.3-2 .4-2.4-1.7-2.3zM147.5 376.8l-1 1.7 .7 4.3 3.3 1 1.7-2.6 0-1.7-2.4-2.7zM300.8 375.2l-3.6 .3-2.4 3.3 0 1 2 3-.3 1.4-1.3-.7-2 .7-3.7 2.3-2.7 .7-.6 1-.7-.4-.7 1-1.3 0-.7 1-.6-.3-.7 1-1-.3-.7 1 6.4 6 2.6 3.6 1 0 4.4-2.6 5.6-2.4 .7-1 2.7-.6 .6-1-.6-2.4-3-3.6 .3-1 1.3-.4 2-4 0-4zM265.8 371.8l-4.3 2 3.7 3.7zM115.8 371.2l2 4 1.4 5.6 1.3 .4 3.7-1.7-1.7-2.7-3.7-3.6zM212.8 370.5l-1.6 0-5.7 3-4.7 1.7 7.4 8 5.3-2.7 .3 .3 2.4-1.6-1-5.4-1-2.3zM170.8 369.2l-1.6 0-.4 .6-11.3 4.7 8.7 8.3 12.3-5.6-2.7-4-2.6-2.7zM122.2 366.5l-1.7 1.3 0 4 .7 1 3 1 1.3-2 .3-2.6-1.6-2zM175.5 364.2l-1.7 2 .7 3.6 2 1.7 1.7 0 1.6-3.3-.3-1.4-2-2.3zM282.8 361.5l-3.6 .7-2 3.3 0 1.3 2 3.4-.4 1-1.6-.4 2.6 5.4 1.4 7.3 .6 .7 1-1.4 1 .4 2.7-2-.3-1.7-4.4-5.7 2-.3 1.4-1.3 1.6-4-.6-4.7zM332.2 359.5l-2.4-.3-2.6 1-1.7 3 0 1.6 2 2.7-.7 1-6 2.3-3.6 2.4-2.7 .6-.7 1-1 0 .4 1.4 5 4.6 3 4 10.6-6 .7 .4 2.3-2-1.3-3.4-2-2.3 3.3-6.3 0-3.4zM145.2 359.2l-1.4-.4-5.3 2-2 1.4-5 1.6 0 .7 7.3 7.7 2 .3 2-1.3 .7 .3 9-4.3-3.7-5zM95.8 358.2l2 4 1.4 6 5-2-5-6zM150.5 354.2l-1.7 1-.3 3.6 1 2 3 .7 1-1.3 .7-2.7-2-2.7zM356.8 353.8l-7.6 4-1 0-.4 .7-4 1.3 .4 1.4 2.6 2.3 4 5.7 9.7-5-.3-5.7-1.7-4zM102.2 353.8l-1.4 1-.3 3.4 1 1.6 2.7 1 1-1 1-3-1.7-2.3zM203.8 352.5l-2.3 0-1.3 1.3 1 4-.4 1.4-3-1.7-1.3 0-2 1.3-2 .4-7.3 3.3 8.3 8.3 11-5 .3-1.3-3.6-4.7 .3-.6 2.7 .6 1.6-2.3-.3-3.3zM172.5 347.5l-1.3 0-11.7 5 8 8.3 12.3-5.3-2.6-4.3zM124.5 346.5l-1.7 0-11.6 5 7.3 7.7 2 .6 .3-.6 11.4-4.7-3.4-4.7zM318.5 345.2l-3-.7-3.3 1.7-1.4 2.6 0 1.7 1.7 2.3-.3 1.4-9 3.6-.4 .7-1.3 0-.7 1-1-.3-.3 1-1.3 0-.7 1-1-.4-.3 .7 6.3 6.7 2.7 4 7-3.7 1 0 .6-1 1 .3 2.4-2 1 .4 2.6-2-1-3.7-1 0-2-3 2.4-2.3 1.6-4 0-3.7zM177.5 342.5l-2 1.3 0 3 1.3 2.7 2.4 .7 1-1 1-3-1-2.4zM130.2 342.2l-1.7 1.3 0 3.3 1 1.7 2.7 .7 1.6-2.7 0-1.3-1.6-2.4zM198.8 336.5l-12 4.7 7.4 8 3.6-1 .4-.7 2-.3 2-1.4-1-6-1-2.3zM151.8 335.5l-1.3 0-6.7 3-4.6 1.3 0 .7 7.6 8 12.4-5-3.7-5.3zM106.5 332.5l-2 0-.3 .7-4 1-.4 .6-7.3 2.7 9 9 3.3-1.7 6.4-2 2-1.3 1 0 .3-.7-3-4zM156.5 331.2l-1.3 1 0 3.3 1 2 2.6 .7 1.7-2.7 0-1.3-1.3-2.4zM350.5 329.2l-2.7-.7-3 1-2.3 3.7 0 2 2.7 2.6 0 1.4-2.7 .6-6.3 3.4-1 0-.4 .6-2.6 .7-.4 .7-1.3 0 0 1 4 4 4 5.6 8-4.3 2.3-.7 .7-1 1 .4 2-1.7 0-1.7-3-5.3 2.7-4 1-3 0-3zM112.2 328.5l-1.4 2 .4 3.3 2.3 1.7 1.3 0 1.4-2 .3-2-1.7-2.3-1-.7zM301.2 325.5l-4.4-.3-2.6 2.6-.4 3.4 1.7 2.3 0 1-1.3-.3-.4 1-1.3-.4-.3 1-1.4-.3-.6 1.3-1.4-.3-.3 1-1.3-.3-.4 1-1.3 0-.7 1-1-.4-.6 1-1-.3-4.7 2.7 5 5 4 6 1.3 .3 1-1.3 1 .3 .7-1 3-.7 .7-1 .6 .4 1-1 6.7-2.7 1-1-3.7-6.3 0-1 1.7-1 1.7-3 .6-6zM176.8 325.2l-10.6 4 0 1 7 7.3 2-.3 2.3-1.4 .3 .4 3.4-2-1-5.7-1.4-3zM377.2 324.5l-1.4 0-.6 1-.7-.3-2.3 1.6-9.4 3.7 .4 1.3 4 4.4 2.3 4 8.7-4 1.3-1.4-.3-6zM79.5 322.2l2 4 1.7 6.3 4.6-1.7 0-1-4.3-5zM134.8 321.5l-1.3 0-2 1.3-2.3 .4-2 1.3-.7-.3-4.7 2 8.4 9 5.3-2 .3-.7 6.4-2 .3-.7-2.7-4.3zM86.5 318.2l-1.7 1.6 0 3.7 3.7 2 1-1 1-3-2-2.7zM139.5 317.5l-1 2.3 .7 3.4 2 1.3 1.3 0 1.7-2.7 0-1.6-2.4-2.7zM162.5 311.2l-1.7 0-11 4.3 7.7 8.7 11.7-4.4 .3-.6-2.3-4zM108.8 311.2l-13.3 4.6 8.3 9 13-5-3.3-5zM263.8 310.8l-1.6 0-2.7 1.4-1 2.6 0 2 1.3 2.7-2 0 2.7 7 .7 6.7 .6 .6 1.4-1 1 .4 .6-1 1.4 0 .6-1 .7 .3-4-7.7 1.7-.6 2-2.7 1-5-1-3zM334.5 309.2l-3.7 0-3.3 3-.3 3.6 2.3 2.4-.7 1.6-1-.3-.6 1-1-.3-.7 1-1-.4-.3 1-1.4 0-.6 1-1-.3-.7 1-1-.3-.7 1-1-.4-.6 1-1.4 0-2 1.7 4.7 5 3.3 5.3 1.4 0 .6-1 1 .4 .4-1 1 .3 .6-1 1.4 0 2-1.7 1.3 0 .3-.6 4.7-1.7 1.3-1.3-3.6-6 0-1 2.3-3 1.7-6.4-1-1.6zM115.2 307.2l-1.7 1.3 0 4 .7 1 3 1 1.6-2.7 0-1.6-1.3-2zM166.2 306.8l-1 2 .6 3.4 .7 1 2.3 1 2-3-.3-2.4-2.3-2.3zM137.8 301.2l-1.6-.4-12 4.7 6.6 7.3 2 1.4 11.7-5-2.7-4.4zM141.8 296.8l-1 1 0 3.7 1.4 2 2 .7 2-3 0-1.4-2-2.6zM89.8 295.8l-13.6 5 9 9.4 13.6-5-4.6-6zM299.2 295.2l-1.7 0-3 1.3-1.3 3.7 0 1.3 1.3 2-.7 1.3-12.6 4.7-.4 .7-1.3 0-.3 .6-1.4 0 .4 1.4 4.3 4.3 4 6.3 2.3-1.3 .7 .3 1-1 .7 .4 2.6-2 1 .3 .7-1 1 .3 .7-1 1 .4 .6-1 1 .3 .7-1.3 1 .3 1.3-1-3.3-6.3 0-1 1.7-1.4 1.3-2.3 1-3.7-.7-3.6zM366.8 294.2l-4.3 0-3.3 3-.4 3.6 3 2.4 .7 1-.3 1-1 0-1 1-.7-.4-.7 1-1-.3-.6 1-1-.3-.4 1-1-.4-.6 1-1-.3-.7 1-1-.3-.3 1-1.4-.4-.3 1-1.3 0 .3 1.7 3 3 3.3 5.7 1 .3 .7-1 2.7-.7 .6-1 .7 .4 .7-1 .6 .3 1-1 .7 .3 .7-1 2.6-.6 2.7-1.7-.3-1.7-3-5.3 2-3 2.3-6.3-1.3-2.4zM96.2 292.5l-1 1.7 .3 4 3.3 1.6 1.7-2.3 .3-2-2.6-3zM164.2 291.2l-2.7 .3-9.7 3.7 0 .6 4 3.7 3.4 4.3 7.6-3.3-.6-5.3zM119.8 285.8l-2 0-.3 .7-11 3.3 .3 1.4 7.7 8.3 8.7-3.3 2.3-.4 2-1.3-3-4.7zM62.8 285.5l2 4 1.7 6.7 4.7-2 .3-.7-4-5-3.7-3zM125.2 281.8l-1.4 1.4 0 3.6 1.7 2 2 .4 1.3-1.7 .4-2.7-2-2.6zM69.8 281.8l-1.3 1.7 .3 4 2.7 1.7 1 0 2-3.7-2-3zM335.2 281.5l-4.4-1.3-3.3 1.6-1.7 5 3 3.4-.6 .6-1-.3-.4 1-1.3-.3-.3 1-1-.4-.7 1-1-.3-1 1-.3-.3-8 3.3 4.3 5.3 3.3 5.7 4.7-1.7 .3-.6 1.4 0 2-1.7 1 .3 .6-1 1 .4 .7-1 .7 .3 .6-1 1 .3 1-1-.3-2-2.3-4.3 0-1.3 1.6-2 2-5-.3-3zM361.2 277.5l-1.4-.3-.6 1-1-.4-.7 1-1-.3-.3 1-1-.3-.7 1-1-.4-.3 .7-1.4 0-.3 .7-5.3 2 4.6 5.3 2.4 4.7 1 0 4-2.4 .6 .4 .7-1 1.7-.7 .6 .3 1.4-1.3 .3-3.7-.7-3.6zM147.8 275.8l-12.6 4 .3 1.4 2.3 2 4.7 6 12.3-4.4-.6-2.3-3-4.3zM93.5 275.2l-3 .3-11 4 8.3 9.3 1.4 0 1.6-1.3 10.4-4-3-4.3zM282.8 273.8l-2.6-.6-2.4 .3-3 4 0 1.3 2 3-.3 .7-1.3-.3-2.4 1.3-1.3 0-.7 1-1-.3-.6 1-1.4-.4-.6 1-1-.3-.7 1-1.3-.3-.7 1-1-.4-1 1.4-1.3-.4-.4 1-1.3-.3-.3 1 3.6 4 5.4 8 1.3 0 .3-.7 9.4-3.3 1-1 .6 .3 1-1 .7 .4 2.7-1.7 0-1.3-3-5.4 0-1 2.6-2.6 1.4-3.7 0-4.3zM151.5 272.2l-.7 2 .7 3.3 .7 1 2.6 .7 1.7-2.7-.3-2.7-2-2zM99.2 271.5l-1.4 1.7 .4 4 2.3 1.6 1.3 0 1.7-3-.3-2-1.4-1.6zM122.5 265.5l-2 0-1.7 1-10 3 8.4 9.3 5.3-2.6 7-2.4-2.7-4.3zM127.2 261.5l-1.4 1.7 .7 4.6 2.7 1.4 1.3-1 1-2-.3-2.4-1.7-2zM316.8 258.5l-4.3 .3-2.7 3.4 0 3 1.7 1.6 0 1.7-5.7 2.3-1.3 0-.3 .7-1.4 0-.3 .7-1.3 0-.7 1-1-.4-.7 1-1.3-.3-.3 1-1.4-.3 .4 2 4 4.3 3.6 6 1.4-1 .6 .3 1-1 .7 .4 1-1 1.3 0 1.4-1 7.6-2.7 .7-1-3-7.3 3-4 1.3-6-2.6-3zM73.5 258.5l-14 4.3 8.7 10 1.6 0 .7-.6 .7 .3 2-1.3 1 .3 2-1.3 1 .3 2-1.3 .6 .3 2.7-1.3-3.7-5.4zM243.8 258.2l-1.3 0-3 2-.7 3.3 1.4 3.7-.4 .3-2-1 0 2 1.7 3.3 1 4 .3 5.7 .7 .3 6-2.3 0-1-3.7-7 1.7-.3 2.3-3 .7-6-1.3-2.7zM149.5 256.2l-12.3 4 7.6 9 7.7-3.4-1.3-7zM80.8 255.2l-1.6 1.3 0 4.3 3.6 2 2-4-2-3zM103.5 248.8l-8.7 2.7-.6 .7-.7-.4-.7 .7-2.3 .3 .3 1.4 7.7 8.6 1.3 0 .7-.6 .7 .3 2-1.3 1 .3 .3-.7 2.3-.3 .7-.7 .7 .4 3.6-1.7-3.3-5.7-2.7-2.6zM45.8 247.5l2.7 6.7 .7 4.3 3-1.7 2.3-.3-3.7-5.3zM109.2 245.5l-1 2.3 .3 3.4 3.3 2 2-3 0-1.7-3-3.3zM349.8 244.5l-4 .3-3.3 4 0 2.4 3.7 3.6-.4 .7-7 2.7-1.3 0-.3 .6-1.4 0-.3 .7-1.3 0-2 1.3-1.4 0 7.4 11.4 13.6-5.7 1-1-3-7.3 3.4-5.4 1-4.3-2-2.7zM53.2 244.5l-1.4 1.7 .4 4 2.6 1.6 1 0 1-1 1-3-2.6-3.3zM282.8 244.5l-4-.7-3 2-1 3.4 1 2.3-.6 2-1.4-.3-.3 1-1.3-.4-.4 .7-1.3 0-.7 .7-1.3 0-.3 .6-3.4 .7-.3 .7-6 1.6 4.7 5.7 4 7 1.6 0 .4-1 1.3 .3 .7-1 1 .4 .6-1 1 .3 .7-1 1 .3 1-1 3-.6 .3-.7 1.4 0 .3-.7 1.3 0 1.4-1-3-6.3 0-1 3-3.7 1-3.6 0-2.7-1-2zM134.2 240.5l-2.4-.7-7.6 2.4-.7 .6-.7-.3-.6 .7-2.4 .3 0 .7 4.4 4.6 3 4.4 2.6-.4 .7-.6 .7 .3 3.3-1.7 .7 .4 5-2-2.4-4.7zM77.5 238.2l-1.7-.4-2.3 1.4-.7-.4-.6 .7-9.4 2.7 9.4 10 6.3-3.7 6.3-1.7-4-6zM138.2 235.8l-1.7 1-.3 3 .6 2.4 2.7 1.6 1.3-1 1-2 0-1.6-1.6-2.7zM83.2 234.8l-1.4 1.7 .4 3.7 1.3 1.3 2.3 .7 1.7-2.4 0-2.3-2.3-2.7zM317.5 231.2l-4-1-3.3 2-1.4 4.3 2.4 2.7-.4 1.3-1-.3-.6 1-1.4-.4-.3 1-1.3-.3-.4 1-1.3-.3-.7 1-1-.4-.3 .7-7.7 2.3 5 6 2.7 5.7 .7-.3 .6 .6 1-1.3 .7 .7 1-1.4 .7 .7 1-1.3 .6 .6 1-1.3 .7 .7 1-1.4 .7 .7 .6-1 1 .3 .7-1 1.3 0 .4-.6 2.3-.7-2.7-6.7 0-1 2.4-3 1.6-4.6 0-2-1-2zM106.8 228.8l-13.6 4 8.6 10 4.7-3 7.3-2.3-3-5zM344.2 228.5l-1-.3-.7 1-1-.4-.7 1-2.3 0-.7 1-1-.3-.6 1-1-.3-.7 1-1-.4-.3 .7-3 .7-.4 .6 3.4 4.4 2.6 6 1.4 .3 .6-1 1 .3 1-1 .7 .4 .7-1 1 .3 .6-1 .7 .7 .7-1 1 .3 1.3-1.3-.3-7.4zM111.8 225.5l-1 1.3 .4 4.7 3.3 1.7 1.7-2.4 0-2.6-1.7-2.4zM60.8 223.5l0 8.3 5-1.3zM134.8 220.5l-4 .7-.3 .6-.7-.3-.6 .7-7 2 3.6 4 3.7 5.3 1 0 7-3.7-.3-3.6zM263.2 219.8l-2.4-.6-3.3 1-2 3.6 0 1.4 1 1.6-.3 1-8.7 2.7-.3 .7-1.7 0-.3 .6-1.7 0-.3 .7-1.4-.3-.6 1-1.4-.4-.6 1-1.4-.3 .4 2 5.3 6.3 3.3 6 6-2.3 1.4 0 1-1 1 .3 .6-1 1 .4 .7-1 1.3 .3 .7-1 1.3 .3 .7-1 1 .4 1-1-2.7-6.4 0-1.3 1.7-1.3 1.7-2.7 .6-2 0-5zM64.5 218.5l-1.3 .7-1 2.6 1.3 2 1.7 1 1.3 0 1.7-3 0-1.3-1-1.3zM47.5 217.8l0 1.4 2.7 6 .6 5 1 .3 .4-.7 2.6-.3 .7-.7 1 .4 .3-1.7-5.3-7zM91.8 214.8l-.3 5.7 .7 2.3 3.6-1.3 0-1zM54.8 214.8l-1.3 2 .3 4 2.4 1.7 1.6 .3 2-3.3 0-1.3-2.3-3zM95.2 209.5l-2 1.7-.7 2.3 1 1.3 2.7 1 2-3 0-1.3-1-1.7zM79.8 208.5l-14.3 4 9 11 14-4.3-.3-1.7-5.4-7zM121.2 206.5l.3 7.3 3.3-1 0-1-2-3.6zM299.8 206.5l-2.6-.7-3.7 1.4-2 3.6 0 1.7 1.7 2 0 1.3-11.4 3.4-.3 .6-1-.3-1 1-1-.3-.7 1-1.3-.4 .3 1.7 5.4 6.7 2.3 5 7.3-3 1 .3 2.7-1.7 1 .4 .7-1 1 .3 .6-1 1.4 .3 .6-1-2.3-7.6 3.3-5 .7-2.4 0-3.6zM86.2 205.2l-1.4 2.3 .7 4.3 3.3 1.7 1.4-1.3 1-2.7-1-2.3-1.7-1.7zM224.8 203.8l-2.6-.3-3.4 3-.3 2 1.7 3.7-.4 1-2.6-2-1 1 3 8.6 .3 7 3.3-2 3.7-1-3-7.3 1.7-.3 2.6-3.7 .4-6.3-1-1.7zM125.2 200.8l-2.4 1.7-1.3 2.3 .7 1.4 2 1 1.6-1 1-2 0-1.7zM111.2 199.8l-1.7 0-5 2-1-.3-.7 .7-6 1.6 4.4 4.7 4 5.7 13.6-4-2.6-5.4zM116.2 196.2l-1.4 2 .7 4.6 1.7 1.4 1.6 .3 2-3-.3-2.7-2-2.3zM334.5 194.2l-3-1-2.7 .6-1.3 1-2 3.4 0 1.3 3 3 0 1.7-15.7 4.6 .4 1.4 4.3 5.6 2.3 5.4 8-2.7 4-2 .7 .3 2.7-1.6-2.4-7.7 1.7-2 2.3-4.7 .4-3.6zM68.2 199.5l-4-6-1.4-1 .4 8.3-.7 .7-4 .7-.7 .6-5 1.4 1.4 .3 .6-.7 1.4 0 .3-.6 1 .3 4-1.7 .7 .4 .6-.7 2.7-.3 2.7-1zM140.2 191.8l-1-.3-.7 .7-11.3 3 7.6 10.3 8-2.7-.3-5zM264.2 191.5l-1.7-.7-3.3 0-3 3.4-.4 2.3 1.4 2-1 .3-.4 1-1.3-.3-.7 1-1.3-.3-.7 1-1-.7-.6 1-1.4-.3-.6 1-1.4-.4-.3 1-1.7-.3-.3 .7-1.3 0-.7 .6-1-.3-.7 1-1.3-.3-1.3 .6 4.6 5.4 4.4 8 1.3 .3 .7-1 1.3 .3 .7-1 13.3-5-2.3-7 1.3-1 2-3.3 1-5.7zM66.5 186.8l-2 2.4 0 2.3 1.7 2 2.6 .7 2-4-1.3-2.7zM49.5 185.2l-.3 1.3 2.6 6.7 .7 5.3 1 .3 .7-.6 2.6 0 .7-1 1 .3 .7-1.3-4.4-6.4zM99.8 190.8l-4.6-7-.4 4 .7 4-.7 .7-9.6 2.7 1.3 .3 2.3-1.3 .7 .3 .7-.7 .6 .4 4-1.7 .7 .3 .7-.6 3.6-.7zM57.2 182.2l-1.7 2.3 .3 4.3 3 2 1.4 0 2-4.3-3-4zM299.5 179.2l-4.3-.7-3.4 2.7-.6 3.3 2 2.7-.7 1.3-1.3-.3-2 1.3-1.4-.3-.6 1-1.4-.4-.3 .7-1-.3-.7 1-1.3-.4-.7 1-2.6 0-.7 1-1.3-.3 0 2 3.3 4 3.3 7 3 0 .7-1 1.3 0 .4-.7 11-4-2.4-7 2.7-3.6 1.7-5 0-1.7-1.4-2.3zM98.8 178.2l-2.3 2-.7 2 1.4 2.3 1.6 1 1.4 0 1.6-2.7 0-2.3-1.6-2.3zM326.5 177.5l-2.3 .7-.4 .6-1-.3-.6 .7-1.4 0-.3 .6-1-.3-.7 1-1.3-.3-.3 .6-1-.3-.7 1-1.3-.3-.4 .6-1.3 0 .3 1.7 2.7 3.3 2 4 .7 2.7 1 .7 1.3-1 1 .3 .3-.7 1.4 0 2-1.3 .6 .3 3-1.6 .4-5.7-.7-3.7-1.3-3zM83.2 176.5l-1.4 0-.6 .7-1-.4-.4 .7-1.3 0-.7 .7-1-.4-.3 .7-1-.3-.7 .6-3 .4-3.6 1.3 9.3 11.7 7.7-2 .6-.7 2.4 0 4-1.7-3.7-6.6-2.7-3zM89.5 173.2l-1.3 2.3 .6 4.7 2.7 1.6 1.3 0 2-3.6-.6-2.4-2.4-2.6zM130.8 170.2l-1-.4-2 1.4-1.6 3-.4 8 .7 1-1.7 1-8.6 2.3 2.3 0 .7-.7 2.6-.3 .4-.7 1 .4 .6-.7 6-1.7-3-6.3 3 .7 1.4-1.7 .6-3zM123.2 164.5l-2.7 0-1 1.7 .3 5.6-4-3.6-1.6 0-.7 .6-1-.3-5.3 2-1-.3-.4 .6-1-.3-.6 .7-2.7 .3-.3 .7 4.3 5 4 6 12-3 .7-.7 .6 .3 1-.6-3.6-6.7 .6-.3 2.4 1.3 2.3-2.7 .3-2-.6-2zM242.8 163.8l-2.6-.6-3.4 1.3-1.6 4 .6 2.7-1 1-1.3-.4-.7 .7-1.6 0-.4 .7-1-.4-3 1.4-8.6 2-.4 .6-1.6 0 .3 1.4 5.7 7 3 6.6 2 0 .6-1 1 .7 1-1.3 1 .6 1-1.3 1 .7 1-1.4 1 .7 .7-1 1.3 .3 .7-1 1.3 .4 .7-1 1 .6 1-1.3 1.3 .3 .7-1 .7 .4-3-8 2.3-1.7 1.7-3 .6-2.3-.3-5zM145.8 160.5l-1-.3-.6 .6-5.4 1-.6 .7-.7-.3-.7 .6-1-.3-.3 .7-3 .6 3.3 4 4.4 7 8.3-2.3-.3-6zM70.8 166.5l-5.6-8.3 0 8.3-.7 .7-8.7 2-1.6 1 1.6 1 1-.7 1 .3 .7-.6 1.3 0 .4-.7 1 .3 .6-.6 8.4-1.7zM211.2 157.5l-1.4 .7-3 3.6-1 5 3-.6 1.7-1.7 1.3-4zM68.8 152.2l-1.6 1.6 0 4.7 3 2.3 1.3 0 2-3.3-.3-2.7-2-2.3zM281.2 152.2l-3-1-4 2-1.7 4 1.7 2.6-.4 1.4-1.3-.4-.3 .7-1.7 0-.3 .7-1.4-.4-2.6 1.4-.7-.4-9 2.7 .3 1.3 5 6.7 2.7 6.3 1.3 0 .7-1 1.3 .4 .7-1 1.3 .3 .7-1 2.7 0 .6-1 1.4 .3 .6-1 1 .7 .7-1.3 1 .6 1-1 1 .4 .7-1 .6 .3-2.3-8.3 3-4 1.3-3.7-.3-4zM50.8 149.8l2.7 7.4 1 6.6 1 .4 .7-.7 2.6 0 1-1 1 .3 .7-1.3-3.3-5.7-4.4-4.6-2.3-1.7zM204.2 147.2l-4.4 0-2.6 3.6 1.3 3.7-.3 1.3-3-2-.7 1-.3-.3 2.6 8.7 .7 6-.3 2 3-2.7 4.3-1.3-2.3-6 2-.4 2.6-3.6 .4-6.4zM59.2 146.5l-1.7 3 .3 3.3 .7 1.4 3.3 2 1.4-1 1.3-2.7 0-1.7-1-2-2.7-2.3zM104.5 144.2l-1.7-.4-2.6 2.4 0 4.3-1.4 0-.3 6 .7 1.3-2 1.4-9 2 .3 1 3 0 4-1.7 .7 .3 .6-.6 .7 .3 6.3-2-4-7.3 .7-.4 2.3 1.7 1.7-.3 1.7-3-.4-2.7zM98.5 143.8l-5.3 1-.4 .7 3.4 2 1.3-1.3zM71.2 145.2l6 7.3 3 5 2 0 2.3-1 .7 .3 .6-.6 1 .3 2.7-1.3 2.7 0 .3-.7 1 .3 1-1 1 .4 .7-.7-1-2.7-3.7-5.3-9.7 2.3-3-4.6-2 0-.3 .6-1.3 0-.7 .7-1.3-.3-.4 .6-1-.3zM317.5 141.5l-4.3-1.3-3.7 2-1.3 4.3 2.3 2.7 0 1.6-1.3-.3-.4 1-3 0-.6 1-3 0-.4 .7-1.3 0-.7 .6-.6-.3-5 1.3 .3 1.4 4.3 6 2 6 1.7 0 2.3-1.4 1 .4 .7-1 1 .6 1-1.3 .7 .7 .6-1 1.4 .3 .6-1 2.7 0 .7-1 1 .3 .6-1 .4 .4-2-8 2-2.7 2.3-5.3-.3-3.7zM171.2 137.8l-3.7 0-2 2.7 1 5-.3 1.3-4-3.3-1 .7 2.6 8.6 .7 5.4-.3 2.3 2.6-3 4.7-1.3-2.3-4.4 0-1 2.3 0 3-4.3-.3-5.3zM135.8 136.2l-2 .6-2.3 3.4-.7 3.6 0 4.4 .7 1.6-1.7 1-9.6 2.4 1 1 14-3.4-.4-2-2.3-4.6 .7-.4 .6 .7 1.4 0 2-3 0-2.7zM244.2 136.2l-1.4-.7-3.3 0-3.3 4.3 0 1.4 1.3 2.3-.3 .3-1.4-.3-.6 .7-1.4-.4-.3 .7-1.3-.3-.7 1-3.3 0-.7 1-1.3-.4-.7 1-1.3-.6-.4 1-1.6-.4-.4 1-1.3-.6-.7 1-1.6 0-.4 .6 4.4 5.7 4.3 8.7 .7 .3 1.3-1 .3 .3 1.7-1.6 6.7-3.4 8.3-2 2-2 1.3-3.6 0-2.7-1.3 .7-3.7 6-1.6-4 3-3 1.3-4.7 0-3.7zM199.5 134.8l-1-.3-.7 1-1.3-.3-.7 .6-1.3-.3-.7 1-1-.7-.6 1-3.4 0-.6 1-3.4 0-.3 1 5.3 7.4 4.4-3.7 7.3-2.7zM105.5 137.2l4 4.6 4.3 7.4 1.7 0 .7-.7 2.3 0 4-1.7 1 .4 .7-.7 1 .3 .3-.6 2.7 0 .6-1.7-3-6 3 .7 2-3-13 3-1.3-.4-1-3-1.3-1.3-.4 .7-1-.4-.6 .7-3 .3-.4 .7-1.3-.3-.3 .6-1-.3zM138.5 129.2l.3 1.3 3 3.3 4.4 7.4 3.3-1 .7 .3 4.3-1.7 .3-3-1-5.3-3 .7-1-1-.6-2.4-1.4 3.4-.6 0-1-1.7-2.4-1.7-1 .7-1-.3-.6 .6-1-.3-.4 .7zM308.8 124.8l-4.3 1-.7 .7-1-.3-.3 .6-3 0-.7 1-2.6 0-.7 1-1-.6-.3 .3 .3 1.7 2.3 3 2 4 1.7 4.6 1 0 .3-.6 1 .3 2.7-2 5.3-2.3 0-6.7-.6-3.3zM281.2 125.5l-1.4-.7-3.6 0-3.4 4.4 0 1.6 1.4 1.7-.7 1.7-3 .3-.7 .7-1.3-.4-.7 1-1-.6-.6 1-1.4-.4-.6 1-1-.6-.7 1-3 0-.7 1-1.3-.4 .3 2 2.7 3.4 2.3 4.3 1 3.3 1.4 1.7 1-1 1.3 0 2.3-2 5.4-2.3 6.3-1.7 2.7-7.3-2.4 2.3-1 2-1.3-1.7 0-1.3 3.3-5 1-4-.3-2.3zM97.2 121.5l-1.7-.3-2.7 2.6 .4 5.4-.4 .3-1.3-1-.3 1 .3 7.3-4.3 1.7-8.4 1.7 1.4 2 1 .3 1-1 3 0 .6-.7 .7 .4 10.7-3-.4-1.7-4-6.3 .7-.7 2.7 2 1.3 0 2.3-3.7-.3-3zM164.8 121.8l-2.6-2.3-.7 1.3-11.7 2.7 .4 1.7 1.3 .3 .7-.7 1 .4 .3-.7 1 .3 .7-.6 6-1zM76.8 117.8l2.7 7.7 1 7.7 1.3 .6 .4-.6 1.3 .3 .7-1 1 .7 1-1 1 .3 1.3-.7-5-9-5-5zM274.8 117.2l-1.6-.7-3.7 1.3-2.7 0-1 1-1-.3-.3 .7-1.3-.4-.4 6.7 3.4 1 4.3-3.7 5.3-2zM84.8 114.2l-1.3 3 .7 5.3 2 1.7 2.3 .6 2.7-4-1-4.3-2.7-2.7zM132.5 113.2l-2.7 1-2 3.3-1 7.3 1 3.4-2.3 1.3-.7-.3-1 .6-8.3 1.7-.3 .7 1 1.3 1.3 .3 .3-.6 1 .3 1-1 2.7 0 .7-.7 .6 .4 8.4-2.4-.4-2-3-5.3 .7-.3 1.3 1 1.4 0 2-2.7 .3-3.3zM99.2 112.8l.3 1.7 4 4.7 4.7 8 1.6 0 .7-.7 2.7 0 1-1 1 .7 .6-1 1.4 .3 .6-.7 2.7 0 .7-1 1 .7 1-1 1 .3 1-.6-3.4-7.7 .4-.3 2.3 1.3 .7-.3 2.3-3.4 0-1.6-5.3 .6-1.7 2-.7 0-1 7.7-.6 .7-.7 0-1.3-1.7-3-6.3-2 0-1.4-2.7-1.3-1-.7 1-1.3-.3-.3 .6-1.4-.3-.3 .7-1.3-.4-.7 .7-1.3-.3-.4 .6zM53.8 109.8l-1 1 2.7 7 1 5.7 1.3-2 4.7-1.3-2.3-4-3.4-4zM61.2 107.2l-1.4 3.3 .4 3.3 1.6 2.4 2.7 1.3 1.3-1 1.4-2.7 0-2.3-1.4-2.7-2-1.6zM193.5 117.5l5.3 7 4.4 9 1.6 .3 .7-1 1.3 .4 .7-1 1.3 .6 .7-1 1.3 .4 .7-1 1.7 .3 .3-.7 1.3 .4 1-1 1.4 .3 .3-.7 1 .4 1.3-1 1 .3 .7-.7 1.7 0 .6 2 4.7 6 5.3-4.6 5.7-2.4 1.3 0-1.6-4.6-3 .3-.7 .7-1.3-.4-.4 .7-1.3-.3-.7 1-1-.7-.6 1-3 0-.7 1-1-.7-.7 1-2-1-3-7.3 1.7-.7 2.3-3.3 1-3.7 0-3.3-1-2.3-3-2-2.3-.4-3.3 2.4-.7 2 .3 3.6-1.3-.3-.7 1-1.3-.7-.3 1-1.4-.6-.6 1-1.7-.4-.7 1-1.6-.3-.4 .7-1.3-.4-3 1.4-1-.4zM84.8 105.8l-1-1.6-1.6-.4-.4 .7-1.3-.3-2.7 1.3-3 0-.3 .7 2.7 3.3 3.3-2.3zM189.5 99.2l-3 2-2.3 4 0 1.3 6-1.3 .6-.7 0-2zM261.8 95.8l-3.6-1.3-3.7 2-1.3 3.7 1 2.3-.7 1.7-1.3-.7-.4 1-3.3 0-.7 1-1.3-.7-.7 1-3.3 0-.3 .7-6.7 1.3 5 7.4 3 8 .7-.4 1 .7 .6-1.3 1.4 .6 1-1 .6 .7 1-1.3 .7 .6 1-1 1 .7 1-1 1.3 .3 .7-1 3 0 .7-1 1.3 .4 .3-.7 1.4 0-2.7-7.7 3-3.6 1.7-5-.4-4zM157.5 91.5l-1.3 .3-2 1.7-1.7 4 6-1 1-.7 0-1zM228.8 90.8l-2.3 1.4-2 3-.7 2.3 5.4-1.7 .3-3.3zM181.5 87.8l-4 .4-2.3 3.6 1 4-.4 .7-2.6-2-2 .3 2.6 9.4 .4 7.6 3-3.6 4.6-1-2-4.7 2 0 3.4-4.7 .3-2.3-.7-4.7zM298.8 86.2l-4.3-1-3.7 2.3-1 3.3 2.4 3.4-.7 1.3-1-.7-.7 1-3.3 0-.3 1-1.4-.6-.6 1-1.4-.4-.3 .7-1.3-.3-.4 .6-1.3-.3-.7 .7-4.3 .6 5 8 2 6.4 .7-.4 .6 .7 .7-1 3 0 .7-1 1 .7 .6-1 1.4 .3 .6-1 1 .7 .7-1 3 0 .7-1 1 .3 1.3-.7-2-8 2-2.3 3-7-.7-2.7zM130.5 87.8l-2-3-1.7-.3-2.6 2.7-.7 2.3zM148.8 80.8l-3 .4-2 2.6 .4 6.4-3.7-3.7-2 .3 2.7 9.7 .3 7 3-4 4.3-1-1.6-4 .6-.3 1.7 .6 2-2 1.3-2.6-.6-6zM222.5 78.2l-4.3 .3-2.7 4.3 .7 1.7-.4 1.3-1.3-.3-6 1.3-.7 .7-3.3 0-.3 .7-1.7-.4-.7 1-1.3-.6-.7 1-1.3-.7-.3 1-1.7-.3 0 2 3.7 4.6 4.6 9.4 1.4 .3 3-3 4.3-2.3 9.3-2.4-1.3-4.3 3.7-4 1-6.7-.7-2zM183.2 79.5l-1.4-1.3-4.6 .6-.7 .7-3.3 0-.4 .7-1.6-.4-.7 1-1-.6-1 1-1.3-.7-.4 1-1.3-.7-.7 1-1.6-.3-.4 1 3.7 5 5.7-5 5.3-2zM102.2 78.8l-3-.6-2 2 0 1.6 4.6-.6zM119.2 74.5l-3 .3-1.4 1.7 0 7.3-4.3-4.3-2 0 2.7 9.3 .3 6.7 2.3-3.7 4.7-1.3-2-4 .7-.3 2 1.3 1 0 2.6-3.7 .4-3.3-1-3zM192.2 74.5l-3.4-2.7-3.6 .7-2 3.3 .6 3 1 .4 7.7-1.7zM151.5 72.2l-1.7-.7-6 1.3-1.3-.3-.3 .7-1.7-.4-.7 1-1-.6-1 1-1-.7-.6 1-1.4-.7-.6 1-1.7-.3 0 1 3 3.7 3.3-3.4 4.7-2.3zM290.2 70.2l-7.4 1.3-1 .7-1.3-.4-.3 .7-3 0-.7 .7-1.3-.4 0 1.4 4 6.6 1.6 5.4 3 .6 4.4-3.3 4-1.3 0-5.7-.7-3.7zM262.5 70.2l-2.3-1.4-4 .7-2.7 4.3 1.3 3.4-.3 .6-1-.3-1 .7-4 .3-.7 .7-1.3-.4-.3 .7-1.4-.3-.6 .6-1.4-.3-.3 .7-1.3-.4-.7 1-1.3-.6-.7 1-1.3-.7-.4 1.3 3.7 5.4 3.3 8 2 .6 2.7-2.3 4.3-2.3 12.4-3.4 1-3-.7-2-1.3 .7-2.7 4.3-1-.6-.3-3 2.6-3 1.4-3.4 .3-5zM91.5 68.5l-3 .7-1 3.6 .7 3.7-.4 1.3-5-5-2-.3 2.4 7.7 1 7.3 2-3 4.3-1 0-1-1.7-2.3 0-1.4 3 2 1 0 2.7-3.6 .3-2.4-1-3zM153.8 71.5l2 0 6-1.7-.3-1.3-2.7-2.3-2 0-2 .6-1.3 2.7zM115.2 66.5l-1-.3-.4 .6-1.3-.3-.7 .7-1.3-.4-.7 1-1.3-.6-.7 1-1.3-.7-.7 1-1.3-.7-.3 1 2.3 3 3.7-3.3zM56.2 66.2l-1 .6 2.6 7.7 .7 6.3 2.3-3.3 4-.7 0-.6-5-7.4zM189.5 64.5l-1.3-.3-9 1.6-.4 .7-1.3-.3-.7 .6-1.3-.3-.3 .7-3.4 0 0 1 2.4 3.3 1.3 .3 4.3-4.3 4.4-2zM256.2 64.2l-2.4-.4-6.6 1.7-1-.3-.7 .6-1-.3-.7 .7-1.3-.4-.3 .7-1.4-.3-.3 1 1.3 1.3 2 0 3 1.3 4-3.3zM230.5 67.2l-.7-1.4-3-2.3-3.6 .3-2.7 4 .7 1.7-.4 1-6.3 1-.7 .7-3 0-.6 .6-3.4 0-.3 .7-1.3-.3-.7 1-1.3-.7-.4 1 2.4 3 2.6 1 4.4-4 3-1.3 3.3-.7 .3-.7 11.7-2.3zM64.8 63.2l-1.6 1-.7 3 .3 3.6 1.7 2.4 2 1.3 1.3 0 2.4-3.3 0-3.4-2.4-3.6-1.3-1zM126.2 64.5l4-.3 3-1-2-2-2.7-.4-1.3 .4-.7 1zM152.8 59.5l-1.3 .7-1-.4-.7 .7-1.3-.3-.3 .6-3.4 0-.3 .7-1.3-.3-.4 .6 2.7 3.7 4-4.3zM198.8 60.8l-3-2.6-3.3 .3-2.3 3.7 .3 1.6 2.3 .4 6-1.4zM222.8 57.8l-5.6 1.4-1-.4-.7 .7-1.3-.3-.4 .6-3 0-.6 .7-1.4-.3 0 1 .7 1 4.3 1.3 4.7-4zM122.8 54.8l-1-.3-.3 .7-1.3-.4-.7 .7-1.3-.3-.4 .6-1.3-.3-.3 .7 2 2.6zM189.2 53.2l-3.4 .6-1-.3-.6 .7-1-.4-2.4 1-1.3-.3 0 1 1 1.3 2.7 1 3.3-3.3zM169.8 55.8l-2.3-2.3-1.7-.3-2.3 .6-1.3 3.7 1.3 .3 6-1.3zM142.5 50.5l-3-2-2.3 .7-1 2.6zM159.2 48.2l-2.4 1-1.3-.4-.3 .7-3 0 0 .7 1.6 2.3 1 0z"/></svg>
<svg class="abs" style="left:0;top:0;pointer-events:none" width="1800" height="1111" viewBox="0 0 1800 1111" font-family="DejaVu Sans, Liberation Sans, sans-serif">
<defs>
<linearGradient id="gNew" x1="0" y1="0" x2="0" y2="1"><stop offset="0" stop-color="#dcebfa"/><stop offset="1" stop-color="#b9d5f2"/></linearGradient>
<linearGradient id="gFo" x1="0" y1="0" x2="0" y2="1"><stop offset="0" stop-color="#a3c4f3"/><stop offset="1" stop-color="#6a96dd"/></linearGradient>
<linearGradient id="gOr" x1="0" y1="0" x2="0" y2="1"><stop offset="0" stop-color="#fbd2a8"/><stop offset=".48" stop-color="#f6a458"/><stop offset=".52" stop-color="#ee7a10"/><stop offset="1" stop-color="#f29a40"/></linearGradient>
<linearGradient id="gPl" x1="0" y1="0" x2="0" y2="1"><stop offset="0" stop-color="#7fc0ff"/><stop offset=".5" stop-color="#3f8fee"/><stop offset="1" stop-color="#1864cc"/></linearGradient>
<linearGradient id="gSk" x1="0" y1="0" x2="0" y2="1"><stop offset="0" stop-color="#f98a28"/><stop offset=".5" stop-color="#e85a08"/><stop offset="1" stop-color="#b93400"/></linearGradient>
<radialGradient id="bO" cx=".4" cy=".35" r=".7"><stop offset="0" stop-color="#ffd070"/><stop offset=".6" stop-color="#fb9a18"/><stop offset="1" stop-color="#d87400"/></radialGradient>
<radialGradient id="bB" cx=".4" cy=".3" r=".75"><stop offset="0" stop-color="#5aa2ff"/><stop offset=".6" stop-color="#1462f0"/><stop offset="1" stop-color="#0a3cc0"/></radialGradient>
<radialGradient id="sB" cx=".38" cy=".3" r=".75"><stop offset="0" stop-color="#bfe0ff"/><stop offset=".45" stop-color="#4f93d8"/><stop offset="1" stop-color="#1c4f96"/></radialGradient>
<radialGradient id="sG" cx=".35" cy=".3" r=".8"><stop offset="0" stop-color="#fff0c0"/><stop offset=".3" stop-color="#c89a40"/><stop offset="1" stop-color="#4a3208"/></radialGradient>
<radialGradient id="sY" cx=".5" cy=".5" r=".5"><stop offset="0" stop-color="#ffff20"/><stop offset=".45" stop-color="#e8e800"/><stop offset="1" stop-color="#a0a000" stop-opacity="0"/></radialGradient>
<linearGradient id="gCube" x1="0" y1="0" x2="1" y2="1"><stop offset="0" stop-color="#8cc0f0"/><stop offset="1" stop-color="#3878c8"/></linearGradient>
<linearGradient id="gPen" x1="0" y1="0" x2="1" y2="1"><stop offset="0" stop-color="#6ab0ff"/><stop offset=".5" stop-color="#2a70e8"/><stop offset="1" stop-color="#1040c0"/></linearGradient>
<pattern id="chk" width="8" height="8" patternUnits="userSpaceOnUse"><rect width="8" height="8" fill="#fff"/><rect width="4" height="4" fill="#111"/><rect x="4" y="4" width="4" height="4" fill="#111"/></pattern>
</defs>
<path d="M32.5 147.5H48.5L57.5 156.5V177.5H32.5Z" fill="url(#gNew)" stroke="#9fc2e8" stroke-width=".8"/><path d="M48.5 147.5V156.5H57.5Z" fill="#eff6fd" stroke="#b5cfec" stroke-width=".6"/>
<path d="M91 151.5H100.5L102.5 154H118.5V160H95L91 172Z" fill="#7ea5e6"/><path d="M96.5 159.5H123.5L118.5 175H91Z" fill="url(#gFo)"/><path d="M91 175H118.5" stroke="#5d86cf" stroke-width=".8"/>
<rect x="154" y="148.5" width="30" height="31" rx="1" fill="#3b3b3b"/><rect x="161" y="148.5" width="18" height="11" fill="#c9e6e4"/><rect x="172" y="150.5" width="3" height="7" fill="#2a2a2a"/><rect x="157" y="161.5" width="24" height="13" fill="#eef2f8"/><path d="M157 164.5h24M157 168h24M157 171.5h24" stroke="#f3c69c" stroke-width=".9"/><rect x="157" y="174.5" width="24" height="4.5" fill="#f48200"/>
<path d="M212 163Q212.5 152 225.5 147.5Q238.5 152 239 163Z" fill="#1c60d2"/><rect x="210" y="161" width="31" height="19" rx="1.5" fill="#1a68d8"/><rect x="210" y="164.500" width="31" height="13" fill="#3a80e6"/>
<path d="M225.5 151V160M225.5 160L218.5 155M225.5 160L232.5 155M215 161.8h21" stroke="#fff" stroke-width="2" stroke-linecap="round" fill="none"/><circle cx="225.5" cy="151" r="1.6" fill="#fff"/><circle cx="218.5" cy="155" r="1.6" fill="#fff"/><circle cx="232.5" cy="155" r="1.6" fill="#fff"/>
<text x="225.5" y="178.3" font-size="17" font-weight="bold" fill="#fff" text-anchor="middle" textLength="27" lengthAdjust="spacingAndGlyphs" font-family="DejaVu Sans Condensed, DejaVu Sans, sans-serif">SVG</text>
<g fill="#616161" stroke="#616161" stroke-width=".7" font-size="17" text-anchor="middle" font-family="Liberation Sans, sans-serif"><text x="290" y="163.8" textLength="26.5" lengthAdjust="spacingAndGlyphs">AC</text><text x="290" y="163.8" textLength="26.5" lengthAdjust="spacingAndGlyphs" transform="rotate(180 290 164.700)">GT</text></g>
<circle cx="389.3" cy="155.1" r="3.9" fill="url(#bO)"/>
<circle cx="396.8" cy="159.5" r="3.9" fill="url(#bO)"/>
<circle cx="396.8" cy="168.2" r="3.9" fill="url(#bO)"/>
<circle cx="389.3" cy="172.5" r="3.9" fill="url(#bO)"/>
<circle cx="381.8" cy="168.2" r="3.9" fill="url(#bO)"/>
<circle cx="381.8" cy="159.5" r="3.9" fill="url(#bO)"/>
<path d="M396 168.5v7.5M392.2 172.2h7.6" stroke="#2b2b2b" stroke-width="3.2"/><path d="M396 168.5v7.5M392.2 172.2h7.6" stroke="#fff" stroke-width="1.6"/>
<circle cx="476.6" cy="155.6" r="4" fill="url(#bB)"/>
<circle cx="476.6" cy="163.8" r="4" fill="url(#bB)"/>
<circle cx="476.6" cy="172" r="4" fill="url(#bB)"/>
<circle cx="485.2" cy="155.6" r="4" fill="url(#bB)"/>
<circle cx="485.2" cy="163.8" r="4" fill="url(#bB)"/>
<circle cx="485.2" cy="172" r="4" fill="url(#bB)"/>
<circle cx="493.8" cy="155.6" r="4" fill="url(#bB)"/>
<circle cx="493.8" cy="163.8" r="4" fill="url(#bB)"/>
<path d="M493.3 168.2v7.6M489.5 172h7.6" stroke="#2b2b2b" stroke-width="3.2"/><path d="M493.3 168.2v7.6M489.5 172h7.6" stroke="#fff" stroke-width="1.6"/>
<path d="M567 154L579 155.5L595 158.5L595.5 164L589 166.5L578 161L567.5 159Z" fill="#f33a1c"/><path d="M568 160.5L578 162.5L592 171L596.5 172L595 175L587 176.5L568.5 163.5Z" fill="#e02810"/><path d="M575 161.5L592 168.5" stroke="#b8b8b8" stroke-width="1.3"/><path d="M586.5 167h5v3.5h-5z" fill="#9a9a9a"/><path d="M579 155.5L578 161" stroke="#b01808" stroke-width=".8"/>
<path d="M685 164.5L701.5 155.5L699 159.5L688.5 165.5Z M685 164.5L701.5 173.5L699 169.5L688.5 163.5Z" fill="#b9b9b9"/><ellipse cx="676" cy="154.8" rx="3.2" ry="2.6" fill="none" stroke="#2a4cff" stroke-width="2" transform="rotate(35 676 154.8)"/><ellipse cx="676" cy="174" rx="3.2" ry="2.6" fill="none" stroke="#2a4cff" stroke-width="2" transform="rotate(-35 676 174)"/><path d="M678.5 157L685 163.5M678.5 171.8L685 165.5" stroke="#2a4cff" stroke-width="2.6" stroke-linecap="round"/>
<path d="M18.6 245.2h5.7v32.6h-5.7z" fill="url(#gOr)" stroke="#d86a08" stroke-width=".7"/><path d="M24.8 261.5L42.6 246V253.2H54.6V270.2H42.6V277Z" fill="url(#gOr)" stroke="#d86a08" stroke-width=".7"/>
<path d="M48.7 330h5.7v32h-5.7z" fill="url(#gOr)" stroke="#d86a08" stroke-width=".7"/><path d="M48.3 346L31.4 330.5V337.4H18.6V354.6H31.4V361.5Z" fill="url(#gOr)" stroke="#d86a08" stroke-width=".7"/>
<circle cx="23.9" cy="416" r="5.9" fill="#fbc680" stroke="#e8860c" stroke-width="1.5"/><text x="23.9" y="419.1" font-size="8.5" font-weight="bold" fill="#222" text-anchor="middle">3</text>
<circle cx="50.7" cy="416" r="5.9" fill="#fbc680" stroke="#e8860c" stroke-width="1.5"/><text x="50.7" y="419.1" font-size="8.5" font-weight="bold" fill="#222" text-anchor="middle">1</text>
<path d="M31.5 414.4h5v-2.6l5 4.2l-5 4.2v-2.6h-5z" fill="#0a6ae6"/>
<circle cx="23.9" cy="430" r="5.9" fill="#fbc680" stroke="#e8860c" stroke-width="1.5"/><text x="23.9" y="433.1" font-size="8.5" font-weight="bold" fill="#222" text-anchor="middle">1</text>
<circle cx="50.7" cy="430" r="5.9" fill="#fbc680" stroke="#e8860c" stroke-width="1.5"/><text x="50.7" y="433.1" font-size="8.5" font-weight="bold" fill="#222" text-anchor="middle">2</text>
<path d="M31.5 428.4h5v-2.6l5 4.2l-5 4.2v-2.6h-5z" fill="#0a6ae6"/>
<circle cx="23.9" cy="443.8" r="5.9" fill="#fbc680" stroke="#e8860c" stroke-width="1.5"/><text x="23.9" y="446.90000000000003" font-size="8.5" font-weight="bold" fill="#222" text-anchor="middle">2</text>
<circle cx="50.7" cy="443.8" r="5.9" fill="#fbc680" stroke="#e8860c" stroke-width="1.5"/><text x="50.7" y="446.90000000000003" font-size="8.5" font-weight="bold" fill="#222" text-anchor="middle">3</text>
<path d="M31.5 442.2h5v-2.6l5 4.2l-5 4.2v-2.6h-5z" fill="#0a6ae6"/>
<path d="M891 245.3L891 275.8L897.6 269.8L902.6 279.6L907 277.6L902.2 268L911.8 267.3Z" fill="#f4f4f4" stroke="#1a6eff" stroke-width="2" stroke-linejoin="round"/>
<ellipse cx="899" cy="364" rx="17" ry="1.8" fill="#1d1d1d" opacity=".8"/>
<path d="M880 362.5L883 353L890 360Z" fill="#f6c443"/><path d="M880 362.5L881.3 358.6L884 361.3Z" fill="#333"/>
<path d="M883 353L903 333L910 340L890 360Z" fill="url(#gPen)"/><path d="M903 333L906.5 329.5L913.5 336.5L910 340Z" fill="#c9c9c9"/><path d="M904.6 331.4l7 7" stroke="#8e8e8e" stroke-width=".8"/><path d="M906.5 329.5Q909.5 325.5 913.8 328.7Q917.6 332.5 913.5 336.5Z" fill="#ee7c80"/>
<g stroke="#6e6e6e" stroke-width=".8" fill="none"><path d="M877 408.8h46v13h-46zM888.5 408.8v13M900 408.8v13M911.5 408.8v13M877 415.3h46"/><path d="M877 441.3h46v12.4h-46zM888.5 441.3v12.4M900 441.3v12.4M911.5 441.3v12.4M877 447.5h46"/></g>
<path d="M877 415.3h46" stroke="#0c6ce8" stroke-width="3"/><path d="M896 424.5h9.4v5h4.2l-8.9 9l-8.9-9h4.2z" fill="#e00000"/>
<path d="M877 447.3h14" stroke="#0c6ce8" stroke-width="2.2"/><path d="M890 442.3l7.5 5l-7.5 5z" fill="#0c6ce8"/><rect x="903" y="443" width="7" height="9" fill="#0c6ce8"/><path d="M910 447.3h13" stroke="#0c6ce8" stroke-width="2.2"/>
<ellipse cx="899" cy="537" rx="14" ry="1.6" fill="#1d1d1d" opacity=".7"/><path d="M893 493.7h12a1.5 1.5 0 0 1 1.5 1.5v11.8h13.4a1.5 1.5 0 0 1 1.5 1.5v12a1.5 1.5 0 0 1-1.5 1.5h-13.4v12a1.5 1.5 0 0 1-1.5 1.5h-12a1.5 1.5 0 0 1-1.5-1.5v-12h-13.8a1.5 1.5 0 0 1-1.5-1.5v-12a1.5 1.5 0 0 1 1.5-1.5h13.8v-11.8a1.5 1.5 0 0 1 1.5-1.5z" fill="url(#gPl)" stroke="#1a5cc0" stroke-width=".6"/>
<ellipse cx="900" cy="620" rx="16" ry="1.6" fill="#1d1d1d" opacity=".7"/><path d="M888.5 578L900.4 589.9L912.3 578L921 586.7L909.1 598.3L921 610L912.3 618.5L900.4 606.8L888.5 618.5L879.8 610L891.7 598.3L879.8 586.7Z" fill="url(#gSk)" stroke="#b43a00" stroke-width=".8" stroke-linejoin="round"/>
<path d="M880.5 691L893 680.5L913.5 694L912 701L905 702.5L896 700.5Z" fill="#2b62e8"/><path d="M886 683.5L897 675L911 688L907 691L905 696L902 690L899 695L896 688.5L892 690Z" fill="#8b4a18"/><path d="M893.5 674L898 671L913 685L909.5 689Z" fill="#e8e8e8"/><path d="M903 675Q910 666 913.5 663Q918.5 662.5 917.5 668Q913 676 909 681Z" fill="#151515"/>
<g font-size="21" font-weight="normal" text-anchor="middle" font-family="Liberation Sans, sans-serif"><text x="900.3" y="765.5" fill="#e00000" textLength="35.5" lengthAdjust="spacingAndGlyphs" stroke="#e00000" stroke-width=".7">AC</text><text x="900.3" y="765.5" fill="#0e84ff" stroke="#0e84ff" stroke-width=".7" textLength="35.5" lengthAdjust="spacingAndGlyphs" transform="rotate(180 900.3 767.8)">GT</text></g>
<rect x="1746" y="39" width="30" height="30" rx="3" fill="#3d3d3d"/>
<circle cx="1761.0" cy="45.0" r="4.1" fill="url(#bO)"/>
<circle cx="1769.1" cy="49.6" r="4.1" fill="url(#bO)"/>
<circle cx="1769.1" cy="58.9" r="4.1" fill="url(#bO)"/>
<circle cx="1761.0" cy="63.6" r="4.1" fill="url(#bO)"/>
<circle cx="1752.9" cy="58.9" r="4.1" fill="url(#bO)"/>
<circle cx="1752.9" cy="49.6" r="4.1" fill="url(#bO)"/>
</svg>
<svg class="abs" style="left:0;top:0;pointer-events:none" width="1800" height="1111" viewBox="0 0 1800 1111" font-family="DejaVu Sans, Liberation Sans, sans-serif">
<path d="M955 111v24" stroke="#2e2e2e" stroke-width="1.2"/><path d="M956 111v24" stroke="#5a5a5a" stroke-width=".8"/><rect x="953.5" y="118" width="3.4" height="9.5" rx="1.2" fill="#444" stroke="#7a7a7a" stroke-width=".9"/>
<path d="M1113.3 111v24" stroke="#2e2e2e" stroke-width="1.2"/><path d="M1114.3 111v24" stroke="#5a5a5a" stroke-width=".8"/><rect x="1111.8" y="118" width="3.4" height="9.5" rx="1.2" fill="#444" stroke="#7a7a7a" stroke-width=".9"/>
<path d="M1328.6 111v24" stroke="#2e2e2e" stroke-width="1.2"/><path d="M1329.6 111v24" stroke="#5a5a5a" stroke-width=".8"/><rect x="1327.1" y="118" width="3.4" height="9.5" rx="1.2" fill="#444" stroke="#7a7a7a" stroke-width=".9"/>
<path d="M1544 111v24" stroke="#2e2e2e" stroke-width="1.2"/><path d="M1545 111v24" stroke="#5a5a5a" stroke-width=".8"/><rect x="1542.5" y="118" width="3.4" height="9.5" rx="1.2" fill="#444" stroke="#7a7a7a" stroke-width=".9"/>
<path d="M1588.4 111v24" stroke="#2e2e2e" stroke-width="1.2"/><path d="M1589.4 111v24" stroke="#5a5a5a" stroke-width=".8"/><rect x="1586.9" y="118" width="3.4" height="9.5" rx="1.2" fill="#444" stroke="#7a7a7a" stroke-width=".9"/>
<circle cx="973" cy="118.5" r="5" fill="#8a8a8a" stroke="#d8d8d8" stroke-width="1.3"/><circle cx="973" cy="118.5" r="1.8" fill="#2a2a2a"/><circle cx="982" cy="117.5" r="4.3" fill="#8a8a8a" stroke="#d8d8d8" stroke-width="1.3"/><circle cx="982" cy="117.5" r="1.5" fill="#2a2a2a"/>
<path d="M973 127l9-4.5l6 .5v5l-4 .5v-2.5l-3 1.5l1 3l-7 3.5l-3-5z" fill="#0c0c0c"/><path d="M984 124.5h5.5v4h-5.5z" fill="#0c0c0c"/><path d="M974 128.5l7-3.5" stroke="#666" stroke-width=".8"/>
<circle cx="1001" cy="118.5" r="5" fill="#8a8a8a" stroke="#d8d8d8" stroke-width="1.3"/><circle cx="1001" cy="118.5" r="1.8" fill="#2a2a2a"/><circle cx="1010" cy="117.5" r="4.3" fill="#8a8a8a" stroke="#d8d8d8" stroke-width="1.3"/><circle cx="1010" cy="117.5" r="1.5" fill="#2a2a2a"/>
<path d="M1001 124l7-2l1 5l-6 3.5z" fill="#0c0c0c"/><rect x="1008.5" y="119" width="9" height="13.5" fill="#f2f2f2" stroke="#bdbdbd" stroke-width=".6"/><path d="M1010 122h6M1010 124.6h6M1010 127.2h6M1010 129.8h6" stroke="#8a8a8a" stroke-width="1.2"/>
<rect x="1025.5" y="114.5" width="20.5" height="16.5" fill="#e9e9e9" stroke="#fafafa" stroke-width="1"/><rect x="1028.5" y="116.5" width="7" height="12" fill="#f6f6f6" stroke="#b0b0b0" stroke-width=".8"/><path d="M1036.3 111h5v18l-2.5-2.6l-2.5 2.6z" fill="#3fae49" stroke="#1f7a2a" stroke-width=".7"/>
<path d="M1053.5 125.5L1064 131.8L1075 123.5L1066 119.5Z" fill="#8d8d8d" stroke="#e2e2e2" stroke-width="1"/><path d="M1057.5 126l8.5 4.8M1061 123.5l8.5 4.6" stroke="#e2e2e2" stroke-width=".7"/><path d="M1059.5 114.5L1071.5 110.5V123L1059.5 127.5Z" fill="#3a58d8" stroke="#cfd3d8" stroke-width=".9"/><path d="M1059.5 122L1066 117l5.5 1.5V123L1059.5 127.5Z" fill="#2f9a2a"/><circle cx="1066.5" cy="117" r="1.8" fill="#f0e020"/>
<path d="M1087 111.5v13M1080.8 118h12.4" stroke="#e01818" stroke-width="1.5"/><path d="M1087 110l-2.2 2.8h4.4zM1087 126l-2.2-2.8h4.4zM1079.3 118l2.8-2.2v4.4zM1094.7 118l-2.8-2.2v4.4z" fill="#e01818"/><circle cx="1098" cy="120.5" r="4.7" fill="#f4f4f4" stroke="#cfcfcf" stroke-width="1"/><path d="M1098 117.6v5.8M1095.1 120.5h5.8" stroke="#e01818" stroke-width="1.3"/><path d="M1094.5 124.5l-7.5 8" stroke="#2a2a2a" stroke-width="3.2" stroke-linecap="round"/><path d="M1094 125l-6.5 7" stroke="#b97a3a" stroke-width="1.8" stroke-linecap="round"/>
<rect x="1124.3" y="111.3" width="25.4" height="23" rx="2.5" fill="#8194ad" stroke="#2b2b2b" stroke-width="1.2"/><rect x="1126.5" y="113.5" width="21" height="17" fill="#7e91a9"/><g stroke="#cdd6e2" stroke-width="1" fill="none"><path d="M1127.5 122L1137 116l9.5 6l-9.5 6z"/><path d="M1132.2 119l9.5 6M1141.7 119l-9.5 6"/></g>
<rect x="1154.8" y="113.7" width="20.5" height="17.3" fill="#f2f2f2"/><rect x="1155.8" y="115" width="18.5" height="3.6" fill="#111"/><rect x="1155.8" y="126.2" width="18.5" height="3.6" fill="#111"/>
<rect x="1156.8" y="116" width="1.8" height="1.5" fill="#f2f2f2"/><rect x="1156.8" y="127.2" width="1.8" height="1.5" fill="#f2f2f2"/>
<rect x="1160.5" y="116" width="1.8" height="1.5" fill="#f2f2f2"/><rect x="1160.5" y="127.2" width="1.8" height="1.5" fill="#f2f2f2"/>
<rect x="1164.2" y="116" width="1.8" height="1.5" fill="#f2f2f2"/><rect x="1164.2" y="127.2" width="1.8" height="1.5" fill="#f2f2f2"/>
<rect x="1167.9" y="116" width="1.8" height="1.5" fill="#f2f2f2"/><rect x="1167.9" y="127.2" width="1.8" height="1.5" fill="#f2f2f2"/>
<rect x="1171.6" y="116" width="1.8" height="1.5" fill="#f2f2f2"/><rect x="1171.6" y="127.2" width="1.8" height="1.5" fill="#f2f2f2"/>
<rect x="1156.6" y="119.2" width="4.6" height="6.4" fill="#6db3f0" stroke="#222" stroke-width=".8"/>
<rect x="1162.8" y="119.2" width="4.6" height="6.4" fill="#6db3f0" stroke="#222" stroke-width=".8"/>
<rect x="1169" y="119.2" width="4.6" height="6.4" fill="#6db3f0" stroke="#222" stroke-width=".8"/>
<rect x="1183.6" y="113.7" width="20.8" height="17.3" fill="#f4f4f4" stroke="#c8c8c8" stroke-width=".6"/><circle cx="1194" cy="122.3" r="6.8" fill="url(#sB)"/>
<rect x="1211" y="111.3" width="24.3" height="23.6" rx="2.5" fill="#9b9b9b" stroke="#2b2b2b" stroke-width="1.2"/><rect x="1212" y="130.5" width="22.3" height="3.5" fill="#6b6b6b"/><circle cx="1223" cy="121.5" r="6.3" fill="#dadada" stroke="#7d7d7d" stroke-width="1.3"/>
<rect x="1240.4" y="113.7" width="21" height="17.3" fill="#efefef" stroke="#3a3a3a" stroke-width=".8"/><g stroke="#555" stroke-width=".9" fill="none"><path d="M1240.4 113.7l21 17.3M1261.4 113.7l-21 17.3"/><rect x="1244.5" y="116.8" width="12.8" height="11" /><path d="M1251 113.7v17.3M1240.4 122.3h21"/></g><rect x="1247.5" y="119.5" width="7" height="5.5" fill="#bdbdbd" stroke="#444" stroke-width=".8"/>
<rect x="1269.7" y="114" width="19.8" height="16.6" fill="#f0f0f0" stroke="#39b54a" stroke-width="1.6"/><circle cx="1275.5" cy="119.6" r="2.6" fill="url(#sB)"/><circle cx="1284" cy="120.6" r="2.6" fill="url(#sB)"/><circle cx="1278.8" cy="125.8" r="2.6" fill="url(#sB)"/>
<rect x="1297.8" y="114" width="19.8" height="16.6" fill="#f0f0f0" stroke="#39b54a" stroke-width="1.6"/><text x="1307.7" y="128.3" font-size="15.5" font-family="Liberation Serif, DejaVu Serif, serif" fill="#111" text-anchor="middle">T</text>
<g stroke="#efefef" stroke-width="1.3" stroke-linejoin="round" fill="none"><path d="M1343 118L1353 114L1361 116.5L1360 128L1351 132.5L1343.5 129Z"/><path d="M1343 118L1351.5 120.5L1361 116.5M1351.5 120.5L1351 132.5" fill="none"/></g>
<path d="M1353 114l-.8 11.5l-10 4M1352.2 125.5l8.5 2.5" stroke="#bdbdbd" stroke-width=".8" fill="none"/>
<rect x="1368.3" y="110.5" width="25.6" height="25" rx="2.5" fill="#5d5d5d" stroke="#2e2e2e" stroke-width="1"/>
<path d="M1372 117L1382 113.5L1390.5 115.5L1389.5 128L1380.5 132.5L1372.5 129.5Z" fill="#4f8fdc"/><path d="M1372 117L1382 113.5L1390.5 115.5L1381 119.5Z" fill="#8ec2f4"/><path d="M1381 119.5L1390.5 115.5L1389.5 128L1380.5 132.5Z" fill="#3c79c8"/>
<path d="M1401.5 118L1411.5 114L1419.5 116.5L1418.5 128L1409.5 132.5L1402 129Z" fill="#4f8fdc"/><path d="M1401.5 118L1411.5 114L1419.5 116.5L1410 120.5Z" fill="#8ec2f4"/>
<g stroke="#f4f4f4" stroke-width="1.2" stroke-linejoin="round" fill="none"><path d="M1401.5 118L1411.5 114L1419.5 116.5L1418.5 128L1409.5 132.5L1402 129Z"/><path d="M1401.5 118L1410 120.5L1419.5 116.5M1410 120.5L1409.5 132.5" fill="none"/></g>
<circle cx="1437.3" cy="122" r="9.8" fill="url(#chk)"/><circle cx="1437.3" cy="122" r="9.8" fill="none" stroke="#222" stroke-width="1.4"/>
<circle cx="1466" cy="122.7" r="10.5" fill="url(#sY)"/>
<ellipse cx="1494.5" cy="131.3" rx="8" ry="1.8" fill="#151515"/><circle cx="1494.2" cy="120.3" r="8.4" fill="url(#sB)"/>
<circle cx="1523" cy="122.7" r="9.8" fill="url(#sG)"/>
<rect x="1559.5" y="113.8" width="17.5" height="13" fill="none" stroke="#34e020" stroke-width="1.6" stroke-dasharray="2.6 2"/><path d="M1569.3 120.5v11.5l2.6-2.2l2 4l1.8-.9l-1.9-3.9l3.4-.3z" fill="#d01010" stroke="#f4dada" stroke-width=".7"/>
<rect x="1600.4" y="111.1" width="22.3" height="22.7" rx="4" fill="#2a2a2a"/>
<rect x="1629.3" y="111.1" width="22.3" height="22.7" rx="4" fill="#2a2a2a"/>
<rect x="1657.8" y="111.1" width="22.3" height="22.7" rx="4" fill="#2a2a2a"/>
<g stroke="#d4d4d4" stroke-width="1.2" stroke-linejoin="round" fill="#4a4a4a"><path d="M1603.3 117.7L1613.3 113.7L1621.3 116.2L1620.3 127.7L1611.3 132.2L1603.8 128.7Z"/><path d="M1603.3 117.7L1611.8 120.2L1621.3 116.2M1611.8 120.2L1611.3 132.2" fill="none"/></g>
<g fill="none" stroke="#cfcfcf" stroke-width="1.2"><rect x="1637.5" y="114.3" width="11" height="11"/><rect x="1632.5" y="119.3" width="11" height="11" fill="#2a2a2a" fill-opacity=".5"/></g>
<g stroke="#d8d8d8" stroke-width="2" fill="#2a2a2a"><path d="M1675 116l-11 6.5l9 8.2" fill="none"/><circle cx="1675" cy="116" r="2.3"/><circle cx="1663.5" cy="122.5" r="2.3"/><circle cx="1673" cy="130.5" r="2.3"/></g>
<g opacity=".92"><path d="M1673.5 186L1723.5 163L1771.5 186.5L1721 213.5Z" fill="#bfcfe0" stroke="#7e8a98" stroke-width="1" stroke-dasharray="5 3"/><path d="M1673.5 186L1721 213.5L1722 269.5L1681.5 236Z" fill="#c3d2e3" stroke="#7e8a98" stroke-width="1" stroke-dasharray="5 3"/><path d="M1721 213.5L1771.5 186.5L1763 238L1722 269.5Z" fill="#cbd8e8" stroke="#7e8a98" stroke-width="1" stroke-dasharray="5 3"/></g>
<g fill="#7c8796" font-family="Liberation Sans, sans-serif" font-weight="bold" text-anchor="middle"><text font-size="11.5" transform="translate(1722.5 187.5) rotate(206) skewX(-32) scale(1 .62)" y="4">BOTTOM</text><text font-size="11" transform="translate(1696.5 227) rotate(214) skewX(12) scale(.82 1.05)" y="4">BACK</text><text font-size="11" transform="translate(1745 227.5) rotate(143) skewX(-12) scale(.82 1.05)" y="4">RIGHT</text></g>
<path d="M986.5 1071.5L1001 1062.3" stroke="#1010ff" stroke-width="1.1"/><path d="M986.5 1072L998 1077.5" stroke="#ff1010" stroke-width="1.1"/><path d="M986.5 1072v8" stroke="#10e010" stroke-width="1.1"/>
<g font-weight="bold" font-size="14" font-family="DejaVu Sans, sans-serif"><text x="996.5" y="1059.3" fill="#1010ff">z</text><text x="997" y="1077.5" fill="#ff1010">x</text><text x="980.5" y="1087" fill="#10e010">y</text></g>
<text x="1365.5" y="1097.5" font-size="13" font-weight="bold" fill="#0d4a17" text-anchor="middle" font-family="DejaVu Sans, sans-serif" textLength="46" lengthAdjust="spacingAndGlyphs">persp</text>
</svg>
</body></html>
